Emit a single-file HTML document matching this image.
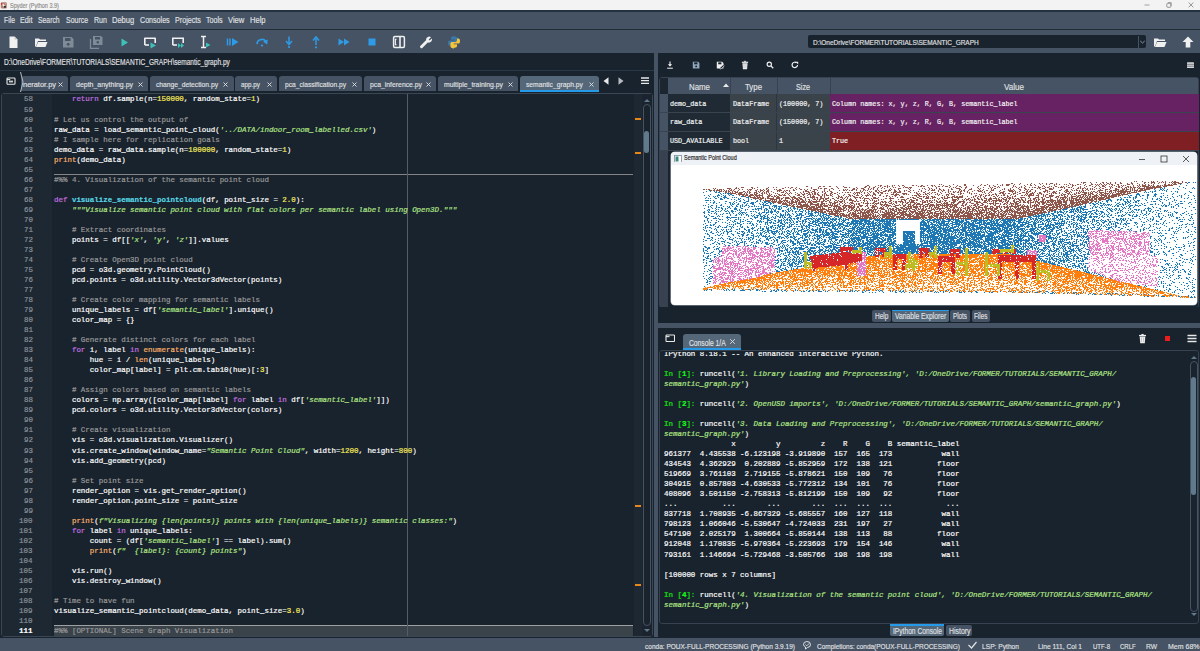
<!DOCTYPE html>
<html><head><meta charset="utf-8"><style>
html,body{margin:0;padding:0;}
html{overflow:hidden;width:1200px;height:651px;}
body{width:1200px;height:651px;overflow:hidden;position:relative;background:#19232D;}
.r{position:absolute;display:block;}
.t{position:absolute;white-space:pre;transform-origin:0 50%;-webkit-text-stroke:0.15px currentColor;}
.code{font-family:"Liberation Mono",monospace;font-size:8.000px;line-height:10px;color:#ffffff;transform:scaleX(0.9325);-webkit-text-stroke:0.2px currentColor;}
.vx{color:#f4f4f4;font-size:7.400px;transform:scaleX(0.9099);}
i{font-style:normal;}
i.k{color:#c670e0;}
i.b{color:#fab16c;}
i.d{color:#57d6e4;font-weight:bold;}
i.c{color:#999999;}
i.s{color:#b0e686;font-style:italic;}
i.n{color:#faed5c;}
</style></head><body>
<div class="r" style="left:0.00px;top:0.00px;width:1200.00px;height:10.00px;background:#f3f3f3;"></div><div class="r" style="left:0.00px;top:9.50px;width:1200.00px;height:0.80px;background:#ffffff;"></div><div class="r" style="left:0.00px;top:10.30px;width:1200.00px;height:1.70px;background:#243140;"></div><svg class="r" style="left:0.00px;top:1.50px;" width="8" height="7" viewBox="0 0 8 7"><rect x="0.8" y="0.3" width="6" height="6.2" rx="1.2" fill="#b38172"/><path d="M2.2 1.8L4.8 4.6" stroke="#f4f0ee" stroke-width="1.6"/><circle cx="1.8" cy="1.9" r="0.9" fill="#d42a2a"/><circle cx="4.9" cy="4.8" r="1.1" fill="#25303a"/><circle cx="5.5" cy="1.8" r="0.7" fill="#e39a80"/></svg><span class="t" style="left:9.60px;top:1.00px;font-size:7.40px;line-height:10.00px;color:#8a8a8a;font-family:'Liberation Sans', sans-serif;transform:scaleX(0.7445);">Spyder (Python 3.9)</span><svg class="r" style="left:1143.00px;top:1.00px;" width="8" height="8" viewBox="0 0 8 8"><path d="M1.5 4h5" stroke="#9a9a9a" stroke-width="0.9"/></svg><svg class="r" style="left:1164.50px;top:1.00px;" width="8" height="8" viewBox="0 0 8 8"><rect x="1.8" y="2.3" width="4" height="4" rx="0.8" fill="none" stroke="#8a8a8a" stroke-width="0.9"/><path d="M3 1.6h3.2v3.2" stroke="#8a8a8a" stroke-width="0.8" fill="none"/></svg><svg class="r" style="left:1186.50px;top:1.00px;" width="8" height="8" viewBox="0 0 8 8"><path d="M1.7 1.5L6.3 6.3M6.3 1.5L1.7 6.3" stroke="#8a8a8a" stroke-width="0.9"/></svg><div class="r" style="left:0.00px;top:12.00px;width:1200.00px;height:17.00px;background:#455364;"></div><div class="r" style="left:0.00px;top:29.00px;width:1200.00px;height:1.00px;background:#222c37;"></div><span class="t" style="left:3.70px;top:14.00px;font-size:8.70px;line-height:12.00px;color:#e0e1e3;font-family:'Liberation Sans', sans-serif;transform:scaleX(0.7846);">File</span><span class="t" style="left:20.00px;top:14.00px;font-size:8.70px;line-height:12.00px;color:#e0e1e3;font-family:'Liberation Sans', sans-serif;transform:scaleX(0.8338);">Edit</span><span class="t" style="left:38.30px;top:14.00px;font-size:8.70px;line-height:12.00px;color:#e0e1e3;font-family:'Liberation Sans', sans-serif;transform:scaleX(0.7872);">Search</span><span class="t" style="left:65.80px;top:14.00px;font-size:8.70px;line-height:12.00px;color:#e0e1e3;font-family:'Liberation Sans', sans-serif;transform:scaleX(0.8053);">Source</span><span class="t" style="left:93.70px;top:14.00px;font-size:8.70px;line-height:12.00px;color:#e0e1e3;font-family:'Liberation Sans', sans-serif;transform:scaleX(0.8145);">Run</span><span class="t" style="left:112.00px;top:14.00px;font-size:8.70px;line-height:12.00px;color:#e0e1e3;font-family:'Liberation Sans', sans-serif;transform:scaleX(0.8659);">Debug</span><span class="t" style="left:139.60px;top:14.00px;font-size:8.70px;line-height:12.00px;color:#e0e1e3;font-family:'Liberation Sans', sans-serif;transform:scaleX(0.8188);">Consoles</span><span class="t" style="left:174.70px;top:14.00px;font-size:8.70px;line-height:12.00px;color:#e0e1e3;font-family:'Liberation Sans', sans-serif;transform:scaleX(0.8273);">Projects</span><span class="t" style="left:206.30px;top:14.00px;font-size:8.70px;line-height:12.00px;color:#e0e1e3;font-family:'Liberation Sans', sans-serif;transform:scaleX(0.8222);">Tools</span><span class="t" style="left:228.40px;top:14.00px;font-size:8.70px;line-height:12.00px;color:#e0e1e3;font-family:'Liberation Sans', sans-serif;transform:scaleX(0.8716);">View</span><span class="t" style="left:249.70px;top:14.00px;font-size:8.70px;line-height:12.00px;color:#e0e1e3;font-family:'Liberation Sans', sans-serif;transform:scaleX(0.8718);">Help</span><div class="r" style="left:0.00px;top:30.00px;width:1200.00px;height:23.00px;background:#455364;"></div><div class="r" style="left:0.00px;top:52.50px;width:1200.00px;height:0.80px;background:#50606f;"></div><svg class="r" style="left:5.80px;top:35.00px;" width="14" height="14" viewBox="0 0 14 14"><path d="M3.5 1.5h5l3 3v8.5h-8z" fill="#f0f0f0"/><path d="M8.5 1.5v3h3" fill="#c8c8c8"/></svg><svg class="r" style="left:34.00px;top:35.00px;" width="14" height="14" viewBox="0 0 14 14"><path d="M1 3.5h4l1 1h6v1.5H4L2 11.5H1z" fill="#f0f0f0"/><path d="M4 7h9.5l-2 5H2z" fill="#f0f0f0"/></svg><svg class="r" style="left:61.00px;top:35.00px;" width="14" height="14" viewBox="0 0 14 14"><path d="M2 2h8.5l2 2v8.5H2z" fill="#7f8b97"/><rect x="4" y="3" width="5.5" height="3" fill="#455364"/><circle cx="7.2" cy="9.3" r="1.4" fill="#455364"/></svg><svg class="r" style="left:88.50px;top:35.00px;" width="14" height="14" viewBox="0 0 14 14"><path d="M4 1h8l1.5 1.5V10H4z" fill="#7f8b97"/><path d="M1.5 4v9.5H10" stroke="#7f8b97" stroke-width="1.3" fill="none"/><rect x="6" y="2" width="5" height="2.5" fill="#455364"/><circle cx="8.8" cy="7.2" r="1.2" fill="#455364"/></svg><svg class="r" style="left:117.00px;top:35.00px;" width="14" height="14" viewBox="0 0 14 14"><path d="M4.5 3.5L11 7.5L4.5 11.5z" fill="#3ec1b8"/></svg><svg class="r" style="left:143.00px;top:35.00px;" width="14" height="14" viewBox="0 0 14 14"><path d="M1.8 10V3.2h10.4V8" stroke="#f0f0f0" stroke-width="1.6" fill="none" stroke-linejoin="round"/><path d="M1.8 10H6" stroke="#f0f0f0" stroke-width="1.6"/><path d="M7.5 7.5L13 10.5L7.5 13.5z" fill="#3ec1b8"/></svg><svg class="r" style="left:171.00px;top:35.00px;" width="14" height="14" viewBox="0 0 14 14"><path d="M1.8 10V3.2h10.4V8" stroke="#f0f0f0" stroke-width="1.6" fill="none"/><path d="M1.8 10H6" stroke="#f0f0f0" stroke-width="1.6"/><path d="M7 8L10 10.5L7 13z M10 8L13 10.5L10 13z" fill="#3ec1b8"/></svg><svg class="r" style="left:198.00px;top:35.00px;" width="14" height="14" viewBox="0 0 14 14"><path d="M3 1.5h5M3 12.5h5M5.5 1.5v11" stroke="#f0f0f0" stroke-width="1.5" fill="none"/><path d="M8 7.5L12.5 10L8 12.5z" fill="#3ec1b8"/></svg><svg class="r" style="left:226.00px;top:35.00px;" width="14" height="14" viewBox="0 0 14 14"><path d="M1.5 3.5v7M4 3.5v7" stroke="#2f9be6" stroke-width="1.5"/><path d="M6 3L12.5 7L6 11z" fill="#2f9be6"/></svg><svg class="r" style="left:254.70px;top:35.00px;" width="14" height="14" viewBox="0 0 14 14"><path d="M2.2 9.2A4.8 4.3 0 0 1 10.8 6.2" stroke="#2f9be6" stroke-width="1.7" fill="none"/><path d="M8 6.8L12.8 4.6L12.2 9.6z" fill="#2f9be6"/><circle cx="7" cy="10.6" r="1.1" fill="#2f9be6"/></svg><svg class="r" style="left:282.00px;top:35.00px;" width="14" height="14" viewBox="0 0 14 14"><path d="M7 1.5v7" stroke="#2f9be6" stroke-width="1.5"/><path d="M4 6l3 3.5l3-3.5" stroke="#2f9be6" stroke-width="1.5" fill="none"/><circle cx="7" cy="12" r="1.1" fill="#2f9be6"/></svg><svg class="r" style="left:309.00px;top:35.00px;" width="14" height="14" viewBox="0 0 14 14"><path d="M7 3v7" stroke="#2f9be6" stroke-width="1.5"/><path d="M4 5.5l3-3.5l3 3.5" stroke="#2f9be6" stroke-width="1.5" fill="none"/><circle cx="7" cy="12.3" r="1.1" fill="#2f9be6"/></svg><svg class="r" style="left:337.00px;top:35.00px;" width="14" height="14" viewBox="0 0 14 14"><path d="M1.5 3.5L7 7L1.5 10.5z M7 3.5L12.5 7L7 10.5z" fill="#2f9be6"/></svg><svg class="r" style="left:364.60px;top:35.00px;" width="14" height="14" viewBox="0 0 14 14"><rect x="3.5" y="3.5" width="7" height="7" fill="#2f9be6"/></svg><svg class="r" style="left:391.60px;top:35.00px;" width="14" height="14" viewBox="0 0 14 14"><rect x="1.6" y="1.6" width="10.8" height="10.8" rx="1.2" stroke="#f0f0f0" stroke-width="1.5" fill="none"/><path d="M8 1.6v10.8" stroke="#f0f0f0" stroke-width="1.6"/><path d="M4.6 4.2h-1.2v5.6h1.2" stroke="#f0f0f0" stroke-width="1.1" fill="none"/></svg><svg class="r" style="left:418.60px;top:35.00px;" width="14" height="14" viewBox="0 0 14 14"><path d="M2.5 11.8L8 6.3" stroke="#f0f0f0" stroke-width="2.9" stroke-linecap="round"/><path d="M7 4.5A3.2 3.2 0 0 1 12 2.2L9.8 4.4L10.6 5.4L12.8 3.4A3.2 3.2 0 0 1 9.2 7.6z" fill="#f0f0f0"/></svg><svg class="r" style="left:447.00px;top:35.00px;" width="14" height="14" viewBox="0 0 14 14"><path d="M7 1.2c-3 0-3 1.2-3 2.2v1.4h3.2v.6H2.6C1.3 5.4 1 6.6 1 8s.4 2.6 1.6 2.6H4V8.8c0-1 .9-1.9 2-1.9h3c.9 0 1.6-.7 1.6-1.6V3.4c0-1-1.3-2.2-3.6-2.2z" fill="#3b77a8"/><path d="M7 12.8c3 0 3-1.2 3-2.2V9.2H6.8v-.6h4.6C12.7 8.6 13 7.4 13 6s-.4-2.6-1.6-2.6H10v1.8c0 1-.9 1.9-2 1.9H5c-.9 0-1.6.7-1.6 1.6v2.5c0 1 1.3 2.2 3.6 2.2z" fill="#f2c43a"/></svg><div class="r" style="left:808.00px;top:35.00px;width:338.00px;height:13.00px;background:#19232D;border-radius:2px;"></div><div class="r" style="left:1138.30px;top:35.50px;width:1.00px;height:12.30px;background:#455364;"></div><svg class="r" style="left:1139.20px;top:38.50px;" width="7" height="6" viewBox="0 0 7 6"><path d="M1.3 2L3.5 4L5.7 2" stroke="#8a96a2" stroke-width="1" fill="none"/></svg><span class="t" style="left:812.50px;top:38.00px;font-size:7.20px;line-height:10.00px;color:#e0e1e3;font-family:'Liberation Sans', sans-serif;transform:scaleX(0.9027);">D:\OneDrive\FORMER\TUTORIALS\SEMANTIC_GRAPH</span><svg class="r" style="left:1153.00px;top:35.00px;" width="14" height="14" viewBox="0 0 14 14"><path d="M1 3.5h4l1 1h6v1.5H4L2 11.5H1z" fill="#f0f0f0"/><path d="M4 7h9.5l-2 5H2z" fill="#f0f0f0"/></svg><svg class="r" style="left:1181.40px;top:34.50px;" width="14" height="14" viewBox="0 0 14 14"><path d="M7 1.5L12.5 7H9.3v5.5H4.7V7H1.5z" fill="#f0f0f0"/></svg><div class="r" style="left:0.00px;top:53.30px;width:654.00px;height:584.00px;background:#19232D;"></div><span class="t" style="left:3.50px;top:57.00px;font-size:8.30px;line-height:11.00px;color:#e0e1e3;font-family:'Liberation Sans', sans-serif;transform:scaleX(0.7946);">D:\OneDrive\FORMER\TUTORIALS\SEMANTIC_GRAPH\semantic_graph.py</span><div class="r" style="left:0.00px;top:69.50px;width:654.00px;height:1.00px;background:#2a3744;"></div><svg class="r" style="left:5.50px;top:76.50px;" width="10" height="8" viewBox="0 0 10 8"><rect x="1" y="1" width="8" height="6.3" rx="0.8" stroke="#e8e8e8" stroke-width="1.1" fill="none"/><path d="M1 2.6h3.2" stroke="#e8e8e8" stroke-width="1.1"/><rect x="3" y="3.6" width="4" height="1.8" fill="#cfd2d5"/></svg><div class="r" style="left:21.00px;top:76.30px;width:47.00px;height:15.00px;background:#455364;border-radius:3px 3px 0 0;"></div><span class="t" style="left:23.00px;top:79.00px;font-size:8.00px;line-height:11.00px;color:#e0e1e3;font-family:'Liberation Sans', sans-serif;transform:scaleX(0.9275);">nerator.py</span><svg class="r" style="left:55.50px;top:79.50px;" width="9" height="9" viewBox="0 0 9 9"><path d="M2.5 2.5L6.5 6.5M6.5 2.5L2.5 6.5" stroke="#e0e1e3" stroke-width="0.9"/></svg><div class="r" style="left:70.00px;top:76.30px;width:78.00px;height:15.00px;background:#455364;border-radius:3px 3px 0 0;"></div><span class="t" style="left:76.00px;top:79.00px;font-size:8.00px;line-height:11.00px;color:#e0e1e3;font-family:'Liberation Sans', sans-serif;transform:scaleX(0.8717);">depth_anything.py</span><svg class="r" style="left:135.50px;top:79.50px;" width="9" height="9" viewBox="0 0 9 9"><path d="M2.5 2.5L6.5 6.5M6.5 2.5L2.5 6.5" stroke="#e0e1e3" stroke-width="0.9"/></svg><div class="r" style="left:150.00px;top:76.30px;width:83.60px;height:15.00px;background:#455364;border-radius:3px 3px 0 0;"></div><span class="t" style="left:156.00px;top:79.00px;font-size:8.00px;line-height:11.00px;color:#e0e1e3;font-family:'Liberation Sans', sans-serif;transform:scaleX(0.8397);">change_detection.py</span><svg class="r" style="left:221.10px;top:79.50px;" width="9" height="9" viewBox="0 0 9 9"><path d="M2.5 2.5L6.5 6.5M6.5 2.5L2.5 6.5" stroke="#e0e1e3" stroke-width="0.9"/></svg><div class="r" style="left:235.00px;top:76.30px;width:42.00px;height:15.00px;background:#455364;border-radius:3px 3px 0 0;"></div><span class="t" style="left:241.00px;top:79.00px;font-size:8.00px;line-height:11.00px;color:#e0e1e3;font-family:'Liberation Sans', sans-serif;transform:scaleX(0.7910);">app.py</span><svg class="r" style="left:264.50px;top:79.50px;" width="9" height="9" viewBox="0 0 9 9"><path d="M2.5 2.5L6.5 6.5M6.5 2.5L2.5 6.5" stroke="#e0e1e3" stroke-width="0.9"/></svg><div class="r" style="left:279.00px;top:76.30px;width:83.00px;height:15.00px;background:#455364;border-radius:3px 3px 0 0;"></div><span class="t" style="left:285.00px;top:79.00px;font-size:8.00px;line-height:11.00px;color:#e0e1e3;font-family:'Liberation Sans', sans-serif;transform:scaleX(0.8314);">pca_classification.py</span><svg class="r" style="left:349.50px;top:79.50px;" width="9" height="9" viewBox="0 0 9 9"><path d="M2.5 2.5L6.5 6.5M6.5 2.5L2.5 6.5" stroke="#e0e1e3" stroke-width="0.9"/></svg><div class="r" style="left:363.50px;top:76.30px;width:72.50px;height:15.00px;background:#455364;border-radius:3px 3px 0 0;"></div><span class="t" style="left:369.50px;top:79.00px;font-size:8.00px;line-height:11.00px;color:#e0e1e3;font-family:'Liberation Sans', sans-serif;transform:scaleX(0.8534);">pca_inference.py</span><svg class="r" style="left:423.50px;top:79.50px;" width="9" height="9" viewBox="0 0 9 9"><path d="M2.5 2.5L6.5 6.5M6.5 2.5L2.5 6.5" stroke="#e0e1e3" stroke-width="0.9"/></svg><div class="r" style="left:438.00px;top:76.30px;width:80.00px;height:15.00px;background:#455364;border-radius:3px 3px 0 0;"></div><span class="t" style="left:444.00px;top:79.00px;font-size:8.00px;line-height:11.00px;color:#e0e1e3;font-family:'Liberation Sans', sans-serif;transform:scaleX(0.8560);">multiple_training.py</span><svg class="r" style="left:505.50px;top:79.50px;" width="9" height="9" viewBox="0 0 9 9"><path d="M2.5 2.5L6.5 6.5M6.5 2.5L2.5 6.5" stroke="#e0e1e3" stroke-width="0.9"/></svg><div class="r" style="left:520.00px;top:76.30px;width:79.00px;height:15.00px;background:#54687A;border-radius:3px 3px 0 0;"></div><div class="r" style="left:520.00px;top:90.20px;width:79.00px;height:1.80px;background:#259AE9;"></div><span class="t" style="left:526.00px;top:79.00px;font-size:8.00px;line-height:11.00px;color:#e0e1e3;font-family:'Liberation Sans', sans-serif;transform:scaleX(0.8432);">semantic_graph.py</span><svg class="r" style="left:586.50px;top:79.50px;" width="9" height="9" viewBox="0 0 9 9"><path d="M2.5 2.5L6.5 6.5M6.5 2.5L2.5 6.5" stroke="#e0e1e3" stroke-width="0.9"/></svg><svg class="r" style="left:19.00px;top:71.00px;" width="6" height="22" viewBox="0 0 6 22"><path d="M1.5 1L4 11L1.5 21" stroke="#c8ccd0" stroke-width="0.9" fill="none"/></svg><svg class="r" style="left:601.00px;top:75.80px;" width="10" height="10" viewBox="0 0 10 10"><path d="M7.5 1.2V8.8L2.5 5z" fill="#e8e8e8"/></svg><svg class="r" style="left:616.00px;top:75.80px;" width="10" height="10" viewBox="0 0 10 10"><path d="M2.5 1.2V8.8L7.5 5z" fill="#b8bcc0"/></svg><svg class="r" style="left:639.00px;top:75.00px;" width="12" height="10" viewBox="0 0 12 10"><path d="M2 3h8M2 5.7h8M2 8.4h8" stroke="#e8e8e8" stroke-width="1.3"/></svg><div class="r" style="left:0.50px;top:92.50px;width:652.00px;height:544.00px;background:#19232D;border:1px solid #3a4654;border-radius:3px;box-sizing:border-box;"></div><div class="r" style="left:1.50px;top:93.50px;width:50.20px;height:542.00px;background:#1e2832;"></div><div class="r" style="left:633.50px;top:93.50px;width:8.00px;height:542.00px;background:#1e2832;"></div><div class="r" style="left:54.00px;top:173.60px;width:579.00px;height:0.80px;background:#858585;"></div><div class="r" style="left:54.00px;top:626.00px;width:578.50px;height:9.50px;background:#3a424a;"></div><div class="r" style="left:54.00px;top:625.00px;width:579.00px;height:0.90px;background:#a0a0a0;"></div><div class="r" style="left:407.00px;top:93.50px;width:0.90px;height:542.00px;background:#545c66;"></div><span class="t code" style="left:23.55px;top:94.47px;color:#8b929a;">58</span><span class="t code" style="left:54.2px;top:94.47px;">    <i class="k">return</i> df.sample(n=<i class="n">150000</i>, random_state=<i class="n">1</i>)</span><span class="t code" style="left:23.55px;top:104.50px;color:#8b929a;">59</span><span class="t code" style="left:23.55px;top:114.53px;color:#8b929a;">60</span><span class="t code" style="left:54.2px;top:114.53px;"><i class="c"># Let us control the output of</i></span><span class="t code" style="left:23.55px;top:124.56px;color:#8b929a;">61</span><span class="t code" style="left:54.2px;top:124.56px;">raw_data = load_semantic_point_cloud(<i class="s">&#x27;../DATA/indoor_room_labelled.csv&#x27;</i>)</span><span class="t code" style="left:23.55px;top:134.59px;color:#8b929a;">62</span><span class="t code" style="left:54.2px;top:134.59px;"><i class="c"># I sample here for replication goals</i></span><span class="t code" style="left:23.55px;top:144.62px;color:#8b929a;">63</span><span class="t code" style="left:54.2px;top:144.62px;">demo_data = raw_data.sample(n=<i class="n">100000</i>, random_state=<i class="n">1</i>)</span><span class="t code" style="left:23.55px;top:154.65px;color:#8b929a;">64</span><span class="t code" style="left:54.2px;top:154.65px;"><i class="b">print</i>(demo_data)</span><span class="t code" style="left:23.55px;top:164.68px;color:#8b929a;">65</span><span class="t code" style="left:23.55px;top:174.71px;color:#8b929a;">66</span><span class="t code" style="left:54.2px;top:174.71px;"><i class="c">#%% 4. Visualization of the semantic point cloud</i></span><span class="t code" style="left:23.55px;top:184.74px;color:#8b929a;">67</span><span class="t code" style="left:23.55px;top:194.77px;color:#8b929a;">68</span><span class="t code" style="left:54.2px;top:194.77px;"><i class="k">def</i> <i class="d">visualize_semantic_pointcloud</i>(df, point_size = <i class="n">2.0</i>):</span><span class="t code" style="left:23.55px;top:204.80px;color:#8b929a;">69</span><span class="t code" style="left:54.2px;top:204.80px;">    <i class="s">&quot;&quot;&quot;Visualize semantic point cloud with flat colors per semantic label using Open3D.&quot;&quot;&quot;</i></span><span class="t code" style="left:23.55px;top:214.83px;color:#8b929a;">70</span><span class="t code" style="left:23.55px;top:224.86px;color:#8b929a;">71</span><span class="t code" style="left:54.2px;top:224.86px;">    <i class="c"># Extract coordinates</i></span><span class="t code" style="left:23.55px;top:234.89px;color:#8b929a;">72</span><span class="t code" style="left:54.2px;top:234.89px;">    points = df[[<i class="s">&#x27;x&#x27;</i>, <i class="s">&#x27;y&#x27;</i>, <i class="s">&#x27;z&#x27;</i>]].values</span><span class="t code" style="left:23.55px;top:244.92px;color:#8b929a;">73</span><span class="t code" style="left:23.55px;top:254.95px;color:#8b929a;">74</span><span class="t code" style="left:54.2px;top:254.95px;">    <i class="c"># Create Open3D point cloud</i></span><span class="t code" style="left:23.55px;top:264.98px;color:#8b929a;">75</span><span class="t code" style="left:54.2px;top:264.98px;">    pcd = o3d.geometry.PointCloud()</span><span class="t code" style="left:23.55px;top:275.01px;color:#8b929a;">76</span><span class="t code" style="left:54.2px;top:275.01px;">    pcd.points = o3d.utility.Vector3dVector(points)</span><span class="t code" style="left:23.55px;top:285.04px;color:#8b929a;">77</span><span class="t code" style="left:23.55px;top:295.07px;color:#8b929a;">78</span><span class="t code" style="left:54.2px;top:295.07px;">    <i class="c"># Create color mapping for semantic labels</i></span><span class="t code" style="left:23.55px;top:305.10px;color:#8b929a;">79</span><span class="t code" style="left:54.2px;top:305.10px;">    unique_labels = df[<i class="s">&#x27;semantic_label&#x27;</i>].unique()</span><span class="t code" style="left:23.55px;top:315.13px;color:#8b929a;">80</span><span class="t code" style="left:54.2px;top:315.13px;">    color_map = {}</span><span class="t code" style="left:23.55px;top:325.16px;color:#8b929a;">81</span><span class="t code" style="left:23.55px;top:335.19px;color:#8b929a;">82</span><span class="t code" style="left:54.2px;top:335.19px;">    <i class="c"># Generate distinct colors for each label</i></span><span class="t code" style="left:23.55px;top:345.22px;color:#8b929a;">83</span><span class="t code" style="left:54.2px;top:345.22px;">    <i class="k">for</i> i, label <i class="k">in</i> <i class="b">enumerate</i>(unique_labels):</span><span class="t code" style="left:23.55px;top:355.25px;color:#8b929a;">84</span><span class="t code" style="left:54.2px;top:355.25px;">        hue = i / <i class="b">len</i>(unique_labels)</span><span class="t code" style="left:23.55px;top:365.28px;color:#8b929a;">85</span><span class="t code" style="left:54.2px;top:365.28px;">        color_map[label] = plt.cm.tab10(hue)[:<i class="n">3</i>]</span><span class="t code" style="left:23.55px;top:375.31px;color:#8b929a;">86</span><span class="t code" style="left:23.55px;top:385.34px;color:#8b929a;">87</span><span class="t code" style="left:54.2px;top:385.34px;">    <i class="c"># Assign colors based on semantic labels</i></span><span class="t code" style="left:23.55px;top:395.37px;color:#8b929a;">88</span><span class="t code" style="left:54.2px;top:395.37px;">    colors = np.array([color_map[label] <i class="k">for</i> label <i class="k">in</i> df[<i class="s">&#x27;semantic_label&#x27;</i>]])</span><span class="t code" style="left:23.55px;top:405.40px;color:#8b929a;">89</span><span class="t code" style="left:54.2px;top:405.40px;">    pcd.colors = o3d.utility.Vector3dVector(colors)</span><span class="t code" style="left:23.55px;top:415.43px;color:#8b929a;">90</span><span class="t code" style="left:23.55px;top:425.46px;color:#8b929a;">91</span><span class="t code" style="left:54.2px;top:425.46px;">    <i class="c"># Create visualization</i></span><span class="t code" style="left:23.55px;top:435.49px;color:#8b929a;">92</span><span class="t code" style="left:54.2px;top:435.49px;">    vis = o3d.visualization.Visualizer()</span><span class="t code" style="left:23.55px;top:445.52px;color:#8b929a;">93</span><span class="t code" style="left:54.2px;top:445.52px;">    vis.create_window(window_name=<i class="s">&quot;Semantic Point Cloud&quot;</i>, width=<i class="n">1200</i>, height=<i class="n">800</i>)</span><span class="t code" style="left:23.55px;top:455.55px;color:#8b929a;">94</span><span class="t code" style="left:54.2px;top:455.55px;">    vis.add_geometry(pcd)</span><span class="t code" style="left:23.55px;top:465.58px;color:#8b929a;">95</span><span class="t code" style="left:23.55px;top:475.61px;color:#8b929a;">96</span><span class="t code" style="left:54.2px;top:475.61px;">    <i class="c"># Set point size</i></span><span class="t code" style="left:23.55px;top:485.64px;color:#8b929a;">97</span><span class="t code" style="left:54.2px;top:485.64px;">    render_option = vis.get_render_option()</span><span class="t code" style="left:23.55px;top:495.67px;color:#8b929a;">98</span><span class="t code" style="left:54.2px;top:495.67px;">    render_option.point_size = point_size</span><span class="t code" style="left:23.55px;top:505.70px;color:#8b929a;">99</span><span class="t code" style="left:19.07px;top:515.73px;color:#8b929a;">100</span><span class="t code" style="left:54.2px;top:515.73px;">    <i class="b">print</i>(<i class="s">f&quot;Visualizing {len(points)} points with {len(unique_labels)} semantic classes:&quot;</i>)</span><span class="t code" style="left:19.07px;top:525.76px;color:#8b929a;">101</span><span class="t code" style="left:54.2px;top:525.76px;">    <i class="k">for</i> label <i class="k">in</i> unique_labels:</span><span class="t code" style="left:19.07px;top:535.79px;color:#8b929a;">102</span><span class="t code" style="left:54.2px;top:535.79px;">        count = (df[<i class="s">&#x27;semantic_label&#x27;</i>] == label).sum()</span><span class="t code" style="left:19.07px;top:545.82px;color:#8b929a;">103</span><span class="t code" style="left:54.2px;top:545.82px;">        <i class="b">print</i>(<i class="s">f&quot;  {label}: {count} points&quot;</i>)</span><span class="t code" style="left:19.07px;top:555.85px;color:#8b929a;">104</span><span class="t code" style="left:19.07px;top:565.88px;color:#8b929a;">105</span><span class="t code" style="left:54.2px;top:565.88px;">    vis.run()</span><span class="t code" style="left:19.07px;top:575.91px;color:#8b929a;">106</span><span class="t code" style="left:54.2px;top:575.91px;">    vis.destroy_window()</span><span class="t code" style="left:19.07px;top:585.94px;color:#8b929a;">107</span><span class="t code" style="left:19.07px;top:595.97px;color:#8b929a;">108</span><span class="t code" style="left:54.2px;top:595.97px;"><i class="c"># Time to have fun</i></span><span class="t code" style="left:19.07px;top:606.00px;color:#8b929a;">109</span><span class="t code" style="left:54.2px;top:606.00px;">visualize_semantic_pointcloud(demo_data, point_size=<i class="n">3.0</i>)</span><span class="t code" style="left:19.07px;top:616.03px;color:#8b929a;">110</span><span class="t code" style="left:19.07px;top:626.06px;color:#ffffff;font-weight:bold;">111</span><span class="t code" style="left:54.2px;top:626.06px;"><i class="c">#%% [OPTIONAL] Scene Graph Visualization</i></span><div class="r" style="left:634.50px;top:118.00px;width:6.50px;height:2.00px;background:#e8861a;"></div><div class="r" style="left:634.50px;top:152.00px;width:6.50px;height:2.00px;background:#e8861a;"></div><div class="r" style="left:634.50px;top:505.00px;width:6.50px;height:2.00px;background:#e8861a;"></div><div class="r" style="left:634.50px;top:584.40px;width:6.50px;height:2.00px;background:#e8861a;"></div><div class="r" style="left:641.50px;top:93.50px;width:10.50px;height:542.00px;background:#1b242e;"></div><div class="r" style="left:643.00px;top:104.00px;width:7.50px;height:522.00px;background:#19232D;border:1px solid #455364;border-radius:4px;box-sizing:border-box;"></div><div class="r" style="left:644.20px;top:130.50px;width:5.10px;height:22.00px;background:#60798B;border-radius:3px;"></div><svg class="r" style="left:642.00px;top:96.80px;" width="10" height="6" viewBox="0 0 10 6"><path d="M2 5L5 2L8 5z" fill="#60798B"/></svg><svg class="r" style="left:642.00px;top:628.00px;" width="10" height="6" viewBox="0 0 10 6"><path d="M2 1L5 4L8 1z" fill="#60798B"/></svg><div class="r" style="left:654.00px;top:53.30px;width:4.00px;height:584.00px;background:#455364;"></div><div class="r" style="left:658.00px;top:53.30px;width:542.00px;height:254.00px;background:#19232D;"></div><svg class="r" style="left:665.00px;top:59.70px;" width="10" height="10" viewBox="0 0 14 14"><path d="M7 2v6" stroke="#f0f0f0" stroke-width="1.6"/><path d="M4 6l3 3l3-3z" fill="#f0f0f0"/><path d="M3 11.5h8" stroke="#f0f0f0" stroke-width="1.4"/></svg><svg class="r" style="left:690.50px;top:59.70px;" width="10" height="10" viewBox="0 0 14 14"><path d="M2.5 2.5h7.5l1.8 1.8v7.5H2.5z" fill="#8fa6bb"/><rect x="4.5" y="3.3" width="4.5" height="2.7" fill="#19232D"/><circle cx="7.2" cy="9" r="1.3" fill="#19232D"/></svg><svg class="r" style="left:715.00px;top:59.70px;" width="10" height="10" viewBox="0 0 14 14"><path d="M2.5 2.5h7.5l1.8 1.8v7.5H2.5z" fill="#f0f0f0"/><rect x="4.5" y="3.3" width="4.5" height="2.7" fill="#19232D"/><path d="M7 11l4.5-4.5l1.5 1.5L8.5 12.5H7z" fill="#19232D" stroke="#f0f0f0" stroke-width="0.8"/></svg><svg class="r" style="left:740.00px;top:59.70px;" width="10" height="10" viewBox="0 0 14 14"><path d="M5.5 1.2h3v1.3h-3z" fill="#f0f0f0"/><path d="M2.6 2.4h8.8v1.6H2.6z" fill="#f0f0f0"/><path d="M3.4 4.4h7.2l-.7 8.6H4.1z" fill="#f0f0f0"/><path d="M5.6 5.5v6M8.4 5.5v6" stroke="#9aa0a6" stroke-width="0.7"/></svg><svg class="r" style="left:765.00px;top:59.70px;" width="10" height="10" viewBox="0 0 14 14"><circle cx="6" cy="6" r="3" stroke="#f0f0f0" stroke-width="1.6" fill="none"/><path d="M8.2 8.2L11.5 11.5" stroke="#f0f0f0" stroke-width="1.8"/></svg><svg class="r" style="left:790.00px;top:59.70px;" width="10" height="10" viewBox="0 0 14 14"><path d="M10.5 7A3.8 3.8 0 1 1 9.3 4.1" stroke="#f0f0f0" stroke-width="1.7" fill="none"/><path d="M7.8 2.5h3.7v3.7z" fill="#f0f0f0"/></svg><svg class="r" style="left:1186.00px;top:61.00px;" width="9" height="8" viewBox="0 0 9 8"><rect x="1" y="1.3" width="7" height="5.8" rx="0.6" fill="#d8d8d8"/><path d="M1 3.3h7M1 5.2h7" stroke="#3a4450" stroke-width="0.6"/></svg><div class="r" style="left:659.00px;top:76.50px;width:540.00px;height:231.00px;background:#19232D;border:1px solid #37414F;border-radius:3px;box-sizing:border-box;"></div><div class="r" style="left:660.00px;top:77.50px;width:8.00px;height:229.00px;background:#37414F;"></div><div class="r" style="left:660.00px;top:77.50px;width:8.00px;height:16.70px;background:#1c2630;"></div><div class="r" style="left:668.00px;top:77.50px;width:530.00px;height:16.70px;background:#455364;"></div><div class="r" style="left:730.30px;top:77.50px;width:0.80px;height:16.50px;background:#37414F;"></div><div class="r" style="left:776.50px;top:77.50px;width:0.80px;height:16.50px;background:#37414F;"></div><div class="r" style="left:830.00px;top:77.50px;width:0.80px;height:16.50px;background:#37414F;"></div><span class="t" style="left:735.00px;top:81.00px;font-size:8.00px;line-height:11.00px;color:#e0e1e3;font-family:'Liberation Sans', sans-serif;"></span><span class="t" style="left:689.00px;top:81.00px;font-size:9.00px;line-height:12.00px;color:#e0e1e3;font-family:'Liberation Sans', sans-serif;transform:scaleX(0.8747);">Name</span><svg class="r" style="left:722.00px;top:82.00px;" width="8" height="6" viewBox="0 0 8 6"><path d="M1 5L4 1.5L7 5z" fill="#e8e8e8"/></svg><span class="t" style="left:745.00px;top:81.00px;font-size:9.00px;line-height:12.00px;color:#e0e1e3;font-family:'Liberation Sans', sans-serif;transform:scaleX(0.8712);">Type</span><span class="t" style="left:796.00px;top:81.00px;font-size:9.00px;line-height:12.00px;color:#e0e1e3;font-family:'Liberation Sans', sans-serif;transform:scaleX(0.7996);">Size</span><span class="t" style="left:1004.00px;top:81.00px;font-size:9.00px;line-height:12.00px;color:#e0e1e3;font-family:'Liberation Sans', sans-serif;transform:scaleX(0.8948);">Value</span><div class="r" style="left:660.00px;top:94.00px;width:8.00px;height:18.40px;background:#455364;"></div><div class="r" style="left:668.00px;top:94.00px;width:62.30px;height:18.40px;background:#1f2a34;"></div><div class="r" style="left:730.30px;top:94.00px;width:100.00px;height:18.40px;background:#3a424a;"></div><div class="r" style="left:830.00px;top:94.00px;width:369.00px;height:18.40px;background:#662262;"></div><div class="r" style="left:776.30px;top:94.00px;width:0.80px;height:18.40px;background:#2c3540;"></div><span class="t code vx" style="left:670.00px;top:98.83px;">demo_data</span><span class="t code vx" style="left:732.50px;top:98.83px;">DataFrame</span><span class="t code vx" style="left:778.50px;top:98.83px;">(100000, 7)</span><span class="t code vx" style="left:832.00px;top:98.83px;">Column names: x, y, z, R, G, B, semantic_label</span><div class="r" style="left:660.00px;top:112.40px;width:8.00px;height:18.90px;background:#455364;"></div><div class="r" style="left:668.00px;top:112.40px;width:62.30px;height:18.90px;background:#1f2a34;"></div><div class="r" style="left:730.30px;top:112.40px;width:100.00px;height:18.90px;background:#3a424a;"></div><div class="r" style="left:830.00px;top:112.40px;width:369.00px;height:18.90px;background:#662262;"></div><div class="r" style="left:776.30px;top:112.40px;width:0.80px;height:18.90px;background:#2c3540;"></div><span class="t code vx" style="left:670.00px;top:117.48px;">raw_data</span><span class="t code vx" style="left:732.50px;top:117.48px;">DataFrame</span><span class="t code vx" style="left:778.50px;top:117.48px;">(150000, 7)</span><span class="t code vx" style="left:832.00px;top:117.48px;">Column names: x, y, z, R, G, B, semantic_label</span><div class="r" style="left:660.00px;top:131.30px;width:8.00px;height:18.70px;background:#455364;"></div><div class="r" style="left:668.00px;top:131.30px;width:62.30px;height:18.70px;background:#1f2a34;"></div><div class="r" style="left:730.30px;top:131.30px;width:100.00px;height:18.70px;background:#3a424a;"></div><div class="r" style="left:830.00px;top:131.30px;width:369.00px;height:18.70px;background:#7f1f23;"></div><div class="r" style="left:776.30px;top:131.30px;width:0.80px;height:18.70px;background:#2c3540;"></div><span class="t code vx" style="left:670.00px;top:136.28px;">USD_AVAILABLE</span><span class="t code vx" style="left:732.50px;top:136.28px;">bool</span><span class="t code vx" style="left:778.50px;top:136.28px;">1</span><span class="t code vx" style="left:832.00px;top:136.28px;">True</span><div class="r" style="left:660.00px;top:111.90px;width:539.00px;height:1.00px;background:#3a4450;"></div><div class="r" style="left:660.00px;top:130.80px;width:539.00px;height:1.00px;background:#3a4450;"></div><div class="r" style="left:660.00px;top:149.50px;width:539.00px;height:1.00px;background:#3a4450;"></div><div class="r" style="left:670.5px;top:152px;width:526px;height:153px;background:#ffffff;border-radius:4px;box-shadow:0 0 0 0.6px #9aa4ae;overflow:hidden;"><div class="r" style="left:0;top:0;width:526px;height:13px;background:#eef2f6;"></div></div><svg class="r" style="left:674.00px;top:154.80px;" width="8" height="7" viewBox="0 0 8 7"><rect x="0.5" y="0.5" width="7" height="7" fill="#ffffff" stroke="#7a8a99" stroke-width="0.8"/><rect x="1.5" y="1.5" width="3" height="5" fill="#3a8a7a"/></svg><span class="t" style="left:684.30px;top:153.00px;font-size:6.80px;line-height:9.00px;color:#1a1a1a;font-family:'Liberation Sans', sans-serif;transform:scaleX(0.8059);">Semantic Point Cloud</span><svg class="r" style="left:1137.00px;top:154.00px;" width="10" height="10" viewBox="0 0 10 10"><path d="M2 5.5h6" stroke="#333" stroke-width="0.8"/></svg><svg class="r" style="left:1159.00px;top:154.00px;" width="10" height="10" viewBox="0 0 10 10"><rect x="2" y="2" width="6" height="6" fill="none" stroke="#333" stroke-width="0.8"/></svg><svg class="r" style="left:1181.00px;top:154.00px;" width="10" height="10" viewBox="0 0 10 10"><path d="M2 2L8 8M8 2L2 8" stroke="#333" stroke-width="0.8"/></svg><svg class="r" style="left:670px;top:152px;" width="530" height="155" viewBox="0 0 530 155"><path d="M518 30h0m1 0h0m4 0h0m2 0h0m-8 1h0m-7 1h0m6 1h0m-7 1h0m-15 1h0m19 0h0m10 0h0m-33 1h0m2 0h0m2 0h0m9 0h0m4 0h0m8 0h0m7 0h0m2 0h0m-40 1h0m6 0h0m1 0h0m2 0h0m4 0h0m11 0h0m-469 1h0m446 0h0m4 0h0m3 0h0m2 0h0m2 0h0m-460 1h0m4 0h0m4 0h0m2 0h0m429 0h0m5 0h0m2 0h0m2 0h0m1 0h0m11 0h0m5 0h0m4 0h0m2 0h0m12 0h0m-486 1h0m12 0h0m1 0h0m2 0h0m1 0h0m425 0h0m2 0h0m2 0h0m4 0h0m25 0h0m13 0h0m1 0h0m-471 1h0m3 0h0m2 0h0m2 0h0m1 0h0m1 0h0m408 0h0m1 0h0m17 0h0m6 0h0m2 0h0m10 0h0m12 0h0m-475 1h0m8 0h0m3 0h0m7 0h0m2 0h0m1 0h0m405 0h0m1 0h0m1 0h0m1 0h0m8 0h0m1 0h0m6 0h0m1 0h0m1 0h0m16 0h0m12 0h0m-480 1h0m4 0h0m9 0h0m1 0h0m1 0h0m4 0h0m2 0h0m4 0h0m3 0h0m1 0h0m395 0h0m2 0h0m1 0h0m5 0h0m3 0h0m3 0h0m1 0h0m4 0h0m1 0h0m6 0h0m1 0h0m8 0h0m4 0h0m12 0h0m2 0h0m7 0h0m5 0h0m-484 1h0m4 0h0m2 0h0m2 0h0m4 0h0m3 0h0m1 0h0m16 0h0m1 0h0m1 0h0m386 0h0m6 0h0m1 0h0m4 0h0m7 0h0m6 0h0m2 0h0m5 0h0m1 0h0m11 0h0m5 0h0m4 0h0m13 0h0m-488 1h0m8 0h0m4 0h0m5 0h0m1 0h0m1 0h0m1 0h0m6 0h0m2 0h0m2 0h0m10 0h0m1 0h0m1 0h0m372 0h0m4 0h0m1 0h0m2 0h0m2 0h0m1 0h0m3 0h0m2 0h0m1 0h0m11 0h0m14 0h0m4 0h0m2 0h0m6 0h0m8 0h0m7 0h0m-483 1h0m3 0h0m2 0h0m5 0h0m1 0h0m4 0h0m1 0h0m3 0h0m3 0h0m1 0h0m10 0h0m2 0h0m8 0h0m373 0h0m12 0h0m2 0h0m7 0h0m5 0h0m5 0h0m5 0h0m2 0h0m11 0h0m14 0h0m3 0h0m7 0h0m-474 1h0m1 0h0m1 0h0m9 0h0m3 0h0m4 0h0m1 0h0m4 0h0m5 0h0m3 0h0m4 0h0m353 0h0m1 0h0m1 0h0m7 0h0m1 0h0m2 0h0m1 0h0m2 0h0m3 0h0m1 0h0m6 0h0m12 0h0m7 0h0m4 0h0m1 0h0m3 0h0m1 0h0m3 0h0m4 0h0m6 0h0m17 0h0m-486 1h0m1 0h0m1 0h0m1 0h0m2 0h0m3 0h0m23 0h0m4 0h0m4 0h0m4 0h0m9 0h0m3 0h0m346 0h0m1 0h0m1 0h0m2 0h0m1 0h0m6 0h0m3 0h0m3 0h0m4 0h0m3 0h0m4 0h0m3 0h0m1 0h0m1 0h0m7 0h0m13 0h0m7 0h0m8 0h0m2 0h0m19 0h0m-481 1h0m11 0h0m1 0h0m8 0h0m5 0h0m1 0h0m6 0h0m1 0h0m1 0h0m8 0h0m1 0h0m3 0h0m4 0h0m1 0h0m1 0h0m1 0h0m331 0h0m4 0h0m4 0h0m1 0h0m4 0h0m13 0h0m1 0h0m2 0h0m1 0h0m2 0h0m5 0h0m1 0h0m2 0h0m13 0h0m2 0h0m1 0h0m1 0h0m5 0h0m12 0h0m8 0h0m1 0h0m3 0h0m-478 1h0m4 0h0m3 0h0m1 0h0m5 0h0m10 0h0m1 0h0m3 0h0m3 0h0m7 0h0m1 0h0m1 0h0m6 0h0m1 0h0m1 0h0m2 0h0m7 0h0m2 0h0m1 0h0m3 0h0m1 0h0m1 0h0m325 0h0m3 0h0m2 0h0m7 0h0m8 0h0m4 0h0m6 0h0m1 0h0m2 0h0m1 0h0m4 0h0m2 0h0m1 0h0m11 0h0m15 0h0m7 0h0m6 0h0m14 0h0m1 0h0m5 0h0m-482 1h0m3 0h0m9 0h0m5 0h0m2 0h0m2 0h0m4 0h0m6 0h0m3 0h0m3 0h0m1 0h0m1 0h0m1 0h0m6 0h0m4 0h0m3 0h0m1 0h0m3 0h0m1 0h0m2 0h0m316 0h0m1 0h0m2 0h0m1 0h0m3 0h0m1 0h0m3 0h0m1 0h0m2 0h0m1 0h0m13 0h0m1 0h0m4 0h0m3 0h0m2 0h0m3 0h0m8 0h0m3 0h0m3 0h0m11 0h0m7 0h0m7 0h0m9 0h0m2 0h0m1 0h0m1 0h0m6 0h0m-480 1h0m13 0h0m9 0h0m2 0h0m1 0h0m4 0h0m1 0h0m4 0h0m4 0h0m6 0h0m1 0h0m7 0h0m2 0h0m1 0h0m2 0h0m5 0h0m315 0h0m8 0h0m1 0h0m1 0h0m3 0h0m5 0h0m2 0h0m2 0h0m1 0h0m1 0h0m2 0h0m5 0h0m3 0h0m1 0h0m2 0h0m1 0h0m2 0h0m4 0h0m6 0h0m7 0h0m8 0h0m1 0h0m1 0h0m3 0h0m3 0h0m6 0h0m5 0h0m2 0h0m5 0h0m1 0h0m14 0h0m-488 1h0m2 0h0m6 0h0m1 0h0m4 0h0m4 0h0m1 0h0m10 0h0m5 0h0m4 0h0m2 0h0m3 0h0m1 0h0m2 0h0m6 0h0m9 0h0m1 0h0m1 0h0m1 0h0m1 0h0m1 0h0m5 0h0m1 0h0m1 0h0m1 0h0m5 0h0m5 0h0m294 0h0m5 0h0m5 0h0m4 0h0m6 0h0m1 0h0m1 0h0m2 0h0m2 0h0m2 0h0m2 0h0m5 0h0m2 0h0m1 0h0m5 0h0m5 0h0m2 0h0m1 0h0m1 0h0m3 0h0m1 0h0m1 0h0m2 0h0m1 0h0m4 0h0m1 0h0m16 0h0m2 0h0m2 0h0m1 0h0m2 0h0m7 0h0m3 0h0m-470 1h0m2 0h0m6 0h0m7 0h0m4 0h0m2 0h0m3 0h0m4 0h0m1 0h0m3 0h0m2 0h0m2 0h0m5 0h0m2 0h0m1 0h0m2 0h0m2 0h0m2 0h0m3 0h0m2 0h0m6 0h0m3 0h0m2 0h0m1 0h0m1 0h0m2 0h0m1 0h0m1 0h0m3 0h0m1 0h0m1 0h0m2 0h0m288 0h0m4 0h0m2 0h0m2 0h0m1 0h0m1 0h0m8 0h0m2 0h0m2 0h0m4 0h0m11 0h0m2 0h0m3 0h0m1 0h0m3 0h0m5 0h0m3 0h0m1 0h0m4 0h0m4 0h0m14 0h0m10 0h0m3 0h0m1 0h0m5 0h0m2 0h0m5 0h0m11 0h0m-481 1h0m3 0h0m5 0h0m2 0h0m1 0h0m2 0h0m7 0h0m1 0h0m6 0h0m5 0h0m8 0h0m13 0h0m2 0h0m6 0h0m5 0h0m2 0h0m3 0h0m2 0h0m5 0h0m4 0h0m3 0h0m1 0h0m277 0h0m1 0h0m5 0h0m1 0h0m1 0h0m1 0h0m1 0h0m3 0h0m1 0h0m7 0h0m3 0h0m1 0h0m3 0h0m3 0h0m3 0h0m2 0h0m15 0h0m2 0h0m5 0h0m4 0h0m15 0h0m5 0h0m3 0h0m15 0h0m2 0h0m9 0h0m11 0h0m1 0h0m-490 1h0m8 0h0m3 0h0m6 0h0m1 0h0m3 0h0m2 0h0m3 0h0m4 0h0m1 0h0m1 0h0m5 0h0m1 0h0m13 0h0m2 0h0m1 0h0m1 0h0m1 0h0m1 0h0m4 0h0m1 0h0m3 0h0m1 0h0m2 0h0m4 0h0m2 0h0m1 0h0m2 0h0m7 0h0m2 0h0m3 0h0m1 0h0m1 0h0m2 0h0m269 0h0m1 0h0m5 0h0m2 0h0m2 0h0m1 0h0m3 0h0m1 0h0m1 0h0m1 0h0m7 0h0m2 0h0m8 0h0m8 0h0m1 0h0m2 0h0m4 0h0m1 0h0m3 0h0m4 0h0m2 0h0m3 0h0m2 0h0m15 0h0m2 0h0m1 0h0m1 0h0m1 0h0m9 0h0m1 0h0m16 0h0m9 0h0m-477 1h0m1 0h0m7 0h0m2 0h0m4 0h0m3 0h0m9 0h0m1 0h0m1 0h0m3 0h0m6 0h0m2 0h0m5 0h0m1 0h0m2 0h0m1 0h0m2 0h0m3 0h0m3 0h0m2 0h0m1 0h0m4 0h0m2 0h0m2 0h0m3 0h0m1 0h0m1 0h0m7 0h0m1 0h0m3 0h0m3 0h0m3 0h0m2 0h0m1 0h0m2 0h0m260 0h0m1 0h0m1 0h0m1 0h0m1 0h0m4 0h0m1 0h0m1 0h0m1 0h0m1 0h0m2 0h0m1 0h0m1 0h0m2 0h0m2 0h0m1 0h0m1 0h0m1 0h0m1 0h0m1 0h0m9 0h0m7 0h0m4 0h0m2 0h0m1 0h0m2 0h0m2 0h0m2 0h0m3 0h0m3 0h0m8 0h0m4 0h0m1 0h0m1 0h0m2 0h0m1 0h0m5 0h0m4 0h0m3 0h0m9 0h0m35 0h0m-488 1h0m2 0h0m6 0h0m6 0h0m3 0h0m3 0h0m4 0h0m1 0h0m5 0h0m2 0h0m2 0h0m4 0h0m13 0h0m6 0h0m2 0h0m2 0h0m3 0h0m3 0h0m1 0h0m7 0h0m1 0h0m2 0h0m3 0h0m2 0h0m2 0h0m7 0h0m4 0h0m2 0h0m3 0h0m252 0h0m3 0h0m6 0h0m2 0h0m2 0h0m2 0h0m2 0h0m1 0h0m2 0h0m3 0h0m9 0h0m1 0h0m1 0h0m2 0h0m1 0h0m9 0h0m4 0h0m1 0h0m4 0h0m3 0h0m2 0h0m1 0h0m7 0h0m4 0h0m4 0h0m2 0h0m3 0h0m2 0h0m1 0h0m4 0h0m2 0h0m5 0h0m2 0h0m1 0h0m6 0h0m1 0h0m2 0h0m24 0h0m-487 1h0m4 0h0m3 0h0m1 0h0m1 0h0m3 0h0m2 0h0m2 0h0m5 0h0m1 0h0m2 0h0m3 0h0m1 0h0m1 0h0m2 0h0m5 0h0m10 0h0m1 0h0m2 0h0m2 0h0m9 0h0m4 0h0m2 0h0m1 0h0m1 0h0m2 0h0m1 0h0m2 0h0m1 0h0m4 0h0m1 0h0m3 0h0m2 0h0m1 0h0m3 0h0m3 0h0m1 0h0m2 0h0m2 0h0m1 0h0m1 0h0m3 0h0m3 0h0m1 0h0m2 0h0m1 0h0m240 0h0m2 0h0m1 0h0m2 0h0m2 0h0m1 0h0m1 0h0m3 0h0m2 0h0m1 0h0m3 0h0m1 0h0m1 0h0m1 0h0m2 0h0m1 0h0m2 0h0m2 0h0m1 0h0m4 0h0m3 0h0m1 0h0m1 0h0m1 0h0m5 0h0m2 0h0m2 0h0m1 0h0m1 0h0m5 0h0m4 0h0m1 0h0m8 0h0m2 0h0m9 0h0m2 0h0m8 0h0m5 0h0m3 0h0m1 0h0m3 0h0m7 0h0m4 0h0m2 0h0m8 0h0m12 0h0m-483 1h0m1 0h0m4 0h0m1 0h0m6 0h0m14 0h0m3 0h0m7 0h0m2 0h0m1 0h0m1 0h0m1 0h0m2 0h0m10 0h0m3 0h0m3 0h0m1 0h0m1 0h0m2 0h0m1 0h0m1 0h0m2 0h0m1 0h0m1 0h0m4 0h0m2 0h0m7 0h0m2 0h0m8 0h0m7 0h0m4 0h0m2 0h0m3 0h0m3 0h0m1 0h0m1 0h0m1 0h0m1 0h0m230 0h0m1 0h0m5 0h0m1 0h0m2 0h0m1 0h0m2 0h0m1 0h0m1 0h0m1 0h0m3 0h0m3 0h0m1 0h0m1 0h0m2 0h0m4 0h0m2 0h0m1 0h0m2 0h0m1 0h0m1 0h0m1 0h0m1 0h0m1 0h0m3 0h0m4 0h0m1 0h0m6 0h0m1 0h0m1 0h0m5 0h0m9 0h0m1 0h0m2 0h0m5 0h0m2 0h0m2 0h0m1 0h0m2 0h0m2 0h0m3 0h0m4 0h0m5 0h0m6 0h0m4 0h0m12 0h0m2 0h0m5 0h0m1 0h0m1 0h0m7 0h0m-480 1h0m7 0h0m3 0h0m2 0h0m7 0h0m3 0h0m1 0h0m2 0h0m4 0h0m5 0h0m2 0h0m2 0h0m3 0h0m6 0h0m7 0h0m1 0h0m2 0h0m5 0h0m5 0h0m6 0h0m3 0h0m5 0h0m3 0h0m4 0h0m4 0h0m3 0h0m1 0h0m1 0h0m4 0h0m3 0h0m1 0h0m1 0h0m1 0h0m1 0h0m3 0h0m3 0h0m2 0h0m2 0h0m1 0h0m219 0h0m2 0h0m4 0h0m3 0h0m1 0h0m1 0h0m4 0h0m6 0h0m2 0h0m9 0h0m1 0h0m6 0h0m5 0h0m3 0h0m2 0h0m1 0h0m3 0h0m1 0h0m3 0h0m2 0h0m3 0h0m5 0h0m6 0h0m2 0h0m9 0h0m16 0h0m4 0h0m3 0h0m9 0h0m1 0h0m2 0h0m11 0h0m4 0h0m6 0h0m1 0h0m5 0h0m7 0h0m-487 1h0m8 0h0m4 0h0m2 0h0m8 0h0m6 0h0m3 0h0m2 0h0m2 0h0m3 0h0m1 0h0m7 0h0m5 0h0m1 0h0m5 0h0m3 0h0m5 0h0m2 0h0m5 0h0m1 0h0m2 0h0m2 0h0m2 0h0m1 0h0m1 0h0m4 0h0m4 0h0m2 0h0m1 0h0m1 0h0m4 0h0m3 0h0m2 0h0m1 0h0m1 0h0m6 0h0m2 0h0m3 0h0m1 0h0m1 0h0m1 0h0m212 0h0m3 0h0m1 0h0m1 0h0m1 0h0m2 0h0m1 0h0m1 0h0m1 0h0m3 0h0m1 0h0m5 0h0m1 0h0m1 0h0m1 0h0m3 0h0m3 0h0m7 0h0m4 0h0m4 0h0m1 0h0m1 0h0m1 0h0m1 0h0m2 0h0m3 0h0m2 0h0m3 0h0m1 0h0m3 0h0m4 0h0m2 0h0m2 0h0m3 0h0m11 0h0m3 0h0m3 0h0m1 0h0m4 0h0m3 0h0m4 0h0m4 0h0m1 0h0m3 0h0m7 0h0m3 0h0m10 0h0m2 0h0m2 0h0m8 0h0m6 0h0m5 0h0m1 0h0m-488 1h0m5 0h0m9 0h0m12 0h0m5 0h0m1 0h0m5 0h0m5 0h0m2 0h0m3 0h0m2 0h0m3 0h0m1 0h0m1 0h0m2 0h0m3 0h0m1 0h0m3 0h0m9 0h0m4 0h0m1 0h0m1 0h0m1 0h0m2 0h0m2 0h0m2 0h0m1 0h0m6 0h0m1 0h0m1 0h0m1 0h0m2 0h0m1 0h0m1 0h0m6 0h0m1 0h0m1 0h0m1 0h0m1 0h0m2 0h0m2 0h0m2 0h0m1 0h0m2 0h0m1 0h0m3 0h0m1 0h0m1 0h0m1 0h0m204 0h0m2 0h0m1 0h0m2 0h0m1 0h0m1 0h0m1 0h0m2 0h0m1 0h0m1 0h0m2 0h0m3 0h0m3 0h0m1 0h0m1 0h0m1 0h0m2 0h0m1 0h0m2 0h0m1 0h0m5 0h0m1 0h0m3 0h0m1 0h0m1 0h0m4 0h0m2 0h0m2 0h0m2 0h0m2 0h0m1 0h0m4 0h0m9 0h0m3 0h0m5 0h0m3 0h0m1 0h0m4 0h0m3 0h0m1 0h0m2 0h0m2 0h0m1 0h0m5 0h0m1 0h0m2 0h0m4 0h0m1 0h0m6 0h0m3 0h0m12 0h0m5 0h0m5 0h0m2 0h0m2 0h0m9 0h0m8 0h0m-485 1h0m2 0h0m5 0h0m1 0h0m1 0h0m4 0h0m2 0h0m3 0h0m5 0h0m21 0h0m4 0h0m2 0h0m3 0h0m3 0h0m1 0h0m1 0h0m2 0h0m1 0h0m2 0h0m5 0h0m3 0h0m2 0h0m1 0h0m2 0h0m2 0h0m2 0h0m5 0h0m2 0h0m4 0h0m1 0h0m5 0h0m5 0h0m1 0h0m1 0h0m1 0h0m2 0h0m3 0h0m2 0h0m4 0h0m1 0h0m2 0h0m2 0h0m3 0h0m2 0h0m1 0h0m4 0h0m1 0h0m1 0h0m1 0h0m190 0h0m1 0h0m1 0h0m3 0h0m1 0h0m1 0h0m1 0h0m1 0h0m1 0h0m1 0h0m2 0h0m1 0h0m1 0h0m2 0h0m2 0h0m2 0h0m3 0h0m2 0h0m2 0h0m1 0h0m3 0h0m2 0h0m2 0h0m1 0h0m3 0h0m1 0h0m2 0h0m3 0h0m2 0h0m1 0h0m1 0h0m2 0h0m1 0h0m1 0h0m3 0h0m4 0h0m1 0h0m1 0h0m2 0h0m1 0h0m1 0h0m1 0h0m1 0h0m4 0h0m1 0h0m2 0h0m3 0h0m1 0h0m10 0h0m3 0h0m1 0h0m10 0h0m2 0h0m1 0h0m1 0h0m3 0h0m13 0h0m4 0h0m2 0h0m1 0h0m6 0h0m6 0h0m2 0h0m18 0h0m-486 1h0m1 0h0m9 0h0m11 0h0m1 0h0m1 0h0m1 0h0m2 0h0m1 0h0m1 0h0m1 0h0m1 0h0m1 0h0m2 0h0m2 0h0m4 0h0m10 0h0m1 0h0m1 0h0m1 0h0m4 0h0m2 0h0m1 0h0m3 0h0m1 0h0m3 0h0m2 0h0m2 0h0m4 0h0m1 0h0m2 0h0m2 0h0m1 0h0m3 0h0m1 0h0m1 0h0m7 0h0m1 0h0m2 0h0m1 0h0m3 0h0m1 0h0m7 0h0m9 0h0m2 0h0m1 0h0m2 0h0m2 0h0m1 0h0m5 0h0m4 0h0m2 0h0m1 0h0m187 0h0m1 0h0m1 0h0m1 0h0m5 0h0m2 0h0m3 0h0m4 0h0m9 0h0m2 0h0m1 0h0m3 0h0m7 0h0m2 0h0m2 0h0m2 0h0m3 0h0m2 0h0m1 0h0m2 0h0m2 0h0m1 0h0m1 0h0m1 0h0m3 0h0m1 0h0m1 0h0m3 0h0m2 0h0m3 0h0m4 0h0m6 0h0m3 0h0m1 0h0m29 0h0m4 0h0m7 0h0m6 0h0m3 0h0m7 0h0m7 0h0m1 0h0m2 0h0m4 0h0m8 0h0m-484 1h0m1 0h0m5 0h0m1 0h0m1 0h0m1 0h0m2 0h0m9 0h0m3 0h0m8 0h0m12 0h0m1 0h0m4 0h0m5 0h0m1 0h0m2 0h0m1 0h0m1 0h0m1 0h0m1 0h0m2 0h0m5 0h0m1 0h0m8 0h0m4 0h0m3 0h0m1 0h0m2 0h0m1 0h0m2 0h0m1 0h0m1 0h0m2 0h0m6 0h0m1 0h0m1 0h0m1 0h0m1 0h0m1 0h0m2 0h0m1 0h0m2 0h0m2 0h0m1 0h0m1 0h0m2 0h0m2 0h0m1 0h0m1 0h0m1 0h0m1 0h0m2 0h0m2 0h0m1 0h0m2 0h0m1 0h0m3 0h0m1 0h0m3 0h0m2 0h0m175 0h0m1 0h0m1 0h0m2 0h0m1 0h0m2 0h0m3 0h0m2 0h0m1 0h0m2 0h0m1 0h0m2 0h0m1 0h0m1 0h0m1 0h0m1 0h0m3 0h0m3 0h0m2 0h0m2 0h0m1 0h0m1 0h0m1 0h0m3 0h0m2 0h0m2 0h0m3 0h0m2 0h0m6 0h0m1 0h0m4 0h0m2 0h0m1 0h0m3 0h0m1 0h0m8 0h0m5 0h0m18 0h0m4 0h0m1 0h0m2 0h0m2 0h0m3 0h0m4 0h0m1 0h0m6 0h0m5 0h0m6 0h0m3 0h0m8 0h0m15 0h0m1 0h0m13 0h0m2 0h0m-485 1h0m12 0h0m1 0h0m2 0h0m6 0h0m7 0h0m1 0h0m2 0h0m2 0h0m3 0h0m4 0h0m5 0h0m9 0h0m2 0h0m4 0h0m1 0h0m3 0h0m1 0h0m6 0h0m3 0h0m3 0h0m2 0h0m1 0h0m2 0h0m2 0h0m3 0h0m3 0h0m3 0h0m4 0h0m1 0h0m1 0h0m2 0h0m3 0h0m1 0h0m3 0h0m2 0h0m1 0h0m1 0h0m1 0h0m2 0h0m2 0h0m2 0h0m1 0h0m3 0h0m1 0h0m1 0h0m1 0h0m1 0h0m1 0h0m1 0h0m2 0h0m1 0h0m2 0h0m2 0h0m2 0h0m1 0h0m1 0h0m1 0h0m4 0h0m1 0h0m2 0h0m4 0h0m1 0h0m1 0h0m1 0h0m1 0h0m1 0h0m1 0h0m1 0h0m3 0h0m1 0h0m1 0h0m3 0h0m1 0h0m1 0h0m1 0h0m1 0h0m1 0h0m2 0h0m1 0h0m1 0h0m1 0h0m1 0h0m1 0h0m1 0h0m1 0h0m1 0h0m1 0h0m1 0h0m1 0h0m1 0h0m1 0h0m1 0h0m2 0h0m2 0h0m1 0h0m1 0h0m1 0h0m1 0h0m1 0h0m1 0h0m1 0h0m1 0h0m1 0h0m1 0h0m1 0h0m1 0h0m1 0h0m1 0h0m1 0h0m1 0h0m1 0h0m1 0h0m1 0h0m3 0h0m2 0h0m1 0h0m3 0h0m1 0h0m1 0h0m1 0h0m2 0h0m1 0h0m1 0h0m1 0h0m1 0h0m1 0h0m1 0h0m1 0h0m1 0h0m2 0h0m1 0h0m3 0h0m1 0h0m1 0h0m1 0h0m1 0h0m1 0h0m1 0h0m1 0h0m1 0h0m1 0h0m1 0h0m1 0h0m1 0h0m3 0h0m2 0h0m2 0h0m1 0h0m1 0h0m1 0h0m1 0h0m1 0h0m4 0h0m1 0h0m1 0h0m1 0h0m2 0h0m1 0h0m1 0h0m2 0h0m4 0h0m1 0h0m1 0h0m2 0h0m1 0h0m2 0h0m2 0h0m1 0h0m1 0h0m1 0h0m1 0h0m2 0h0m1 0h0m1 0h0m1 0h0m1 0h0m1 0h0m1 0h0m1 0h0m1 0h0m1 0h0m1 0h0m1 0h0m1 0h0m2 0h0m2 0h0m1 0h0m1 0h0m1 0h0m1 0h0m2 0h0m3 0h0m3 0h0m1 0h0m2 0h0m2 0h0m1 0h0m1 0h0m3 0h0m1 0h0m2 0h0m3 0h0m1 0h0m1 0h0m1 0h0m3 0h0m1 0h0m1 0h0m5 0h0m1 0h0m1 0h0m1 0h0m4 0h0m1 0h0m1 0h0m3 0h0m1 0h0m1 0h0m4 0h0m1 0h0m2 0h0m1 0h0m1 0h0m1 0h0m1 0h0m4 0h0m4 0h0m1 0h0m1 0h0m7 0h0m6 0h0m1 0h0m2 0h0m6 0h0m1 0h0m1 0h0m2 0h0m2 0h0m1 0h0m2 0h0m5 0h0m10 0h0m7 0h0m3 0h0m2 0h0m1 0h0m7 0h0m1 0h0m18 0h0m1 0h0m2 0h0m2 0h0m4 0h0m-484 1h0m3 0h0m4 0h0m5 0h0m11 0h0m3 0h0m4 0h0m6 0h0m5 0h0m12 0h0m1 0h0m2 0h0m7 0h0m1 0h0m1 0h0m1 0h0m4 0h0m1 0h0m3 0h0m1 0h0m1 0h0m1 0h0m2 0h0m2 0h0m2 0h0m2 0h0m1 0h0m2 0h0m6 0h0m4 0h0m1 0h0m2 0h0m4 0h0m4 0h0m2 0h0m1 0h0m1 0h0m1 0h0m3 0h0m2 0h0m1 0h0m2 0h0m2 0h0m1 0h0m3 0h0m2 0h0m1 0h0m4 0h0m3 0h0m1 0h0m1 0h0m1 0h0m3 0h0m4 0h0m1 0h0m1 0h0m1 0h0m1 0h0m1 0h0m1 0h0m2 0h0m1 0h0m1 0h0m1 0h0m1 0h0m1 0h0m1 0h0m1 0h0m1 0h0m1 0h0m4 0h0m2 0h0m1 0h0m1 0h0m1 0h0m1 0h0m1 0h0m1 0h0m1 0h0m1 0h0m1 0h0m2 0h0m1 0h0m2 0h0m1 0h0m1 0h0m2 0h0m1 0h0m1 0h0m27 0h0m1 0h0m2 0h0m1 0h0m1 0h0m2 0h0m1 0h0m1 0h0m1 0h0m1 0h0m1 0h0m2 0h0m1 0h0m1 0h0m2 0h0m2 0h0m1 0h0m1 0h0m4 0h0m1 0h0m1 0h0m3 0h0m2 0h0m1 0h0m1 0h0m1 0h0m1 0h0m2 0h0m1 0h0m1 0h0m2 0h0m1 0h0m5 0h0m1 0h0m1 0h0m1 0h0m1 0h0m1 0h0m1 0h0m1 0h0m1 0h0m1 0h0m1 0h0m1 0h0m1 0h0m1 0h0m1 0h0m1 0h0m1 0h0m2 0h0m1 0h0m1 0h0m2 0h0m2 0h0m1 0h0m1 0h0m1 0h0m3 0h0m1 0h0m1 0h0m1 0h0m1 0h0m2 0h0m1 0h0m1 0h0m1 0h0m1 0h0m1 0h0m1 0h0m1 0h0m1 0h0m3 0h0m1 0h0m1 0h0m1 0h0m3 0h0m2 0h0m3 0h0m5 0h0m1 0h0m2 0h0m2 0h0m3 0h0m1 0h0m2 0h0m1 0h0m1 0h0m2 0h0m2 0h0m2 0h0m1 0h0m1 0h0m1 0h0m2 0h0m4 0h0m2 0h0m9 0h0m1 0h0m3 0h0m2 0h0m1 0h0m1 0h0m2 0h0m3 0h0m1 0h0m5 0h0m2 0h0m2 0h0m1 0h0m1 0h0m2 0h0m2 0h0m1 0h0m2 0h0m3 0h0m9 0h0m2 0h0m2 0h0m2 0h0m1 0h0m3 0h0m3 0h0m1 0h0m17 0h0m4 0h0m4 0h0m9 0h0m7 0h0m6 0h0m11 0h0m1 0h0m3 0h0m-489 1h0m4 0h0m10 0h0m14 0h0m2 0h0m1 0h0m5 0h0m2 0h0m1 0h0m4 0h0m1 0h0m1 0h0m2 0h0m6 0h0m2 0h0m1 0h0m1 0h0m2 0h0m4 0h0m4 0h0m4 0h0m3 0h0m1 0h0m2 0h0m3 0h0m6 0h0m3 0h0m3 0h0m1 0h0m2 0h0m1 0h0m2 0h0m1 0h0m2 0h0m1 0h0m4 0h0m2 0h0m1 0h0m1 0h0m1 0h0m2 0h0m1 0h0m1 0h0m3 0h0m5 0h0m3 0h0m1 0h0m2 0h0m3 0h0m3 0h0m2 0h0m2 0h0m1 0h0m7 0h0m1 0h0m1 0h0m1 0h0m1 0h0m1 0h0m1 0h0m1 0h0m1 0h0m1 0h0m1 0h0m1 0h0m2 0h0m1 0h0m1 0h0m1 0h0m1 0h0m1 0h0m1 0h0m2 0h0m1 0h0m4 0h0m2 0h0m1 0h0m1 0h0m1 0h0m1 0h0m1 0h0m1 0h0m1 0h0m1 0h0m1 0h0m1 0h0m1 0h0m2 0h0m1 0h0m1 0h0m1 0h0m26 0h0m1 0h0m1 0h0m1 0h0m3 0h0m1 0h0m1 0h0m4 0h0m1 0h0m1 0h0m1 0h0m2 0h0m1 0h0m2 0h0m1 0h0m1 0h0m1 0h0m1 0h0m1 0h0m1 0h0m1 0h0m1 0h0m2 0h0m1 0h0m3 0h0m1 0h0m1 0h0m1 0h0m1 0h0m1 0h0m1 0h0m1 0h0m1 0h0m3 0h0m1 0h0m1 0h0m3 0h0m2 0h0m1 0h0m1 0h0m1 0h0m3 0h0m1 0h0m1 0h0m2 0h0m1 0h0m2 0h0m4 0h0m1 0h0m1 0h0m1 0h0m1 0h0m2 0h0m1 0h0m3 0h0m3 0h0m1 0h0m1 0h0m1 0h0m1 0h0m1 0h0m1 0h0m1 0h0m2 0h0m2 0h0m2 0h0m1 0h0m1 0h0m1 0h0m1 0h0m3 0h0m3 0h0m1 0h0m1 0h0m3 0h0m1 0h0m2 0h0m2 0h0m2 0h0m2 0h0m1 0h0m3 0h0m3 0h0m1 0h0m1 0h0m1 0h0m8 0h0m3 0h0m1 0h0m1 0h0m1 0h0m3 0h0m2 0h0m2 0h0m9 0h0m1 0h0m2 0h0m1 0h0m2 0h0m4 0h0m2 0h0m2 0h0m2 0h0m5 0h0m3 0h0m1 0h0m1 0h0m3 0h0m1 0h0m2 0h0m2 0h0m7 0h0m5 0h0m15 0h0m5 0h0m4 0h0m6 0h0m1 0h0m1 0h0m6 0h0m16 0h0m1 0h0m1 0h0m-474 1h0m2 0h0m5 0h0m1 0h0m6 0h0m3 0h0m4 0h0m4 0h0m4 0h0m3 0h0m10 0h0m9 0h0m2 0h0m4 0h0m1 0h0m1 0h0m2 0h0m1 0h0m1 0h0m2 0h0m4 0h0m1 0h0m2 0h0m1 0h0m3 0h0m2 0h0m1 0h0m2 0h0m2 0h0m2 0h0m3 0h0m1 0h0m5 0h0m3 0h0m3 0h0m1 0h0m3 0h0m1 0h0m2 0h0m1 0h0m1 0h0m3 0h0m1 0h0m1 0h0m1 0h0m1 0h0m1 0h0m1 0h0m1 0h0m1 0h0m2 0h0m1 0h0m1 0h0m4 0h0m2 0h0m4 0h0m1 0h0m2 0h0m2 0h0m1 0h0m1 0h0m2 0h0m1 0h0m1 0h0m2 0h0m1 0h0m1 0h0m2 0h0m1 0h0m1 0h0m3 0h0m1 0h0m1 0h0m2 0h0m1 0h0m2 0h0m1 0h0m1 0h0m2 0h0m1 0h0m2 0h0m1 0h0m3 0h0m2 0h0m2 0h0m1 0h0m1 0h0m1 0h0m1 0h0m3 0h0m27 0h0m1 0h0m1 0h0m1 0h0m1 0h0m1 0h0m2 0h0m1 0h0m2 0h0m1 0h0m2 0h0m1 0h0m2 0h0m1 0h0m1 0h0m1 0h0m2 0h0m1 0h0m1 0h0m1 0h0m4 0h0m4 0h0m1 0h0m1 0h0m1 0h0m1 0h0m1 0h0m2 0h0m1 0h0m1 0h0m1 0h0m2 0h0m1 0h0m1 0h0m1 0h0m1 0h0m1 0h0m3 0h0m1 0h0m2 0h0m2 0h0m1 0h0m1 0h0m1 0h0m1 0h0m2 0h0m1 0h0m1 0h0m2 0h0m1 0h0m1 0h0m1 0h0m1 0h0m2 0h0m1 0h0m2 0h0m1 0h0m2 0h0m2 0h0m2 0h0m1 0h0m1 0h0m1 0h0m1 0h0m2 0h0m1 0h0m1 0h0m2 0h0m1 0h0m4 0h0m1 0h0m1 0h0m1 0h0m1 0h0m1 0h0m1 0h0m1 0h0m1 0h0m2 0h0m1 0h0m1 0h0m3 0h0m1 0h0m1 0h0m2 0h0m1 0h0m2 0h0m2 0h0m4 0h0m2 0h0m3 0h0m3 0h0m1 0h0m2 0h0m2 0h0m2 0h0m3 0h0m2 0h0m3 0h0m4 0h0m1 0h0m2 0h0m6 0h0m2 0h0m3 0h0m1 0h0m4 0h0m5 0h0m1 0h0m4 0h0m1 0h0m1 0h0m5 0h0m1 0h0m5 0h0m1 0h0m1 0h0m4 0h0m5 0h0m8 0h0m1 0h0m1 0h0m7 0h0m1 0h0m19 0h0m6 0h0m24 0h0m-488 1h0m10 0h0m12 0h0m8 0h0m2 0h0m1 0h0m1 0h0m4 0h0m4 0h0m2 0h0m1 0h0m2 0h0m4 0h0m9 0h0m2 0h0m3 0h0m3 0h0m1 0h0m1 0h0m5 0h0m1 0h0m1 0h0m3 0h0m2 0h0m3 0h0m4 0h0m6 0h0m2 0h0m2 0h0m5 0h0m1 0h0m1 0h0m1 0h0m3 0h0m3 0h0m1 0h0m1 0h0m1 0h0m2 0h0m1 0h0m1 0h0m1 0h0m2 0h0m1 0h0m1 0h0m2 0h0m2 0h0m1 0h0m3 0h0m1 0h0m1 0h0m1 0h0m1 0h0m4 0h0m1 0h0m1 0h0m2 0h0m1 0h0m1 0h0m1 0h0m1 0h0m1 0h0m1 0h0m1 0h0m1 0h0m1 0h0m1 0h0m1 0h0m1 0h0m1 0h0m2 0h0m1 0h0m1 0h0m1 0h0m1 0h0m1 0h0m1 0h0m1 0h0m1 0h0m1 0h0m1 0h0m2 0h0m2 0h0m1 0h0m1 0h0m2 0h0m1 0h0m1 0h0m1 0h0m1 0h0m1 0h0m1 0h0m1 0h0m1 0h0m1 0h0m1 0h0m2 0h0m25 0h0m1 0h0m2 0h0m1 0h0m1 0h0m1 0h0m2 0h0m3 0h0m1 0h0m4 0h0m2 0h0m1 0h0m1 0h0m1 0h0m1 0h0m1 0h0m1 0h0m2 0h0m1 0h0m1 0h0m2 0h0m1 0h0m1 0h0m3 0h0m1 0h0m1 0h0m1 0h0m1 0h0m2 0h0m2 0h0m1 0h0m1 0h0m1 0h0m2 0h0m1 0h0m1 0h0m1 0h0m1 0h0m1 0h0m2 0h0m1 0h0m1 0h0m1 0h0m1 0h0m2 0h0m2 0h0m1 0h0m1 0h0m1 0h0m1 0h0m1 0h0m1 0h0m2 0h0m1 0h0m1 0h0m1 0h0m1 0h0m1 0h0m1 0h0m1 0h0m4 0h0m1 0h0m1 0h0m1 0h0m1 0h0m1 0h0m1 0h0m2 0h0m3 0h0m1 0h0m1 0h0m3 0h0m1 0h0m3 0h0m3 0h0m1 0h0m1 0h0m1 0h0m5 0h0m1 0h0m1 0h0m1 0h0m6 0h0m1 0h0m2 0h0m3 0h0m2 0h0m5 0h0m1 0h0m1 0h0m1 0h0m1 0h0m1 0h0m1 0h0m1 0h0m1 0h0m1 0h0m2 0h0m5 0h0m1 0h0m3 0h0m2 0h0m2 0h0m2 0h0m7 0h0m3 0h0m5 0h0m3 0h0m4 0h0m5 0h0m3 0h0m2 0h0m2 0h0m2 0h0m1 0h0m2 0h0m4 0h0m1 0h0m2 0h0m1 0h0m1 0h0m6 0h0m2 0h0m17 0h0m2 0h0m4 0h0m3 0h0m3 0h0m8 0h0m3 0h0m10 0h0m6 0h0m-490 1h0m7 0h0m3 0h0m1 0h0m15 0h0m2 0h0m2 0h0m2 0h0m5 0h0m1 0h0m11 0h0m1 0h0m4 0h0m3 0h0m5 0h0m2 0h0m11 0h0m4 0h0m1 0h0m1 0h0m5 0h0m2 0h0m1 0h0m1 0h0m3 0h0m1 0h0m3 0h0m3 0h0m5 0h0m1 0h0m4 0h0m1 0h0m1 0h0m1 0h0m2 0h0m4 0h0m2 0h0m1 0h0m2 0h0m2 0h0m3 0h0m1 0h0m2 0h0m2 0h0m1 0h0m1 0h0m1 0h0m1 0h0m1 0h0m1 0h0m4 0h0m2 0h0m1 0h0m1 0h0m2 0h0m1 0h0m1 0h0m2 0h0m2 0h0m1 0h0m1 0h0m2 0h0m1 0h0m1 0h0m2 0h0m1 0h0m1 0h0m1 0h0m2 0h0m1 0h0m2 0h0m1 0h0m2 0h0m1 0h0m1 0h0m2 0h0m2 0h0m1 0h0m1 0h0m1 0h0m1 0h0m1 0h0m1 0h0m2 0h0m2 0h0m1 0h0m25 0h0m1 0h0m1 0h0m1 0h0m1 0h0m1 0h0m1 0h0m2 0h0m2 0h0m1 0h0m1 0h0m1 0h0m1 0h0m1 0h0m2 0h0m2 0h0m1 0h0m1 0h0m2 0h0m1 0h0m1 0h0m1 0h0m1 0h0m2 0h0m3 0h0m1 0h0m1 0h0m1 0h0m1 0h0m1 0h0m1 0h0m1 0h0m1 0h0m2 0h0m2 0h0m1 0h0m1 0h0m2 0h0m1 0h0m1 0h0m1 0h0m1 0h0m1 0h0m1 0h0m5 0h0m1 0h0m1 0h0m1 0h0m1 0h0m1 0h0m2 0h0m1 0h0m1 0h0m1 0h0m1 0h0m1 0h0m1 0h0m2 0h0m1 0h0m2 0h0m1 0h0m1 0h0m1 0h0m1 0h0m1 0h0m1 0h0m1 0h0m2 0h0m1 0h0m1 0h0m1 0h0m1 0h0m2 0h0m1 0h0m1 0h0m1 0h0m2 0h0m3 0h0m1 0h0m1 0h0m1 0h0m1 0h0m1 0h0m3 0h0m1 0h0m1 0h0m1 0h0m2 0h0m1 0h0m1 0h0m3 0h0m1 0h0m1 0h0m1 0h0m1 0h0m1 0h0m2 0h0m2 0h0m1 0h0m2 0h0m1 0h0m1 0h0m1 0h0m2 0h0m1 0h0m1 0h0m2 0h0m2 0h0m2 0h0m5 0h0m1 0h0m2 0h0m2 0h0m1 0h0m2 0h0m1 0h0m15 0h0m1 0h0m2 0h0m4 0h0m2 0h0m5 0h0m2 0h0m3 0h0m2 0h0m2 0h0m5 0h0m3 0h0m2 0h0m1 0h0m10 0h0m6 0h0m2 0h0m5 0h0m4 0h0m3 0h0m2 0h0m4 0h0m20 0h0m3 0h0m1 0h0m3 0h0m2 0h0m1 0h0m-486 1h0m1 0h0m3 0h0m1 0h0m2 0h0m6 0h0m8 0h0m6 0h0m7 0h0m11 0h0m2 0h0m3 0h0m12 0h0m4 0h0m2 0h0m1 0h0m2 0h0m1 0h0m2 0h0m1 0h0m3 0h0m5 0h0m2 0h0m10 0h0m2 0h0m1 0h0m2 0h0m2 0h0m1 0h0m1 0h0m1 0h0m5 0h0m1 0h0m1 0h0m1 0h0m3 0h0m2 0h0m1 0h0m1 0h0m1 0h0m1 0h0m1 0h0m2 0h0m1 0h0m1 0h0m1 0h0m1 0h0m1 0h0m1 0h0m2 0h0m1 0h0m3 0h0m1 0h0m1 0h0m1 0h0m1 0h0m2 0h0m4 0h0m2 0h0m1 0h0m1 0h0m2 0h0m3 0h0m1 0h0m1 0h0m4 0h0m2 0h0m2 0h0m1 0h0m1 0h0m1 0h0m1 0h0m1 0h0m1 0h0m1 0h0m1 0h0m2 0h0m1 0h0m2 0h0m1 0h0m1 0h0m1 0h0m1 0h0m1 0h0m2 0h0m1 0h0m1 0h0m26 0h0m1 0h0m1 0h0m1 0h0m1 0h0m1 0h0m1 0h0m1 0h0m1 0h0m1 0h0m3 0h0m2 0h0m1 0h0m1 0h0m1 0h0m1 0h0m2 0h0m1 0h0m1 0h0m1 0h0m1 0h0m1 0h0m1 0h0m1 0h0m1 0h0m3 0h0m1 0h0m4 0h0m2 0h0m1 0h0m2 0h0m1 0h0m2 0h0m1 0h0m2 0h0m1 0h0m2 0h0m1 0h0m1 0h0m1 0h0m1 0h0m1 0h0m1 0h0m1 0h0m2 0h0m1 0h0m4 0h0m1 0h0m1 0h0m4 0h0m1 0h0m1 0h0m1 0h0m1 0h0m1 0h0m1 0h0m1 0h0m1 0h0m1 0h0m1 0h0m1 0h0m1 0h0m1 0h0m1 0h0m1 0h0m2 0h0m1 0h0m1 0h0m1 0h0m1 0h0m1 0h0m1 0h0m1 0h0m2 0h0m1 0h0m3 0h0m1 0h0m1 0h0m1 0h0m4 0h0m1 0h0m3 0h0m1 0h0m2 0h0m1 0h0m3 0h0m7 0h0m1 0h0m1 0h0m1 0h0m1 0h0m1 0h0m2 0h0m1 0h0m1 0h0m4 0h0m2 0h0m1 0h0m1 0h0m1 0h0m6 0h0m4 0h0m3 0h0m3 0h0m1 0h0m3 0h0m2 0h0m2 0h0m2 0h0m4 0h0m4 0h0m1 0h0m3 0h0m3 0h0m3 0h0m2 0h0m6 0h0m1 0h0m10 0h0m8 0h0m8 0h0m8 0h0m14 0h0m15 0h0m2 0h0m-476 1h0m10 0h0m3 0h0m2 0h0m6 0h0m3 0h0m1 0h0m2 0h0m5 0h0m3 0h0m2 0h0m5 0h0m9 0h0m4 0h0m4 0h0m2 0h0m4 0h0m1 0h0m1 0h0m6 0h0m1 0h0m1 0h0m2 0h0m1 0h0m1 0h0m3 0h0m2 0h0m1 0h0m1 0h0m3 0h0m2 0h0m2 0h0m1 0h0m2 0h0m1 0h0m3 0h0m1 0h0m1 0h0m2 0h0m3 0h0m1 0h0m2 0h0m4 0h0m3 0h0m6 0h0m1 0h0m1 0h0m2 0h0m1 0h0m1 0h0m4 0h0m1 0h0m2 0h0m1 0h0m3 0h0m1 0h0m1 0h0m1 0h0m2 0h0m2 0h0m2 0h0m1 0h0m1 0h0m2 0h0m2 0h0m1 0h0m2 0h0m1 0h0m2 0h0m1 0h0m1 0h0m1 0h0m1 0h0m1 0h0m1 0h0m1 0h0m1 0h0m3 0h0m1 0h0m2 0h0m2 0h0m1 0h0m1 0h0m1 0h0m1 0h0m1 0h0m2 0h0m1 0h0m1 0h0m4 0h0m25 0h0m3 0h0m2 0h0m1 0h0m1 0h0m1 0h0m1 0h0m2 0h0m1 0h0m1 0h0m1 0h0m2 0h0m2 0h0m1 0h0m1 0h0m3 0h0m3 0h0m2 0h0m1 0h0m3 0h0m2 0h0m1 0h0m1 0h0m1 0h0m1 0h0m3 0h0m1 0h0m2 0h0m1 0h0m1 0h0m2 0h0m1 0h0m1 0h0m2 0h0m1 0h0m1 0h0m1 0h0m1 0h0m1 0h0m2 0h0m2 0h0m1 0h0m3 0h0m1 0h0m2 0h0m2 0h0m1 0h0m2 0h0m3 0h0m1 0h0m2 0h0m1 0h0m1 0h0m1 0h0m1 0h0m2 0h0m2 0h0m1 0h0m1 0h0m1 0h0m1 0h0m2 0h0m1 0h0m1 0h0m1 0h0m1 0h0m1 0h0m1 0h0m1 0h0m1 0h0m1 0h0m2 0h0m2 0h0m1 0h0m1 0h0m1 0h0m2 0h0m1 0h0m2 0h0m1 0h0m3 0h0m2 0h0m1 0h0m3 0h0m1 0h0m1 0h0m1 0h0m2 0h0m1 0h0m3 0h0m2 0h0m1 0h0m1 0h0m2 0h0m1 0h0m8 0h0m2 0h0m3 0h0m3 0h0m1 0h0m3 0h0m1 0h0m3 0h0m3 0h0m7 0h0m6 0h0m3 0h0m2 0h0m6 0h0m2 0h0m2 0h0m1 0h0m7 0h0m5 0h0m9 0h0m4 0h0m9 0h0m3 0h0m13 0h0m20 0h0m6 0h0m-489 1h0m2 0h0m2 0h0m2 0h0m1 0h0m7 0h0m1 0h0m4 0h0m2 0h0m1 0h0m1 0h0m5 0h0m2 0h0m8 0h0m1 0h0m5 0h0m1 0h0m4 0h0m2 0h0m6 0h0m6 0h0m2 0h0m2 0h0m1 0h0m2 0h0m2 0h0m2 0h0m2 0h0m3 0h0m5 0h0m1 0h0m1 0h0m12 0h0m1 0h0m4 0h0m2 0h0m1 0h0m8 0h0m3 0h0m1 0h0m1 0h0m1 0h0m1 0h0m2 0h0m1 0h0m5 0h0m1 0h0m2 0h0m3 0h0m2 0h0m2 0h0m2 0h0m8 0h0m1 0h0m1 0h0m1 0h0m2 0h0m1 0h0m1 0h0m2 0h0m1 0h0m1 0h0m3 0h0m2 0h0m1 0h0m4 0h0m1 0h0m2 0h0m2 0h0m1 0h0m1 0h0m2 0h0m1 0h0m1 0h0m1 0h0m1 0h0m1 0h0m1 0h0m2 0h0m2 0h0m2 0h0m1 0h0m25 0h0m1 0h0m1 0h0m1 0h0m3 0h0m1 0h0m1 0h0m1 0h0m1 0h0m1 0h0m1 0h0m1 0h0m1 0h0m1 0h0m2 0h0m1 0h0m1 0h0m1 0h0m1 0h0m2 0h0m2 0h0m1 0h0m1 0h0m1 0h0m2 0h0m1 0h0m1 0h0m1 0h0m1 0h0m1 0h0m3 0h0m2 0h0m2 0h0m1 0h0m1 0h0m1 0h0m1 0h0m1 0h0m1 0h0m1 0h0m2 0h0m1 0h0m1 0h0m3 0h0m1 0h0m1 0h0m1 0h0m1 0h0m1 0h0m1 0h0m1 0h0m1 0h0m1 0h0m1 0h0m1 0h0m1 0h0m1 0h0m2 0h0m1 0h0m1 0h0m1 0h0m1 0h0m2 0h0m1 0h0m1 0h0m3 0h0m1 0h0m1 0h0m1 0h0m1 0h0m1 0h0m1 0h0m3 0h0m2 0h0m1 0h0m1 0h0m2 0h0m1 0h0m1 0h0m6 0h0m2 0h0m1 0h0m4 0h0m3 0h0m1 0h0m2 0h0m1 0h0m1 0h0m3 0h0m3 0h0m2 0h0m1 0h0m1 0h0m1 0h0m2 0h0m1 0h0m2 0h0m1 0h0m2 0h0m1 0h0m6 0h0m4 0h0m3 0h0m2 0h0m3 0h0m2 0h0m1 0h0m6 0h0m3 0h0m2 0h0m1 0h0m1 0h0m3 0h0m2 0h0m7 0h0m2 0h0m1 0h0m1 0h0m1 0h0m4 0h0m3 0h0m1 0h0m6 0h0m12 0h0m7 0h0m5 0h0m7 0h0m4 0h0m12 0h0m4 0h0m3 0h0m2 0h0m4 0h0m9 0h0m1 0h0m-490 1h0m6 0h0m4 0h0m16 0h0m8 0h0m5 0h0m7 0h0m1 0h0m1 0h0m5 0h0m2 0h0m2 0h0m1 0h0m3 0h0m1 0h0m1 0h0m3 0h0m4 0h0m2 0h0m3 0h0m2 0h0m1 0h0m3 0h0m7 0h0m1 0h0m1 0h0m2 0h0m5 0h0m2 0h0m2 0h0m3 0h0m3 0h0m5 0h0m2 0h0m1 0h0m8 0h0m1 0h0m3 0h0m1 0h0m1 0h0m1 0h0m2 0h0m2 0h0m1 0h0m3 0h0m1 0h0m2 0h0m3 0h0m1 0h0m1 0h0m1 0h0m1 0h0m1 0h0m2 0h0m1 0h0m2 0h0m1 0h0m1 0h0m1 0h0m1 0h0m1 0h0m1 0h0m1 0h0m1 0h0m2 0h0m1 0h0m1 0h0m1 0h0m1 0h0m1 0h0m1 0h0m1 0h0m2 0h0m1 0h0m1 0h0m1 0h0m3 0h0m1 0h0m1 0h0m1 0h0m1 0h0m1 0h0m1 0h0m1 0h0m1 0h0m3 0h0m25 0h0m1 0h0m1 0h0m1 0h0m1 0h0m1 0h0m1 0h0m1 0h0m1 0h0m1 0h0m2 0h0m2 0h0m1 0h0m1 0h0m1 0h0m3 0h0m1 0h0m1 0h0m1 0h0m1 0h0m1 0h0m1 0h0m2 0h0m2 0h0m1 0h0m1 0h0m1 0h0m1 0h0m4 0h0m2 0h0m3 0h0m1 0h0m1 0h0m1 0h0m1 0h0m2 0h0m1 0h0m1 0h0m2 0h0m1 0h0m1 0h0m2 0h0m1 0h0m1 0h0m1 0h0m1 0h0m1 0h0m1 0h0m2 0h0m1 0h0m2 0h0m1 0h0m1 0h0m1 0h0m1 0h0m1 0h0m1 0h0m1 0h0m1 0h0m1 0h0m1 0h0m1 0h0m1 0h0m1 0h0m2 0h0m2 0h0m1 0h0m1 0h0m1 0h0m2 0h0m1 0h0m1 0h0m1 0h0m2 0h0m2 0h0m1 0h0m1 0h0m2 0h0m1 0h0m1 0h0m1 0h0m1 0h0m6 0h0m1 0h0m1 0h0m1 0h0m1 0h0m1 0h0m2 0h0m4 0h0m1 0h0m1 0h0m1 0h0m2 0h0m1 0h0m1 0h0m1 0h0m3 0h0m1 0h0m1 0h0m3 0h0m1 0h0m3 0h0m2 0h0m3 0h0m1 0h0m9 0h0m1 0h0m2 0h0m2 0h0m1 0h0m1 0h0m1 0h0m4 0h0m3 0h0m7 0h0m1 0h0m2 0h0m7 0h0m1 0h0m3 0h0m9 0h0m1 0h0m9 0h0m12 0h0m3 0h0m2 0h0m9 0h0m2 0h0m10 0h0m2 0h0m1 0h0m6 0h0m-475 1h0m11 0h0m2 0h0m5 0h0m2 0h0m3 0h0m2 0h0m2 0h0m6 0h0m1 0h0m2 0h0m5 0h0m1 0h0m3 0h0m1 0h0m3 0h0m5 0h0m5 0h0m1 0h0m4 0h0m1 0h0m5 0h0m1 0h0m5 0h0m1 0h0m2 0h0m3 0h0m7 0h0m2 0h0m3 0h0m4 0h0m1 0h0m1 0h0m4 0h0m1 0h0m3 0h0m1 0h0m1 0h0m2 0h0m1 0h0m1 0h0m2 0h0m1 0h0m1 0h0m2 0h0m3 0h0m1 0h0m2 0h0m1 0h0m1 0h0m3 0h0m1 0h0m1 0h0m1 0h0m6 0h0m1 0h0m1 0h0m2 0h0m1 0h0m4 0h0m1 0h0m1 0h0m3 0h0m1 0h0m1 0h0m1 0h0m1 0h0m1 0h0m3 0h0m2 0h0m1 0h0m1 0h0m2 0h0m2 0h0m1 0h0m3 0h0m1 0h0m2 0h0m2 0h0m1 0h0m1 0h0m1 0h0m2 0h0m1 0h0m1 0h0m1 0h0m1 0h0m1 0h0m1 0h0m1 0h0m1 0h0m25 0h0m1 0h0m1 0h0m1 0h0m1 0h0m1 0h0m1 0h0m2 0h0m1 0h0m1 0h0m2 0h0m1 0h0m1 0h0m1 0h0m1 0h0m2 0h0m1 0h0m1 0h0m2 0h0m1 0h0m1 0h0m1 0h0m1 0h0m1 0h0m1 0h0m1 0h0m1 0h0m3 0h0m1 0h0m1 0h0m1 0h0m1 0h0m1 0h0m2 0h0m1 0h0m1 0h0m1 0h0m1 0h0m1 0h0m3 0h0m2 0h0m1 0h0m1 0h0m1 0h0m1 0h0m1 0h0m1 0h0m1 0h0m1 0h0m2 0h0m1 0h0m2 0h0m1 0h0m1 0h0m4 0h0m1 0h0m1 0h0m1 0h0m1 0h0m1 0h0m1 0h0m1 0h0m2 0h0m1 0h0m1 0h0m2 0h0m1 0h0m1 0h0m2 0h0m1 0h0m2 0h0m1 0h0m1 0h0m3 0h0m1 0h0m2 0h0m1 0h0m1 0h0m1 0h0m1 0h0m1 0h0m2 0h0m2 0h0m1 0h0m2 0h0m1 0h0m1 0h0m1 0h0m1 0h0m1 0h0m3 0h0m1 0h0m3 0h0m1 0h0m1 0h0m2 0h0m1 0h0m4 0h0m1 0h0m1 0h0m1 0h0m6 0h0m1 0h0m1 0h0m10 0h0m4 0h0m1 0h0m2 0h0m5 0h0m3 0h0m1 0h0m1 0h0m4 0h0m4 0h0m1 0h0m1 0h0m2 0h0m6 0h0m1 0h0m1 0h0m5 0h0m7 0h0m7 0h0m1 0h0m2 0h0m10 0h0m3 0h0m1 0h0m10 0h0m15 0h0m7 0h0m4 0h0m8 0h0m7 0h0m-491 1h0m2 0h0m3 0h0m7 0h0m6 0h0m4 0h0m5 0h0m15 0h0m2 0h0m1 0h0m5 0h0m1 0h0m2 0h0m3 0h0m1 0h0m1 0h0m3 0h0m2 0h0m1 0h0m1 0h0m1 0h0m1 0h0m5 0h0m1 0h0m4 0h0m6 0h0m1 0h0m3 0h0m3 0h0m4 0h0m1 0h0m1 0h0m1 0h0m3 0h0m1 0h0m1 0h0m1 0h0m2 0h0m3 0h0m1 0h0m1 0h0m1 0h0m1 0h0m3 0h0m1 0h0m1 0h0m2 0h0m2 0h0m1 0h0m4 0h0m1 0h0m4 0h0m3 0h0m2 0h0m2 0h0m1 0h0m3 0h0m2 0h0m1 0h0m1 0h0m1 0h0m1 0h0m2 0h0m2 0h0m1 0h0m2 0h0m1 0h0m3 0h0m1 0h0m1 0h0m1 0h0m1 0h0m1 0h0m1 0h0m2 0h0m1 0h0m2 0h0m2 0h0m1 0h0m1 0h0m1 0h0m1 0h0m1 0h0m3 0h0m1 0h0m1 0h0m1 0h0m1 0h0m2 0h0m1 0h0m1 0h0m2 0h0m1 0h0m26 0h0m2 0h0m1 0h0m1 0h0m2 0h0m1 0h0m1 0h0m1 0h0m1 0h0m1 0h0m2 0h0m1 0h0m1 0h0m1 0h0m1 0h0m2 0h0m1 0h0m2 0h0m1 0h0m1 0h0m1 0h0m1 0h0m1 0h0m1 0h0m1 0h0m1 0h0m2 0h0m1 0h0m1 0h0m1 0h0m1 0h0m1 0h0m1 0h0m2 0h0m1 0h0m1 0h0m1 0h0m1 0h0m2 0h0m1 0h0m1 0h0m1 0h0m1 0h0m2 0h0m1 0h0m2 0h0m4 0h0m2 0h0m3 0h0m2 0h0m2 0h0m4 0h0m2 0h0m1 0h0m1 0h0m2 0h0m1 0h0m1 0h0m1 0h0m2 0h0m1 0h0m1 0h0m1 0h0m1 0h0m1 0h0m1 0h0m2 0h0m1 0h0m2 0h0m1 0h0m1 0h0m1 0h0m3 0h0m1 0h0m1 0h0m2 0h0m5 0h0m1 0h0m1 0h0m1 0h0m2 0h0m1 0h0m3 0h0m3 0h0m5 0h0m2 0h0m2 0h0m1 0h0m4 0h0m1 0h0m1 0h0m3 0h0m3 0h0m4 0h0m2 0h0m3 0h0m2 0h0m6 0h0m2 0h0m4 0h0m23 0h0m4 0h0m4 0h0m1 0h0m10 0h0m2 0h0m9 0h0m3 0h0m6 0h0m1 0h0m2 0h0m7 0h0m3 0h0m3 0h0m3 0h0m1 0h0m9 0h0m10 0h0m-482 1h0m5 0h0m6 0h0m3 0h0m4 0h0m2 0h0m1 0h0m2 0h0m1 0h0m1 0h0m4 0h0m4 0h0m2 0h0m1 0h0m1 0h0m5 0h0m1 0h0m3 0h0m11 0h0m1 0h0m3 0h0m1 0h0m3 0h0m1 0h0m1 0h0m1 0h0m1 0h0m1 0h0m1 0h0m2 0h0m3 0h0m2 0h0m2 0h0m2 0h0m1 0h0m2 0h0m3 0h0m2 0h0m2 0h0m3 0h0m2 0h0m1 0h0m1 0h0m3 0h0m2 0h0m5 0h0m1 0h0m1 0h0m2 0h0m1 0h0m2 0h0m1 0h0m2 0h0m1 0h0m5 0h0m1 0h0m2 0h0m1 0h0m1 0h0m1 0h0m1 0h0m1 0h0m1 0h0m1 0h0m6 0h0m1 0h0m1 0h0m1 0h0m1 0h0m2 0h0m2 0h0m1 0h0m1 0h0m1 0h0m1 0h0m1 0h0m2 0h0m1 0h0m2 0h0m2 0h0m1 0h0m1 0h0m3 0h0m1 0h0m1 0h0m1 0h0m1 0h0m2 0h0m4 0h0m1 0h0m1 0h0m1 0h0m1 0h0m1 0h0m1 0h0m1 0h0m1 0h0m2 0h0m1 0h0m1 0h0m1 0h0m8 0h0m1 0h0m1 0h0m1 0h0m1 0h0m1 0h0m1 0h0m1 0h0m1 0h0m1 0h0m1 0h0m1 0h0m6 0h0m1 0h0m1 0h0m1 0h0m1 0h0m2 0h0m1 0h0m1 0h0m1 0h0m1 0h0m2 0h0m1 0h0m1 0h0m2 0h0m1 0h0m1 0h0m1 0h0m1 0h0m1 0h0m2 0h0m1 0h0m1 0h0m1 0h0m2 0h0m1 0h0m1 0h0m1 0h0m1 0h0m1 0h0m2 0h0m2 0h0m2 0h0m3 0h0m1 0h0m1 0h0m1 0h0m1 0h0m3 0h0m2 0h0m1 0h0m2 0h0m2 0h0m2 0h0m1 0h0m1 0h0m1 0h0m2 0h0m2 0h0m1 0h0m2 0h0m1 0h0m1 0h0m1 0h0m3 0h0m1 0h0m1 0h0m1 0h0m1 0h0m1 0h0m1 0h0m1 0h0m3 0h0m1 0h0m1 0h0m1 0h0m1 0h0m3 0h0m3 0h0m1 0h0m1 0h0m4 0h0m2 0h0m1 0h0m1 0h0m3 0h0m1 0h0m1 0h0m1 0h0m1 0h0m2 0h0m1 0h0m3 0h0m3 0h0m1 0h0m4 0h0m1 0h0m2 0h0m2 0h0m1 0h0m1 0h0m4 0h0m5 0h0m1 0h0m2 0h0m8 0h0m1 0h0m3 0h0m7 0h0m2 0h0m2 0h0m48 0h0m1 0h0m4 0h0m33 0h0m2 0h0m2 0h0m9 0h0m5 0h0m3 0h0m-484 1h0m1 0h0m5 0h0m2 0h0m5 0h0m4 0h0m1 0h0m9 0h0m5 0h0m2 0h0m3 0h0m2 0h0m2 0h0m6 0h0m3 0h0m2 0h0m3 0h0m1 0h0m2 0h0m3 0h0m1 0h0m2 0h0m2 0h0m2 0h0m4 0h0m2 0h0m3 0h0m3 0h0m3 0h0m2 0h0m2 0h0m4 0h0m6 0h0m1 0h0m2 0h0m1 0h0m1 0h0m1 0h0m2 0h0m2 0h0m2 0h0m1 0h0m2 0h0m1 0h0m2 0h0m1 0h0m1 0h0m1 0h0m2 0h0m1 0h0m1 0h0m1 0h0m4 0h0m1 0h0m4 0h0m1 0h0m2 0h0m3 0h0m2 0h0m1 0h0m2 0h0m1 0h0m2 0h0m2 0h0m1 0h0m1 0h0m1 0h0m1 0h0m1 0h0m1 0h0m1 0h0m2 0h0m3 0h0m1 0h0m2 0h0m2 0h0m2 0h0m3 0h0m1 0h0m1 0h0m1 0h0m1 0h0m3 0h0m1 0h0m1 0h0m1 0h0m1 0h0m1 0h0m1 0h0m1 0h0m9 0h0m1 0h0m1 0h0m1 0h0m1 0h0m1 0h0m1 0h0m1 0h0m1 0h0m1 0h0m1 0h0m1 0h0m6 0h0m1 0h0m1 0h0m1 0h0m4 0h0m1 0h0m2 0h0m1 0h0m1 0h0m1 0h0m1 0h0m1 0h0m1 0h0m1 0h0m2 0h0m1 0h0m3 0h0m1 0h0m1 0h0m1 0h0m1 0h0m1 0h0m4 0h0m2 0h0m1 0h0m1 0h0m2 0h0m1 0h0m1 0h0m1 0h0m1 0h0m3 0h0m1 0h0m1 0h0m1 0h0m1 0h0m1 0h0m1 0h0m2 0h0m1 0h0m1 0h0m1 0h0m1 0h0m1 0h0m1 0h0m2 0h0m1 0h0m1 0h0m1 0h0m2 0h0m1 0h0m3 0h0m1 0h0m1 0h0m1 0h0m1 0h0m1 0h0m1 0h0m1 0h0m2 0h0m4 0h0m1 0h0m1 0h0m1 0h0m1 0h0m1 0h0m1 0h0m1 0h0m1 0h0m1 0h0m1 0h0m1 0h0m1 0h0m2 0h0m1 0h0m3 0h0m2 0h0m2 0h0m1 0h0m1 0h0m4 0h0m1 0h0m2 0h0m2 0h0m2 0h0m1 0h0m1 0h0m4 0h0m2 0h0m3 0h0m1 0h0m6 0h0m3 0h0m2 0h0m4 0h0m1 0h0m4 0h0m1 0h0m2 0h0m1 0h0m2 0h0m2 0h0m2 0h0m1 0h0m2 0h0m1 0h0m1 0h0m1 0h0m66 0h0m2 0h0m3 0h0m3 0h0m14 0h0m9 0h0m4 0h0m1 0h0m7 0h0m-490 1h0m2 0h0m5 0h0m1 0h0m8 0h0m2 0h0m4 0h0m4 0h0m6 0h0m1 0h0m1 0h0m4 0h0m1 0h0m7 0h0m1 0h0m4 0h0m2 0h0m2 0h0m1 0h0m3 0h0m5 0h0m3 0h0m1 0h0m1 0h0m1 0h0m4 0h0m2 0h0m1 0h0m5 0h0m1 0h0m1 0h0m3 0h0m1 0h0m4 0h0m1 0h0m5 0h0m1 0h0m1 0h0m1 0h0m1 0h0m4 0h0m3 0h0m8 0h0m2 0h0m2 0h0m1 0h0m1 0h0m1 0h0m3 0h0m1 0h0m1 0h0m1 0h0m1 0h0m4 0h0m5 0h0m1 0h0m1 0h0m1 0h0m1 0h0m3 0h0m1 0h0m1 0h0m1 0h0m1 0h0m1 0h0m2 0h0m2 0h0m1 0h0m1 0h0m2 0h0m1 0h0m1 0h0m1 0h0m2 0h0m2 0h0m1 0h0m1 0h0m1 0h0m1 0h0m1 0h0m1 0h0m2 0h0m1 0h0m2 0h0m2 0h0m7 0h0m1 0h0m1 0h0m1 0h0m8 0h0m1 0h0m2 0h0m1 0h0m1 0h0m1 0h0m1 0h0m1 0h0m1 0h0m2 0h0m6 0h0m1 0h0m1 0h0m1 0h0m1 0h0m4 0h0m1 0h0m1 0h0m1 0h0m2 0h0m1 0h0m1 0h0m1 0h0m1 0h0m1 0h0m1 0h0m1 0h0m1 0h0m1 0h0m3 0h0m1 0h0m2 0h0m1 0h0m2 0h0m2 0h0m2 0h0m3 0h0m2 0h0m1 0h0m2 0h0m2 0h0m1 0h0m1 0h0m3 0h0m1 0h0m1 0h0m1 0h0m1 0h0m1 0h0m2 0h0m1 0h0m1 0h0m1 0h0m4 0h0m3 0h0m1 0h0m1 0h0m1 0h0m1 0h0m1 0h0m1 0h0m1 0h0m1 0h0m2 0h0m1 0h0m4 0h0m2 0h0m2 0h0m1 0h0m1 0h0m1 0h0m1 0h0m5 0h0m1 0h0m1 0h0m4 0h0m1 0h0m2 0h0m1 0h0m1 0h0m2 0h0m3 0h0m1 0h0m1 0h0m1 0h0m1 0h0m1 0h0m1 0h0m1 0h0m1 0h0m1 0h0m1 0h0m1 0h0m1 0h0m3 0h0m1 0h0m1 0h0m1 0h0m1 0h0m2 0h0m2 0h0m3 0h0m1 0h0m1 0h0m5 0h0m2 0h0m2 0h0m1 0h0m7 0h0m2 0h0m7 0h0m1 0h0m72 0h0m1 0h0m2 0h0m4 0h0m1 0h0m8 0h0m2 0h0m-469 1h0m1 0h0m9 0h0m3 0h0m7 0h0m5 0h0m1 0h0m8 0h0m1 0h0m1 0h0m4 0h0m1 0h0m5 0h0m7 0h0m1 0h0m5 0h0m7 0h0m1 0h0m5 0h0m2 0h0m2 0h0m3 0h0m3 0h0m1 0h0m3 0h0m3 0h0m1 0h0m1 0h0m1 0h0m4 0h0m1 0h0m1 0h0m1 0h0m3 0h0m5 0h0m2 0h0m1 0h0m3 0h0m1 0h0m1 0h0m1 0h0m2 0h0m1 0h0m1 0h0m1 0h0m1 0h0m2 0h0m1 0h0m1 0h0m2 0h0m1 0h0m1 0h0m3 0h0m1 0h0m1 0h0m1 0h0m1 0h0m1 0h0m1 0h0m2 0h0m3 0h0m1 0h0m1 0h0m2 0h0m1 0h0m4 0h0m3 0h0m1 0h0m1 0h0m1 0h0m2 0h0m3 0h0m1 0h0m1 0h0m1 0h0m2 0h0m1 0h0m1 0h0m1 0h0m1 0h0m1 0h0m1 0h0m2 0h0m1 0h0m1 0h0m1 0h0m2 0h0m1 0h0m1 0h0m1 0h0m1 0h0m1 0h0m1 0h0m8 0h0m1 0h0m1 0h0m2 0h0m1 0h0m1 0h0m1 0h0m1 0h0m1 0h0m1 0h0m7 0h0m1 0h0m2 0h0m2 0h0m1 0h0m1 0h0m2 0h0m2 0h0m1 0h0m1 0h0m1 0h0m1 0h0m2 0h0m1 0h0m2 0h0m1 0h0m1 0h0m1 0h0m1 0h0m1 0h0m2 0h0m1 0h0m1 0h0m2 0h0m1 0h0m3 0h0m2 0h0m1 0h0m2 0h0m1 0h0m1 0h0m1 0h0m2 0h0m1 0h0m1 0h0m1 0h0m1 0h0m1 0h0m1 0h0m1 0h0m1 0h0m1 0h0m1 0h0m1 0h0m1 0h0m1 0h0m1 0h0m1 0h0m2 0h0m1 0h0m1 0h0m4 0h0m1 0h0m1 0h0m1 0h0m1 0h0m1 0h0m2 0h0m4 0h0m1 0h0m2 0h0m1 0h0m2 0h0m1 0h0m2 0h0m1 0h0m1 0h0m1 0h0m1 0h0m2 0h0m1 0h0m2 0h0m1 0h0m2 0h0m1 0h0m2 0h0m2 0h0m3 0h0m5 0h0m1 0h0m1 0h0m1 0h0m1 0h0m1 0h0m5 0h0m1 0h0m1 0h0m2 0h0m2 0h0m3 0h0m3 0h0m2 0h0m1 0h0m4 0h0m5 0h0m3 0h0m3 0h0m1 0h0m1 0h0m2 0h0m2 0h0m2 0h0m3 0h0m1 0h0m86 0h0m19 0h0m2 0h0m-483 1h0m6 0h0m3 0h0m1 0h0m3 0h0m11 0h0m5 0h0m4 0h0m1 0h0m3 0h0m1 0h0m4 0h0m1 0h0m1 0h0m4 0h0m2 0h0m2 0h0m2 0h0m2 0h0m4 0h0m6 0h0m9 0h0m3 0h0m1 0h0m5 0h0m7 0h0m2 0h0m2 0h0m1 0h0m2 0h0m2 0h0m1 0h0m3 0h0m1 0h0m1 0h0m2 0h0m1 0h0m1 0h0m1 0h0m3 0h0m1 0h0m1 0h0m1 0h0m1 0h0m1 0h0m2 0h0m2 0h0m1 0h0m1 0h0m8 0h0m1 0h0m2 0h0m2 0h0m1 0h0m2 0h0m1 0h0m1 0h0m1 0h0m1 0h0m2 0h0m1 0h0m1 0h0m1 0h0m1 0h0m3 0h0m1 0h0m1 0h0m3 0h0m1 0h0m1 0h0m1 0h0m2 0h0m1 0h0m1 0h0m1 0h0m1 0h0m1 0h0m2 0h0m1 0h0m1 0h0m1 0h0m1 0h0m1 0h0m1 0h0m1 0h0m2 0h0m1 0h0m1 0h0m1 0h0m1 0h0m2 0h0m8 0h0m1 0h0m1 0h0m1 0h0m1 0h0m1 0h0m2 0h0m1 0h0m1 0h0m1 0h0m1 0h0m6 0h0m1 0h0m1 0h0m1 0h0m1 0h0m1 0h0m1 0h0m1 0h0m2 0h0m1 0h0m1 0h0m1 0h0m1 0h0m1 0h0m4 0h0m1 0h0m1 0h0m1 0h0m1 0h0m2 0h0m1 0h0m1 0h0m1 0h0m1 0h0m1 0h0m2 0h0m3 0h0m1 0h0m1 0h0m3 0h0m1 0h0m2 0h0m1 0h0m2 0h0m1 0h0m1 0h0m1 0h0m1 0h0m1 0h0m1 0h0m1 0h0m2 0h0m1 0h0m1 0h0m1 0h0m1 0h0m1 0h0m1 0h0m1 0h0m1 0h0m1 0h0m1 0h0m2 0h0m1 0h0m1 0h0m1 0h0m1 0h0m1 0h0m1 0h0m1 0h0m5 0h0m3 0h0m1 0h0m1 0h0m1 0h0m1 0h0m1 0h0m1 0h0m1 0h0m3 0h0m1 0h0m2 0h0m1 0h0m1 0h0m1 0h0m1 0h0m2 0h0m1 0h0m1 0h0m1 0h0m1 0h0m1 0h0m3 0h0m1 0h0m1 0h0m1 0h0m4 0h0m2 0h0m9 0h0m3 0h0m1 0h0m3 0h0m1 0h0m3 0h0m5 0h0m1 0h0m1 0h0m1 0h0m1 0h0m1 0h0m4 0h0m3 0h0m3 0h0m1 0h0m1 0h0m2 0h0m2 0h0m4 0h0m73 0h0m2 0h0m1 0h0m10 0h0m-469 1h0m5 0h0m19 0h0m1 0h0m10 0h0m3 0h0m11 0h0m2 0h0m1 0h0m2 0h0m4 0h0m1 0h0m1 0h0m1 0h0m1 0h0m2 0h0m1 0h0m4 0h0m5 0h0m1 0h0m1 0h0m5 0h0m1 0h0m1 0h0m3 0h0m1 0h0m2 0h0m1 0h0m2 0h0m6 0h0m3 0h0m1 0h0m1 0h0m2 0h0m3 0h0m4 0h0m1 0h0m1 0h0m1 0h0m2 0h0m2 0h0m1 0h0m5 0h0m2 0h0m1 0h0m2 0h0m1 0h0m1 0h0m1 0h0m2 0h0m2 0h0m1 0h0m1 0h0m1 0h0m2 0h0m2 0h0m2 0h0m2 0h0m3 0h0m3 0h0m2 0h0m1 0h0m1 0h0m1 0h0m1 0h0m1 0h0m1 0h0m1 0h0m5 0h0m1 0h0m1 0h0m1 0h0m1 0h0m1 0h0m3 0h0m1 0h0m4 0h0m1 0h0m1 0h0m1 0h0m1 0h0m1 0h0m2 0h0m1 0h0m10 0h0m1 0h0m1 0h0m1 0h0m1 0h0m1 0h0m1 0h0m1 0h0m2 0h0m1 0h0m1 0h0m6 0h0m1 0h0m2 0h0m2 0h0m2 0h0m1 0h0m1 0h0m1 0h0m1 0h0m1 0h0m1 0h0m1 0h0m1 0h0m1 0h0m1 0h0m1 0h0m2 0h0m1 0h0m1 0h0m2 0h0m1 0h0m1 0h0m2 0h0m1 0h0m1 0h0m1 0h0m1 0h0m1 0h0m1 0h0m2 0h0m1 0h0m2 0h0m2 0h0m4 0h0m1 0h0m2 0h0m2 0h0m1 0h0m1 0h0m1 0h0m1 0h0m1 0h0m1 0h0m2 0h0m2 0h0m1 0h0m1 0h0m1 0h0m1 0h0m1 0h0m1 0h0m1 0h0m1 0h0m1 0h0m1 0h0m1 0h0m1 0h0m2 0h0m2 0h0m1 0h0m1 0h0m1 0h0m2 0h0m2 0h0m1 0h0m1 0h0m1 0h0m1 0h0m1 0h0m1 0h0m1 0h0m1 0h0m3 0h0m3 0h0m2 0h0m1 0h0m1 0h0m2 0h0m1 0h0m1 0h0m1 0h0m1 0h0m2 0h0m1 0h0m1 0h0m1 0h0m5 0h0m9 0h0m1 0h0m1 0h0m1 0h0m1 0h0m6 0h0m3 0h0m1 0h0m7 0h0m2 0h0m2 0h0m1 0h0m2 0h0m3 0h0m1 0h0m1 0h0m1 0h0m2 0h0m1 0h0m1 0h0m2 0h0m1 0h0m63 0h0m1 0h0m7 0h0m3 0h0m27 0h0m3 0h0m-487 1h0m7 0h0m1 0h0m9 0h0m9 0h0m5 0h0m11 0h0m2 0h0m2 0h0m1 0h0m2 0h0m5 0h0m7 0h0m2 0h0m3 0h0m1 0h0m1 0h0m2 0h0m3 0h0m1 0h0m1 0h0m2 0h0m1 0h0m1 0h0m3 0h0m2 0h0m2 0h0m1 0h0m1 0h0m2 0h0m1 0h0m5 0h0m1 0h0m1 0h0m3 0h0m1 0h0m2 0h0m6 0h0m3 0h0m2 0h0m1 0h0m3 0h0m3 0h0m2 0h0m1 0h0m1 0h0m2 0h0m1 0h0m1 0h0m1 0h0m1 0h0m1 0h0m1 0h0m3 0h0m3 0h0m1 0h0m1 0h0m1 0h0m2 0h0m2 0h0m2 0h0m1 0h0m1 0h0m1 0h0m1 0h0m1 0h0m1 0h0m2 0h0m1 0h0m1 0h0m1 0h0m1 0h0m1 0h0m1 0h0m1 0h0m1 0h0m1 0h0m1 0h0m1 0h0m1 0h0m1 0h0m1 0h0m1 0h0m1 0h0m1 0h0m1 0h0m3 0h0m1 0h0m5 0h0m1 0h0m1 0h0m1 0h0m1 0h0m3 0h0m8 0h0m1 0h0m1 0h0m1 0h0m1 0h0m2 0h0m1 0h0m1 0h0m1 0h0m1 0h0m1 0h0m6 0h0m1 0h0m1 0h0m1 0h0m1 0h0m1 0h0m1 0h0m1 0h0m1 0h0m1 0h0m1 0h0m1 0h0m1 0h0m1 0h0m1 0h0m1 0h0m1 0h0m1 0h0m2 0h0m2 0h0m1 0h0m1 0h0m1 0h0m1 0h0m2 0h0m1 0h0m1 0h0m1 0h0m1 0h0m1 0h0m1 0h0m1 0h0m1 0h0m2 0h0m1 0h0m2 0h0m1 0h0m1 0h0m1 0h0m1 0h0m2 0h0m3 0h0m2 0h0m1 0h0m1 0h0m1 0h0m1 0h0m1 0h0m1 0h0m1 0h0m1 0h0m1 0h0m1 0h0m1 0h0m3 0h0m2 0h0m1 0h0m1 0h0m2 0h0m1 0h0m1 0h0m1 0h0m1 0h0m1 0h0m1 0h0m2 0h0m1 0h0m1 0h0m1 0h0m1 0h0m1 0h0m3 0h0m1 0h0m6 0h0m1 0h0m1 0h0m1 0h0m1 0h0m2 0h0m2 0h0m1 0h0m5 0h0m2 0h0m1 0h0m1 0h0m1 0h0m4 0h0m9 0h0m2 0h0m1 0h0m1 0h0m1 0h0m1 0h0m1 0h0m2 0h0m2 0h0m2 0h0m7 0h0m2 0h0m3 0h0m6 0h0m4 0h0m2 0h0m2 0h0m1 0h0m2 0h0m62 0h0m15 0h0m7 0h0m1 0h0m3 0h0m7 0h0m2 0h0m2 0h0m-480 1h0m1 0h0m1 0h0m3 0h0m6 0h0m2 0h0m2 0h0m5 0h0m2 0h0m4 0h0m4 0h0m2 0h0m1 0h0m2 0h0m6 0h0m1 0h0m3 0h0m1 0h0m7 0h0m6 0h0m1 0h0m2 0h0m1 0h0m5 0h0m4 0h0m2 0h0m3 0h0m3 0h0m6 0h0m1 0h0m4 0h0m1 0h0m3 0h0m2 0h0m5 0h0m3 0h0m2 0h0m1 0h0m2 0h0m1 0h0m1 0h0m2 0h0m8 0h0m2 0h0m1 0h0m1 0h0m1 0h0m1 0h0m7 0h0m1 0h0m7 0h0m1 0h0m1 0h0m1 0h0m1 0h0m1 0h0m1 0h0m1 0h0m1 0h0m1 0h0m2 0h0m1 0h0m1 0h0m1 0h0m2 0h0m1 0h0m3 0h0m3 0h0m1 0h0m1 0h0m1 0h0m1 0h0m2 0h0m1 0h0m1 0h0m2 0h0m2 0h0m2 0h0m1 0h0m1 0h0m1 0h0m3 0h0m1 0h0m1 0h0m8 0h0m1 0h0m1 0h0m1 0h0m1 0h0m1 0h0m1 0h0m1 0h0m1 0h0m1 0h0m2 0h0m6 0h0m3 0h0m2 0h0m2 0h0m1 0h0m2 0h0m2 0h0m1 0h0m1 0h0m1 0h0m1 0h0m1 0h0m1 0h0m1 0h0m2 0h0m2 0h0m1 0h0m1 0h0m1 0h0m1 0h0m1 0h0m1 0h0m1 0h0m1 0h0m1 0h0m1 0h0m1 0h0m1 0h0m1 0h0m3 0h0m1 0h0m1 0h0m1 0h0m3 0h0m1 0h0m1 0h0m2 0h0m1 0h0m2 0h0m1 0h0m1 0h0m2 0h0m1 0h0m1 0h0m1 0h0m1 0h0m1 0h0m4 0h0m1 0h0m1 0h0m1 0h0m1 0h0m1 0h0m1 0h0m1 0h0m2 0h0m1 0h0m3 0h0m1 0h0m1 0h0m1 0h0m1 0h0m2 0h0m3 0h0m1 0h0m1 0h0m1 0h0m1 0h0m1 0h0m2 0h0m3 0h0m1 0h0m1 0h0m1 0h0m1 0h0m1 0h0m6 0h0m1 0h0m2 0h0m1 0h0m1 0h0m1 0h0m14 0h0m1 0h0m1 0h0m1 0h0m2 0h0m1 0h0m1 0h0m1 0h0m4 0h0m2 0h0m3 0h0m6 0h0m1 0h0m10 0h0m5 0h0m1 0h0m62 0h0m4 0h0m5 0h0m6 0h0m5 0h0m13 0h0m2 0h0m9 0h0m1 0h0m-492 1h0m8 0h0m4 0h0m8 0h0m6 0h0m1 0h0m1 0h0m1 0h0m9 0h0m3 0h0m2 0h0m2 0h0m2 0h0m2 0h0m4 0h0m3 0h0m7 0h0m1 0h0m1 0h0m5 0h0m3 0h0m1 0h0m13 0h0m4 0h0m1 0h0m1 0h0m2 0h0m6 0h0m1 0h0m1 0h0m1 0h0m2 0h0m4 0h0m4 0h0m1 0h0m4 0h0m2 0h0m1 0h0m4 0h0m1 0h0m1 0h0m4 0h0m1 0h0m1 0h0m3 0h0m2 0h0m3 0h0m3 0h0m1 0h0m2 0h0m1 0h0m1 0h0m1 0h0m2 0h0m1 0h0m1 0h0m1 0h0m1 0h0m1 0h0m5 0h0m1 0h0m2 0h0m1 0h0m1 0h0m1 0h0m1 0h0m1 0h0m1 0h0m2 0h0m1 0h0m3 0h0m1 0h0m2 0h0m1 0h0m2 0h0m1 0h0m1 0h0m1 0h0m1 0h0m2 0h0m10 0h0m1 0h0m1 0h0m1 0h0m1 0h0m3 0h0m1 0h0m1 0h0m1 0h0m1 0h0m6 0h0m1 0h0m2 0h0m2 0h0m2 0h0m1 0h0m2 0h0m1 0h0m1 0h0m1 0h0m1 0h0m1 0h0m1 0h0m2 0h0m1 0h0m1 0h0m1 0h0m2 0h0m1 0h0m1 0h0m1 0h0m1 0h0m1 0h0m2 0h0m1 0h0m1 0h0m1 0h0m4 0h0m1 0h0m1 0h0m1 0h0m1 0h0m2 0h0m1 0h0m1 0h0m1 0h0m2 0h0m1 0h0m2 0h0m1 0h0m1 0h0m1 0h0m1 0h0m1 0h0m1 0h0m1 0h0m2 0h0m1 0h0m1 0h0m3 0h0m1 0h0m1 0h0m1 0h0m1 0h0m1 0h0m1 0h0m1 0h0m2 0h0m1 0h0m1 0h0m2 0h0m1 0h0m3 0h0m1 0h0m1 0h0m1 0h0m3 0h0m1 0h0m1 0h0m1 0h0m2 0h0m2 0h0m1 0h0m2 0h0m1 0h0m1 0h0m1 0h0m2 0h0m2 0h0m1 0h0m2 0h0m1 0h0m3 0h0m2 0h0m3 0h0m1 0h0m8 0h0m2 0h0m3 0h0m2 0h0m3 0h0m3 0h0m1 0h0m1 0h0m1 0h0m1 0h0m1 0h0m2 0h0m1 0h0m1 0h0m1 0h0m2 0h0m3 0h0m2 0h0m1 0h0m3 0h0m4 0h0m2 0h0m1 0h0m1 0h0m67 0h0m3 0h0m2 0h0m4 0h0m13 0h0m16 0h0m-488 1h0m1 0h0m4 0h0m2 0h0m6 0h0m7 0h0m7 0h0m3 0h0m6 0h0m9 0h0m8 0h0m1 0h0m1 0h0m4 0h0m4 0h0m3 0h0m3 0h0m2 0h0m1 0h0m5 0h0m1 0h0m1 0h0m1 0h0m3 0h0m2 0h0m1 0h0m4 0h0m2 0h0m5 0h0m1 0h0m1 0h0m1 0h0m2 0h0m4 0h0m2 0h0m4 0h0m2 0h0m2 0h0m3 0h0m1 0h0m3 0h0m3 0h0m4 0h0m1 0h0m3 0h0m1 0h0m1 0h0m1 0h0m3 0h0m2 0h0m2 0h0m2 0h0m1 0h0m2 0h0m1 0h0m2 0h0m1 0h0m1 0h0m1 0h0m2 0h0m1 0h0m3 0h0m1 0h0m1 0h0m2 0h0m1 0h0m1 0h0m1 0h0m4 0h0m1 0h0m1 0h0m3 0h0m1 0h0m1 0h0m1 0h0m2 0h0m1 0h0m2 0h0m1 0h0m3 0h0m1 0h0m8 0h0m1 0h0m1 0h0m1 0h0m1 0h0m1 0h0m1 0h0m1 0h0m1 0h0m1 0h0m1 0h0m7 0h0m1 0h0m2 0h0m1 0h0m1 0h0m2 0h0m3 0h0m1 0h0m2 0h0m1 0h0m1 0h0m1 0h0m1 0h0m1 0h0m1 0h0m1 0h0m3 0h0m1 0h0m2 0h0m1 0h0m1 0h0m2 0h0m1 0h0m1 0h0m1 0h0m1 0h0m2 0h0m1 0h0m1 0h0m1 0h0m2 0h0m1 0h0m1 0h0m1 0h0m1 0h0m1 0h0m1 0h0m2 0h0m1 0h0m3 0h0m1 0h0m1 0h0m1 0h0m2 0h0m1 0h0m4 0h0m2 0h0m1 0h0m1 0h0m1 0h0m1 0h0m1 0h0m1 0h0m1 0h0m1 0h0m1 0h0m2 0h0m1 0h0m3 0h0m1 0h0m1 0h0m1 0h0m1 0h0m1 0h0m1 0h0m1 0h0m1 0h0m5 0h0m1 0h0m1 0h0m1 0h0m1 0h0m1 0h0m1 0h0m1 0h0m1 0h0m1 0h0m1 0h0m1 0h0m1 0h0m1 0h0m1 0h0m1 0h0m1 0h0m2 0h0m1 0h0m1 0h0m4 0h0m1 0h0m8 0h0m1 0h0m5 0h0m3 0h0m1 0h0m4 0h0m2 0h0m2 0h0m2 0h0m10 0h0m4 0h0m1 0h0m2 0h0m5 0h0m66 0h0m2 0h0m3 0h0m2 0h0m13 0h0m-471 1h0m12 0h0m6 0h0m1 0h0m1 0h0m1 0h0m10 0h0m2 0h0m2 0h0m4 0h0m2 0h0m1 0h0m4 0h0m4 0h0m3 0h0m4 0h0m2 0h0m12 0h0m3 0h0m4 0h0m1 0h0m5 0h0m3 0h0m1 0h0m1 0h0m1 0h0m4 0h0m1 0h0m2 0h0m3 0h0m4 0h0m8 0h0m1 0h0m3 0h0m4 0h0m1 0h0m1 0h0m3 0h0m2 0h0m2 0h0m2 0h0m5 0h0m2 0h0m2 0h0m5 0h0m1 0h0m1 0h0m2 0h0m1 0h0m1 0h0m1 0h0m1 0h0m2 0h0m2 0h0m2 0h0m1 0h0m4 0h0m1 0h0m1 0h0m1 0h0m1 0h0m1 0h0m1 0h0m2 0h0m1 0h0m1 0h0m1 0h0m1 0h0m1 0h0m1 0h0m1 0h0m1 0h0m4 0h0m1 0h0m1 0h0m1 0h0m1 0h0m2 0h0m1 0h0m1 0h0m9 0h0m1 0h0m1 0h0m1 0h0m1 0h0m1 0h0m1 0h0m1 0h0m1 0h0m1 0h0m1 0h0m6 0h0m1 0h0m1 0h0m2 0h0m2 0h0m1 0h0m1 0h0m1 0h0m1 0h0m1 0h0m1 0h0m1 0h0m1 0h0m1 0h0m1 0h0m2 0h0m1 0h0m1 0h0m1 0h0m1 0h0m1 0h0m1 0h0m1 0h0m1 0h0m1 0h0m1 0h0m1 0h0m1 0h0m1 0h0m2 0h0m1 0h0m2 0h0m1 0h0m1 0h0m1 0h0m1 0h0m2 0h0m1 0h0m1 0h0m1 0h0m2 0h0m2 0h0m1 0h0m1 0h0m1 0h0m1 0h0m2 0h0m1 0h0m1 0h0m1 0h0m1 0h0m2 0h0m2 0h0m1 0h0m1 0h0m1 0h0m1 0h0m1 0h0m3 0h0m1 0h0m1 0h0m1 0h0m1 0h0m1 0h0m1 0h0m4 0h0m1 0h0m1 0h0m1 0h0m1 0h0m3 0h0m1 0h0m1 0h0m1 0h0m2 0h0m1 0h0m2 0h0m1 0h0m1 0h0m2 0h0m1 0h0m4 0h0m1 0h0m1 0h0m1 0h0m4 0h0m2 0h0m1 0h0m1 0h0m1 0h0m9 0h0m1 0h0m3 0h0m1 0h0m1 0h0m2 0h0m1 0h0m3 0h0m1 0h0m1 0h0m1 0h0m1 0h0m1 0h0m6 0h0m4 0h0m1 0h0m2 0h0m2 0h0m5 0h0m2 0h0m1 0h0m2 0h0m69 0h0m4 0h0m14 0h0m13 0h0m6 0h0m-480 1h0m3 0h0m7 0h0m3 0h0m1 0h0m4 0h0m4 0h0m4 0h0m1 0h0m1 0h0m2 0h0m7 0h0m1 0h0m4 0h0m1 0h0m1 0h0m4 0h0m3 0h0m1 0h0m1 0h0m6 0h0m4 0h0m4 0h0m2 0h0m1 0h0m1 0h0m5 0h0m2 0h0m1 0h0m4 0h0m1 0h0m1 0h0m5 0h0m2 0h0m1 0h0m3 0h0m5 0h0m2 0h0m1 0h0m2 0h0m1 0h0m1 0h0m2 0h0m6 0h0m3 0h0m2 0h0m2 0h0m2 0h0m2 0h0m3 0h0m1 0h0m2 0h0m1 0h0m1 0h0m2 0h0m2 0h0m1 0h0m2 0h0m2 0h0m1 0h0m3 0h0m1 0h0m2 0h0m1 0h0m1 0h0m2 0h0m1 0h0m1 0h0m2 0h0m1 0h0m2 0h0m1 0h0m1 0h0m1 0h0m1 0h0m1 0h0m1 0h0m3 0h0m1 0h0m1 0h0m2 0h0m2 0h0m1 0h0m1 0h0m1 0h0m9 0h0m1 0h0m1 0h0m1 0h0m1 0h0m1 0h0m1 0h0m1 0h0m1 0h0m2 0h0m1 0h0m7 0h0m3 0h0m1 0h0m1 0h0m1 0h0m2 0h0m1 0h0m1 0h0m2 0h0m1 0h0m2 0h0m2 0h0m1 0h0m1 0h0m1 0h0m1 0h0m1 0h0m1 0h0m1 0h0m1 0h0m1 0h0m2 0h0m1 0h0m1 0h0m1 0h0m1 0h0m1 0h0m1 0h0m1 0h0m1 0h0m1 0h0m1 0h0m1 0h0m1 0h0m1 0h0m1 0h0m1 0h0m1 0h0m3 0h0m1 0h0m1 0h0m1 0h0m1 0h0m1 0h0m1 0h0m2 0h0m2 0h0m1 0h0m1 0h0m1 0h0m1 0h0m2 0h0m3 0h0m1 0h0m1 0h0m2 0h0m1 0h0m1 0h0m2 0h0m1 0h0m1 0h0m2 0h0m1 0h0m1 0h0m1 0h0m1 0h0m1 0h0m1 0h0m2 0h0m2 0h0m1 0h0m1 0h0m1 0h0m2 0h0m1 0h0m1 0h0m1 0h0m1 0h0m2 0h0m3 0h0m2 0h0m1 0h0m3 0h0m4 0h0m2 0h0m2 0h0m1 0h0m1 0h0m1 0h0m1 0h0m3 0h0m3 0h0m1 0h0m1 0h0m4 0h0m2 0h0m3 0h0m2 0h0m1 0h0m3 0h0m1 0h0m1 0h0m1 0h0m1 0h0m1 0h0m1 0h0m2 0h0m4 0h0m6 0h0m2 0h0m1 0h0m1 0h0m65 0h0m4 0h0m6 0h0m6 0h0m2 0h0m22 0h0m2 0h0m-481 1h0m1 0h0m5 0h0m1 0h0m3 0h0m7 0h0m1 0h0m7 0h0m2 0h0m5 0h0m2 0h0m8 0h0m2 0h0m2 0h0m3 0h0m4 0h0m1 0h0m1 0h0m2 0h0m2 0h0m1 0h0m8 0h0m2 0h0m10 0h0m1 0h0m1 0h0m1 0h0m2 0h0m2 0h0m1 0h0m1 0h0m1 0h0m2 0h0m1 0h0m2 0h0m2 0h0m1 0h0m3 0h0m3 0h0m1 0h0m1 0h0m1 0h0m1 0h0m3 0h0m4 0h0m3 0h0m1 0h0m1 0h0m2 0h0m3 0h0m1 0h0m5 0h0m1 0h0m1 0h0m1 0h0m1 0h0m1 0h0m1 0h0m3 0h0m1 0h0m3 0h0m1 0h0m1 0h0m1 0h0m1 0h0m1 0h0m2 0h0m1 0h0m1 0h0m1 0h0m1 0h0m1 0h0m1 0h0m1 0h0m1 0h0m1 0h0m1 0h0m1 0h0m1 0h0m2 0h0m1 0h0m1 0h0m2 0h0m3 0h0m1 0h0m3 0h0m1 0h0m1 0h0m1 0h0m1 0h0m1 0h0m1 0h0m1 0h0m8 0h0m1 0h0m1 0h0m1 0h0m1 0h0m1 0h0m2 0h0m1 0h0m1 0h0m1 0h0m1 0h0m7 0h0m1 0h0m1 0h0m1 0h0m1 0h0m1 0h0m1 0h0m2 0h0m1 0h0m1 0h0m1 0h0m1 0h0m1 0h0m1 0h0m1 0h0m1 0h0m2 0h0m1 0h0m2 0h0m1 0h0m1 0h0m1 0h0m1 0h0m1 0h0m1 0h0m2 0h0m1 0h0m1 0h0m1 0h0m1 0h0m1 0h0m1 0h0m1 0h0m1 0h0m1 0h0m2 0h0m2 0h0m2 0h0m1 0h0m1 0h0m1 0h0m1 0h0m1 0h0m1 0h0m1 0h0m1 0h0m1 0h0m1 0h0m1 0h0m1 0h0m2 0h0m2 0h0m2 0h0m1 0h0m1 0h0m3 0h0m1 0h0m1 0h0m1 0h0m2 0h0m2 0h0m1 0h0m1 0h0m1 0h0m3 0h0m1 0h0m2 0h0m1 0h0m1 0h0m1 0h0m1 0h0m2 0h0m2 0h0m2 0h0m1 0h0m3 0h0m2 0h0m1 0h0m2 0h0m1 0h0m1 0h0m2 0h0m1 0h0m1 0h0m1 0h0m1 0h0m4 0h0m1 0h0m1 0h0m1 0h0m3 0h0m1 0h0m2 0h0m2 0h0m1 0h0m1 0h0m4 0h0m1 0h0m1 0h0m4 0h0m1 0h0m2 0h0m2 0h0m4 0h0m1 0h0m2 0h0m2 0h0m2 0h0m1 0h0m1 0h0m4 0h0m2 0h0m4 0h0m2 0h0m62 0h0m8 0h0m5 0h0m25 0h0m2 0h0m-487 1h0m7 0h0m6 0h0m3 0h0m5 0h0m10 0h0m3 0h0m1 0h0m6 0h0m7 0h0m15 0h0m1 0h0m1 0h0m5 0h0m1 0h0m4 0h0m1 0h0m4 0h0m4 0h0m6 0h0m1 0h0m1 0h0m4 0h0m8 0h0m1 0h0m1 0h0m2 0h0m1 0h0m2 0h0m1 0h0m3 0h0m1 0h0m2 0h0m1 0h0m1 0h0m1 0h0m8 0h0m1 0h0m1 0h0m1 0h0m1 0h0m5 0h0m2 0h0m5 0h0m2 0h0m1 0h0m2 0h0m1 0h0m1 0h0m1 0h0m2 0h0m1 0h0m1 0h0m2 0h0m1 0h0m1 0h0m1 0h0m2 0h0m1 0h0m1 0h0m1 0h0m3 0h0m1 0h0m1 0h0m1 0h0m1 0h0m1 0h0m1 0h0m1 0h0m1 0h0m1 0h0m1 0h0m1 0h0m1 0h0m2 0h0m2 0h0m1 0h0m1 0h0m1 0h0m1 0h0m2 0h0m1 0h0m2 0h0m2 0h0m1 0h0m2 0h0m1 0h0m1 0h0m1 0h0m1 0h0m1 0h0m1 0h0m1 0h0m1 0h0m1 0h0m1 0h0m1 0h0m1 0h0m2 0h0m1 0h0m2 0h0m1 0h0m1 0h0m5 0h0m3 0h0m1 0h0m1 0h0m1 0h0m1 0h0m1 0h0m1 0h0m2 0h0m1 0h0m2 0h0m1 0h0m1 0h0m2 0h0m1 0h0m1 0h0m1 0h0m1 0h0m1 0h0m1 0h0m1 0h0m1 0h0m1 0h0m1 0h0m1 0h0m5 0h0m1 0h0m1 0h0m1 0h0m1 0h0m2 0h0m1 0h0m1 0h0m1 0h0m2 0h0m1 0h0m1 0h0m1 0h0m2 0h0m1 0h0m1 0h0m1 0h0m3 0h0m1 0h0m2 0h0m1 0h0m1 0h0m1 0h0m1 0h0m1 0h0m1 0h0m1 0h0m2 0h0m3 0h0m1 0h0m3 0h0m1 0h0m1 0h0m1 0h0m1 0h0m1 0h0m1 0h0m1 0h0m1 0h0m1 0h0m1 0h0m2 0h0m1 0h0m2 0h0m1 0h0m2 0h0m1 0h0m2 0h0m2 0h0m3 0h0m2 0h0m1 0h0m2 0h0m1 0h0m2 0h0m3 0h0m2 0h0m2 0h0m9 0h0m1 0h0m1 0h0m1 0h0m3 0h0m1 0h0m3 0h0m2 0h0m1 0h0m1 0h0m3 0h0m1 0h0m2 0h0m1 0h0m7 0h0m1 0h0m1 0h0m2 0h0m3 0h0m63 0h0m14 0h0m12 0h0m7 0h0m-458 1h0m3 0h0m1 0h0m3 0h0m4 0h0m1 0h0m7 0h0m3 0h0m1 0h0m2 0h0m3 0h0m2 0h0m15 0h0m1 0h0m5 0h0m2 0h0m4 0h0m2 0h0m2 0h0m2 0h0m4 0h0m1 0h0m4 0h0m3 0h0m1 0h0m1 0h0m1 0h0m2 0h0m6 0h0m1 0h0m2 0h0m1 0h0m8 0h0m5 0h0m1 0h0m1 0h0m1 0h0m2 0h0m3 0h0m1 0h0m1 0h0m1 0h0m1 0h0m4 0h0m1 0h0m3 0h0m1 0h0m1 0h0m1 0h0m1 0h0m1 0h0m1 0h0m1 0h0m2 0h0m1 0h0m1 0h0m2 0h0m1 0h0m1 0h0m1 0h0m1 0h0m1 0h0m1 0h0m2 0h0m2 0h0m1 0h0m2 0h0m1 0h0m1 0h0m1 0h0m1 0h0m2 0h0m1 0h0m1 0h0m1 0h0m1 0h0m2 0h0m2 0h0m1 0h0m1 0h0m2 0h0m1 0h0m1 0h0m3 0h0m2 0h0m1 0h0m1 0h0m1 0h0m1 0h0m1 0h0m1 0h0m1 0h0m1 0h0m1 0h0m1 0h0m1 0h0m1 0h0m1 0h0m1 0h0m1 0h0m1 0h0m2 0h0m2 0h0m1 0h0m1 0h0m1 0h0m1 0h0m1 0h0m1 0h0m1 0h0m1 0h0m1 0h0m1 0h0m1 0h0m1 0h0m1 0h0m1 0h0m1 0h0m2 0h0m2 0h0m2 0h0m1 0h0m2 0h0m1 0h0m2 0h0m2 0h0m1 0h0m1 0h0m1 0h0m1 0h0m2 0h0m1 0h0m1 0h0m4 0h0m3 0h0m1 0h0m2 0h0m1 0h0m1 0h0m1 0h0m1 0h0m1 0h0m2 0h0m1 0h0m1 0h0m1 0h0m1 0h0m1 0h0m1 0h0m1 0h0m1 0h0m1 0h0m2 0h0m1 0h0m3 0h0m2 0h0m1 0h0m2 0h0m1 0h0m1 0h0m1 0h0m1 0h0m1 0h0m1 0h0m1 0h0m1 0h0m1 0h0m1 0h0m1 0h0m1 0h0m2 0h0m1 0h0m1 0h0m5 0h0m1 0h0m1 0h0m1 0h0m1 0h0m1 0h0m4 0h0m2 0h0m1 0h0m3 0h0m2 0h0m2 0h0m1 0h0m1 0h0m3 0h0m1 0h0m1 0h0m1 0h0m3 0h0m1 0h0m1 0h0m2 0h0m3 0h0m2 0h0m1 0h0m2 0h0m4 0h0m2 0h0m2 0h0m7 0h0m1 0h0m1 0h0m1 0h0m1 0h0m1 0h0m1 0h0m1 0h0m2 0h0m3 0h0m1 0h0m3 0h0m64 0h0m4 0h0m3 0h0m3 0h0m23 0h0m5 0h0m4 0h0m1 0h0m-490 1h0m1 0h0m9 0h0m3 0h0m36 0h0m2 0h0m1 0h0m8 0h0m1 0h0m5 0h0m2 0h0m8 0h0m2 0h0m2 0h0m3 0h0m3 0h0m11 0h0m2 0h0m3 0h0m1 0h0m9 0h0m1 0h0m2 0h0m2 0h0m3 0h0m1 0h0m1 0h0m1 0h0m1 0h0m1 0h0m1 0h0m1 0h0m2 0h0m1 0h0m1 0h0m5 0h0m3 0h0m1 0h0m4 0h0m2 0h0m2 0h0m2 0h0m2 0h0m1 0h0m1 0h0m1 0h0m1 0h0m1 0h0m1 0h0m1 0h0m4 0h0m1 0h0m2 0h0m1 0h0m1 0h0m1 0h0m2 0h0m1 0h0m1 0h0m3 0h0m3 0h0m1 0h0m1 0h0m2 0h0m5 0h0m1 0h0m2 0h0m1 0h0m1 0h0m1 0h0m2 0h0m1 0h0m1 0h0m1 0h0m1 0h0m1 0h0m3 0h0m1 0h0m1 0h0m1 0h0m1 0h0m1 0h0m1 0h0m1 0h0m1 0h0m1 0h0m1 0h0m1 0h0m2 0h0m2 0h0m1 0h0m1 0h0m1 0h0m1 0h0m1 0h0m1 0h0m1 0h0m1 0h0m1 0h0m1 0h0m4 0h0m1 0h0m1 0h0m3 0h0m1 0h0m1 0h0m1 0h0m1 0h0m1 0h0m1 0h0m2 0h0m1 0h0m1 0h0m1 0h0m1 0h0m5 0h0m1 0h0m3 0h0m1 0h0m1 0h0m2 0h0m1 0h0m2 0h0m2 0h0m1 0h0m1 0h0m1 0h0m1 0h0m1 0h0m1 0h0m1 0h0m1 0h0m1 0h0m1 0h0m2 0h0m1 0h0m1 0h0m1 0h0m1 0h0m3 0h0m1 0h0m2 0h0m1 0h0m2 0h0m1 0h0m1 0h0m1 0h0m1 0h0m1 0h0m3 0h0m1 0h0m1 0h0m3 0h0m5 0h0m1 0h0m1 0h0m2 0h0m1 0h0m2 0h0m1 0h0m1 0h0m1 0h0m2 0h0m1 0h0m2 0h0m1 0h0m1 0h0m4 0h0m9 0h0m2 0h0m1 0h0m1 0h0m4 0h0m4 0h0m2 0h0m3 0h0m1 0h0m1 0h0m3 0h0m2 0h0m1 0h0m2 0h0m1 0h0m3 0h0m1 0h0m7 0h0m3 0h0m64 0h0m3 0h0m10 0h0m2 0h0m9 0h0m8 0h0m1 0h0m5 0h0m-484 1h0m1 0h0m2 0h0m1 0h0m4 0h0m6 0h0m59 0h0m1 0h0m2 0h0m2 0h0m2 0h0m4 0h0m4 0h0m2 0h0m1 0h0m2 0h0m1 0h0m1 0h0m1 0h0m4 0h0m1 0h0m1 0h0m3 0h0m1 0h0m1 0h0m1 0h0m1 0h0m2 0h0m2 0h0m1 0h0m3 0h0m3 0h0m1 0h0m1 0h0m1 0h0m2 0h0m1 0h0m2 0h0m1 0h0m1 0h0m1 0h0m1 0h0m1 0h0m1 0h0m14 0h0m1 0h0m1 0h0m1 0h0m6 0h0m3 0h0m1 0h0m1 0h0m1 0h0m1 0h0m1 0h0m1 0h0m2 0h0m1 0h0m1 0h0m1 0h0m2 0h0m1 0h0m1 0h0m1 0h0m1 0h0m1 0h0m1 0h0m1 0h0m1 0h0m2 0h0m5 0h0m3 0h0m1 0h0m1 0h0m1 0h0m1 0h0m1 0h0m1 0h0m1 0h0m1 0h0m1 0h0m1 0h0m1 0h0m1 0h0m1 0h0m1 0h0m1 0h0m1 0h0m1 0h0m1 0h0m1 0h0m1 0h0m1 0h0m1 0h0m3 0h0m1 0h0m1 0h0m1 0h0m2 0h0m4 0h0m1 0h0m1 0h0m1 0h0m5 0h0m1 0h0m1 0h0m2 0h0m1 0h0m1 0h0m3 0h0m1 0h0m2 0h0m1 0h0m1 0h0m1 0h0m2 0h0m1 0h0m1 0h0m1 0h0m1 0h0m1 0h0m1 0h0m2 0h0m1 0h0m1 0h0m3 0h0m1 0h0m1 0h0m1 0h0m1 0h0m2 0h0m1 0h0m1 0h0m2 0h0m1 0h0m1 0h0m1 0h0m2 0h0m1 0h0m1 0h0m1 0h0m4 0h0m1 0h0m1 0h0m1 0h0m2 0h0m3 0h0m1 0h0m1 0h0m1 0h0m1 0h0m1 0h0m1 0h0m1 0h0m1 0h0m1 0h0m1 0h0m1 0h0m1 0h0m4 0h0m3 0h0m1 0h0m3 0h0m2 0h0m2 0h0m3 0h0m2 0h0m1 0h0m1 0h0m2 0h0m2 0h0m2 0h0m5 0h0m1 0h0m1 0h0m1 0h0m2 0h0m1 0h0m4 0h0m1 0h0m5 0h0m2 0h0m2 0h0m2 0h0m3 0h0m2 0h0m6 0h0m2 0h0m5 0h0m5 0h0m62 0h0m16 0h0m4 0h0m6 0h0m2 0h0m1 0h0m2 0h0m12 0h0m-490 1h0m4 0h0m1 0h0m1 0h0m7 0h0m1 0h0m1 0h0m57 0h0m1 0h0m1 0h0m2 0h0m3 0h0m3 0h0m2 0h0m3 0h0m1 0h0m1 0h0m2 0h0m1 0h0m1 0h0m1 0h0m2 0h0m1 0h0m1 0h0m1 0h0m1 0h0m1 0h0m4 0h0m2 0h0m1 0h0m1 0h0m1 0h0m1 0h0m1 0h0m4 0h0m4 0h0m3 0h0m3 0h0m4 0h0m1 0h0m2 0h0m1 0h0m16 0h0m1 0h0m1 0h0m1 0h0m1 0h0m5 0h0m1 0h0m1 0h0m1 0h0m1 0h0m1 0h0m1 0h0m2 0h0m1 0h0m1 0h0m1 0h0m1 0h0m13 0h0m1 0h0m5 0h0m1 0h0m1 0h0m1 0h0m1 0h0m1 0h0m1 0h0m1 0h0m1 0h0m1 0h0m1 0h0m2 0h0m1 0h0m1 0h0m1 0h0m1 0h0m1 0h0m1 0h0m1 0h0m1 0h0m1 0h0m1 0h0m1 0h0m1 0h0m1 0h0m11 0h0m2 0h0m1 0h0m1 0h0m4 0h0m1 0h0m1 0h0m1 0h0m1 0h0m1 0h0m2 0h0m1 0h0m1 0h0m1 0h0m1 0h0m1 0h0m1 0h0m1 0h0m2 0h0m1 0h0m3 0h0m1 0h0m1 0h0m1 0h0m2 0h0m1 0h0m1 0h0m6 0h0m4 0h0m3 0h0m4 0h0m1 0h0m1 0h0m1 0h0m1 0h0m1 0h0m2 0h0m2 0h0m1 0h0m1 0h0m2 0h0m4 0h0m1 0h0m1 0h0m1 0h0m1 0h0m1 0h0m2 0h0m1 0h0m1 0h0m1 0h0m1 0h0m1 0h0m4 0h0m1 0h0m1 0h0m3 0h0m1 0h0m1 0h0m2 0h0m3 0h0m1 0h0m2 0h0m3 0h0m2 0h0m1 0h0m2 0h0m1 0h0m5 0h0m1 0h0m1 0h0m2 0h0m3 0h0m4 0h0m2 0h0m1 0h0m1 0h0m2 0h0m2 0h0m2 0h0m1 0h0m3 0h0m1 0h0m1 0h0m3 0h0m2 0h0m2 0h0m1 0h0m3 0h0m1 0h0m3 0h0m66 0h0m1 0h0m9 0h0m3 0h0m9 0h0m11 0h0m-481 1h0m4 0h0m7 0h0m2 0h0m2 0h0m59 0h0m2 0h0m6 0h0m1 0h0m1 0h0m4 0h0m3 0h0m1 0h0m4 0h0m1 0h0m1 0h0m1 0h0m1 0h0m4 0h0m2 0h0m1 0h0m9 0h0m1 0h0m1 0h0m1 0h0m3 0h0m3 0h0m2 0h0m2 0h0m1 0h0m1 0h0m1 0h0m3 0h0m1 0h0m14 0h0m1 0h0m1 0h0m1 0h0m1 0h0m5 0h0m2 0h0m2 0h0m1 0h0m1 0h0m1 0h0m1 0h0m1 0h0m1 0h0m1 0h0m1 0h0m12 0h0m1 0h0m1 0h0m5 0h0m1 0h0m3 0h0m1 0h0m1 0h0m1 0h0m1 0h0m1 0h0m1 0h0m1 0h0m1 0h0m1 0h0m1 0h0m1 0h0m1 0h0m1 0h0m1 0h0m1 0h0m1 0h0m1 0h0m1 0h0m2 0h0m1 0h0m11 0h0m2 0h0m1 0h0m6 0h0m1 0h0m1 0h0m1 0h0m1 0h0m1 0h0m1 0h0m2 0h0m1 0h0m1 0h0m12 0h0m3 0h0m1 0h0m4 0h0m2 0h0m2 0h0m1 0h0m1 0h0m1 0h0m2 0h0m1 0h0m3 0h0m2 0h0m2 0h0m1 0h0m1 0h0m1 0h0m2 0h0m26 0h0m1 0h0m2 0h0m2 0h0m1 0h0m1 0h0m2 0h0m1 0h0m1 0h0m1 0h0m4 0h0m3 0h0m2 0h0m2 0h0m1 0h0m1 0h0m1 0h0m2 0h0m2 0h0m2 0h0m2 0h0m3 0h0m3 0h0m1 0h0m1 0h0m5 0h0m2 0h0m5 0h0m1 0h0m1 0h0m1 0h0m5 0h0m1 0h0m1 0h0m6 0h0m1 0h0m1 0h0m66 0h0m2 0h0m1 0h0m14 0h0m2 0h0m6 0h0m1 0h0m14 0h0m-491 1h0m2 0h0m1 0h0m13 0h0m2 0h0m58 0h0m1 0h0m1 0h0m1 0h0m2 0h0m2 0h0m1 0h0m3 0h0m2 0h0m4 0h0m2 0h0m10 0h0m1 0h0m1 0h0m1 0h0m1 0h0m2 0h0m1 0h0m3 0h0m1 0h0m1 0h0m1 0h0m1 0h0m3 0h0m1 0h0m1 0h0m1 0h0m2 0h0m1 0h0m1 0h0m3 0h0m1 0h0m2 0h0m1 0h0m24 0h0m1 0h0m3 0h0m2 0h0m1 0h0m1 0h0m1 0h0m2 0h0m12 0h0m2 0h0m4 0h0m1 0h0m1 0h0m2 0h0m1 0h0m1 0h0m1 0h0m1 0h0m1 0h0m1 0h0m1 0h0m1 0h0m2 0h0m1 0h0m1 0h0m1 0h0m2 0h0m1 0h0m1 0h0m1 0h0m1 0h0m2 0h0m12 0h0m1 0h0m3 0h0m4 0h0m1 0h0m1 0h0m1 0h0m2 0h0m2 0h0m1 0h0m1 0h0m3 0h0m11 0h0m1 0h0m1 0h0m2 0h0m4 0h0m4 0h0m1 0h0m1 0h0m1 0h0m1 0h0m1 0h0m3 0h0m4 0h0m1 0h0m1 0h0m1 0h0m1 0h0m1 0h0m1 0h0m1 0h0m25 0h0m1 0h0m1 0h0m2 0h0m4 0h0m14 0h0m3 0h0m1 0h0m1 0h0m2 0h0m4 0h0m1 0h0m1 0h0m3 0h0m1 0h0m1 0h0m3 0h0m4 0h0m2 0h0m1 0h0m3 0h0m2 0h0m1 0h0m1 0h0m1 0h0m2 0h0m2 0h0m1 0h0m2 0h0m8 0h0m61 0h0m19 0h0m14 0h0m7 0h0m2 0h0m-489 1h0m4 0h0m6 0h0m6 0h0m1 0h0m1 0h0m56 0h0m2 0h0m2 0h0m1 0h0m5 0h0m2 0h0m3 0h0m1 0h0m2 0h0m1 0h0m1 0h0m1 0h0m5 0h0m1 0h0m1 0h0m2 0h0m1 0h0m1 0h0m2 0h0m1 0h0m1 0h0m1 0h0m3 0h0m2 0h0m1 0h0m3 0h0m1 0h0m1 0h0m3 0h0m1 0h0m2 0h0m1 0h0m4 0h0m1 0h0m1 0h0m1 0h0m7 0h0m1 0h0m15 0h0m2 0h0m1 0h0m2 0h0m1 0h0m1 0h0m1 0h0m3 0h0m13 0h0m1 0h0m1 0h0m4 0h0m1 0h0m1 0h0m1 0h0m1 0h0m1 0h0m2 0h0m1 0h0m3 0h0m1 0h0m1 0h0m1 0h0m1 0h0m2 0h0m1 0h0m1 0h0m1 0h0m1 0h0m1 0h0m1 0h0m1 0h0m1 0h0m1 0h0m11 0h0m1 0h0m1 0h0m2 0h0m4 0h0m1 0h0m2 0h0m1 0h0m1 0h0m1 0h0m1 0h0m1 0h0m1 0h0m1 0h0m2 0h0m11 0h0m1 0h0m1 0h0m2 0h0m4 0h0m1 0h0m1 0h0m1 0h0m4 0h0m1 0h0m3 0h0m1 0h0m2 0h0m1 0h0m1 0h0m1 0h0m1 0h0m1 0h0m1 0h0m1 0h0m1 0h0m1 0h0m25 0h0m1 0h0m1 0h0m1 0h0m1 0h0m1 0h0m1 0h0m1 0h0m3 0h0m11 0h0m1 0h0m2 0h0m3 0h0m1 0h0m4 0h0m1 0h0m2 0h0m1 0h0m1 0h0m1 0h0m2 0h0m2 0h0m5 0h0m1 0h0m3 0h0m1 0h0m1 0h0m1 0h0m1 0h0m2 0h0m2 0h0m4 0h0m1 0h0m3 0h0m1 0h0m4 0h0m62 0h0m1 0h0m1 0h0m6 0h0m5 0h0m5 0h0m1 0h0m9 0h0m9 0h0m-483 1h0m7 0h0m1 0h0m7 0h0m58 0h0m2 0h0m6 0h0m2 0h0m1 0h0m1 0h0m1 0h0m2 0h0m1 0h0m1 0h0m1 0h0m2 0h0m1 0h0m2 0h0m7 0h0m2 0h0m1 0h0m3 0h0m2 0h0m1 0h0m2 0h0m1 0h0m3 0h0m2 0h0m3 0h0m4 0h0m2 0h0m2 0h0m2 0h0m1 0h0m11 0h0m1 0h0m17 0h0m2 0h0m1 0h0m1 0h0m1 0h0m2 0h0m5 0h0m1 0h0m1 0h0m12 0h0m1 0h0m1 0h0m1 0h0m1 0h0m1 0h0m1 0h0m1 0h0m1 0h0m1 0h0m1 0h0m1 0h0m1 0h0m1 0h0m1 0h0m4 0h0m1 0h0m1 0h0m1 0h0m2 0h0m1 0h0m7 0h0m13 0h0m1 0h0m3 0h0m1 0h0m1 0h0m1 0h0m1 0h0m1 0h0m1 0h0m2 0h0m11 0h0m1 0h0m1 0h0m6 0h0m1 0h0m1 0h0m1 0h0m1 0h0m2 0h0m1 0h0m2 0h0m1 0h0m1 0h0m2 0h0m2 0h0m5 0h0m1 0h0m1 0h0m1 0h0m26 0h0m1 0h0m1 0h0m1 0h0m1 0h0m1 0h0m3 0h0m1 0h0m11 0h0m2 0h0m3 0h0m7 0h0m6 0h0m4 0h0m2 0h0m4 0h0m1 0h0m1 0h0m3 0h0m3 0h0m3 0h0m5 0h0m4 0h0m3 0h0m62 0h0m1 0h0m1 0h0m5 0h0m6 0h0m1 0h0m12 0h0m-472 1h0m2 0h0m1 0h0m1 0h0m2 0h0m8 0h0m63 0h0m2 0h0m2 0h0m4 0h0m4 0h0m2 0h0m2 0h0m1 0h0m2 0h0m1 0h0m6 0h0m3 0h0m1 0h0m2 0h0m1 0h0m1 0h0m4 0h0m2 0h0m3 0h0m1 0h0m4 0h0m1 0h0m1 0h0m36 0h0m1 0h0m4 0h0m2 0h0m5 0h0m1 0h0m1 0h0m11 0h0m3 0h0m1 0h0m1 0h0m1 0h0m1 0h0m1 0h0m1 0h0m1 0h0m2 0h0m1 0h0m1 0h0m1 0h0m4 0h0m1 0h0m1 0h0m3 0h0m1 0h0m1 0h0m5 0h0m14 0h0m2 0h0m1 0h0m1 0h0m1 0h0m1 0h0m1 0h0m1 0h0m1 0h0m2 0h0m6 0h0m1 0h0m5 0h0m2 0h0m1 0h0m1 0h0m4 0h0m1 0h0m1 0h0m1 0h0m1 0h0m2 0h0m1 0h0m1 0h0m1 0h0m1 0h0m1 0h0m2 0h0m1 0h0m1 0h0m5 0h0m1 0h0m1 0h0m1 0h0m6 0h0m1 0h0m1 0h0m1 0h0m1 0h0m5 0h0m1 0h0m1 0h0m2 0h0m7 0h0m3 0h0m3 0h0m1 0h0m2 0h0m15 0h0m1 0h0m1 0h0m1 0h0m3 0h0m2 0h0m4 0h0m1 0h0m4 0h0m3 0h0m2 0h0m2 0h0m1 0h0m1 0h0m3 0h0m1 0h0m6 0h0m3 0h0m7 0h0m1 0h0m66 0h0m5 0h0m6 0h0m7 0h0m1 0h0m12 0h0m6 0h0m-477 1h0m1 0h0m4 0h0m59 0h0m2 0h0m3 0h0m5 0h0m1 0h0m2 0h0m3 0h0m1 0h0m1 0h0m2 0h0m1 0h0m4 0h0m4 0h0m1 0h0m1 0h0m1 0h0m4 0h0m1 0h0m4 0h0m1 0h0m1 0h0m1 0h0m44 0h0m2 0h0m1 0h0m2 0h0m2 0h0m1 0h0m5 0h0m2 0h0m130 0h0m1 0h0m1 0h0m2 0h0m1 0h0m2 0h0m3 0h0m1 0h0m2 0h0m2 0h0m11 0h0m1 0h0m2 0h0m2 0h0m4 0h0m2 0h0m1 0h0m2 0h0m2 0h0m3 0h0m2 0h0m3 0h0m2 0h0m1 0h0m1 0h0m1 0h0m1 0h0m1 0h0m1 0h0m5 0h0m1 0h0m3 0h0m5 0h0m1 0h0m1 0h0m2 0h0m1 0h0m1 0h0m65 0h0m2 0h0m2 0h0m6 0h0m2 0h0m14 0h0m1 0h0m12 0h0m-490 1h0m5 0h0m2 0h0m7 0h0m4 0h0m56 0h0m1 0h0m1 0h0m5 0h0m1 0h0m1 0h0m2 0h0m4 0h0m4 0h0m5 0h0m1 0h0m6 0h0m5 0h0m53 0h0m4 0h0m1 0h0m2 0h0m1 0h0m163 0h0m2 0h0m5 0h0m1 0h0m3 0h0m1 0h0m1 0h0m2 0h0m2 0h0m4 0h0m5 0h0m1 0h0m2 0h0m1 0h0m4 0h0m1 0h0m2 0h0m1 0h0m4 0h0m1 0h0m1 0h0m3 0h0m67 0h0m3 0h0m12 0h0m7 0h0m8 0h0m1 0h0m-479 1h0m4 0h0m1 0h0m6 0h0m1 0h0m4 0h0m56 0h0m2 0h0m3 0h0m6 0h0m3 0h0m4 0h0m1 0h0m3 0h0m1 0h0m5 0h0m235 0h0m1 0h0m1 0h0m1 0h0m1 0h0m1 0h0m3 0h0m1 0h0m3 0h0m3 0h0m1 0h0m2 0h0m1 0h0m2 0h0m1 0h0m2 0h0m2 0h0m2 0h0m1 0h0m1 0h0m2 0h0m3 0h0m1 0h0m2 0h0m1 0h0m4 0h0m1 0h0m2 0h0m3 0h0m92 0h0m14 0h0m2 0h0m-490 1h0m2 0h0m7 0h0m61 0h0m10 0h0m2 0h0m3 0h0m4 0h0m1 0h0m2 0h0m2 0h0m3 0h0m1 0h0m5 0h0m1 0h0m229 0h0m1 0h0m10 0h0m2 0h0m1 0h0m6 0h0m4 0h0m3 0h0m1 0h0m2 0h0m5 0h0m4 0h0m1 0h0m6 0h0m1 0h0m1 0h0m94 0h0m12 0h0m-486 1h0m1 0h0m1 0h0m2 0h0m68 0h0m6 0h0m1 0h0m1 0h0m3 0h0m4 0h0m3 0h0m3 0h0m3 0h0m1 0h0m6 0h0m227 0h0m1 0h0m2 0h0m1 0h0m1 0h0m4 0h0m1 0h0m1 0h0m2 0h0m2 0h0m1 0h0m2 0h0m1 0h0m1 0h0m3 0h0m1 0h0m3 0h0m3 0h0m1 0h0m2 0h0m1 0h0m3 0h0m1 0h0m2 0h0m1 0h0m1 0h0m2 0h0m2 0h0m3 0h0m1 0h0m1 0h0m84 0h0m5 0h0m6 0h0m8 0h0m-487 1h0m1 0h0m6 0h0m67 0h0m3 0h0m1 0h0m2 0h0m2 0h0m1 0h0m2 0h0m2 0h0m2 0h0m1 0h0m1 0h0m2 0h0m2 0h0m2 0h0m2 0h0m1 0h0m4 0h0m2 0h0m1 0h0m227 0h0m3 0h0m2 0h0m5 0h0m2 0h0m1 0h0m2 0h0m1 0h0m3 0h0m1 0h0m1 0h0m2 0h0m3 0h0m2 0h0m2 0h0m1 0h0m3 0h0m2 0h0m9 0h0m2 0h0m1 0h0m2 0h0m73 0h0m2 0h0m22 0h0m2 0h0m1 0h0m4 0h0m4 0h0m-492 1h0m3 0h0m5 0h0m1 0h0m63 0h0m1 0h0m1 0h0m1 0h0m2 0h0m5 0h0m3 0h0m1 0h0m3 0h0m2 0h0m2 0h0m3 0h0m2 0h0m2 0h0m4 0h0m1 0h0m1 0h0m227 0h0m1 0h0m1 0h0m1 0h0m2 0h0m1 0h0m1 0h0m1 0h0m2 0h0m3 0h0m4 0h0m1 0h0m2 0h0m3 0h0m1 0h0m1 0h0m1 0h0m1 0h0m1 0h0m2 0h0m1 0h0m1 0h0m1 0h0m4 0h0m1 0h0m2 0h0m2 0h0m2 0h0m2 0h0m1 0h0m81 0h0m1 0h0m2 0h0m12 0h0m1 0h0m10 0h0m2 0h0m-483 1h0m1 0h0m1 0h0m67 0h0m3 0h0m2 0h0m1 0h0m1 0h0m3 0h0m2 0h0m3 0h0m2 0h0m1 0h0m2 0h0m1 0h0m1 0h0m1 0h0m2 0h0m7 0h0m231 0h0m2 0h0m1 0h0m1 0h0m1 0h0m2 0h0m1 0h0m1 0h0m5 0h0m1 0h0m2 0h0m2 0h0m1 0h0m2 0h0m1 0h0m2 0h0m4 0h0m1 0h0m5 0h0m2 0h0m1 0h0m2 0h0m1 0h0m1 0h0m82 0h0m7 0h0m11 0h0m9 0h0m-489 1h0m3 0h0m69 0h0m2 0h0m1 0h0m4 0h0m5 0h0m2 0h0m3 0h0m1 0h0m1 0h0m4 0h0m1 0h0m2 0h0m1 0h0m242 0h0m1 0h0m1 0h0m2 0h0m1 0h0m1 0h0m2 0h0m2 0h0m4 0h0m1 0h0m4 0h0m1 0h0m4 0h0m1 0h0m7 0h0m84 0h0m16 0h0m6 0h0m3 0h0m4 0h0m-483 1h0m70 0h0m1 0h0m4 0h0m2 0h0m1 0h0m4 0h0m1 0h0m2 0h0m1 0h0m2 0h0m1 0h0m1 0h0m2 0h0m2 0h0m249 0h0m1 0h0m1 0h0m1 0h0m1 0h0m1 0h0m4 0h0m1 0h0m2 0h0m11 0h0m1 0h0m1 0h0m5 0h0m1 0h0m1 0h0m2 0h0m2 0h0m1 0h0m1 0h0m79 0h0m1 0h0m2 0h0m8 0h0m2 0h0m12 0h0m-479 1h0m63 0h0m6 0h0m2 0h0m4 0h0m2 0h0m1 0h0m1 0h0m1 0h0m3 0h0m2 0h0m1 0h0m254 0h0m1 0h0m1 0h0m1 0h0m2 0h0m5 0h0m2 0h0m3 0h0m3 0h0m4 0h0m4 0h0m3 0h0m2 0h0m82 0h0m2 0h0m1 0h0m7 0h0m2 0h0m2 0h0m14 0h0m-488 1h0m1 0h0m3 0h0m71 0h0m1 0h0m2 0h0m1 0h0m1 0h0m4 0h0m1 0h0m1 0h0m1 0h0m4 0h0m5 0h0m2 0h0m4 0h0m250 0h0m1 0h0m1 0h0m6 0h0m2 0h0m5 0h0m1 0h0m1 0h0m1 0h0m3 0h0m1 0h0m3 0h0m3 0h0m73 0h0m10 0h0m3 0h0m5 0h0m4 0h0m2 0h0m-478 1h0m8 0h0m63 0h0m1 0h0m2 0h0m2 0h0m7 0h0m3 0h0m2 0h0m2 0h0m1 0h0m2 0h0m1 0h0m1 0h0m1 0h0m1 0h0m2 0h0m258 0h0m4 0h0m3 0h0m1 0h0m1 0h0m2 0h0m3 0h0m1 0h0m1 0h0m1 0h0m1 0h0m5 0h0m1 0h0m76 0h0m1 0h0m13 0h0m2 0h0m-466 1h0m66 0h0m1 0h0m2 0h0m5 0h0m3 0h0m3 0h0m6 0h0m269 0h0m2 0h0m5 0h0m2 0h0m4 0h0m2 0h0m1 0h0m2 0h0m1 0h0m2 0h0m75 0h0m2 0h0m5 0h0m1 0h0m2 0h0m2 0h0m3 0h0m14 0h0m-487 1h0m6 0h0m69 0h0m3 0h0m1 0h0m2 0h0m6 0h0m2 0h0m3 0h0m1 0h0m274 0h0m6 0h0m3 0h0m2 0h0m5 0h0m76 0h0m3 0h0m9 0h0m-467 1h0m67 0h0m5 0h0m1 0h0m3 0h0m1 0h0m1 0h0m5 0h0m2 0h0m290 0h0m2 0h0m2 0h0m77 0h0m1 0h0m4 0h0m5 0h0m2 0h0m1 0h0m5 0h0m1 0h0m5 0h0m-479 1h0m1 0h0m66 0h0m1 0h0m4 0h0m1 0h0m4 0h0m1 0h0m290 0h0m2 0h0m4 0h0m2 0h0m2 0h0m73 0h0m2 0h0m1 0h0m3 0h0m3 0h0m4 0h0m2 0h0m5 0h0m4 0h0m6 0h0m-486 1h0m3 0h0m4 0h0m65 0h0m1 0h0m1 0h0m1 0h0m305 0h0m1 0h0m1 0h0m2 0h0m84 0h0m6 0h0m6 0h0m1 0h0m4 0h0m-103 1h0m1 0h0m1 0h0m1 0h0m3 0h0m2 0h0m66 0h0m1 0h0m3 0h0m2 0h0m7 0h0m5 0h0m2 0h0m5 0h0m5 0h0m-487 1h0m7 0h0m1 0h0m59 0h0m319 0h0m2 0h0m3 0h0m2 0h0m73 0h0m19 0h0m-479 1h0m384 0h0m5 0h0m1 0h0m67 0h0m7 0h0m15 0h0m1 0h0m1 0h0m-484 1h0m391 0h0m3 0h0m2 0h0m65 0h0m3 0h0m2 0h0m6 0h0m1 0h0m1 0h0m-477 1h0m7 0h0m1 0h0m1 0h0m389 0h0m2 0h0m56 0h0m4 0h0m6 0h0m9 0h0m-469 1h0m3 0h0m393 0h0m53 0h0m2 0h0m6 0h0m4 0h0m9 0h0m7 0h0m3 0h0m-485 1h0m4 0h0m2 0h0m1 0h0m399 0h0m52 0h0m6 0h0m8 0h0m2 0h0m3 0h0m5 0h0m1 0h0m6 0h0m-487 1h0m3 0h0m450 0h0m15 0h0m14 0h0m7 0h0m-488 1h0m463 0h0m22 0h0m-485 1h0m2 0h0m1 0h0m448 0h0m3 0h0m2 0h0m9 0h0m17 0h0m-483 1h0m1 0h0m454 0h0m12 0h0m1 0h0m5 0h0m4 0h0m7 0h0m2 0h0m-483 1h0m452 0h0m2 0h0m2 0h0m6 0h0m15 0h0m1 0h0m-480 1h0m451 0h0m11 0h0m12 0h0m11 0h0m2 0h0m-56 1h0m1 0h0m6 0h0m18 0h0m4 0h0m2 0h0m1 0h0m14 0h0m4 0h0m-484 1h0m440 0h0m2 0h0m13 0h0m4 0h0m12 0h0m12 0h0m5 0h0m-37 1h0m8 0h0m3 0h0m11 0h0m16 0h0m1 0h0m-25 1h0m15 0h0m4 0h0m4 0h0m-485 1h0m2 0h0m2 0h0m12 0h0m3 0h0m2 0h0m4 0h0m2 0h0m8 0h0m6 0h0m1 0h0m3 0h0m4 0h0m1 0h0m4 0h0m16 0h0m1 0h0m17 0h0m360 0h0m2 0h0m9 0h0m3 0h0m1 0h0m7 0h0m2 0h0m7 0h0m-482 1h0m2 0h0m5 0h0m13 0h0m2 0h0m3 0h0m4 0h0m1 0h0m6 0h0m1 0h0m1 0h0m1 0h0m1 0h0m6 0h0m6 0h0m1 0h0m2 0h0m12 0h0m2 0h0m1 0h0m2 0h0m2 0h0m3 0h0m3 0h0m1 0h0m10 0h0m2 0h0m9 0h0m3 0h0m3 0h0m4 0h0m2 0h0m5 0h0m5 0h0m11 0h0m3 0h0m2 0h0m6 0h0m2 0h0m3 0h0m3 0h0m6 0h0m2 0h0m2 0h0m1 0h0m7 0h0m2 0h0m2 0h0m1 0h0m9 0h0m6 0h0m4 0h0m3 0h0m11 0h0m5 0h0m14 0h0m13 0h0m2 0h0m212 0h0m4 0h0m4 0h0m7 0h0m5 0h0m2 0h0m11 0h0m1 0h0m-432 1h0m2 0h0m1 0h0m5 0h0m1 0h0m4 0h0m1 0h0m6 0h0m4 0h0m7 0h0m8 0h0m2 0h0m1 0h0m4 0h0m1 0h0m4 0h0m5 0h0m1 0h0m1 0h0m1 0h0m4 0h0m2 0h0m10 0h0m2 0h0m6 0h0m4 0h0m1 0h0m2 0h0m2 0h0m3 0h0m5 0h0m3 0h0m14 0h0m3 0h0m8 0h0m2 0h0m3 0h0m4 0h0m1 0h0m2 0h0m1 0h0m8 0h0m2 0h0m14 0h0m3 0h0m1 0h0m4 0h0m5 0h0m3 0h0m2 0h0m12 0h0m2 0h0m4 0h0m5 0h0m7 0h0m1 0h0m17 0h0m7 0h0m8 0h0m2 0h0m3 0h0m2 0h0m8 0h0m9 0h0m7 0h0m1 0h0m6 0h0m1 0h0m121 0h0m6 0h0m16 0h0m2 0h0m2 0h0m-332 1h0m1 0h0m6 0h0m3 0h0m3 0h0m8 0h0m12 0h0m1 0h0m5 0h0m3 0h0m5 0h0m3 0h0m4 0h0m3 0h0m2 0h0m13 0h0m2 0h0m2 0h0m5 0h0m6 0h0m10 0h0m1 0h0m1 0h0m3 0h0m7 0h0m5 0h0m1 0h0m7 0h0m5 0h0m2 0h0m1 0h0m20 0h0m9 0h0m1 0h0m5 0h0m2 0h0m6 0h0m1 0h0m1 0h0m7 0h0m4 0h0m4 0h0m1 0h0m15 0h0m5 0h0m2 0h0m1 0h0m7 0h0m89 0h0m2 0h0m8 0h0m9 0h0m-149 1h0m3 0h0m5 0h0m1 0h0m1 0h0m2 0h0m9 0h0m4 0h0m6 0h0m1 0h0m6 0h0m10 0h0m3 0h0m14 0h0m1 0h0m1 0h0m3 0h0m3 0h0m1 0h0m62 0h0m-102 1h0m2 0h0m10 0h0m4 0h0m2 0h0m1 0h0m5 0h0m1 0h0m5 0h0m4 0h0m11 0h0m3 0h0m6 0h0m2 0h0m5 0h0m4 0h0m3 0h0m4 0h0m45 0h0m-82 1h0m8 0h0m3 0h0m1 0h0m4 0h0m26 0h0m3 0h0m2 0h0m12 0h0m1 0h0m17 0h0m-44 1h0m3 0h0m1 0h0m13 0h0m1 0h0m1 0h0m1 0h0m14 0h0m1 0h0m2 0h0m4 0h0m3 0h0m3 0h0m3 0h0m-4 1h0m1 0h0m1 0h0m2 0h0" transform="translate(.5 .5)" stroke="#1f77b4" stroke-width="1.1" stroke-linecap="square" fill="none"/><path d="M236 102h0m6 0h0m2 0h0m1 0h0m1 0h0m1 0h0m1 0h0m5 0h0m1 0h0m15 0h0m1 0h0m1 0h0m1 0h0m1 0h0m1 0h0m1 0h0m1 0h0m1 0h0m1 0h0m1 0h0m5 0h0m1 0h0m7 0h0m1 0h0m6 0h0m1 0h0m1 0h0m1 0h0m1 0h0m1 0h0m1 0h0m1 0h0m1 0h0m1 0h0m1 0h0m1 0h0m1 0h0m2 0h0m6 0h0m1 0h0m3 0h0m1 0h0m2 0h0m1 0h0m1 0h0m1 0h0m1 0h0m1 0h0m1 0h0m1 0h0m1 0h0m1 0h0m1 0h0m1 0h0m1 0h0m1 0h0m1 0h0m-131 1h0m1 0h0m1 0h0m6 0h0m1 0h0m4 0h0m14 0h0m1 0h0m6 0h0m1 0h0m1 0h0m2 0h0m1 0h0m5 0h0m1 0h0m8 0h0m1 0h0m4 0h0m2 0h0m1 0h0m1 0h0m1 0h0m1 0h0m1 0h0m1 0h0m1 0h0m1 0h0m1 0h0m1 0h0m5 0h0m1 0h0m5 0h0m2 0h0m1 0h0m1 0h0m4 0h0m1 0h0m1 0h0m1 0h0m1 0h0m1 0h0m1 0h0m1 0h0m1 0h0m1 0h0m1 0h0m2 0h0m2 0h0m1 0h0m1 0h0m4 0h0m1 0h0m1 0h0m1 0h0m1 0h0m1 0h0m1 0h0m1 0h0m1 0h0m1 0h0m-129 1h0m1 0h0m1 0h0m1 0h0m1 0h0m1 0h0m1 0h0m6 0h0m1 0h0m7 0h0m4 0h0m14 0h0m1 0h0m4 0h0m1 0h0m2 0h0m1 0h0m1 0h0m1 0h0m1 0h0m5 0h0m1 0h0m8 0h0m1 0h0m4 0h0m18 0h0m5 0h0m1 0h0m1 0h0m1 0h0m1 0h0m4 0h0m1 0h0m1 0h0m1 0h0m1 0h0m1 0h0m1 0h0m1 0h0m1 0h0m1 0h0m2 0h0m3 0h0m1 0h0m1 0h0m4 0h0m1 0h0m1 0h0m1 0h0m1 0h0m1 0h0m1 0h0m1 0h0m1 0h0m1 0h0m-131 1h0m1 0h0m1 0h0m1 0h0m1 0h0m2 0h0m1 0h0m1 0h0m1 0h0m3 0h0m2 0h0m1 0h0m1 0h0m1 0h0m4 0h0m1 0h0m4 0h0m14 0h0m1 0h0m4 0h0m2 0h0m1 0h0m1 0h0m1 0h0m1 0h0m1 0h0m5 0h0m1 0h0m8 0h0m1 0h0m4 0h0m18 0h0m5 0h0m1 0h0m1 0h0m1 0h0m1 0h0m4 0h0m1 0h0m1 0h0m1 0h0m1 0h0m1 0h0m1 0h0m1 0h0m1 0h0m3 0h0m1 0h0m1 0h0m1 0h0m1 0h0m5 0h0m2 0h0m1 0h0m1 0h0m4 0h0m1 0h0m-131 1h0m1 0h0m1 0h0m1 0h0m1 0h0m1 0h0m1 0h0m1 0h0m1 0h0m1 0h0m1 0h0m1 0h0m3 0h0m1 0h0m1 0h0m1 0h0m1 0h0m1 0h0m1 0h0m1 0h0m1 0h0m2 0h0m1 0h0m1 0h0m14 0h0m1 0h0m4 0h0m4 0h0m1 0h0m1 0h0m2 0h0m1 0h0m1 0h0m1 0h0m1 0h0m1 0h0m1 0h0m1 0h0m1 0h0m1 0h0m1 0h0m2 0h0m2 0h0m1 0h0m1 0h0m1 0h0m19 0h0m2 0h0m2 0h0m1 0h0m1 0h0m1 0h0m1 0h0m6 0h0m1 0h0m1 0h0m4 0h0m1 0h0m1 0h0m1 0h0m1 0h0m1 0h0m1 0h0m1 0h0m1 0h0m1 0h0m4 0h0m1 0h0m1 0h0m1 0h0m1 0h0m1 0h0m2 0h0m1 0h0m1 0h0m-131 1h0m1 0h0m1 0h0m1 0h0m1 0h0m1 0h0m1 0h0m1 0h0m1 0h0m1 0h0m2 0h0m1 0h0m2 0h0m2 0h0m2 0h0m2 0h0m2 0h0m1 0h0m1 0h0m2 0h0m5 0h0m1 0h0m1 0h0m1 0h0m1 0h0m5 0h0m1 0h0m8 0h0m1 0h0m1 0h0m1 0h0m1 0h0m2 0h0m1 0h0m1 0h0m1 0h0m1 0h0m1 0h0m2 0h0m1 0h0m1 0h0m1 0h0m1 0h0m1 0h0m1 0h0m1 0h0m1 0h0m1 0h0m18 0h0m1 0h0m1 0h0m1 0h0m1 0h0m1 0h0m1 0h0m1 0h0m2 0h0m5 0h0m1 0h0m3 0h0m1 0h0m1 0h0m1 0h0m1 0h0m1 0h0m2 0h0m1 0h0m3 0h0m4 0h0m1 0h0m2 0h0m2 0h0m1 0h0m1 0h0m2 0h0m-131 1h0m2 0h0m1 0h0m1 0h0m1 0h0m1 0h0m1 0h0m1 0h0m1 0h0m1 0h0m1 0h0m1 0h0m1 0h0m2 0h0m3 0h0m2 0h0m1 0h0m1 0h0m1 0h0m1 0h0m1 0h0m1 0h0m5 0h0m1 0h0m2 0h0m1 0h0m6 0h0m12 0h0m1 0h0m1 0h0m1 0h0m2 0h0m1 0h0m2 0h0m1 0h0m1 0h0m1 0h0m2 0h0m1 0h0m1 0h0m1 0h0m2 0h0m18 0h0m1 0h0m2 0h0m2 0h0m1 0h0m1 0h0m1 0h0m1 0h0m5 0h0m2 0h0m1 0h0m1 0h0m1 0h0m3 0h0m2 0h0m1 0h0m2 0h0m1 0h0m5 0h0m1 0h0m1 0h0m1 0h0m1 0h0m1 0h0m2 0h0m1 0h0m1 0h0m-131 1h0m1 0h0m1 0h0m1 0h0m1 0h0m2 0h0m1 0h0m2 0h0m1 0h0m2 0h0m1 0h0m1 0h0m1 0h0m1 0h0m1 0h0m1 0h0m1 0h0m1 0h0m2 0h0m1 0h0m1 0h0m1 0h0m1 0h0m5 0h0m2 0h0m1 0h0m1 0h0m5 0h0m1 0h0m11 0h0m1 0h0m1 0h0m1 0h0m1 0h0m1 0h0m1 0h0m1 0h0m4 0h0m2 0h0m2 0h0m4 0h0m18 0h0m1 0h0m2 0h0m2 0h0m1 0h0m1 0h0m2 0h0m4 0h0m1 0h0m1 0h0m1 0h0m1 0h0m1 0h0m2 0h0m1 0h0m2 0h0m1 0h0m1 0h0m1 0h0m1 0h0m1 0h0m1 0h0m4 0h0m1 0h0m1 0h0m1 0h0m1 0h0m1 0h0m1 0h0m2 0h0m1 0h0m39 0h0m1 0h0m1 0h0m1 0h0m-173 1h0m1 0h0m1 0h0m1 0h0m1 0h0m1 0h0m1 0h0m1 0h0m1 0h0m2 0h0m1 0h0m1 0h0m1 0h0m1 0h0m2 0h0m1 0h0m1 0h0m3 0h0m1 0h0m2 0h0m1 0h0m1 0h0m5 0h0m1 0h0m3 0h0m5 0h0m1 0h0m12 0h0m1 0h0m1 0h0m1 0h0m1 0h0m1 0h0m1 0h0m1 0h0m1 0h0m1 0h0m1 0h0m1 0h0m1 0h0m1 0h0m1 0h0m1 0h0m10 0h0m2 0h0m1 0h0m1 0h0m1 0h0m20 0h0m1 0h0m1 0h0m1 0h0m1 0h0m1 0h0m1 0h0m2 0h0m2 0h0m1 0h0m1 0h0m1 0h0m2 0h0m4 0h0m1 0h0m1 0h0m2 0h0m2 0h0m1 0h0m1 0h0m6 0h0m1 0h0m1 0h0m1 0h0m2 0h0m1 0h0m1 0h0m1 0h0m1 0h0m1 0h0m1 0h0m6 0h0m1 0h0m3 0h0m1 0h0m1 0h0m1 0h0m2 0h0m1 0h0m1 0h0m1 0h0m6 0h0m1 0h0m1 0h0m2 0h0m2 0h0m-192 1h0m1 0h0m1 0h0m2 0h0m1 0h0m10 0h0m1 0h0m1 0h0m1 0h0m1 0h0m3 0h0m1 0h0m1 0h0m1 0h0m2 0h0m1 0h0m2 0h0m2 0h0m1 0h0m1 0h0m1 0h0m2 0h0m2 0h0m2 0h0m5 0h0m2 0h0m1 0h0m1 0h0m10 0h0m7 0h0m1 0h0m1 0h0m1 0h0m1 0h0m1 0h0m2 0h0m2 0h0m4 0h0m1 0h0m1 0h0m1 0h0m1 0h0m1 0h0m1 0h0m5 0h0m2 0h0m1 0h0m2 0h0m1 0h0m1 0h0m1 0h0m18 0h0m1 0h0m10 0h0m1 0h0m1 0h0m1 0h0m1 0h0m1 0h0m4 0h0m1 0h0m1 0h0m2 0h0m1 0h0m1 0h0m3 0h0m5 0h0m1 0h0m2 0h0m3 0h0m1 0h0m1 0h0m2 0h0m2 0h0m5 0h0m3 0h0m1 0h0m1 0h0m1 0h0m1 0h0m1 0h0m1 0h0m1 0h0m1 0h0m1 0h0m8 0h0m1 0h0m1 0h0m1 0h0m1 0h0m1 0h0m1 0h0m1 0h0m1 0h0m-199 1h0m1 0h0m1 0h0m1 0h0m1 0h0m2 0h0m1 0h0m11 0h0m3 0h0m1 0h0m1 0h0m1 0h0m1 0h0m2 0h0m1 0h0m3 0h0m1 0h0m4 0h0m1 0h0m1 0h0m2 0h0m1 0h0m1 0h0m1 0h0m1 0h0m5 0h0m1 0h0m1 0h0m19 0h0m2 0h0m2 0h0m2 0h0m1 0h0m1 0h0m1 0h0m2 0h0m1 0h0m1 0h0m1 0h0m1 0h0m1 0h0m1 0h0m1 0h0m1 0h0m6 0h0m1 0h0m1 0h0m1 0h0m2 0h0m1 0h0m1 0h0m18 0h0m2 0h0m1 0h0m3 0h0m2 0h0m1 0h0m2 0h0m1 0h0m1 0h0m1 0h0m2 0h0m18 0h0m1 0h0m1 0h0m2 0h0m1 0h0m1 0h0m1 0h0m1 0h0m1 0h0m1 0h0m1 0h0m6 0h0m2 0h0m1 0h0m1 0h0m2 0h0m1 0h0m1 0h0m1 0h0m1 0h0m2 0h0m8 0h0m1 0h0m1 0h0m3 0h0m1 0h0m1 0h0m1 0h0m1 0h0m1 0h0m2 0h0m-211 1h0m1 0h0m7 0h0m1 0h0m1 0h0m2 0h0m4 0h0m12 0h0m1 0h0m3 0h0m1 0h0m1 0h0m1 0h0m1 0h0m3 0h0m3 0h0m1 0h0m1 0h0m2 0h0m1 0h0m2 0h0m2 0h0m1 0h0m5 0h0m4 0h0m17 0h0m4 0h0m1 0h0m1 0h0m1 0h0m1 0h0m3 0h0m1 0h0m1 0h0m2 0h0m1 0h0m1 0h0m1 0h0m1 0h0m5 0h0m1 0h0m1 0h0m1 0h0m1 0h0m1 0h0m2 0h0m1 0h0m9 0h0m1 0h0m1 0h0m1 0h0m1 0h0m1 0h0m4 0h0m1 0h0m1 0h0m1 0h0m1 0h0m1 0h0m2 0h0m1 0h0m1 0h0m1 0h0m1 0h0m1 0h0m1 0h0m1 0h0m2 0h0m18 0h0m1 0h0m1 0h0m1 0h0m1 0h0m1 0h0m1 0h0m1 0h0m1 0h0m2 0h0m1 0h0m1 0h0m5 0h0m1 0h0m2 0h0m4 0h0m1 0h0m2 0h0m1 0h0m1 0h0m8 0h0m2 0h0m1 0h0m1 0h0m1 0h0m1 0h0m1 0h0m3 0h0m1 0h0m2 0h0m1 0h0m1 0h0m1 0h0m-226 1h0m2 0h0m1 0h0m1 0h0m1 0h0m1 0h0m1 0h0m1 0h0m1 0h0m2 0h0m1 0h0m1 0h0m1 0h0m5 0h0m1 0h0m1 0h0m1 0h0m3 0h0m1 0h0m1 0h0m10 0h0m1 0h0m1 0h0m1 0h0m2 0h0m2 0h0m2 0h0m1 0h0m1 0h0m1 0h0m1 0h0m3 0h0m1 0h0m1 0h0m1 0h0m1 0h0m2 0h0m1 0h0m1 0h0m1 0h0m1 0h0m5 0h0m1 0h0m2 0h0m18 0h0m1 0h0m1 0h0m1 0h0m1 0h0m2 0h0m1 0h0m1 0h0m1 0h0m1 0h0m2 0h0m1 0h0m1 0h0m1 0h0m1 0h0m1 0h0m1 0h0m1 0h0m5 0h0m2 0h0m2 0h0m1 0h0m1 0h0m1 0h0m1 0h0m13 0h0m1 0h0m4 0h0m2 0h0m1 0h0m1 0h0m2 0h0m1 0h0m1 0h0m1 0h0m1 0h0m2 0h0m1 0h0m1 0h0m2 0h0m18 0h0m1 0h0m1 0h0m2 0h0m1 0h0m2 0h0m1 0h0m1 0h0m1 0h0m2 0h0m5 0h0m1 0h0m1 0h0m1 0h0m1 0h0m3 0h0m1 0h0m1 0h0m2 0h0m1 0h0m8 0h0m1 0h0m1 0h0m1 0h0m1 0h0m1 0h0m1 0h0m1 0h0m1 0h0m1 0h0m1 0h0m1 0h0m2 0h0m1 0h0m1 0h0m1 0h0m1 0h0m1 0h0m1 0h0m1 0h0m-252 1h0m1 0h0m10 0h0m1 0h0m1 0h0m1 0h0m1 0h0m1 0h0m1 0h0m1 0h0m1 0h0m2 0h0m3 0h0m1 0h0m3 0h0m1 0h0m1 0h0m1 0h0m1 0h0m1 0h0m1 0h0m1 0h0m1 0h0m5 0h0m2 0h0m1 0h0m1 0h0m1 0h0m1 0h0m1 0h0m1 0h0m11 0h0m1 0h0m2 0h0m2 0h0m1 0h0m1 0h0m1 0h0m2 0h0m1 0h0m4 0h0m4 0h0m3 0h0m1 0h0m1 0h0m1 0h0m5 0h0m1 0h0m1 0h0m2 0h0m10 0h0m7 0h0m1 0h0m1 0h0m2 0h0m1 0h0m2 0h0m1 0h0m3 0h0m1 0h0m1 0h0m1 0h0m1 0h0m3 0h0m1 0h0m5 0h0m2 0h0m1 0h0m1 0h0m1 0h0m2 0h0m1 0h0m5 0h0m5 0h0m3 0h0m1 0h0m4 0h0m1 0h0m1 0h0m3 0h0m2 0h0m2 0h0m3 0h0m1 0h0m2 0h0m1 0h0m9 0h0m1 0h0m1 0h0m1 0h0m7 0h0m4 0h0m2 0h0m1 0h0m1 0h0m1 0h0m1 0h0m1 0h0m5 0h0m1 0h0m1 0h0m1 0h0m2 0h0m3 0h0m1 0h0m1 0h0m1 0h0m1 0h0m8 0h0m2 0h0m1 0h0m1 0h0m1 0h0m1 0h0m1 0h0m1 0h0m2 0h0m2 0h0m1 0h0m1 0h0m1 0h0m2 0h0m1 0h0m1 0h0m1 0h0m1 0h0m1 0h0m1 0h0m1 0h0m-262 1h0m1 0h0m1 0h0m5 0h0m4 0h0m4 0h0m1 0h0m1 0h0m1 0h0m1 0h0m1 0h0m1 0h0m1 0h0m1 0h0m2 0h0m1 0h0m1 0h0m1 0h0m1 0h0m1 0h0m2 0h0m3 0h0m1 0h0m1 0h0m1 0h0m1 0h0m1 0h0m2 0h0m5 0h0m1 0h0m1 0h0m1 0h0m1 0h0m1 0h0m1 0h0m1 0h0m1 0h0m10 0h0m1 0h0m1 0h0m1 0h0m1 0h0m2 0h0m2 0h0m1 0h0m1 0h0m2 0h0m1 0h0m1 0h0m1 0h0m1 0h0m2 0h0m1 0h0m1 0h0m1 0h0m1 0h0m4 0h0m6 0h0m1 0h0m1 0h0m1 0h0m8 0h0m7 0h0m1 0h0m1 0h0m1 0h0m3 0h0m1 0h0m1 0h0m1 0h0m2 0h0m1 0h0m1 0h0m1 0h0m1 0h0m1 0h0m1 0h0m2 0h0m1 0h0m1 0h0m6 0h0m2 0h0m3 0h0m1 0h0m1 0h0m5 0h0m4 0h0m1 0h0m2 0h0m1 0h0m1 0h0m4 0h0m2 0h0m1 0h0m2 0h0m1 0h0m1 0h0m1 0h0m2 0h0m1 0h0m1 0h0m2 0h0m2 0h0m4 0h0m1 0h0m1 0h0m1 0h0m4 0h0m8 0h0m1 0h0m4 0h0m1 0h0m2 0h0m2 0h0m6 0h0m2 0h0m1 0h0m1 0h0m1 0h0m1 0h0m1 0h0m3 0h0m1 0h0m1 0h0m8 0h0m1 0h0m1 0h0m1 0h0m2 0h0m1 0h0m1 0h0m1 0h0m2 0h0m2 0h0m1 0h0m1 0h0m1 0h0m1 0h0m1 0h0m1 0h0m1 0h0m1 0h0m1 0h0m1 0h0m1 0h0m1 0h0m1 0h0m1 0h0m1 0h0m1 0h0m-273 1h0m1 0h0m1 0h0m1 0h0m1 0h0m1 0h0m1 0h0m1 0h0m1 0h0m1 0h0m1 0h0m1 0h0m1 0h0m1 0h0m2 0h0m1 0h0m1 0h0m5 0h0m1 0h0m2 0h0m1 0h0m1 0h0m1 0h0m1 0h0m2 0h0m1 0h0m3 0h0m1 0h0m2 0h0m1 0h0m1 0h0m1 0h0m1 0h0m1 0h0m1 0h0m1 0h0m1 0h0m1 0h0m2 0h0m1 0h0m4 0h0m1 0h0m2 0h0m1 0h0m1 0h0m1 0h0m2 0h0m10 0h0m2 0h0m2 0h0m4 0h0m1 0h0m1 0h0m1 0h0m1 0h0m2 0h0m2 0h0m3 0h0m1 0h0m3 0h0m1 0h0m2 0h0m5 0h0m4 0h0m9 0h0m1 0h0m7 0h0m1 0h0m3 0h0m2 0h0m1 0h0m1 0h0m1 0h0m1 0h0m1 0h0m1 0h0m1 0h0m1 0h0m1 0h0m1 0h0m1 0h0m7 0h0m1 0h0m1 0h0m3 0h0m1 0h0m1 0h0m10 0h0m2 0h0m1 0h0m1 0h0m1 0h0m5 0h0m1 0h0m1 0h0m1 0h0m1 0h0m2 0h0m1 0h0m1 0h0m1 0h0m1 0h0m2 0h0m1 0h0m1 0h0m1 0h0m4 0h0m1 0h0m1 0h0m3 0h0m1 0h0m1 0h0m7 0h0m1 0h0m1 0h0m2 0h0m3 0h0m1 0h0m1 0h0m1 0h0m1 0h0m1 0h0m5 0h0m1 0h0m2 0h0m5 0h0m1 0h0m1 0h0m1 0h0m9 0h0m2 0h0m1 0h0m1 0h0m1 0h0m2 0h0m1 0h0m1 0h0m2 0h0m1 0h0m1 0h0m2 0h0m2 0h0m2 0h0m2 0h0m1 0h0m3 0h0m1 0h0m1 0h0m1 0h0m1 0h0m1 0h0m1 0h0m1 0h0m-282 1h0m1 0h0m1 0h0m1 0h0m1 0h0m1 0h0m1 0h0m1 0h0m2 0h0m1 0h0m1 0h0m1 0h0m1 0h0m1 0h0m1 0h0m1 0h0m1 0h0m1 0h0m1 0h0m1 0h0m1 0h0m1 0h0m5 0h0m3 0h0m1 0h0m1 0h0m1 0h0m1 0h0m1 0h0m1 0h0m1 0h0m1 0h0m1 0h0m1 0h0m2 0h0m2 0h0m1 0h0m2 0h0m1 0h0m1 0h0m1 0h0m1 0h0m2 0h0m1 0h0m1 0h0m1 0h0m1 0h0m1 0h0m1 0h0m1 0h0m1 0h0m1 0h0m2 0h0m1 0h0m1 0h0m11 0h0m1 0h0m2 0h0m1 0h0m2 0h0m1 0h0m1 0h0m1 0h0m1 0h0m1 0h0m1 0h0m1 0h0m2 0h0m2 0h0m1 0h0m2 0h0m2 0h0m3 0h0m2 0h0m6 0h0m3 0h0m1 0h0m6 0h0m1 0h0m6 0h0m1 0h0m1 0h0m1 0h0m1 0h0m1 0h0m1 0h0m1 0h0m1 0h0m1 0h0m2 0h0m2 0h0m1 0h0m4 0h0m1 0h0m1 0h0m1 0h0m6 0h0m1 0h0m1 0h0m1 0h0m1 0h0m1 0h0m1 0h0m1 0h0m5 0h0m4 0h0m1 0h0m1 0h0m1 0h0m1 0h0m1 0h0m5 0h0m2 0h0m1 0h0m1 0h0m3 0h0m1 0h0m1 0h0m3 0h0m1 0h0m1 0h0m1 0h0m5 0h0m4 0h0m2 0h0m1 0h0m6 0h0m1 0h0m2 0h0m2 0h0m4 0h0m1 0h0m1 0h0m1 0h0m5 0h0m4 0h0m1 0h0m2 0h0m1 0h0m1 0h0m3 0h0m19 0h0m1 0h0m1 0h0m1 0h0m1 0h0m1 0h0m1 0h0m1 0h0m1 0h0m1 0h0m2 0h0m1 0h0m2 0h0m1 0h0m1 0h0m2 0h0m2 0h0m3 0h0m1 0h0m1 0h0m1 0h0m-293 1h0m1 0h0m1 0h0m1 0h0m1 0h0m1 0h0m2 0h0m2 0h0m1 0h0m1 0h0m1 0h0m1 0h0m1 0h0m1 0h0m1 0h0m1 0h0m1 0h0m1 0h0m1 0h0m1 0h0m1 0h0m1 0h0m1 0h0m1 0h0m1 0h0m1 0h0m1 0h0m1 0h0m1 0h0m1 0h0m1 0h0m1 0h0m1 0h0m1 0h0m1 0h0m1 0h0m2 0h0m2 0h0m1 0h0m2 0h0m1 0h0m1 0h0m1 0h0m1 0h0m1 0h0m1 0h0m1 0h0m1 0h0m4 0h0m1 0h0m2 0h0m1 0h0m2 0h0m2 0h0m1 0h0m1 0h0m3 0h0m1 0h0m1 0h0m1 0h0m1 0h0m10 0h0m1 0h0m1 0h0m3 0h0m7 0h0m2 0h0m1 0h0m2 0h0m1 0h0m3 0h0m2 0h0m2 0h0m1 0h0m1 0h0m1 0h0m3 0h0m1 0h0m1 0h0m1 0h0m1 0h0m5 0h0m1 0h0m1 0h0m1 0h0m2 0h0m2 0h0m1 0h0m1 0h0m2 0h0m1 0h0m2 0h0m1 0h0m1 0h0m1 0h0m1 0h0m1 0h0m2 0h0m1 0h0m1 0h0m2 0h0m1 0h0m2 0h0m1 0h0m1 0h0m6 0h0m2 0h0m1 0h0m10 0h0m5 0h0m1 0h0m2 0h0m5 0h0m2 0h0m1 0h0m1 0h0m1 0h0m1 0h0m1 0h0m2 0h0m4 0h0m3 0h0m6 0h0m1 0h0m1 0h0m1 0h0m1 0h0m1 0h0m1 0h0m7 0h0m2 0h0m1 0h0m1 0h0m1 0h0m1 0h0m2 0h0m3 0h0m5 0h0m1 0h0m1 0h0m1 0h0m2 0h0m3 0h0m1 0h0m1 0h0m1 0h0m20 0h0m1 0h0m1 0h0m1 0h0m1 0h0m2 0h0m1 0h0m3 0h0m1 0h0m1 0h0m1 0h0m1 0h0m2 0h0m1 0h0m1 0h0m1 0h0m1 0h0m1 0h0m1 0h0m1 0h0m1 0h0m1 0h0m1 0h0m1 0h0m1 0h0m1 0h0m1 0h0m-304 1h0m1 0h0m1 0h0m1 0h0m1 0h0m1 0h0m1 0h0m1 0h0m2 0h0m1 0h0m1 0h0m1 0h0m2 0h0m2 0h0m1 0h0m3 0h0m1 0h0m1 0h0m1 0h0m1 0h0m2 0h0m2 0h0m1 0h0m2 0h0m1 0h0m1 0h0m1 0h0m1 0h0m1 0h0m1 0h0m3 0h0m1 0h0m1 0h0m2 0h0m1 0h0m1 0h0m1 0h0m1 0h0m1 0h0m2 0h0m1 0h0m1 0h0m2 0h0m1 0h0m2 0h0m1 0h0m1 0h0m2 0h0m1 0h0m1 0h0m1 0h0m1 0h0m2 0h0m1 0h0m1 0h0m4 0h0m1 0h0m2 0h0m3 0h0m10 0h0m1 0h0m2 0h0m1 0h0m2 0h0m2 0h0m3 0h0m1 0h0m1 0h0m2 0h0m3 0h0m1 0h0m1 0h0m1 0h0m1 0h0m1 0h0m3 0h0m1 0h0m1 0h0m2 0h0m1 0h0m1 0h0m1 0h0m1 0h0m2 0h0m1 0h0m1 0h0m1 0h0m2 0h0m6 0h0m2 0h0m2 0h0m1 0h0m3 0h0m4 0h0m1 0h0m7 0h0m1 0h0m1 0h0m1 0h0m1 0h0m5 0h0m1 0h0m3 0h0m2 0h0m7 0h0m5 0h0m2 0h0m2 0h0m7 0h0m1 0h0m1 0h0m1 0h0m1 0h0m3 0h0m1 0h0m3 0h0m1 0h0m1 0h0m4 0h0m4 0h0m1 0h0m2 0h0m1 0h0m8 0h0m1 0h0m2 0h0m2 0h0m3 0h0m1 0h0m1 0h0m5 0h0m2 0h0m4 0h0m2 0h0m1 0h0m1 0h0m1 0h0m1 0h0m21 0h0m1 0h0m1 0h0m1 0h0m1 0h0m1 0h0m1 0h0m1 0h0m1 0h0m1 0h0m1 0h0m1 0h0m1 0h0m1 0h0m3 0h0m1 0h0m1 0h0m1 0h0m1 0h0m2 0h0m1 0h0m1 0h0m1 0h0m1 0h0m1 0h0m1 0h0m1 0h0m1 0h0m1 0h0m1 0h0m-313 1h0m1 0h0m3 0h0m1 0h0m1 0h0m2 0h0m2 0h0m1 0h0m1 0h0m2 0h0m1 0h0m1 0h0m1 0h0m1 0h0m2 0h0m2 0h0m1 0h0m2 0h0m1 0h0m3 0h0m2 0h0m2 0h0m1 0h0m4 0h0m1 0h0m1 0h0m3 0h0m1 0h0m1 0h0m1 0h0m2 0h0m1 0h0m3 0h0m1 0h0m1 0h0m1 0h0m1 0h0m1 0h0m1 0h0m2 0h0m1 0h0m2 0h0m1 0h0m2 0h0m2 0h0m1 0h0m1 0h0m1 0h0m2 0h0m1 0h0m1 0h0m1 0h0m2 0h0m1 0h0m1 0h0m1 0h0m1 0h0m3 0h0m10 0h0m2 0h0m4 0h0m1 0h0m1 0h0m1 0h0m1 0h0m2 0h0m1 0h0m1 0h0m1 0h0m2 0h0m1 0h0m3 0h0m2 0h0m3 0h0m1 0h0m1 0h0m1 0h0m3 0h0m3 0h0m1 0h0m1 0h0m1 0h0m3 0h0m3 0h0m3 0h0m1 0h0m1 0h0m1 0h0m3 0h0m3 0h0m1 0h0m2 0h0m2 0h0m5 0h0m1 0h0m1 0h0m1 0h0m2 0h0m5 0h0m1 0h0m1 0h0m1 0h0m1 0h0m2 0h0m1 0h0m1 0h0m9 0h0m2 0h0m7 0h0m1 0h0m1 0h0m1 0h0m2 0h0m1 0h0m1 0h0m1 0h0m2 0h0m1 0h0m2 0h0m1 0h0m1 0h0m5 0h0m2 0h0m1 0h0m2 0h0m2 0h0m1 0h0m6 0h0m1 0h0m4 0h0m3 0h0m2 0h0m1 0h0m1 0h0m5 0h0m1 0h0m1 0h0m1 0h0m1 0h0m1 0h0m3 0h0m2 0h0m1 0h0m9 0h0m1 0h0m1 0h0m3 0h0m1 0h0m5 0h0m2 0h0m1 0h0m2 0h0m1 0h0m3 0h0m1 0h0m1 0h0m3 0h0m1 0h0m1 0h0m1 0h0m1 0h0m1 0h0m1 0h0m1 0h0m1 0h0m1 0h0m2 0h0m1 0h0m1 0h0m1 0h0m1 0h0m1 0h0m1 0h0m2 0h0m1 0h0m1 0h0m1 0h0m1 0h0m1 0h0m-321 1h0m1 0h0m1 0h0m1 0h0m2 0h0m1 0h0m1 0h0m1 0h0m2 0h0m2 0h0m2 0h0m1 0h0m1 0h0m1 0h0m1 0h0m1 0h0m3 0h0m1 0h0m2 0h0m1 0h0m1 0h0m1 0h0m3 0h0m1 0h0m1 0h0m1 0h0m1 0h0m2 0h0m1 0h0m1 0h0m1 0h0m1 0h0m1 0h0m1 0h0m1 0h0m2 0h0m2 0h0m1 0h0m1 0h0m1 0h0m3 0h0m1 0h0m1 0h0m1 0h0m1 0h0m1 0h0m1 0h0m2 0h0m1 0h0m4 0h0m2 0h0m1 0h0m1 0h0m1 0h0m2 0h0m1 0h0m2 0h0m1 0h0m1 0h0m3 0h0m1 0h0m1 0h0m3 0h0m1 0h0m1 0h0m10 0h0m1 0h0m1 0h0m1 0h0m2 0h0m2 0h0m1 0h0m3 0h0m1 0h0m2 0h0m2 0h0m2 0h0m1 0h0m1 0h0m1 0h0m2 0h0m1 0h0m2 0h0m1 0h0m2 0h0m1 0h0m3 0h0m1 0h0m1 0h0m1 0h0m2 0h0m1 0h0m1 0h0m2 0h0m1 0h0m4 0h0m1 0h0m1 0h0m1 0h0m1 0h0m2 0h0m2 0h0m1 0h0m2 0h0m1 0h0m4 0h0m3 0h0m1 0h0m2 0h0m1 0h0m1 0h0m5 0h0m1 0h0m1 0h0m1 0h0m1 0h0m2 0h0m1 0h0m1 0h0m3 0h0m1 0h0m5 0h0m2 0h0m1 0h0m1 0h0m1 0h0m5 0h0m1 0h0m2 0h0m3 0h0m3 0h0m1 0h0m1 0h0m1 0h0m2 0h0m5 0h0m2 0h0m1 0h0m3 0h0m8 0h0m1 0h0m2 0h0m2 0h0m1 0h0m1 0h0m1 0h0m1 0h0m3 0h0m5 0h0m1 0h0m1 0h0m1 0h0m1 0h0m1 0h0m1 0h0m1 0h0m1 0h0m2 0h0m1 0h0m1 0h0m8 0h0m1 0h0m1 0h0m5 0h0m4 0h0m2 0h0m5 0h0m1 0h0m1 0h0m2 0h0m2 0h0m1 0h0m1 0h0m1 0h0m1 0h0m1 0h0m1 0h0m3 0h0m2 0h0m1 0h0m1 0h0m1 0h0m1 0h0m1 0h0m1 0h0m1 0h0m1 0h0m1 0h0m2 0h0m1 0h0m1 0h0m1 0h0m1 0h0m1 0h0m1 0h0m-328 1h0m1 0h0m1 0h0m1 0h0m1 0h0m1 0h0m1 0h0m1 0h0m1 0h0m1 0h0m2 0h0m1 0h0m1 0h0m1 0h0m2 0h0m1 0h0m1 0h0m3 0h0m1 0h0m1 0h0m3 0h0m1 0h0m2 0h0m2 0h0m1 0h0m2 0h0m1 0h0m2 0h0m1 0h0m1 0h0m1 0h0m1 0h0m1 0h0m1 0h0m1 0h0m4 0h0m3 0h0m1 0h0m2 0h0m2 0h0m1 0h0m2 0h0m2 0h0m1 0h0m2 0h0m1 0h0m1 0h0m1 0h0m1 0h0m2 0h0m1 0h0m3 0h0m1 0h0m1 0h0m1 0h0m1 0h0m1 0h0m1 0h0m1 0h0m1 0h0m1 0h0m1 0h0m1 0h0m1 0h0m1 0h0m1 0h0m2 0h0m3 0h0m11 0h0m2 0h0m1 0h0m1 0h0m1 0h0m1 0h0m2 0h0m3 0h0m1 0h0m1 0h0m1 0h0m1 0h0m1 0h0m1 0h0m2 0h0m3 0h0m1 0h0m4 0h0m1 0h0m1 0h0m1 0h0m1 0h0m1 0h0m1 0h0m1 0h0m1 0h0m1 0h0m1 0h0m1 0h0m1 0h0m2 0h0m2 0h0m2 0h0m1 0h0m2 0h0m1 0h0m1 0h0m1 0h0m2 0h0m2 0h0m1 0h0m2 0h0m1 0h0m1 0h0m1 0h0m3 0h0m1 0h0m1 0h0m5 0h0m2 0h0m1 0h0m1 0h0m1 0h0m1 0h0m4 0h0m2 0h0m1 0h0m1 0h0m1 0h0m1 0h0m7 0h0m1 0h0m2 0h0m4 0h0m1 0h0m1 0h0m2 0h0m2 0h0m1 0h0m2 0h0m1 0h0m1 0h0m1 0h0m4 0h0m5 0h0m1 0h0m1 0h0m1 0h0m3 0h0m10 0h0m1 0h0m1 0h0m1 0h0m2 0h0m3 0h0m1 0h0m7 0h0m1 0h0m1 0h0m1 0h0m1 0h0m1 0h0m1 0h0m1 0h0m1 0h0m1 0h0m10 0h0m1 0h0m1 0h0m1 0h0m2 0h0m5 0h0m1 0h0m3 0h0m1 0h0m1 0h0m1 0h0m1 0h0m1 0h0m2 0h0m2 0h0m1 0h0m3 0h0m1 0h0m1 0h0m1 0h0m1 0h0m1 0h0m2 0h0m1 0h0m1 0h0m1 0h0m1 0h0m1 0h0m1 0h0m1 0h0m1 0h0m1 0h0m1 0h0m1 0h0m1 0h0m2 0h0m1 0h0m1 0h0m1 0h0m1 0h0m1 0h0m1 0h0m1 0h0m1 0h0m-335 1h0m1 0h0m2 0h0m1 0h0m1 0h0m1 0h0m3 0h0m1 0h0m1 0h0m2 0h0m2 0h0m1 0h0m1 0h0m1 0h0m3 0h0m1 0h0m1 0h0m4 0h0m1 0h0m1 0h0m1 0h0m1 0h0m1 0h0m1 0h0m1 0h0m2 0h0m4 0h0m2 0h0m1 0h0m2 0h0m1 0h0m1 0h0m1 0h0m1 0h0m1 0h0m4 0h0m2 0h0m1 0h0m1 0h0m1 0h0m2 0h0m2 0h0m3 0h0m2 0h0m2 0h0m1 0h0m1 0h0m1 0h0m4 0h0m1 0h0m2 0h0m2 0h0m1 0h0m3 0h0m1 0h0m1 0h0m1 0h0m2 0h0m1 0h0m1 0h0m1 0h0m2 0h0m3 0h0m3 0h0m1 0h0m1 0h0m1 0h0m1 0h0m3 0h0m1 0h0m1 0h0m1 0h0m2 0h0m2 0h0m3 0h0m1 0h0m1 0h0m1 0h0m2 0h0m1 0h0m2 0h0m1 0h0m3 0h0m1 0h0m1 0h0m1 0h0m1 0h0m3 0h0m1 0h0m2 0h0m2 0h0m3 0h0m1 0h0m2 0h0m2 0h0m1 0h0m1 0h0m1 0h0m2 0h0m3 0h0m2 0h0m5 0h0m3 0h0m1 0h0m2 0h0m2 0h0m2 0h0m1 0h0m4 0h0m2 0h0m2 0h0m1 0h0m1 0h0m3 0h0m1 0h0m1 0h0m4 0h0m3 0h0m2 0h0m1 0h0m6 0h0m4 0h0m1 0h0m1 0h0m1 0h0m1 0h0m1 0h0m3 0h0m1 0h0m1 0h0m5 0h0m1 0h0m2 0h0m5 0h0m7 0h0m2 0h0m3 0h0m1 0h0m3 0h0m2 0h0m6 0h0m1 0h0m2 0h0m1 0h0m3 0h0m1 0h0m1 0h0m12 0h0m2 0h0m2 0h0m1 0h0m4 0h0m1 0h0m2 0h0m1 0h0m2 0h0m1 0h0m1 0h0m1 0h0m1 0h0m1 0h0m1 0h0m1 0h0m1 0h0m2 0h0m1 0h0m1 0h0m1 0h0m1 0h0m2 0h0m2 0h0m1 0h0m1 0h0m1 0h0m1 0h0m1 0h0m1 0h0m1 0h0m4 0h0m1 0h0m2 0h0m1 0h0m1 0h0m1 0h0m1 0h0m1 0h0m2 0h0m1 0h0m3 0h0m1 0h0m-343 1h0m1 0h0m1 0h0m1 0h0m1 0h0m1 0h0m1 0h0m1 0h0m2 0h0m1 0h0m1 0h0m1 0h0m1 0h0m1 0h0m2 0h0m1 0h0m1 0h0m3 0h0m3 0h0m1 0h0m6 0h0m2 0h0m1 0h0m1 0h0m2 0h0m1 0h0m1 0h0m1 0h0m2 0h0m1 0h0m1 0h0m2 0h0m2 0h0m4 0h0m3 0h0m1 0h0m1 0h0m4 0h0m1 0h0m3 0h0m3 0h0m3 0h0m4 0h0m6 0h0m1 0h0m1 0h0m3 0h0m1 0h0m4 0h0m2 0h0m1 0h0m1 0h0m1 0h0m1 0h0m5 0h0m1 0h0m2 0h0m2 0h0m1 0h0m1 0h0m1 0h0m6 0h0m6 0h0m2 0h0m1 0h0m1 0h0m1 0h0m6 0h0m1 0h0m1 0h0m1 0h0m1 0h0m1 0h0m2 0h0m3 0h0m2 0h0m1 0h0m1 0h0m1 0h0m1 0h0m2 0h0m1 0h0m1 0h0m1 0h0m1 0h0m1 0h0m2 0h0m3 0h0m2 0h0m3 0h0m1 0h0m1 0h0m2 0h0m1 0h0m1 0h0m1 0h0m1 0h0m1 0h0m3 0h0m2 0h0m2 0h0m2 0h0m5 0h0m1 0h0m1 0h0m1 0h0m4 0h0m1 0h0m4 0h0m1 0h0m1 0h0m1 0h0m1 0h0m1 0h0m1 0h0m1 0h0m3 0h0m3 0h0m2 0h0m5 0h0m3 0h0m1 0h0m1 0h0m1 0h0m3 0h0m3 0h0m1 0h0m1 0h0m2 0h0m1 0h0m7 0h0m3 0h0m1 0h0m2 0h0m1 0h0m3 0h0m9 0h0m1 0h0m3 0h0m5 0h0m9 0h0m1 0h0m2 0h0m3 0h0m6 0h0m3 0h0m1 0h0m1 0h0m2 0h0m2 0h0m5 0h0m1 0h0m1 0h0m2 0h0m1 0h0m2 0h0m1 0h0m2 0h0m1 0h0m1 0h0m1 0h0m1 0h0m2 0h0m1 0h0m3 0h0m1 0h0m1 0h0m1 0h0m1 0h0m1 0h0m1 0h0m1 0h0m1 0h0m2 0h0m1 0h0m1 0h0m1 0h0m1 0h0m1 0h0m1 0h0m1 0h0m1 0h0m-351 1h0m1 0h0m1 0h0m1 0h0m2 0h0m1 0h0m1 0h0m1 0h0m1 0h0m1 0h0m1 0h0m1 0h0m1 0h0m4 0h0m1 0h0m2 0h0m3 0h0m2 0h0m1 0h0m1 0h0m1 0h0m1 0h0m1 0h0m2 0h0m1 0h0m2 0h0m3 0h0m1 0h0m2 0h0m1 0h0m2 0h0m2 0h0m5 0h0m1 0h0m1 0h0m2 0h0m4 0h0m1 0h0m4 0h0m3 0h0m2 0h0m1 0h0m1 0h0m1 0h0m1 0h0m2 0h0m7 0h0m2 0h0m1 0h0m1 0h0m1 0h0m1 0h0m1 0h0m2 0h0m2 0h0m1 0h0m1 0h0m2 0h0m1 0h0m1 0h0m1 0h0m1 0h0m2 0h0m2 0h0m1 0h0m1 0h0m2 0h0m1 0h0m1 0h0m1 0h0m2 0h0m1 0h0m1 0h0m2 0h0m2 0h0m1 0h0m1 0h0m2 0h0m1 0h0m3 0h0m6 0h0m1 0h0m2 0h0m3 0h0m4 0h0m1 0h0m1 0h0m1 0h0m2 0h0m1 0h0m1 0h0m1 0h0m2 0h0m4 0h0m2 0h0m2 0h0m1 0h0m2 0h0m6 0h0m1 0h0m2 0h0m4 0h0m1 0h0m1 0h0m2 0h0m1 0h0m2 0h0m2 0h0m1 0h0m4 0h0m1 0h0m1 0h0m4 0h0m1 0h0m1 0h0m1 0h0m2 0h0m2 0h0m2 0h0m1 0h0m2 0h0m1 0h0m4 0h0m1 0h0m1 0h0m1 0h0m1 0h0m2 0h0m1 0h0m2 0h0m1 0h0m1 0h0m1 0h0m1 0h0m1 0h0m6 0h0m2 0h0m1 0h0m1 0h0m1 0h0m4 0h0m8 0h0m2 0h0m3 0h0m2 0h0m3 0h0m5 0h0m2 0h0m2 0h0m1 0h0m1 0h0m1 0h0m5 0h0m9 0h0m4 0h0m7 0h0m1 0h0m1 0h0m2 0h0m1 0h0m1 0h0m4 0h0m3 0h0m2 0h0m1 0h0m1 0h0m1 0h0m1 0h0m2 0h0m2 0h0m1 0h0m1 0h0m1 0h0m2 0h0m2 0h0m1 0h0m1 0h0m1 0h0m1 0h0m1 0h0m1 0h0m1 0h0m1 0h0m1 0h0m1 0h0m1 0h0m2 0h0m2 0h0m1 0h0m1 0h0m1 0h0m1 0h0m1 0h0m1 0h0m3 0h0m1 0h0m1 0h0m1 0h0m-362 1h0m1 0h0m2 0h0m1 0h0m1 0h0m1 0h0m1 0h0m1 0h0m1 0h0m1 0h0m1 0h0m1 0h0m1 0h0m2 0h0m2 0h0m1 0h0m1 0h0m1 0h0m1 0h0m1 0h0m1 0h0m1 0h0m3 0h0m2 0h0m1 0h0m3 0h0m3 0h0m1 0h0m2 0h0m1 0h0m2 0h0m1 0h0m3 0h0m1 0h0m1 0h0m1 0h0m1 0h0m1 0h0m1 0h0m1 0h0m1 0h0m1 0h0m1 0h0m1 0h0m2 0h0m2 0h0m1 0h0m2 0h0m1 0h0m1 0h0m1 0h0m1 0h0m1 0h0m3 0h0m2 0h0m1 0h0m1 0h0m4 0h0m1 0h0m2 0h0m3 0h0m1 0h0m2 0h0m2 0h0m1 0h0m1 0h0m1 0h0m1 0h0m1 0h0m6 0h0m1 0h0m2 0h0m3 0h0m2 0h0m3 0h0m1 0h0m3 0h0m1 0h0m3 0h0m1 0h0m1 0h0m1 0h0m2 0h0m2 0h0m5 0h0m2 0h0m3 0h0m3 0h0m2 0h0m5 0h0m1 0h0m1 0h0m2 0h0m2 0h0m2 0h0m2 0h0m3 0h0m4 0h0m1 0h0m1 0h0m1 0h0m2 0h0m1 0h0m2 0h0m1 0h0m1 0h0m6 0h0m3 0h0m3 0h0m1 0h0m2 0h0m1 0h0m1 0h0m3 0h0m2 0h0m2 0h0m4 0h0m1 0h0m1 0h0m1 0h0m2 0h0m1 0h0m1 0h0m1 0h0m1 0h0m4 0h0m1 0h0m4 0h0m1 0h0m5 0h0m6 0h0m3 0h0m2 0h0m4 0h0m1 0h0m1 0h0m1 0h0m1 0h0m3 0h0m2 0h0m1 0h0m1 0h0m1 0h0m2 0h0m1 0h0m5 0h0m2 0h0m2 0h0m1 0h0m1 0h0m2 0h0m1 0h0m3 0h0m2 0h0m3 0h0m4 0h0m2 0h0m11 0h0m1 0h0m2 0h0m5 0h0m1 0h0m3 0h0m3 0h0m1 0h0m1 0h0m1 0h0m2 0h0m1 0h0m1 0h0m1 0h0m1 0h0m1 0h0m3 0h0m2 0h0m3 0h0m1 0h0m2 0h0m1 0h0m1 0h0m2 0h0m1 0h0m4 0h0m1 0h0m1 0h0m2 0h0m2 0h0m2 0h0m1 0h0m1 0h0m2 0h0m1 0h0m1 0h0m1 0h0m2 0h0m1 0h0m3 0h0m1 0h0m1 0h0m1 0h0m1 0h0m-372 1h0m1 0h0m1 0h0m1 0h0m1 0h0m1 0h0m1 0h0m1 0h0m1 0h0m1 0h0m1 0h0m2 0h0m1 0h0m2 0h0m1 0h0m1 0h0m1 0h0m1 0h0m1 0h0m1 0h0m2 0h0m1 0h0m1 0h0m2 0h0m2 0h0m1 0h0m2 0h0m10 0h0m4 0h0m4 0h0m3 0h0m1 0h0m1 0h0m1 0h0m1 0h0m3 0h0m1 0h0m1 0h0m2 0h0m2 0h0m1 0h0m2 0h0m1 0h0m1 0h0m1 0h0m6 0h0m1 0h0m2 0h0m4 0h0m1 0h0m4 0h0m2 0h0m1 0h0m4 0h0m1 0h0m2 0h0m2 0h0m8 0h0m1 0h0m1 0h0m1 0h0m2 0h0m3 0h0m2 0h0m1 0h0m3 0h0m1 0h0m3 0h0m2 0h0m1 0h0m2 0h0m4 0h0m2 0h0m1 0h0m1 0h0m1 0h0m1 0h0m1 0h0m1 0h0m1 0h0m4 0h0m4 0h0m5 0h0m1 0h0m1 0h0m1 0h0m1 0h0m3 0h0m3 0h0m2 0h0m2 0h0m4 0h0m2 0h0m2 0h0m1 0h0m2 0h0m1 0h0m1 0h0m2 0h0m3 0h0m2 0h0m2 0h0m1 0h0m2 0h0m3 0h0m1 0h0m3 0h0m3 0h0m4 0h0m2 0h0m1 0h0m3 0h0m3 0h0m1 0h0m1 0h0m2 0h0m2 0h0m1 0h0m3 0h0m1 0h0m2 0h0m1 0h0m3 0h0m1 0h0m2 0h0m1 0h0m3 0h0m1 0h0m1 0h0m1 0h0m3 0h0m4 0h0m1 0h0m1 0h0m2 0h0m1 0h0m3 0h0m1 0h0m1 0h0m1 0h0m1 0h0m3 0h0m1 0h0m1 0h0m3 0h0m1 0h0m2 0h0m3 0h0m3 0h0m1 0h0m1 0h0m1 0h0m7 0h0m1 0h0m4 0h0m2 0h0m3 0h0m2 0h0m6 0h0m1 0h0m2 0h0m2 0h0m2 0h0m1 0h0m1 0h0m2 0h0m2 0h0m1 0h0m3 0h0m2 0h0m1 0h0m1 0h0m1 0h0m2 0h0m1 0h0m1 0h0m4 0h0m1 0h0m3 0h0m1 0h0m1 0h0m1 0h0m1 0h0m1 0h0m1 0h0m3 0h0m1 0h0m1 0h0m2 0h0m1 0h0m2 0h0m1 0h0m2 0h0m2 0h0m1 0h0m1 0h0m1 0h0m1 0h0m1 0h0m1 0h0m1 0h0m1 0h0m-381 1h0m1 0h0m2 0h0m1 0h0m1 0h0m1 0h0m1 0h0m1 0h0m1 0h0m1 0h0m1 0h0m2 0h0m2 0h0m1 0h0m1 0h0m1 0h0m1 0h0m3 0h0m1 0h0m2 0h0m2 0h0m1 0h0m2 0h0m2 0h0m1 0h0m1 0h0m3 0h0m2 0h0m1 0h0m1 0h0m3 0h0m1 0h0m1 0h0m2 0h0m1 0h0m2 0h0m1 0h0m1 0h0m1 0h0m1 0h0m2 0h0m1 0h0m1 0h0m2 0h0m7 0h0m3 0h0m1 0h0m1 0h0m1 0h0m3 0h0m1 0h0m4 0h0m1 0h0m2 0h0m1 0h0m4 0h0m1 0h0m1 0h0m1 0h0m1 0h0m1 0h0m4 0h0m3 0h0m1 0h0m2 0h0m1 0h0m2 0h0m1 0h0m2 0h0m3 0h0m2 0h0m1 0h0m2 0h0m2 0h0m2 0h0m1 0h0m2 0h0m4 0h0m3 0h0m1 0h0m3 0h0m1 0h0m2 0h0m1 0h0m1 0h0m3 0h0m3 0h0m7 0h0m3 0h0m1 0h0m2 0h0m2 0h0m1 0h0m1 0h0m2 0h0m1 0h0m1 0h0m1 0h0m1 0h0m3 0h0m1 0h0m1 0h0m2 0h0m3 0h0m3 0h0m1 0h0m1 0h0m1 0h0m2 0h0m6 0h0m3 0h0m2 0h0m1 0h0m8 0h0m1 0h0m1 0h0m2 0h0m2 0h0m1 0h0m1 0h0m2 0h0m1 0h0m2 0h0m2 0h0m1 0h0m1 0h0m7 0h0m3 0h0m4 0h0m2 0h0m1 0h0m4 0h0m3 0h0m1 0h0m1 0h0m2 0h0m5 0h0m5 0h0m10 0h0m1 0h0m2 0h0m3 0h0m2 0h0m1 0h0m3 0h0m1 0h0m1 0h0m2 0h0m1 0h0m1 0h0m2 0h0m1 0h0m3 0h0m1 0h0m1 0h0m3 0h0m1 0h0m1 0h0m1 0h0m1 0h0m2 0h0m1 0h0m1 0h0m2 0h0m3 0h0m4 0h0m1 0h0m1 0h0m2 0h0m2 0h0m2 0h0m1 0h0m1 0h0m1 0h0m1 0h0m1 0h0m1 0h0m1 0h0m1 0h0m1 0h0m2 0h0m2 0h0m2 0h0m2 0h0m1 0h0m2 0h0m2 0h0m2 0h0m2 0h0m1 0h0m2 0h0m3 0h0m2 0h0m1 0h0m3 0h0m1 0h0m3 0h0m1 0h0m1 0h0m1 0h0m1 0h0m1 0h0m1 0h0m2 0h0m1 0h0m1 0h0m1 0h0m1 0h0m1 0h0m1 0h0m-390 1h0m1 0h0m1 0h0m1 0h0m1 0h0m1 0h0m1 0h0m2 0h0m1 0h0m1 0h0m1 0h0m1 0h0m1 0h0m1 0h0m1 0h0m1 0h0m1 0h0m1 0h0m1 0h0m1 0h0m3 0h0m1 0h0m2 0h0m2 0h0m2 0h0m1 0h0m1 0h0m2 0h0m2 0h0m1 0h0m3 0h0m2 0h0m2 0h0m2 0h0m2 0h0m1 0h0m1 0h0m2 0h0m1 0h0m1 0h0m1 0h0m2 0h0m3 0h0m2 0h0m2 0h0m4 0h0m2 0h0m2 0h0m2 0h0m1 0h0m1 0h0m2 0h0m1 0h0m1 0h0m1 0h0m1 0h0m1 0h0m1 0h0m3 0h0m1 0h0m3 0h0m1 0h0m2 0h0m1 0h0m2 0h0m2 0h0m4 0h0m1 0h0m1 0h0m1 0h0m1 0h0m4 0h0m1 0h0m1 0h0m1 0h0m1 0h0m1 0h0m5 0h0m1 0h0m1 0h0m2 0h0m1 0h0m1 0h0m4 0h0m1 0h0m1 0h0m1 0h0m1 0h0m1 0h0m1 0h0m2 0h0m2 0h0m2 0h0m1 0h0m6 0h0m1 0h0m2 0h0m1 0h0m2 0h0m4 0h0m4 0h0m2 0h0m1 0h0m1 0h0m1 0h0m5 0h0m3 0h0m4 0h0m1 0h0m1 0h0m1 0h0m2 0h0m1 0h0m2 0h0m3 0h0m3 0h0m1 0h0m2 0h0m4 0h0m2 0h0m2 0h0m2 0h0m1 0h0m2 0h0m1 0h0m1 0h0m6 0h0m1 0h0m1 0h0m1 0h0m1 0h0m1 0h0m1 0h0m2 0h0m1 0h0m2 0h0m1 0h0m2 0h0m2 0h0m1 0h0m6 0h0m1 0h0m1 0h0m2 0h0m6 0h0m1 0h0m1 0h0m6 0h0m1 0h0m7 0h0m1 0h0m1 0h0m1 0h0m4 0h0m4 0h0m2 0h0m1 0h0m1 0h0m3 0h0m1 0h0m1 0h0m1 0h0m5 0h0m2 0h0m1 0h0m1 0h0m1 0h0m4 0h0m3 0h0m1 0h0m2 0h0m1 0h0m1 0h0m2 0h0m2 0h0m4 0h0m3 0h0m2 0h0m1 0h0m1 0h0m1 0h0m2 0h0m5 0h0m1 0h0m1 0h0m1 0h0m2 0h0m1 0h0m3 0h0m1 0h0m1 0h0m3 0h0m3 0h0m2 0h0m1 0h0m3 0h0m1 0h0m1 0h0m1 0h0m5 0h0m1 0h0m1 0h0m2 0h0m1 0h0m2 0h0m1 0h0m2 0h0m1 0h0m1 0h0m1 0h0m1 0h0m3 0h0m1 0h0m1 0h0m1 0h0m1 0h0m1 0h0m2 0h0m1 0h0m1 0h0m2 0h0m1 0h0m1 0h0m-399 1h0m1 0h0m2 0h0m1 0h0m1 0h0m1 0h0m2 0h0m2 0h0m2 0h0m1 0h0m2 0h0m1 0h0m2 0h0m2 0h0m1 0h0m3 0h0m1 0h0m1 0h0m1 0h0m1 0h0m1 0h0m3 0h0m1 0h0m3 0h0m1 0h0m2 0h0m1 0h0m2 0h0m3 0h0m3 0h0m1 0h0m3 0h0m1 0h0m3 0h0m1 0h0m1 0h0m1 0h0m2 0h0m1 0h0m1 0h0m2 0h0m2 0h0m1 0h0m2 0h0m1 0h0m1 0h0m1 0h0m3 0h0m1 0h0m1 0h0m2 0h0m1 0h0m1 0h0m1 0h0m2 0h0m1 0h0m3 0h0m2 0h0m3 0h0m1 0h0m2 0h0m5 0h0m1 0h0m1 0h0m1 0h0m6 0h0m2 0h0m1 0h0m3 0h0m2 0h0m4 0h0m1 0h0m1 0h0m1 0h0m2 0h0m1 0h0m3 0h0m1 0h0m2 0h0m1 0h0m2 0h0m2 0h0m1 0h0m2 0h0m7 0h0m5 0h0m1 0h0m2 0h0m2 0h0m1 0h0m2 0h0m1 0h0m1 0h0m1 0h0m1 0h0m1 0h0m1 0h0m3 0h0m4 0h0m1 0h0m1 0h0m4 0h0m1 0h0m1 0h0m4 0h0m2 0h0m1 0h0m2 0h0m1 0h0m1 0h0m1 0h0m1 0h0m2 0h0m1 0h0m4 0h0m1 0h0m2 0h0m2 0h0m2 0h0m2 0h0m1 0h0m2 0h0m4 0h0m6 0h0m2 0h0m2 0h0m2 0h0m1 0h0m5 0h0m1 0h0m3 0h0m1 0h0m1 0h0m2 0h0m4 0h0m4 0h0m1 0h0m2 0h0m1 0h0m1 0h0m2 0h0m3 0h0m2 0h0m2 0h0m6 0h0m3 0h0m2 0h0m1 0h0m2 0h0m1 0h0m3 0h0m4 0h0m1 0h0m1 0h0m1 0h0m1 0h0m1 0h0m5 0h0m1 0h0m6 0h0m2 0h0m3 0h0m1 0h0m1 0h0m1 0h0m1 0h0m4 0h0m2 0h0m7 0h0m1 0h0m1 0h0m1 0h0m2 0h0m1 0h0m4 0h0m2 0h0m1 0h0m1 0h0m1 0h0m2 0h0m4 0h0m2 0h0m2 0h0m1 0h0m2 0h0m2 0h0m1 0h0m1 0h0m1 0h0m3 0h0m7 0h0m2 0h0m2 0h0m1 0h0m3 0h0m5 0h0m2 0h0m3 0h0m2 0h0m1 0h0m2 0h0m1 0h0m1 0h0m2 0h0m1 0h0m1 0h0m1 0h0m1 0h0m1 0h0m1 0h0m-410 1h0m1 0h0m1 0h0m1 0h0m1 0h0m1 0h0m1 0h0m3 0h0m3 0h0m2 0h0m1 0h0m1 0h0m2 0h0m2 0h0m5 0h0m3 0h0m3 0h0m3 0h0m2 0h0m1 0h0m1 0h0m5 0h0m2 0h0m1 0h0m3 0h0m1 0h0m1 0h0m2 0h0m2 0h0m2 0h0m1 0h0m1 0h0m3 0h0m2 0h0m2 0h0m4 0h0m1 0h0m2 0h0m1 0h0m1 0h0m1 0h0m2 0h0m2 0h0m1 0h0m2 0h0m1 0h0m1 0h0m3 0h0m1 0h0m3 0h0m1 0h0m2 0h0m4 0h0m2 0h0m1 0h0m1 0h0m2 0h0m2 0h0m4 0h0m2 0h0m2 0h0m1 0h0m2 0h0m3 0h0m3 0h0m4 0h0m2 0h0m1 0h0m1 0h0m2 0h0m2 0h0m1 0h0m1 0h0m2 0h0m1 0h0m1 0h0m3 0h0m1 0h0m3 0h0m2 0h0m5 0h0m4 0h0m2 0h0m1 0h0m1 0h0m4 0h0m2 0h0m1 0h0m3 0h0m2 0h0m1 0h0m5 0h0m2 0h0m3 0h0m1 0h0m1 0h0m3 0h0m2 0h0m1 0h0m1 0h0m3 0h0m5 0h0m5 0h0m1 0h0m4 0h0m4 0h0m3 0h0m1 0h0m3 0h0m1 0h0m3 0h0m2 0h0m1 0h0m1 0h0m1 0h0m2 0h0m1 0h0m2 0h0m5 0h0m1 0h0m3 0h0m2 0h0m2 0h0m2 0h0m1 0h0m2 0h0m5 0h0m1 0h0m3 0h0m1 0h0m3 0h0m3 0h0m1 0h0m3 0h0m1 0h0m1 0h0m3 0h0m2 0h0m9 0h0m2 0h0m1 0h0m3 0h0m2 0h0m1 0h0m3 0h0m1 0h0m3 0h0m2 0h0m5 0h0m1 0h0m1 0h0m4 0h0m1 0h0m2 0h0m2 0h0m2 0h0m1 0h0m3 0h0m1 0h0m1 0h0m1 0h0m2 0h0m1 0h0m3 0h0m1 0h0m1 0h0m1 0h0m3 0h0m4 0h0m1 0h0m3 0h0m1 0h0m4 0h0m2 0h0m1 0h0m3 0h0m2 0h0m1 0h0m1 0h0m1 0h0m2 0h0m1 0h0m2 0h0m5 0h0m1 0h0m1 0h0m1 0h0m1 0h0m3 0h0m1 0h0m2 0h0m2 0h0m1 0h0m2 0h0m1 0h0m1 0h0m1 0h0m1 0h0m1 0h0m1 0h0m1 0h0m2 0h0m1 0h0m2 0h0m1 0h0m1 0h0m1 0h0m1 0h0m-418 1h0m1 0h0m1 0h0m1 0h0m1 0h0m3 0h0m1 0h0m1 0h0m1 0h0m1 0h0m1 0h0m1 0h0m1 0h0m1 0h0m2 0h0m2 0h0m3 0h0m1 0h0m3 0h0m1 0h0m2 0h0m1 0h0m1 0h0m3 0h0m1 0h0m7 0h0m2 0h0m1 0h0m1 0h0m2 0h0m3 0h0m1 0h0m2 0h0m2 0h0m1 0h0m1 0h0m1 0h0m1 0h0m1 0h0m1 0h0m1 0h0m1 0h0m1 0h0m4 0h0m3 0h0m1 0h0m1 0h0m1 0h0m2 0h0m6 0h0m3 0h0m3 0h0m1 0h0m1 0h0m1 0h0m1 0h0m1 0h0m3 0h0m1 0h0m3 0h0m3 0h0m1 0h0m2 0h0m1 0h0m10 0h0m6 0h0m2 0h0m1 0h0m2 0h0m1 0h0m1 0h0m1 0h0m1 0h0m3 0h0m1 0h0m15 0h0m3 0h0m3 0h0m4 0h0m1 0h0m2 0h0m1 0h0m1 0h0m1 0h0m1 0h0m9 0h0m2 0h0m2 0h0m1 0h0m1 0h0m3 0h0m1 0h0m1 0h0m1 0h0m2 0h0m2 0h0m1 0h0m2 0h0m3 0h0m1 0h0m1 0h0m7 0h0m4 0h0m13 0h0m5 0h0m2 0h0m10 0h0m1 0h0m2 0h0m4 0h0m2 0h0m1 0h0m2 0h0m1 0h0m1 0h0m3 0h0m1 0h0m1 0h0m3 0h0m2 0h0m3 0h0m5 0h0m11 0h0m1 0h0m1 0h0m5 0h0m2 0h0m2 0h0m6 0h0m4 0h0m5 0h0m4 0h0m3 0h0m1 0h0m1 0h0m3 0h0m2 0h0m1 0h0m1 0h0m1 0h0m2 0h0m1 0h0m1 0h0m3 0h0m3 0h0m2 0h0m2 0h0m1 0h0m1 0h0m1 0h0m1 0h0m1 0h0m6 0h0m4 0h0m1 0h0m1 0h0m1 0h0m1 0h0m1 0h0m2 0h0m3 0h0m1 0h0m2 0h0m3 0h0m1 0h0m1 0h0m1 0h0m1 0h0m1 0h0m2 0h0m1 0h0m1 0h0m1 0h0m1 0h0m1 0h0m1 0h0m3 0h0m1 0h0m1 0h0m1 0h0m1 0h0m1 0h0m1 0h0m1 0h0m2 0h0m2 0h0m1 0h0m1 0h0m4 0h0m1 0h0m1 0h0m3 0h0m2 0h0m1 0h0m1 0h0m1 0h0m1 0h0m1 0h0m1 0h0m1 0h0m2 0h0m-427 1h0m3 0h0m1 0h0m2 0h0m1 0h0m1 0h0m1 0h0m1 0h0m2 0h0m1 0h0m2 0h0m2 0h0m1 0h0m1 0h0m3 0h0m1 0h0m2 0h0m1 0h0m1 0h0m1 0h0m1 0h0m1 0h0m1 0h0m1 0h0m6 0h0m1 0h0m6 0h0m1 0h0m1 0h0m1 0h0m1 0h0m2 0h0m1 0h0m5 0h0m1 0h0m2 0h0m1 0h0m3 0h0m2 0h0m1 0h0m6 0h0m2 0h0m1 0h0m2 0h0m1 0h0m1 0h0m2 0h0m3 0h0m2 0h0m1 0h0m2 0h0m1 0h0m1 0h0m2 0h0m6 0h0m3 0h0m2 0h0m1 0h0m1 0h0m5 0h0m1 0h0m2 0h0m3 0h0m1 0h0m2 0h0m1 0h0m5 0h0m3 0h0m3 0h0m1 0h0m2 0h0m7 0h0m2 0h0m1 0h0m1 0h0m2 0h0m3 0h0m2 0h0m2 0h0m5 0h0m1 0h0m1 0h0m2 0h0m4 0h0m1 0h0m1 0h0m1 0h0m1 0h0m1 0h0m2 0h0m2 0h0m7 0h0m1 0h0m4 0h0m2 0h0m1 0h0m1 0h0m4 0h0m1 0h0m1 0h0m2 0h0m3 0h0m1 0h0m2 0h0m1 0h0m3 0h0m2 0h0m4 0h0m1 0h0m1 0h0m1 0h0m2 0h0m4 0h0m3 0h0m1 0h0m1 0h0m3 0h0m6 0h0m3 0h0m1 0h0m6 0h0m1 0h0m2 0h0m3 0h0m2 0h0m1 0h0m7 0h0m4 0h0m1 0h0m4 0h0m3 0h0m2 0h0m1 0h0m2 0h0m2 0h0m1 0h0m3 0h0m2 0h0m1 0h0m2 0h0m1 0h0m14 0h0m2 0h0m9 0h0m7 0h0m1 0h0m1 0h0m1 0h0m3 0h0m2 0h0m4 0h0m4 0h0m1 0h0m1 0h0m4 0h0m1 0h0m2 0h0m1 0h0m2 0h0m1 0h0m3 0h0m1 0h0m1 0h0m3 0h0m2 0h0m1 0h0m2 0h0m2 0h0m1 0h0m2 0h0m1 0h0m4 0h0m3 0h0m2 0h0m5 0h0m1 0h0m2 0h0m1 0h0m1 0h0m1 0h0m2 0h0m2 0h0m1 0h0m1 0h0m3 0h0m1 0h0m1 0h0m1 0h0m1 0h0m1 0h0m1 0h0m1 0h0m1 0h0m2 0h0m1 0h0m2 0h0m2 0h0m1 0h0m1 0h0m1 0h0m1 0h0m1 0h0m1 0h0m1 0h0m1 0h0m1 0h0m1 0h0m1 0h0m-436 1h0m2 0h0m1 0h0m1 0h0m1 0h0m1 0h0m1 0h0m2 0h0m1 0h0m2 0h0m1 0h0m2 0h0m2 0h0m1 0h0m1 0h0m5 0h0m4 0h0m2 0h0m3 0h0m2 0h0m3 0h0m4 0h0m1 0h0m3 0h0m2 0h0m1 0h0m3 0h0m1 0h0m2 0h0m2 0h0m3 0h0m2 0h0m2 0h0m4 0h0m1 0h0m2 0h0m1 0h0m2 0h0m1 0h0m1 0h0m4 0h0m3 0h0m1 0h0m7 0h0m3 0h0m3 0h0m5 0h0m2 0h0m3 0h0m3 0h0m1 0h0m1 0h0m2 0h0m2 0h0m1 0h0m1 0h0m2 0h0m5 0h0m3 0h0m4 0h0m4 0h0m2 0h0m1 0h0m1 0h0m1 0h0m2 0h0m1 0h0m1 0h0m1 0h0m4 0h0m4 0h0m5 0h0m2 0h0m1 0h0m1 0h0m8 0h0m1 0h0m1 0h0m1 0h0m8 0h0m4 0h0m5 0h0m1 0h0m1 0h0m1 0h0m4 0h0m2 0h0m1 0h0m2 0h0m4 0h0m2 0h0m3 0h0m5 0h0m3 0h0m1 0h0m2 0h0m1 0h0m2 0h0m6 0h0m3 0h0m1 0h0m1 0h0m2 0h0m2 0h0m6 0h0m7 0h0m1 0h0m1 0h0m2 0h0m1 0h0m3 0h0m5 0h0m1 0h0m1 0h0m2 0h0m4 0h0m5 0h0m8 0h0m4 0h0m2 0h0m2 0h0m1 0h0m5 0h0m2 0h0m5 0h0m2 0h0m5 0h0m1 0h0m2 0h0m1 0h0m1 0h0m1 0h0m2 0h0m5 0h0m2 0h0m3 0h0m2 0h0m2 0h0m2 0h0m3 0h0m1 0h0m3 0h0m1 0h0m2 0h0m2 0h0m1 0h0m1 0h0m1 0h0m3 0h0m1 0h0m1 0h0m1 0h0m1 0h0m1 0h0m1 0h0m4 0h0m1 0h0m1 0h0m4 0h0m4 0h0m1 0h0m1 0h0m1 0h0m1 0h0m1 0h0m3 0h0m1 0h0m1 0h0m2 0h0m1 0h0m3 0h0m1 0h0m3 0h0m2 0h0m1 0h0m1 0h0m1 0h0m2 0h0m1 0h0m1 0h0m1 0h0m1 0h0m1 0h0m1 0h0m1 0h0m2 0h0m1 0h0m1 0h0m1 0h0m2 0h0m3 0h0m3 0h0m2 0h0m2 0h0m1 0h0m2 0h0m1 0h0m1 0h0m1 0h0m1 0h0m2 0h0m1 0h0m1 0h0m-442 1h0m1 0h0m1 0h0m1 0h0m1 0h0m6 0h0m1 0h0m1 0h0m2 0h0m1 0h0m4 0h0m2 0h0m1 0h0m2 0h0m5 0h0m2 0h0m5 0h0m2 0h0m2 0h0m8 0h0m2 0h0m2 0h0m6 0h0m1 0h0m2 0h0m1 0h0m1 0h0m2 0h0m8 0h0m1 0h0m9 0h0m1 0h0m2 0h0m2 0h0m1 0h0m2 0h0m4 0h0m1 0h0m3 0h0m3 0h0m1 0h0m1 0h0m2 0h0m4 0h0m3 0h0m6 0h0m12 0h0m3 0h0m1 0h0m14 0h0m3 0h0m1 0h0m1 0h0m3 0h0m4 0h0m1 0h0m1 0h0m1 0h0m1 0h0m2 0h0m4 0h0m2 0h0m4 0h0m2 0h0m1 0h0m3 0h0m2 0h0m1 0h0m1 0h0m2 0h0m1 0h0m3 0h0m1 0h0m1 0h0m1 0h0m3 0h0m1 0h0m7 0h0m5 0h0m2 0h0m1 0h0m2 0h0m1 0h0m1 0h0m2 0h0m1 0h0m1 0h0m4 0h0m2 0h0m2 0h0m3 0h0m1 0h0m4 0h0m1 0h0m7 0h0m1 0h0m1 0h0m4 0h0m1 0h0m4 0h0m3 0h0m1 0h0m2 0h0m2 0h0m4 0h0m8 0h0m1 0h0m5 0h0m1 0h0m1 0h0m1 0h0m1 0h0m1 0h0m1 0h0m4 0h0m1 0h0m8 0h0m1 0h0m1 0h0m2 0h0m2 0h0m1 0h0m2 0h0m1 0h0m4 0h0m2 0h0m1 0h0m1 0h0m5 0h0m2 0h0m1 0h0m4 0h0m1 0h0m1 0h0m6 0h0m2 0h0m4 0h0m2 0h0m2 0h0m3 0h0m1 0h0m3 0h0m4 0h0m1 0h0m1 0h0m1 0h0m2 0h0m1 0h0m1 0h0m1 0h0m1 0h0m1 0h0m3 0h0m1 0h0m5 0h0m1 0h0m2 0h0m2 0h0m1 0h0m3 0h0m1 0h0m1 0h0m3 0h0m2 0h0m1 0h0m1 0h0m2 0h0m2 0h0m1 0h0m1 0h0m1 0h0m1 0h0m2 0h0m1 0h0m1 0h0m1 0h0m4 0h0m2 0h0m3 0h0m2 0h0m1 0h0m2 0h0m1 0h0m1 0h0m1 0h0m1 0h0m1 0h0m1 0h0m1 0h0m2 0h0m2 0h0m1 0h0m2 0h0m2 0h0m1 0h0m1 0h0m1 0h0m1 0h0m-446 1h0m1 0h0m1 0h0m1 0h0m4 0h0m7 0h0m2 0h0m2 0h0m10 0h0m12 0h0m2 0h0m1 0h0m1 0h0m3 0h0m3 0h0m5 0h0m2 0h0m3 0h0m1 0h0m2 0h0m4 0h0m4 0h0m7 0h0m1 0h0m3 0h0m1 0h0m4 0h0m8 0h0m9 0h0m5 0h0m1 0h0m4 0h0m1 0h0m1 0h0m3 0h0m2 0h0m6 0h0m5 0h0m3 0h0m1 0h0m8 0h0m3 0h0m2 0h0m11 0h0m1 0h0m2 0h0m2 0h0m1 0h0m1 0h0m2 0h0m1 0h0m2 0h0m2 0h0m2 0h0m3 0h0m1 0h0m6 0h0m4 0h0m1 0h0m4 0h0m3 0h0m4 0h0m6 0h0m3 0h0m3 0h0m3 0h0m1 0h0m1 0h0m6 0h0m5 0h0m4 0h0m2 0h0m4 0h0m4 0h0m1 0h0m1 0h0m4 0h0m1 0h0m5 0h0m4 0h0m1 0h0m2 0h0m1 0h0m2 0h0m3 0h0m5 0h0m2 0h0m1 0h0m2 0h0m1 0h0m1 0h0m2 0h0m2 0h0m2 0h0m2 0h0m1 0h0m1 0h0m2 0h0m4 0h0m2 0h0m2 0h0m5 0h0m2 0h0m1 0h0m4 0h0m1 0h0m1 0h0m3 0h0m3 0h0m6 0h0m7 0h0m8 0h0m3 0h0m1 0h0m4 0h0m5 0h0m1 0h0m1 0h0m2 0h0m2 0h0m2 0h0m3 0h0m2 0h0m1 0h0m2 0h0m2 0h0m1 0h0m2 0h0m1 0h0m1 0h0m3 0h0m2 0h0m1 0h0m1 0h0m3 0h0m3 0h0m1 0h0m1 0h0m2 0h0m5 0h0m1 0h0m2 0h0m3 0h0m1 0h0m1 0h0m1 0h0m2 0h0m1 0h0m1 0h0m1 0h0m4 0h0m3 0h0m2 0h0m3 0h0m3 0h0m2 0h0m2 0h0m5 0h0m1 0h0m1 0h0m1 0h0m1 0h0m1 0h0m1 0h0m1 0h0m1 0h0m1 0h0m1 0h0m1 0h0m1 0h0m-366 1h0m4 0h0m1 0h0m1 0h0m6 0h0m1 0h0m3 0h0m7 0h0m3 0h0m2 0h0m4 0h0m6 0h0m4 0h0m3 0h0m5 0h0m3 0h0m1 0h0m2 0h0m3 0h0m1 0h0m4 0h0m5 0h0m3 0h0m3 0h0m1 0h0m4 0h0m5 0h0m1 0h0m2 0h0m7 0h0m6 0h0m1 0h0m3 0h0m1 0h0m2 0h0m3 0h0m7 0h0m4 0h0m1 0h0m2 0h0m3 0h0m1 0h0m6 0h0m3 0h0m2 0h0m1 0h0m2 0h0m1 0h0m1 0h0m7 0h0m1 0h0m1 0h0m1 0h0m1 0h0m2 0h0m5 0h0m1 0h0m3 0h0m3 0h0m2 0h0m1 0h0m2 0h0m1 0h0m1 0h0m5 0h0m2 0h0m2 0h0m1 0h0m3 0h0m1 0h0m2 0h0m1 0h0m2 0h0m2 0h0m1 0h0m4 0h0m5 0h0m5 0h0m1 0h0m8 0h0m2 0h0m1 0h0m1 0h0m1 0h0m1 0h0m2 0h0m1 0h0m3 0h0m1 0h0m4 0h0m1 0h0m1 0h0m4 0h0m1 0h0m1 0h0m5 0h0m3 0h0m1 0h0m1 0h0m8 0h0m1 0h0m2 0h0m1 0h0m1 0h0m1 0h0m1 0h0m1 0h0m2 0h0m1 0h0m1 0h0m2 0h0m1 0h0m1 0h0m1 0h0m2 0h0m5 0h0m1 0h0m2 0h0m1 0h0m3 0h0m3 0h0m1 0h0m3 0h0m1 0h0m1 0h0m3 0h0m1 0h0m3 0h0m1 0h0m1 0h0m2 0h0m3 0h0m1 0h0m4 0h0m1 0h0m4 0h0m3 0h0m3 0h0m1 0h0m3 0h0m6 0h0m4 0h0m1 0h0m1 0h0m3 0h0m1 0h0m1 0h0m2 0h0m1 0h0m3 0h0m2 0h0m1 0h0m2 0h0m1 0h0m1 0h0m1 0h0m-252 1h0m1 0h0m6 0h0m3 0h0m4 0h0m4 0h0m5 0h0m4 0h0m5 0h0m9 0h0m1 0h0m3 0h0m1 0h0m1 0h0m4 0h0m5 0h0m3 0h0m1 0h0m4 0h0m1 0h0m1 0h0m1 0h0m13 0h0m1 0h0m1 0h0m1 0h0m1 0h0m1 0h0m2 0h0m2 0h0m1 0h0m1 0h0m1 0h0m6 0h0m1 0h0m1 0h0m4 0h0m2 0h0m8 0h0m1 0h0m1 0h0m3 0h0m2 0h0m3 0h0m1 0h0m7 0h0m1 0h0m3 0h0m2 0h0m2 0h0m6 0h0m1 0h0m2 0h0m5 0h0m1 0h0m2 0h0m1 0h0m3 0h0m5 0h0m10 0h0m2 0h0m3 0h0m2 0h0m1 0h0m1 0h0m1 0h0m4 0h0m3 0h0m1 0h0m6 0h0m1 0h0m1 0h0m2 0h0m1 0h0m2 0h0m1 0h0m4 0h0m3 0h0m1 0h0m5 0h0m2 0h0m1 0h0m4 0h0m1 0h0m2 0h0m2 0h0m3 0h0m2 0h0m1 0h0m1 0h0m2 0h0m1 0h0m3 0h0m2 0h0m1 0h0m3 0h0m2 0h0m1 0h0m1 0h0m1 0h0m-165 1h0m9 0h0m7 0h0m1 0h0m4 0h0m1 0h0m1 0h0m4 0h0m1 0h0m1 0h0m6 0h0m2 0h0m4 0h0m1 0h0m4 0h0m12 0h0m2 0h0m1 0h0m1 0h0m2 0h0m3 0h0m3 0h0m3 0h0m1 0h0m3 0h0m4 0h0m1 0h0m1 0h0m1 0h0m4 0h0m4 0h0m2 0h0m5 0h0m6 0h0m2 0h0m2 0h0m3 0h0m2 0h0m1 0h0m9 0h0m1 0h0m3 0h0m3 0h0m1 0h0m1 0h0m1 0h0m9 0h0m1 0h0m2 0h0m1 0h0m1 0h0m1 0h0m2 0h0m1 0h0m4 0h0m2 0h0m1 0h0m2 0h0m1 0h0m1 0h0m1 0h0m1 0h0m1 0h0m1 0h0m2 0h0m-110 1h0m2 0h0m1 0h0m5 0h0m5 0h0m2 0h0m1 0h0m4 0h0m1 0h0m1 0h0m3 0h0m1 0h0m3 0h0m4 0h0m5 0h0m1 0h0m2 0h0m3 0h0m2 0h0m3 0h0m5 0h0m3 0h0m4 0h0m4 0h0m2 0h0m2 0h0m1 0h0m1 0h0m1 0h0m4 0h0m1 0h0m3 0h0m4 0h0m3 0h0m3 0h0m1 0h0m3 0h0m1 0h0m5 0h0m1 0h0m1 0h0m2 0h0m1 0h0m1 0h0m1 0h0m4 0h0m1 0h0m2 0h0m-74 1h0m3 0h0m5 0h0m1 0h0m3 0h0m3 0h0m1 0h0m2 0h0m1 0h0m2 0h0m1 0h0m2 0h0m8 0h0m1 0h0m6 0h0m3 0h0m1 0h0m4 0h0m2 0h0m1 0h0m8 0h0m4 0h0m6 0h0m1 0h0m4 0h0m1 0h0m1 0h0m2 0h0m1 0h0m-50 1h0m5 0h0m1 0h0m1 0h0m9 0h0m1 0h0m2 0h0m1 0h0m1 0h0m1 0h0m1 0h0m1 0h0m1 0h0m1 0h0m1 0h0m1 0h0m2 0h0m8 0h0m1 0h0m1 0h0m1 0h0m1 0h0m1 0h0m1 0h0m1 0h0m3 0h0m1 0h0m2 0h0m1 0h0m2 0h0m-27 1h0m1 0h0m1 0h0m5 0h0m8 0h0m1 0h0m2 0h0m3 0h0m4 0h0m6 0h0m1 0h0m1 0h0m2 0h0m1 0h0m-7 1h0m2 0h0m2 0h0m2 0h0m1 0h0m1 0h0m7 0h0" transform="translate(.5 .5)" stroke="#ff7f0e" stroke-width="1.1" stroke-linecap="square" fill="none"/><path d="M464 29h0m2 0h0m6 0h0m9 0h0m2 0h0m4 0h0m5 0h0m3 0h0m7 0h0m2 0h0m1 0h0m7 0h0m-101 1h0m2 0h0m1 0h0m1 0h0m5 0h0m6 0h0m6 0h0m1 0h0m3 0h0m4 0h0m5 0h0m5 0h0m11 0h0m13 0h0m1 0h0m3 0h0m3 0h0m1 0h0m1 0h0m1 0h0m5 0h0m2 0h0m2 0h0m2 0h0m4 0h0m2 0h0m2 0h0m1 0h0m1 0h0m1 0h0m1 0h0m1 0h0m4 0h0m3 0h0m1 0h0m-175 1h0m1 0h0m8 0h0m11 0h0m8 0h0m3 0h0m4 0h0m4 0h0m1 0h0m1 0h0m4 0h0m13 0h0m14 0h0m8 0h0m9 0h0m3 0h0m4 0h0m1 0h0m2 0h0m5 0h0m5 0h0m1 0h0m6 0h0m4 0h0m1 0h0m5 0h0m7 0h0m7 0h0m3 0h0m4 0h0m7 0h0m7 0h0m2 0h0m1 0h0m3 0h0m1 0h0m1 0h0m1 0h0m-242 1h0m2 0h0m12 0h0m11 0h0m1 0h0m16 0h0m6 0h0m10 0h0m5 0h0m4 0h0m1 0h0m1 0h0m1 0h0m5 0h0m5 0h0m8 0h0m3 0h0m4 0h0m6 0h0m6 0h0m3 0h0m5 0h0m2 0h0m3 0h0m5 0h0m2 0h0m4 0h0m2 0h0m5 0h0m1 0h0m2 0h0m5 0h0m6 0h0m1 0h0m3 0h0m2 0h0m2 0h0m2 0h0m3 0h0m2 0h0m3 0h0m2 0h0m1 0h0m5 0h0m1 0h0m9 0h0m1 0h0m1 0h0m3 0h0m7 0h0m3 0h0m3 0h0m3 0h0m5 0h0m11 0h0m1 0h0m3 0h0m1 0h0m2 0h0m2 0h0m1 0h0m1 0h0m1 0h0m-309 1h0m1 0h0m10 0h0m2 0h0m1 0h0m6 0h0m5 0h0m2 0h0m4 0h0m4 0h0m1 0h0m9 0h0m1 0h0m3 0h0m5 0h0m1 0h0m5 0h0m4 0h0m1 0h0m2 0h0m9 0h0m6 0h0m8 0h0m7 0h0m1 0h0m8 0h0m7 0h0m4 0h0m1 0h0m4 0h0m4 0h0m7 0h0m2 0h0m4 0h0m1 0h0m1 0h0m5 0h0m11 0h0m6 0h0m1 0h0m4 0h0m8 0h0m11 0h0m14 0h0m4 0h0m1 0h0m2 0h0m9 0h0m5 0h0m1 0h0m6 0h0m2 0h0m4 0h0m1 0h0m2 0h0m7 0h0m2 0h0m4 0h0m3 0h0m2 0h0m2 0h0m8 0h0m4 0h0m2 0h0m3 0h0m1 0h0m1 0h0m1 0h0m3 0h0m1 0h0m2 0h0m2 0h0m4 0h0m1 0h0m2 0h0m2 0h0m2 0h0m1 0h0m1 0h0m1 0h0m1 0h0m1 0h0m1 0h0m1 0h0m1 0h0m-366 1h0m1 0h0m12 0h0m1 0h0m3 0h0m1 0h0m5 0h0m1 0h0m6 0h0m7 0h0m22 0h0m1 0h0m3 0h0m6 0h0m5 0h0m4 0h0m1 0h0m2 0h0m2 0h0m3 0h0m7 0h0m5 0h0m14 0h0m2 0h0m1 0h0m2 0h0m1 0h0m8 0h0m3 0h0m3 0h0m1 0h0m3 0h0m3 0h0m1 0h0m1 0h0m3 0h0m6 0h0m3 0h0m1 0h0m6 0h0m12 0h0m11 0h0m5 0h0m1 0h0m3 0h0m15 0h0m2 0h0m6 0h0m4 0h0m13 0h0m4 0h0m2 0h0m5 0h0m2 0h0m4 0h0m1 0h0m5 0h0m2 0h0m3 0h0m6 0h0m8 0h0m6 0h0m6 0h0m3 0h0m4 0h0m3 0h0m1 0h0m1 0h0m5 0h0m2 0h0m5 0h0m2 0h0m1 0h0m3 0h0m5 0h0m1 0h0m2 0h0m3 0h0m5 0h0m2 0h0m2 0h0m1 0h0m1 0h0m1 0h0m1 0h0m1 0h0m1 0h0m2 0h0m2 0h0m1 0h0m1 0h0m2 0h0m1 0h0m1 0h0m1 0h0m1 0h0m3 0h0m1 0h0m1 0h0m1 0h0m-430 1h0m5 0h0m1 0h0m1 0h0m8 0h0m1 0h0m5 0h0m11 0h0m5 0h0m3 0h0m9 0h0m3 0h0m3 0h0m1 0h0m4 0h0m15 0h0m7 0h0m19 0h0m7 0h0m1 0h0m1 0h0m3 0h0m7 0h0m8 0h0m1 0h0m4 0h0m4 0h0m1 0h0m4 0h0m4 0h0m5 0h0m6 0h0m2 0h0m8 0h0m2 0h0m1 0h0m1 0h0m2 0h0m1 0h0m1 0h0m17 0h0m8 0h0m13 0h0m4 0h0m2 0h0m6 0h0m4 0h0m1 0h0m11 0h0m6 0h0m7 0h0m2 0h0m5 0h0m2 0h0m13 0h0m4 0h0m3 0h0m2 0h0m3 0h0m5 0h0m3 0h0m2 0h0m1 0h0m3 0h0m1 0h0m1 0h0m5 0h0m2 0h0m1 0h0m5 0h0m5 0h0m2 0h0m1 0h0m1 0h0m2 0h0m4 0h0m1 0h0m2 0h0m7 0h0m2 0h0m4 0h0m10 0h0m6 0h0m5 0h0m5 0h0m2 0h0m6 0h0m1 0h0m2 0h0m4 0h0m1 0h0m2 0h0m2 0h0m1 0h0m2 0h0m1 0h0m1 0h0m2 0h0m2 0h0m5 0h0m2 0h0m1 0h0m1 0h0m1 0h0m1 0h0m1 0h0m1 0h0m1 0h0m1 0h0m1 0h0m1 0h0m1 0h0m1 0h0m1 0h0m1 0h0m1 0h0m-448 1h0m2 0h0m12 0h0m1 0h0m1 0h0m1 0h0m5 0h0m1 0h0m2 0h0m14 0h0m2 0h0m12 0h0m1 0h0m15 0h0m1 0h0m7 0h0m5 0h0m4 0h0m12 0h0m7 0h0m2 0h0m1 0h0m3 0h0m1 0h0m1 0h0m5 0h0m1 0h0m6 0h0m15 0h0m1 0h0m3 0h0m4 0h0m1 0h0m1 0h0m5 0h0m3 0h0m2 0h0m4 0h0m4 0h0m3 0h0m6 0h0m8 0h0m1 0h0m1 0h0m8 0h0m2 0h0m12 0h0m2 0h0m5 0h0m2 0h0m5 0h0m3 0h0m12 0h0m5 0h0m1 0h0m1 0h0m1 0h0m6 0h0m6 0h0m7 0h0m2 0h0m8 0h0m3 0h0m3 0h0m1 0h0m9 0h0m6 0h0m8 0h0m6 0h0m1 0h0m12 0h0m2 0h0m3 0h0m1 0h0m1 0h0m5 0h0m1 0h0m1 0h0m2 0h0m11 0h0m9 0h0m4 0h0m1 0h0m2 0h0m2 0h0m1 0h0m2 0h0m2 0h0m3 0h0m2 0h0m4 0h0m3 0h0m3 0h0m1 0h0m7 0h0m5 0h0m1 0h0m6 0h0m2 0h0m2 0h0m4 0h0m2 0h0m2 0h0m4 0h0m1 0h0m1 0h0m1 0h0m1 0h0m1 0h0m1 0h0m2 0h0m1 0h0m1 0h0m1 0h0m1 0h0m1 0h0m1 0h0m2 0h0m1 0h0m-452 1h0m1 0h0m2 0h0m2 0h0m1 0h0m5 0h0m3 0h0m2 0h0m1 0h0m1 0h0m2 0h0m6 0h0m2 0h0m3 0h0m5 0h0m3 0h0m5 0h0m2 0h0m1 0h0m1 0h0m6 0h0m3 0h0m3 0h0m3 0h0m2 0h0m6 0h0m2 0h0m3 0h0m1 0h0m13 0h0m3 0h0m4 0h0m1 0h0m3 0h0m3 0h0m6 0h0m1 0h0m1 0h0m1 0h0m8 0h0m5 0h0m4 0h0m10 0h0m2 0h0m2 0h0m5 0h0m1 0h0m1 0h0m2 0h0m7 0h0m1 0h0m4 0h0m2 0h0m3 0h0m4 0h0m12 0h0m2 0h0m3 0h0m4 0h0m11 0h0m10 0h0m6 0h0m4 0h0m3 0h0m2 0h0m5 0h0m1 0h0m3 0h0m5 0h0m3 0h0m1 0h0m7 0h0m1 0h0m4 0h0m5 0h0m1 0h0m1 0h0m8 0h0m4 0h0m8 0h0m2 0h0m9 0h0m2 0h0m4 0h0m2 0h0m3 0h0m6 0h0m1 0h0m5 0h0m1 0h0m2 0h0m3 0h0m1 0h0m8 0h0m5 0h0m4 0h0m1 0h0m1 0h0m1 0h0m9 0h0m5 0h0m1 0h0m4 0h0m5 0h0m6 0h0m4 0h0m1 0h0m3 0h0m2 0h0m2 0h0m6 0h0m5 0h0m1 0h0m1 0h0m2 0h0m6 0h0m1 0h0m1 0h0m1 0h0m4 0h0m1 0h0m1 0h0m2 0h0m1 0h0m1 0h0m2 0h0m2 0h0m2 0h0m3 0h0m3 0h0m1 0h0m1 0h0m2 0h0m1 0h0m1 0h0m1 0h0m1 0h0m1 0h0m-439 1h0m1 0h0m2 0h0m1 0h0m2 0h0m1 0h0m1 0h0m1 0h0m2 0h0m3 0h0m2 0h0m2 0h0m2 0h0m1 0h0m2 0h0m5 0h0m10 0h0m2 0h0m5 0h0m1 0h0m4 0h0m1 0h0m1 0h0m2 0h0m3 0h0m1 0h0m9 0h0m1 0h0m1 0h0m1 0h0m1 0h0m3 0h0m2 0h0m1 0h0m2 0h0m4 0h0m1 0h0m11 0h0m1 0h0m4 0h0m4 0h0m3 0h0m7 0h0m5 0h0m10 0h0m4 0h0m1 0h0m2 0h0m3 0h0m2 0h0m1 0h0m4 0h0m4 0h0m3 0h0m2 0h0m2 0h0m8 0h0m1 0h0m2 0h0m3 0h0m4 0h0m1 0h0m2 0h0m1 0h0m1 0h0m4 0h0m1 0h0m4 0h0m5 0h0m2 0h0m4 0h0m3 0h0m8 0h0m7 0h0m3 0h0m1 0h0m1 0h0m1 0h0m4 0h0m3 0h0m2 0h0m1 0h0m4 0h0m11 0h0m2 0h0m2 0h0m1 0h0m4 0h0m6 0h0m3 0h0m1 0h0m2 0h0m2 0h0m4 0h0m1 0h0m4 0h0m1 0h0m1 0h0m7 0h0m8 0h0m1 0h0m1 0h0m1 0h0m1 0h0m2 0h0m6 0h0m4 0h0m3 0h0m3 0h0m5 0h0m10 0h0m1 0h0m1 0h0m12 0h0m1 0h0m5 0h0m1 0h0m1 0h0m5 0h0m2 0h0m2 0h0m1 0h0m2 0h0m3 0h0m1 0h0m2 0h0m3 0h0m10 0h0m1 0h0m1 0h0m1 0h0m1 0h0m3 0h0m5 0h0m1 0h0m2 0h0m1 0h0m1 0h0m1 0h0m2 0h0m2 0h0m1 0h0m1 0h0m1 0h0m2 0h0m1 0h0m4 0h0m2 0h0m2 0h0m1 0h0m1 0h0m1 0h0m2 0h0m1 0h0m1 0h0m1 0h0m1 0h0m1 0h0m1 0h0m-426 1h0m1 0h0m1 0h0m2 0h0m2 0h0m1 0h0m2 0h0m1 0h0m3 0h0m2 0h0m1 0h0m2 0h0m6 0h0m1 0h0m3 0h0m2 0h0m7 0h0m2 0h0m2 0h0m3 0h0m3 0h0m1 0h0m1 0h0m3 0h0m6 0h0m2 0h0m4 0h0m2 0h0m4 0h0m14 0h0m2 0h0m1 0h0m1 0h0m1 0h0m4 0h0m1 0h0m1 0h0m8 0h0m2 0h0m3 0h0m3 0h0m1 0h0m29 0h0m2 0h0m7 0h0m2 0h0m4 0h0m1 0h0m3 0h0m4 0h0m1 0h0m1 0h0m3 0h0m6 0h0m1 0h0m1 0h0m3 0h0m1 0h0m4 0h0m4 0h0m1 0h0m9 0h0m3 0h0m4 0h0m13 0h0m4 0h0m6 0h0m2 0h0m3 0h0m2 0h0m3 0h0m2 0h0m1 0h0m3 0h0m3 0h0m5 0h0m6 0h0m1 0h0m1 0h0m1 0h0m3 0h0m6 0h0m9 0h0m4 0h0m1 0h0m5 0h0m1 0h0m1 0h0m1 0h0m1 0h0m2 0h0m4 0h0m7 0h0m1 0h0m2 0h0m1 0h0m5 0h0m8 0h0m1 0h0m1 0h0m2 0h0m2 0h0m4 0h0m1 0h0m2 0h0m8 0h0m2 0h0m1 0h0m1 0h0m2 0h0m9 0h0m2 0h0m2 0h0m8 0h0m2 0h0m1 0h0m3 0h0m2 0h0m6 0h0m2 0h0m2 0h0m1 0h0m1 0h0m4 0h0m2 0h0m1 0h0m1 0h0m1 0h0m1 0h0m1 0h0m1 0h0m1 0h0m1 0h0m1 0h0m1 0h0m1 0h0m1 0h0m1 0h0m4 0h0m2 0h0m2 0h0m1 0h0m1 0h0m-415 1h0m1 0h0m2 0h0m2 0h0m2 0h0m3 0h0m1 0h0m1 0h0m2 0h0m1 0h0m1 0h0m1 0h0m3 0h0m2 0h0m2 0h0m1 0h0m4 0h0m1 0h0m1 0h0m3 0h0m3 0h0m2 0h0m2 0h0m2 0h0m5 0h0m8 0h0m1 0h0m1 0h0m3 0h0m4 0h0m5 0h0m5 0h0m3 0h0m5 0h0m1 0h0m2 0h0m3 0h0m1 0h0m3 0h0m4 0h0m3 0h0m6 0h0m1 0h0m5 0h0m5 0h0m3 0h0m2 0h0m1 0h0m2 0h0m4 0h0m2 0h0m1 0h0m1 0h0m1 0h0m2 0h0m3 0h0m3 0h0m3 0h0m3 0h0m4 0h0m1 0h0m2 0h0m1 0h0m1 0h0m9 0h0m2 0h0m1 0h0m1 0h0m2 0h0m1 0h0m1 0h0m1 0h0m10 0h0m4 0h0m2 0h0m7 0h0m1 0h0m5 0h0m3 0h0m2 0h0m1 0h0m5 0h0m5 0h0m3 0h0m5 0h0m1 0h0m3 0h0m1 0h0m2 0h0m7 0h0m2 0h0m13 0h0m2 0h0m5 0h0m2 0h0m9 0h0m1 0h0m1 0h0m1 0h0m9 0h0m3 0h0m2 0h0m5 0h0m1 0h0m1 0h0m2 0h0m2 0h0m4 0h0m2 0h0m5 0h0m1 0h0m4 0h0m3 0h0m5 0h0m1 0h0m1 0h0m1 0h0m4 0h0m6 0h0m1 0h0m3 0h0m2 0h0m5 0h0m2 0h0m2 0h0m2 0h0m1 0h0m1 0h0m1 0h0m1 0h0m2 0h0m2 0h0m2 0h0m3 0h0m1 0h0m3 0h0m1 0h0m1 0h0m1 0h0m1 0h0m2 0h0m4 0h0m2 0h0m2 0h0m2 0h0m3 0h0m2 0h0m1 0h0m1 0h0m1 0h0m1 0h0m1 0h0m2 0h0m2 0h0m2 0h0m1 0h0m1 0h0m1 0h0m1 0h0m1 0h0m-406 1h0m1 0h0m1 0h0m1 0h0m1 0h0m1 0h0m3 0h0m1 0h0m1 0h0m1 0h0m3 0h0m2 0h0m3 0h0m5 0h0m2 0h0m1 0h0m4 0h0m1 0h0m2 0h0m2 0h0m3 0h0m6 0h0m2 0h0m8 0h0m2 0h0m2 0h0m2 0h0m6 0h0m4 0h0m3 0h0m2 0h0m1 0h0m2 0h0m3 0h0m2 0h0m1 0h0m2 0h0m7 0h0m1 0h0m5 0h0m1 0h0m3 0h0m1 0h0m4 0h0m14 0h0m2 0h0m2 0h0m2 0h0m5 0h0m4 0h0m5 0h0m1 0h0m4 0h0m3 0h0m1 0h0m3 0h0m2 0h0m6 0h0m3 0h0m6 0h0m1 0h0m1 0h0m1 0h0m1 0h0m10 0h0m1 0h0m2 0h0m6 0h0m2 0h0m1 0h0m3 0h0m6 0h0m4 0h0m8 0h0m2 0h0m9 0h0m1 0h0m2 0h0m6 0h0m2 0h0m3 0h0m2 0h0m9 0h0m3 0h0m7 0h0m4 0h0m1 0h0m2 0h0m1 0h0m2 0h0m3 0h0m1 0h0m4 0h0m1 0h0m1 0h0m4 0h0m1 0h0m6 0h0m1 0h0m3 0h0m1 0h0m1 0h0m1 0h0m4 0h0m2 0h0m1 0h0m1 0h0m8 0h0m2 0h0m2 0h0m2 0h0m1 0h0m3 0h0m3 0h0m5 0h0m1 0h0m1 0h0m5 0h0m2 0h0m2 0h0m1 0h0m5 0h0m1 0h0m1 0h0m2 0h0m2 0h0m1 0h0m1 0h0m5 0h0m3 0h0m1 0h0m3 0h0m1 0h0m1 0h0m1 0h0m1 0h0m2 0h0m2 0h0m4 0h0m1 0h0m1 0h0m1 0h0m1 0h0m1 0h0m2 0h0m1 0h0m3 0h0m1 0h0m1 0h0m1 0h0m-394 1h0m2 0h0m1 0h0m1 0h0m1 0h0m1 0h0m1 0h0m1 0h0m2 0h0m1 0h0m3 0h0m1 0h0m1 0h0m2 0h0m1 0h0m1 0h0m3 0h0m3 0h0m5 0h0m2 0h0m2 0h0m7 0h0m1 0h0m3 0h0m2 0h0m4 0h0m7 0h0m3 0h0m1 0h0m3 0h0m1 0h0m1 0h0m4 0h0m1 0h0m1 0h0m2 0h0m2 0h0m1 0h0m2 0h0m1 0h0m4 0h0m2 0h0m2 0h0m4 0h0m2 0h0m5 0h0m7 0h0m4 0h0m1 0h0m5 0h0m3 0h0m4 0h0m6 0h0m2 0h0m4 0h0m1 0h0m1 0h0m5 0h0m11 0h0m1 0h0m1 0h0m2 0h0m1 0h0m1 0h0m1 0h0m5 0h0m1 0h0m2 0h0m2 0h0m9 0h0m1 0h0m2 0h0m3 0h0m2 0h0m1 0h0m3 0h0m6 0h0m2 0h0m2 0h0m7 0h0m1 0h0m1 0h0m3 0h0m1 0h0m1 0h0m5 0h0m2 0h0m11 0h0m8 0h0m2 0h0m2 0h0m6 0h0m3 0h0m1 0h0m2 0h0m1 0h0m7 0h0m1 0h0m7 0h0m2 0h0m4 0h0m8 0h0m2 0h0m2 0h0m1 0h0m1 0h0m2 0h0m5 0h0m3 0h0m2 0h0m3 0h0m1 0h0m4 0h0m10 0h0m2 0h0m1 0h0m1 0h0m3 0h0m2 0h0m2 0h0m2 0h0m1 0h0m6 0h0m1 0h0m1 0h0m1 0h0m1 0h0m3 0h0m1 0h0m1 0h0m2 0h0m1 0h0m3 0h0m3 0h0m2 0h0m1 0h0m1 0h0m2 0h0m2 0h0m2 0h0m3 0h0m1 0h0m1 0h0m1 0h0m1 0h0m1 0h0m1 0h0m1 0h0m2 0h0m1 0h0m1 0h0m1 0h0m1 0h0m1 0h0m1 0h0m-388 1h0m3 0h0m1 0h0m2 0h0m1 0h0m1 0h0m2 0h0m1 0h0m1 0h0m1 0h0m1 0h0m2 0h0m1 0h0m1 0h0m1 0h0m1 0h0m1 0h0m1 0h0m1 0h0m6 0h0m1 0h0m1 0h0m4 0h0m2 0h0m3 0h0m1 0h0m1 0h0m2 0h0m1 0h0m1 0h0m4 0h0m8 0h0m1 0h0m1 0h0m4 0h0m4 0h0m3 0h0m3 0h0m5 0h0m1 0h0m3 0h0m2 0h0m2 0h0m1 0h0m1 0h0m2 0h0m1 0h0m7 0h0m5 0h0m6 0h0m1 0h0m2 0h0m4 0h0m1 0h0m1 0h0m4 0h0m3 0h0m1 0h0m1 0h0m1 0h0m2 0h0m2 0h0m3 0h0m4 0h0m1 0h0m6 0h0m1 0h0m7 0h0m1 0h0m1 0h0m3 0h0m13 0h0m2 0h0m1 0h0m1 0h0m2 0h0m1 0h0m8 0h0m11 0h0m4 0h0m4 0h0m2 0h0m6 0h0m8 0h0m13 0h0m1 0h0m4 0h0m1 0h0m4 0h0m1 0h0m2 0h0m1 0h0m2 0h0m5 0h0m2 0h0m3 0h0m2 0h0m1 0h0m3 0h0m3 0h0m5 0h0m6 0h0m1 0h0m2 0h0m2 0h0m2 0h0m1 0h0m1 0h0m1 0h0m1 0h0m1 0h0m3 0h0m1 0h0m1 0h0m5 0h0m2 0h0m4 0h0m1 0h0m1 0h0m1 0h0m1 0h0m6 0h0m2 0h0m1 0h0m2 0h0m3 0h0m4 0h0m5 0h0m2 0h0m1 0h0m1 0h0m3 0h0m2 0h0m1 0h0m2 0h0m2 0h0m4 0h0m1 0h0m1 0h0m1 0h0m3 0h0m1 0h0m1 0h0m1 0h0m1 0h0m1 0h0m1 0h0m2 0h0m1 0h0m2 0h0m1 0h0m1 0h0m1 0h0m1 0h0m1 0h0m2 0h0m1 0h0m1 0h0m2 0h0m-378 1h0m1 0h0m3 0h0m1 0h0m1 0h0m4 0h0m2 0h0m1 0h0m2 0h0m3 0h0m5 0h0m1 0h0m1 0h0m2 0h0m1 0h0m2 0h0m1 0h0m2 0h0m1 0h0m12 0h0m3 0h0m1 0h0m6 0h0m1 0h0m3 0h0m6 0h0m2 0h0m1 0h0m1 0h0m6 0h0m1 0h0m3 0h0m8 0h0m6 0h0m1 0h0m2 0h0m5 0h0m2 0h0m2 0h0m3 0h0m1 0h0m7 0h0m5 0h0m6 0h0m11 0h0m3 0h0m3 0h0m3 0h0m3 0h0m6 0h0m1 0h0m14 0h0m3 0h0m1 0h0m1 0h0m2 0h0m1 0h0m2 0h0m2 0h0m3 0h0m1 0h0m2 0h0m10 0h0m3 0h0m5 0h0m1 0h0m1 0h0m2 0h0m1 0h0m2 0h0m1 0h0m1 0h0m1 0h0m5 0h0m6 0h0m2 0h0m3 0h0m2 0h0m3 0h0m2 0h0m8 0h0m1 0h0m3 0h0m10 0h0m1 0h0m4 0h0m2 0h0m1 0h0m13 0h0m1 0h0m9 0h0m5 0h0m2 0h0m4 0h0m1 0h0m1 0h0m1 0h0m4 0h0m1 0h0m1 0h0m6 0h0m1 0h0m2 0h0m4 0h0m1 0h0m1 0h0m1 0h0m1 0h0m2 0h0m1 0h0m2 0h0m2 0h0m1 0h0m2 0h0m2 0h0m2 0h0m1 0h0m2 0h0m1 0h0m1 0h0m1 0h0m1 0h0m2 0h0m3 0h0m3 0h0m1 0h0m1 0h0m2 0h0m1 0h0m1 0h0m1 0h0m1 0h0m1 0h0m1 0h0m1 0h0m1 0h0m2 0h0m-368 1h0m1 0h0m1 0h0m1 0h0m1 0h0m1 0h0m2 0h0m1 0h0m1 0h0m1 0h0m2 0h0m1 0h0m4 0h0m1 0h0m5 0h0m3 0h0m1 0h0m1 0h0m1 0h0m4 0h0m2 0h0m1 0h0m1 0h0m1 0h0m3 0h0m1 0h0m1 0h0m1 0h0m1 0h0m3 0h0m1 0h0m4 0h0m1 0h0m3 0h0m1 0h0m2 0h0m1 0h0m1 0h0m1 0h0m1 0h0m2 0h0m1 0h0m3 0h0m1 0h0m3 0h0m4 0h0m8 0h0m2 0h0m2 0h0m1 0h0m1 0h0m3 0h0m2 0h0m7 0h0m1 0h0m1 0h0m1 0h0m2 0h0m1 0h0m3 0h0m10 0h0m1 0h0m1 0h0m3 0h0m12 0h0m7 0h0m3 0h0m1 0h0m1 0h0m1 0h0m7 0h0m2 0h0m1 0h0m4 0h0m1 0h0m5 0h0m3 0h0m1 0h0m1 0h0m4 0h0m1 0h0m1 0h0m1 0h0m6 0h0m1 0h0m2 0h0m3 0h0m1 0h0m1 0h0m2 0h0m1 0h0m2 0h0m1 0h0m1 0h0m1 0h0m1 0h0m1 0h0m1 0h0m1 0h0m1 0h0m9 0h0m2 0h0m4 0h0m3 0h0m4 0h0m6 0h0m5 0h0m4 0h0m2 0h0m3 0h0m1 0h0m2 0h0m2 0h0m1 0h0m2 0h0m8 0h0m1 0h0m1 0h0m1 0h0m1 0h0m5 0h0m6 0h0m1 0h0m1 0h0m1 0h0m3 0h0m1 0h0m4 0h0m1 0h0m1 0h0m2 0h0m5 0h0m1 0h0m2 0h0m2 0h0m1 0h0m1 0h0m1 0h0m1 0h0m1 0h0m1 0h0m3 0h0m2 0h0m1 0h0m4 0h0m1 0h0m2 0h0m1 0h0m1 0h0m1 0h0m2 0h0m2 0h0m1 0h0m2 0h0m1 0h0m2 0h0m1 0h0m1 0h0m2 0h0m1 0h0m2 0h0m1 0h0m1 0h0m1 0h0m1 0h0m1 0h0m2 0h0m1 0h0m1 0h0m1 0h0m2 0h0m1 0h0m1 0h0m-360 1h0m1 0h0m1 0h0m1 0h0m1 0h0m1 0h0m2 0h0m1 0h0m1 0h0m1 0h0m2 0h0m2 0h0m1 0h0m1 0h0m1 0h0m1 0h0m1 0h0m1 0h0m3 0h0m1 0h0m1 0h0m1 0h0m2 0h0m1 0h0m3 0h0m1 0h0m1 0h0m1 0h0m1 0h0m3 0h0m2 0h0m1 0h0m1 0h0m1 0h0m2 0h0m1 0h0m1 0h0m4 0h0m7 0h0m2 0h0m3 0h0m3 0h0m1 0h0m1 0h0m1 0h0m2 0h0m1 0h0m1 0h0m1 0h0m4 0h0m1 0h0m4 0h0m1 0h0m4 0h0m2 0h0m3 0h0m3 0h0m5 0h0m5 0h0m2 0h0m2 0h0m1 0h0m1 0h0m1 0h0m1 0h0m3 0h0m2 0h0m1 0h0m1 0h0m1 0h0m1 0h0m8 0h0m1 0h0m3 0h0m1 0h0m1 0h0m1 0h0m1 0h0m14 0h0m1 0h0m5 0h0m1 0h0m1 0h0m4 0h0m1 0h0m1 0h0m4 0h0m1 0h0m1 0h0m1 0h0m2 0h0m2 0h0m5 0h0m2 0h0m3 0h0m2 0h0m1 0h0m1 0h0m1 0h0m5 0h0m5 0h0m1 0h0m7 0h0m3 0h0m1 0h0m5 0h0m3 0h0m1 0h0m3 0h0m3 0h0m1 0h0m1 0h0m3 0h0m1 0h0m1 0h0m2 0h0m1 0h0m1 0h0m1 0h0m2 0h0m4 0h0m1 0h0m3 0h0m2 0h0m1 0h0m1 0h0m2 0h0m1 0h0m2 0h0m2 0h0m1 0h0m3 0h0m4 0h0m3 0h0m2 0h0m3 0h0m1 0h0m1 0h0m3 0h0m4 0h0m2 0h0m6 0h0m7 0h0m3 0h0m2 0h0m1 0h0m2 0h0m2 0h0m2 0h0m2 0h0m1 0h0m1 0h0m1 0h0m1 0h0m1 0h0m3 0h0m2 0h0m2 0h0m2 0h0m2 0h0m1 0h0m1 0h0m2 0h0m1 0h0m2 0h0m1 0h0m1 0h0m2 0h0m1 0h0m1 0h0m1 0h0m1 0h0m1 0h0m2 0h0m1 0h0m1 0h0m1 0h0m1 0h0m-350 1h0m1 0h0m1 0h0m4 0h0m5 0h0m1 0h0m1 0h0m1 0h0m1 0h0m1 0h0m1 0h0m3 0h0m2 0h0m4 0h0m5 0h0m2 0h0m1 0h0m3 0h0m1 0h0m1 0h0m2 0h0m1 0h0m1 0h0m3 0h0m3 0h0m1 0h0m4 0h0m1 0h0m1 0h0m2 0h0m2 0h0m1 0h0m3 0h0m2 0h0m1 0h0m4 0h0m4 0h0m6 0h0m1 0h0m2 0h0m3 0h0m3 0h0m1 0h0m1 0h0m5 0h0m8 0h0m5 0h0m3 0h0m6 0h0m3 0h0m2 0h0m7 0h0m8 0h0m3 0h0m1 0h0m1 0h0m1 0h0m2 0h0m4 0h0m1 0h0m5 0h0m1 0h0m4 0h0m13 0h0m4 0h0m5 0h0m9 0h0m1 0h0m1 0h0m1 0h0m1 0h0m2 0h0m4 0h0m2 0h0m2 0h0m1 0h0m1 0h0m2 0h0m2 0h0m2 0h0m1 0h0m3 0h0m1 0h0m2 0h0m1 0h0m4 0h0m2 0h0m1 0h0m1 0h0m1 0h0m5 0h0m2 0h0m1 0h0m2 0h0m2 0h0m1 0h0m1 0h0m1 0h0m3 0h0m5 0h0m2 0h0m2 0h0m1 0h0m2 0h0m1 0h0m3 0h0m5 0h0m3 0h0m1 0h0m2 0h0m2 0h0m1 0h0m3 0h0m1 0h0m1 0h0m6 0h0m1 0h0m1 0h0m5 0h0m2 0h0m2 0h0m1 0h0m1 0h0m1 0h0m3 0h0m2 0h0m2 0h0m2 0h0m2 0h0m1 0h0m1 0h0m1 0h0m1 0h0m1 0h0m1 0h0m3 0h0m1 0h0m1 0h0m1 0h0m1 0h0m1 0h0m1 0h0m1 0h0m1 0h0m2 0h0m1 0h0m1 0h0m2 0h0m1 0h0m1 0h0m1 0h0m1 0h0m1 0h0m1 0h0m1 0h0m-342 1h0m2 0h0m1 0h0m1 0h0m1 0h0m1 0h0m1 0h0m2 0h0m2 0h0m2 0h0m3 0h0m1 0h0m3 0h0m1 0h0m1 0h0m1 0h0m1 0h0m4 0h0m1 0h0m3 0h0m2 0h0m1 0h0m1 0h0m3 0h0m1 0h0m2 0h0m4 0h0m2 0h0m5 0h0m3 0h0m4 0h0m1 0h0m3 0h0m1 0h0m2 0h0m5 0h0m1 0h0m2 0h0m4 0h0m2 0h0m5 0h0m1 0h0m1 0h0m1 0h0m1 0h0m3 0h0m4 0h0m3 0h0m1 0h0m2 0h0m4 0h0m2 0h0m2 0h0m2 0h0m2 0h0m12 0h0m1 0h0m10 0h0m3 0h0m1 0h0m4 0h0m2 0h0m1 0h0m1 0h0m1 0h0m2 0h0m1 0h0m5 0h0m1 0h0m3 0h0m1 0h0m2 0h0m1 0h0m2 0h0m2 0h0m2 0h0m4 0h0m4 0h0m1 0h0m1 0h0m6 0h0m1 0h0m1 0h0m1 0h0m2 0h0m6 0h0m3 0h0m3 0h0m2 0h0m1 0h0m2 0h0m8 0h0m2 0h0m1 0h0m1 0h0m2 0h0m1 0h0m3 0h0m1 0h0m1 0h0m1 0h0m1 0h0m1 0h0m1 0h0m1 0h0m1 0h0m1 0h0m4 0h0m1 0h0m2 0h0m5 0h0m1 0h0m5 0h0m1 0h0m2 0h0m1 0h0m2 0h0m3 0h0m1 0h0m1 0h0m1 0h0m3 0h0m2 0h0m2 0h0m4 0h0m1 0h0m3 0h0m1 0h0m1 0h0m1 0h0m1 0h0m1 0h0m1 0h0m1 0h0m1 0h0m1 0h0m2 0h0m1 0h0m1 0h0m1 0h0m3 0h0m1 0h0m2 0h0m1 0h0m2 0h0m1 0h0m1 0h0m1 0h0m1 0h0m2 0h0m1 0h0m1 0h0m1 0h0m2 0h0m2 0h0m1 0h0m2 0h0m1 0h0m1 0h0m2 0h0m1 0h0m1 0h0m1 0h0m1 0h0m3 0h0m3 0h0m1 0h0m-332 1h0m1 0h0m2 0h0m1 0h0m1 0h0m1 0h0m1 0h0m1 0h0m2 0h0m1 0h0m1 0h0m1 0h0m1 0h0m2 0h0m2 0h0m1 0h0m2 0h0m2 0h0m1 0h0m1 0h0m2 0h0m1 0h0m1 0h0m2 0h0m2 0h0m1 0h0m1 0h0m1 0h0m2 0h0m2 0h0m1 0h0m1 0h0m2 0h0m1 0h0m1 0h0m1 0h0m1 0h0m1 0h0m1 0h0m1 0h0m2 0h0m1 0h0m1 0h0m2 0h0m1 0h0m3 0h0m5 0h0m3 0h0m2 0h0m1 0h0m1 0h0m1 0h0m2 0h0m8 0h0m2 0h0m1 0h0m2 0h0m1 0h0m6 0h0m3 0h0m7 0h0m1 0h0m1 0h0m5 0h0m1 0h0m2 0h0m1 0h0m4 0h0m1 0h0m3 0h0m2 0h0m1 0h0m2 0h0m1 0h0m1 0h0m1 0h0m1 0h0m3 0h0m4 0h0m2 0h0m1 0h0m1 0h0m7 0h0m2 0h0m2 0h0m1 0h0m2 0h0m2 0h0m2 0h0m5 0h0m1 0h0m2 0h0m1 0h0m2 0h0m3 0h0m4 0h0m4 0h0m1 0h0m1 0h0m4 0h0m1 0h0m1 0h0m1 0h0m1 0h0m1 0h0m6 0h0m4 0h0m1 0h0m1 0h0m1 0h0m2 0h0m5 0h0m1 0h0m2 0h0m2 0h0m2 0h0m2 0h0m2 0h0m1 0h0m3 0h0m1 0h0m1 0h0m2 0h0m2 0h0m2 0h0m1 0h0m5 0h0m1 0h0m2 0h0m1 0h0m1 0h0m2 0h0m3 0h0m1 0h0m3 0h0m1 0h0m2 0h0m3 0h0m2 0h0m1 0h0m1 0h0m3 0h0m1 0h0m1 0h0m1 0h0m2 0h0m2 0h0m1 0h0m2 0h0m1 0h0m1 0h0m1 0h0m2 0h0m2 0h0m1 0h0m1 0h0m1 0h0m1 0h0m2 0h0m1 0h0m1 0h0m1 0h0m4 0h0m1 0h0m1 0h0m1 0h0m3 0h0m2 0h0m1 0h0m1 0h0m1 0h0m1 0h0m1 0h0m1 0h0m1 0h0m1 0h0m1 0h0m1 0h0m3 0h0m1 0h0m2 0h0m1 0h0m1 0h0m-324 1h0m1 0h0m1 0h0m1 0h0m2 0h0m1 0h0m1 0h0m1 0h0m1 0h0m2 0h0m2 0h0m2 0h0m1 0h0m1 0h0m2 0h0m1 0h0m1 0h0m1 0h0m1 0h0m1 0h0m2 0h0m1 0h0m1 0h0m1 0h0m1 0h0m1 0h0m1 0h0m1 0h0m3 0h0m1 0h0m1 0h0m1 0h0m2 0h0m1 0h0m1 0h0m1 0h0m5 0h0m1 0h0m7 0h0m1 0h0m1 0h0m3 0h0m1 0h0m1 0h0m1 0h0m3 0h0m1 0h0m3 0h0m3 0h0m3 0h0m1 0h0m1 0h0m9 0h0m2 0h0m4 0h0m6 0h0m1 0h0m4 0h0m2 0h0m2 0h0m1 0h0m2 0h0m1 0h0m2 0h0m3 0h0m4 0h0m1 0h0m4 0h0m2 0h0m1 0h0m2 0h0m2 0h0m1 0h0m2 0h0m1 0h0m1 0h0m1 0h0m1 0h0m2 0h0m6 0h0m1 0h0m1 0h0m1 0h0m2 0h0m3 0h0m1 0h0m1 0h0m2 0h0m3 0h0m1 0h0m1 0h0m1 0h0m4 0h0m2 0h0m1 0h0m4 0h0m1 0h0m1 0h0m1 0h0m4 0h0m1 0h0m1 0h0m3 0h0m1 0h0m3 0h0m2 0h0m1 0h0m6 0h0m1 0h0m1 0h0m1 0h0m1 0h0m3 0h0m1 0h0m1 0h0m1 0h0m7 0h0m2 0h0m7 0h0m4 0h0m1 0h0m3 0h0m4 0h0m1 0h0m1 0h0m3 0h0m1 0h0m3 0h0m1 0h0m1 0h0m2 0h0m1 0h0m2 0h0m1 0h0m1 0h0m1 0h0m2 0h0m2 0h0m1 0h0m1 0h0m2 0h0m1 0h0m1 0h0m1 0h0m1 0h0m2 0h0m1 0h0m1 0h0m2 0h0m1 0h0m2 0h0m1 0h0m1 0h0m1 0h0m1 0h0m1 0h0m1 0h0m1 0h0m2 0h0m1 0h0m1 0h0m1 0h0m4 0h0m1 0h0m1 0h0m1 0h0m1 0h0m1 0h0m1 0h0m1 0h0m1 0h0m1 0h0m2 0h0m1 0h0m1 0h0m1 0h0m1 0h0m1 0h0m1 0h0m1 0h0m2 0h0m1 0h0m-313 1h0m1 0h0m1 0h0m2 0h0m1 0h0m1 0h0m1 0h0m1 0h0m3 0h0m1 0h0m1 0h0m1 0h0m4 0h0m2 0h0m1 0h0m1 0h0m5 0h0m2 0h0m3 0h0m1 0h0m1 0h0m5 0h0m1 0h0m3 0h0m1 0h0m1 0h0m1 0h0m2 0h0m4 0h0m2 0h0m1 0h0m1 0h0m1 0h0m4 0h0m3 0h0m3 0h0m4 0h0m2 0h0m1 0h0m1 0h0m3 0h0m2 0h0m1 0h0m4 0h0m2 0h0m1 0h0m1 0h0m1 0h0m2 0h0m2 0h0m1 0h0m2 0h0m1 0h0m1 0h0m1 0h0m2 0h0m5 0h0m4 0h0m1 0h0m1 0h0m2 0h0m3 0h0m6 0h0m4 0h0m1 0h0m3 0h0m4 0h0m1 0h0m2 0h0m1 0h0m1 0h0m3 0h0m6 0h0m1 0h0m7 0h0m5 0h0m2 0h0m1 0h0m1 0h0m1 0h0m1 0h0m4 0h0m2 0h0m4 0h0m1 0h0m4 0h0m1 0h0m3 0h0m5 0h0m1 0h0m1 0h0m3 0h0m1 0h0m4 0h0m1 0h0m5 0h0m2 0h0m1 0h0m1 0h0m1 0h0m1 0h0m2 0h0m1 0h0m1 0h0m1 0h0m2 0h0m4 0h0m1 0h0m2 0h0m3 0h0m1 0h0m1 0h0m1 0h0m2 0h0m1 0h0m1 0h0m1 0h0m10 0h0m2 0h0m5 0h0m3 0h0m1 0h0m3 0h0m1 0h0m1 0h0m2 0h0m4 0h0m2 0h0m2 0h0m1 0h0m1 0h0m2 0h0m1 0h0m1 0h0m1 0h0m4 0h0m1 0h0m4 0h0m1 0h0m1 0h0m1 0h0m1 0h0m2 0h0m1 0h0m2 0h0m1 0h0m2 0h0m1 0h0m1 0h0m1 0h0m1 0h0m-304 1h0m1 0h0m1 0h0m1 0h0m1 0h0m1 0h0m2 0h0m2 0h0m2 0h0m1 0h0m2 0h0m2 0h0m1 0h0m1 0h0m1 0h0m2 0h0m1 0h0m1 0h0m1 0h0m1 0h0m3 0h0m1 0h0m1 0h0m1 0h0m1 0h0m1 0h0m1 0h0m1 0h0m1 0h0m2 0h0m1 0h0m1 0h0m2 0h0m4 0h0m2 0h0m2 0h0m2 0h0m3 0h0m2 0h0m5 0h0m6 0h0m4 0h0m2 0h0m2 0h0m1 0h0m8 0h0m7 0h0m2 0h0m4 0h0m1 0h0m1 0h0m2 0h0m1 0h0m1 0h0m1 0h0m5 0h0m2 0h0m5 0h0m3 0h0m3 0h0m3 0h0m1 0h0m1 0h0m3 0h0m1 0h0m2 0h0m1 0h0m1 0h0m1 0h0m1 0h0m1 0h0m1 0h0m3 0h0m1 0h0m1 0h0m1 0h0m2 0h0m1 0h0m1 0h0m1 0h0m3 0h0m1 0h0m1 0h0m1 0h0m1 0h0m2 0h0m2 0h0m2 0h0m1 0h0m1 0h0m1 0h0m1 0h0m1 0h0m1 0h0m2 0h0m1 0h0m1 0h0m1 0h0m5 0h0m3 0h0m1 0h0m8 0h0m1 0h0m2 0h0m1 0h0m4 0h0m1 0h0m7 0h0m3 0h0m2 0h0m5 0h0m3 0h0m1 0h0m2 0h0m3 0h0m2 0h0m2 0h0m2 0h0m1 0h0m1 0h0m3 0h0m3 0h0m7 0h0m4 0h0m2 0h0m1 0h0m2 0h0m3 0h0m1 0h0m3 0h0m1 0h0m1 0h0m1 0h0m1 0h0m1 0h0m1 0h0m1 0h0m2 0h0m1 0h0m1 0h0m1 0h0m1 0h0m2 0h0m1 0h0m1 0h0m1 0h0m1 0h0m1 0h0m3 0h0m2 0h0m1 0h0m1 0h0m2 0h0m1 0h0m1 0h0m1 0h0m1 0h0m1 0h0m1 0h0m1 0h0m-295 1h0m1 0h0m1 0h0m1 0h0m2 0h0m1 0h0m4 0h0m3 0h0m1 0h0m1 0h0m1 0h0m1 0h0m1 0h0m1 0h0m1 0h0m1 0h0m2 0h0m5 0h0m1 0h0m1 0h0m1 0h0m2 0h0m1 0h0m2 0h0m1 0h0m1 0h0m1 0h0m1 0h0m2 0h0m1 0h0m1 0h0m1 0h0m2 0h0m1 0h0m1 0h0m1 0h0m3 0h0m3 0h0m1 0h0m1 0h0m1 0h0m1 0h0m1 0h0m1 0h0m2 0h0m1 0h0m2 0h0m5 0h0m1 0h0m1 0h0m1 0h0m4 0h0m1 0h0m3 0h0m2 0h0m1 0h0m2 0h0m6 0h0m2 0h0m1 0h0m2 0h0m1 0h0m1 0h0m1 0h0m1 0h0m5 0h0m1 0h0m1 0h0m1 0h0m2 0h0m3 0h0m1 0h0m1 0h0m3 0h0m2 0h0m2 0h0m1 0h0m3 0h0m4 0h0m3 0h0m1 0h0m3 0h0m2 0h0m1 0h0m1 0h0m1 0h0m1 0h0m1 0h0m2 0h0m1 0h0m1 0h0m2 0h0m1 0h0m1 0h0m1 0h0m1 0h0m1 0h0m1 0h0m1 0h0m1 0h0m2 0h0m2 0h0m1 0h0m1 0h0m1 0h0m1 0h0m5 0h0m1 0h0m1 0h0m2 0h0m4 0h0m2 0h0m2 0h0m1 0h0m1 0h0m2 0h0m3 0h0m1 0h0m1 0h0m3 0h0m2 0h0m7 0h0m1 0h0m4 0h0m8 0h0m4 0h0m1 0h0m3 0h0m2 0h0m1 0h0m1 0h0m1 0h0m2 0h0m2 0h0m3 0h0m3 0h0m2 0h0m1 0h0m1 0h0m1 0h0m1 0h0m1 0h0m1 0h0m6 0h0m1 0h0m3 0h0m1 0h0m1 0h0m1 0h0m2 0h0m2 0h0m1 0h0m1 0h0m2 0h0m1 0h0m1 0h0m2 0h0m1 0h0m1 0h0m2 0h0m1 0h0m1 0h0m2 0h0m1 0h0m2 0h0m1 0h0m1 0h0m1 0h0m1 0h0m-287 1h0m1 0h0m1 0h0m1 0h0m2 0h0m1 0h0m1 0h0m1 0h0m1 0h0m1 0h0m1 0h0m1 0h0m1 0h0m1 0h0m1 0h0m1 0h0m1 0h0m1 0h0m2 0h0m1 0h0m1 0h0m1 0h0m2 0h0m2 0h0m1 0h0m1 0h0m1 0h0m1 0h0m2 0h0m1 0h0m1 0h0m1 0h0m4 0h0m2 0h0m1 0h0m1 0h0m1 0h0m1 0h0m1 0h0m1 0h0m3 0h0m1 0h0m2 0h0m1 0h0m2 0h0m1 0h0m1 0h0m1 0h0m2 0h0m1 0h0m3 0h0m1 0h0m2 0h0m1 0h0m4 0h0m2 0h0m5 0h0m1 0h0m1 0h0m1 0h0m1 0h0m6 0h0m3 0h0m1 0h0m2 0h0m3 0h0m2 0h0m1 0h0m1 0h0m8 0h0m1 0h0m3 0h0m1 0h0m1 0h0m1 0h0m1 0h0m2 0h0m1 0h0m1 0h0m1 0h0m1 0h0m2 0h0m1 0h0m2 0h0m1 0h0m2 0h0m1 0h0m1 0h0m2 0h0m1 0h0m2 0h0m2 0h0m2 0h0m2 0h0m1 0h0m3 0h0m2 0h0m2 0h0m1 0h0m2 0h0m1 0h0m1 0h0m1 0h0m2 0h0m1 0h0m1 0h0m7 0h0m4 0h0m1 0h0m2 0h0m5 0h0m1 0h0m2 0h0m1 0h0m5 0h0m1 0h0m1 0h0m1 0h0m3 0h0m1 0h0m1 0h0m4 0h0m1 0h0m1 0h0m1 0h0m2 0h0m2 0h0m1 0h0m2 0h0m1 0h0m2 0h0m1 0h0m1 0h0m1 0h0m1 0h0m1 0h0m1 0h0m1 0h0m1 0h0m1 0h0m3 0h0m1 0h0m1 0h0m1 0h0m1 0h0m1 0h0m1 0h0m1 0h0m2 0h0m2 0h0m2 0h0m1 0h0m1 0h0m2 0h0m2 0h0m1 0h0m1 0h0m1 0h0m1 0h0m2 0h0m1 0h0m1 0h0m4 0h0m1 0h0m1 0h0m2 0h0m1 0h0m1 0h0m1 0h0m1 0h0m2 0h0m2 0h0m1 0h0m1 0h0m1 0h0m2 0h0m1 0h0m1 0h0m1 0h0m1 0h0m1 0h0m-277 1h0m1 0h0m1 0h0m1 0h0m1 0h0m1 0h0m4 0h0m1 0h0m2 0h0m1 0h0m1 0h0m1 0h0m1 0h0m1 0h0m2 0h0m1 0h0m1 0h0m1 0h0m1 0h0m2 0h0m6 0h0m1 0h0m1 0h0m4 0h0m2 0h0m2 0h0m1 0h0m1 0h0m3 0h0m1 0h0m1 0h0m3 0h0m1 0h0m1 0h0m1 0h0m1 0h0m1 0h0m1 0h0m3 0h0m1 0h0m10 0h0m3 0h0m1 0h0m1 0h0m1 0h0m3 0h0m3 0h0m1 0h0m2 0h0m4 0h0m8 0h0m1 0h0m4 0h0m1 0h0m1 0h0m3 0h0m1 0h0m2 0h0m2 0h0m1 0h0m2 0h0m1 0h0m1 0h0m1 0h0m1 0h0m3 0h0m3 0h0m2 0h0m4 0h0m2 0h0m3 0h0m1 0h0m1 0h0m1 0h0m1 0h0m4 0h0m3 0h0m1 0h0m1 0h0m3 0h0m1 0h0m2 0h0m1 0h0m2 0h0m1 0h0m2 0h0m2 0h0m4 0h0m2 0h0m1 0h0m1 0h0m2 0h0m2 0h0m1 0h0m2 0h0m2 0h0m1 0h0m1 0h0m1 0h0m1 0h0m2 0h0m1 0h0m1 0h0m4 0h0m2 0h0m1 0h0m3 0h0m1 0h0m2 0h0m2 0h0m3 0h0m1 0h0m1 0h0m1 0h0m1 0h0m2 0h0m4 0h0m1 0h0m1 0h0m2 0h0m2 0h0m1 0h0m1 0h0m1 0h0m3 0h0m1 0h0m1 0h0m2 0h0m1 0h0m3 0h0m2 0h0m5 0h0m1 0h0m1 0h0m1 0h0m1 0h0m1 0h0m1 0h0m2 0h0m1 0h0m1 0h0m1 0h0m1 0h0m1 0h0m1 0h0m1 0h0m1 0h0m2 0h0m1 0h0m2 0h0m2 0h0m1 0h0m1 0h0m1 0h0m1 0h0m1 0h0m-268 1h0m1 0h0m2 0h0m1 0h0m1 0h0m2 0h0m1 0h0m1 0h0m1 0h0m2 0h0m1 0h0m1 0h0m1 0h0m1 0h0m3 0h0m2 0h0m1 0h0m1 0h0m4 0h0m5 0h0m1 0h0m2 0h0m2 0h0m1 0h0m1 0h0m1 0h0m2 0h0m1 0h0m2 0h0m3 0h0m2 0h0m1 0h0m1 0h0m3 0h0m3 0h0m3 0h0m5 0h0m1 0h0m4 0h0m2 0h0m3 0h0m2 0h0m1 0h0m1 0h0m1 0h0m1 0h0m4 0h0m2 0h0m1 0h0m2 0h0m1 0h0m3 0h0m1 0h0m1 0h0m3 0h0m1 0h0m1 0h0m1 0h0m2 0h0m1 0h0m1 0h0m1 0h0m1 0h0m1 0h0m4 0h0m1 0h0m2 0h0m2 0h0m2 0h0m1 0h0m3 0h0m2 0h0m1 0h0m2 0h0m2 0h0m2 0h0m2 0h0m1 0h0m1 0h0m1 0h0m1 0h0m1 0h0m1 0h0m1 0h0m3 0h0m1 0h0m1 0h0m4 0h0m1 0h0m4 0h0m2 0h0m3 0h0m1 0h0m1 0h0m2 0h0m1 0h0m1 0h0m3 0h0m1 0h0m3 0h0m1 0h0m1 0h0m4 0h0m3 0h0m1 0h0m1 0h0m1 0h0m1 0h0m1 0h0m1 0h0m1 0h0m2 0h0m1 0h0m1 0h0m1 0h0m3 0h0m4 0h0m3 0h0m1 0h0m2 0h0m2 0h0m3 0h0m2 0h0m1 0h0m1 0h0m1 0h0m2 0h0m1 0h0m1 0h0m1 0h0m2 0h0m1 0h0m5 0h0m1 0h0m2 0h0m1 0h0m1 0h0m1 0h0m1 0h0m1 0h0m1 0h0m1 0h0m2 0h0m1 0h0m3 0h0m1 0h0m2 0h0m1 0h0m3 0h0m1 0h0m3 0h0m1 0h0m2 0h0m1 0h0m1 0h0m-259 1h0m1 0h0m1 0h0m1 0h0m1 0h0m1 0h0m1 0h0m1 0h0m1 0h0m1 0h0m1 0h0m1 0h0m1 0h0m1 0h0m1 0h0m1 0h0m1 0h0m1 0h0m1 0h0m1 0h0m1 0h0m2 0h0m1 0h0m1 0h0m1 0h0m2 0h0m1 0h0m1 0h0m2 0h0m1 0h0m1 0h0m1 0h0m1 0h0m1 0h0m1 0h0m3 0h0m2 0h0m3 0h0m1 0h0m2 0h0m2 0h0m3 0h0m2 0h0m1 0h0m1 0h0m2 0h0m1 0h0m3 0h0m1 0h0m1 0h0m2 0h0m1 0h0m1 0h0m1 0h0m5 0h0m1 0h0m1 0h0m1 0h0m4 0h0m2 0h0m1 0h0m1 0h0m1 0h0m2 0h0m1 0h0m2 0h0m1 0h0m1 0h0m3 0h0m1 0h0m1 0h0m1 0h0m1 0h0m2 0h0m3 0h0m1 0h0m1 0h0m2 0h0m2 0h0m1 0h0m2 0h0m1 0h0m1 0h0m2 0h0m1 0h0m5 0h0m1 0h0m1 0h0m1 0h0m2 0h0m1 0h0m2 0h0m1 0h0m6 0h0m2 0h0m2 0h0m2 0h0m1 0h0m2 0h0m2 0h0m1 0h0m2 0h0m1 0h0m4 0h0m2 0h0m2 0h0m1 0h0m2 0h0m1 0h0m1 0h0m1 0h0m3 0h0m2 0h0m2 0h0m1 0h0m2 0h0m1 0h0m2 0h0m2 0h0m1 0h0m1 0h0m2 0h0m1 0h0m1 0h0m4 0h0m1 0h0m5 0h0m1 0h0m2 0h0m1 0h0m1 0h0m2 0h0m3 0h0m1 0h0m1 0h0m1 0h0m1 0h0m3 0h0m2 0h0m2 0h0m1 0h0m1 0h0m2 0h0m1 0h0m3 0h0m1 0h0m1 0h0m1 0h0m1 0h0m2 0h0m1 0h0m1 0h0m1 0h0m2 0h0m2 0h0m1 0h0m1 0h0m1 0h0m1 0h0m2 0h0m1 0h0m1 0h0m2 0h0m1 0h0m1 0h0m-249 1h0m1 0h0m1 0h0m1 0h0m1 0h0m2 0h0m1 0h0m2 0h0m1 0h0m1 0h0m4 0h0m1 0h0m1 0h0m3 0h0m2 0h0m2 0h0m1 0h0m1 0h0m1 0h0m2 0h0m3 0h0m1 0h0m1 0h0m3 0h0m2 0h0m1 0h0m2 0h0m2 0h0m1 0h0m1 0h0m1 0h0m1 0h0m1 0h0m2 0h0m2 0h0m1 0h0m2 0h0m1 0h0m1 0h0m1 0h0m1 0h0m1 0h0m1 0h0m2 0h0m3 0h0m2 0h0m5 0h0m1 0h0m2 0h0m2 0h0m2 0h0m1 0h0m1 0h0m2 0h0m2 0h0m1 0h0m1 0h0m1 0h0m2 0h0m3 0h0m3 0h0m1 0h0m4 0h0m1 0h0m2 0h0m4 0h0m1 0h0m1 0h0m1 0h0m1 0h0m2 0h0m1 0h0m1 0h0m1 0h0m1 0h0m3 0h0m5 0h0m2 0h0m2 0h0m4 0h0m1 0h0m1 0h0m1 0h0m2 0h0m1 0h0m1 0h0m1 0h0m1 0h0m1 0h0m1 0h0m2 0h0m1 0h0m2 0h0m3 0h0m1 0h0m2 0h0m3 0h0m1 0h0m2 0h0m1 0h0m2 0h0m1 0h0m2 0h0m1 0h0m1 0h0m1 0h0m1 0h0m1 0h0m2 0h0m3 0h0m1 0h0m1 0h0m1 0h0m3 0h0m1 0h0m3 0h0m1 0h0m3 0h0m1 0h0m1 0h0m1 0h0m1 0h0m1 0h0m1 0h0m1 0h0m2 0h0m3 0h0m1 0h0m1 0h0m2 0h0m2 0h0m1 0h0m2 0h0m1 0h0m1 0h0m1 0h0m4 0h0m1 0h0m1 0h0m1 0h0m1 0h0m1 0h0m1 0h0m1 0h0m1 0h0m1 0h0m1 0h0m4 0h0m2 0h0m1 0h0m1 0h0m1 0h0m1 0h0m1 0h0m1 0h0m-240 1h0m1 0h0m2 0h0m1 0h0m1 0h0m1 0h0m1 0h0m2 0h0m1 0h0m2 0h0m1 0h0m1 0h0m1 0h0m1 0h0m1 0h0m2 0h0m1 0h0m1 0h0m1 0h0m1 0h0m1 0h0m1 0h0m1 0h0m2 0h0m5 0h0m1 0h0m5 0h0m1 0h0m2 0h0m3 0h0m1 0h0m3 0h0m2 0h0m1 0h0m1 0h0m1 0h0m2 0h0m1 0h0m1 0h0m2 0h0m2 0h0m3 0h0m2 0h0m3 0h0m1 0h0m2 0h0m2 0h0m1 0h0m3 0h0m1 0h0m1 0h0m3 0h0m3 0h0m1 0h0m1 0h0m1 0h0m1 0h0m2 0h0m2 0h0m1 0h0m1 0h0m1 0h0m1 0h0m1 0h0m3 0h0m1 0h0m1 0h0m1 0h0m1 0h0m2 0h0m3 0h0m2 0h0m1 0h0m5 0h0m1 0h0m1 0h0m1 0h0m2 0h0m2 0h0m1 0h0m1 0h0m2 0h0m1 0h0m2 0h0m1 0h0m3 0h0m1 0h0m1 0h0m1 0h0m1 0h0m2 0h0m1 0h0m2 0h0m1 0h0m1 0h0m2 0h0m2 0h0m1 0h0m1 0h0m1 0h0m1 0h0m2 0h0m2 0h0m1 0h0m2 0h0m1 0h0m1 0h0m3 0h0m2 0h0m3 0h0m1 0h0m3 0h0m1 0h0m1 0h0m1 0h0m2 0h0m2 0h0m1 0h0m2 0h0m1 0h0m1 0h0m1 0h0m1 0h0m2 0h0m2 0h0m1 0h0m1 0h0m1 0h0m1 0h0m1 0h0m1 0h0m3 0h0m3 0h0m1 0h0m1 0h0m1 0h0m2 0h0m1 0h0m1 0h0m1 0h0m1 0h0m1 0h0m1 0h0m3 0h0m1 0h0m2 0h0m1 0h0m2 0h0m1 0h0m1 0h0m3 0h0m1 0h0m2 0h0m-231 1h0m1 0h0m1 0h0m1 0h0m1 0h0m1 0h0m4 0h0m2 0h0m1 0h0m3 0h0m1 0h0m1 0h0m2 0h0m8 0h0m3 0h0m2 0h0m1 0h0m2 0h0m3 0h0m2 0h0m1 0h0m1 0h0m1 0h0m1 0h0m1 0h0m1 0h0m1 0h0m1 0h0m1 0h0m2 0h0m1 0h0m2 0h0m1 0h0m1 0h0m1 0h0m3 0h0m2 0h0m1 0h0m1 0h0m2 0h0m1 0h0m1 0h0m1 0h0m1 0h0m1 0h0m1 0h0m2 0h0m3 0h0m1 0h0m1 0h0m1 0h0m1 0h0m1 0h0m1 0h0m1 0h0m1 0h0m4 0h0m2 0h0m1 0h0m1 0h0m2 0h0m1 0h0m1 0h0m2 0h0m1 0h0m2 0h0m1 0h0m1 0h0m2 0h0m1 0h0m1 0h0m2 0h0m1 0h0m1 0h0m2 0h0m1 0h0m5 0h0m1 0h0m1 0h0m1 0h0m2 0h0m3 0h0m2 0h0m2 0h0m1 0h0m1 0h0m1 0h0m1 0h0m2 0h0m1 0h0m1 0h0m1 0h0m1 0h0m1 0h0m2 0h0m1 0h0m1 0h0m1 0h0m2 0h0m2 0h0m5 0h0m2 0h0m1 0h0m1 0h0m1 0h0m1 0h0m1 0h0m2 0h0m1 0h0m1 0h0m1 0h0m2 0h0m3 0h0m1 0h0m3 0h0m1 0h0m3 0h0m2 0h0m1 0h0m2 0h0m2 0h0m1 0h0m2 0h0m2 0h0m1 0h0m1 0h0m1 0h0m1 0h0m1 0h0m1 0h0m1 0h0m1 0h0m1 0h0m1 0h0m1 0h0m1 0h0m1 0h0m1 0h0m2 0h0m2 0h0m1 0h0m1 0h0m1 0h0m1 0h0m1 0h0m2 0h0m1 0h0m1 0h0m1 0h0m1 0h0m1 0h0m1 0h0m1 0h0m-220 1h0m2 0h0m1 0h0m1 0h0m1 0h0m1 0h0m1 0h0m1 0h0m1 0h0m1 0h0m1 0h0m1 0h0m2 0h0m1 0h0m1 0h0m1 0h0m6 0h0m1 0h0m2 0h0m1 0h0m1 0h0m1 0h0m2 0h0m1 0h0m1 0h0m1 0h0m2 0h0m1 0h0m1 0h0m1 0h0m2 0h0m1 0h0m2 0h0m2 0h0m1 0h0m5 0h0m6 0h0m1 0h0m1 0h0m1 0h0m1 0h0m1 0h0m2 0h0m1 0h0m1 0h0m1 0h0m3 0h0m1 0h0m2 0h0m1 0h0m1 0h0m1 0h0m2 0h0m1 0h0m3 0h0m1 0h0m2 0h0m3 0h0m1 0h0m1 0h0m1 0h0m1 0h0m1 0h0m1 0h0m1 0h0m1 0h0m2 0h0m3 0h0m1 0h0m1 0h0m1 0h0m1 0h0m2 0h0m1 0h0m1 0h0m1 0h0m1 0h0m1 0h0m1 0h0m1 0h0m2 0h0m2 0h0m1 0h0m1 0h0m2 0h0m3 0h0m3 0h0m2 0h0m1 0h0m1 0h0m2 0h0m1 0h0m2 0h0m1 0h0m1 0h0m1 0h0m1 0h0m1 0h0m1 0h0m1 0h0m1 0h0m2 0h0m1 0h0m1 0h0m1 0h0m1 0h0m1 0h0m1 0h0m1 0h0m1 0h0m4 0h0m1 0h0m2 0h0m1 0h0m1 0h0m1 0h0m1 0h0m1 0h0m2 0h0m2 0h0m2 0h0m1 0h0m2 0h0m1 0h0m2 0h0m2 0h0m3 0h0m3 0h0m1 0h0m2 0h0m1 0h0m1 0h0m1 0h0m1 0h0m1 0h0m1 0h0m1 0h0m1 0h0m2 0h0m1 0h0m1 0h0m1 0h0m1 0h0m1 0h0m2 0h0m1 0h0m1 0h0m1 0h0m1 0h0m1 0h0m1 0h0m1 0h0m-212 1h0m1 0h0m1 0h0m1 0h0m1 0h0m1 0h0m1 0h0m2 0h0m2 0h0m1 0h0m2 0h0m1 0h0m1 0h0m2 0h0m2 0h0m1 0h0m2 0h0m1 0h0m1 0h0m1 0h0m1 0h0m1 0h0m4 0h0m2 0h0m1 0h0m2 0h0m1 0h0m2 0h0m1 0h0m1 0h0m1 0h0m2 0h0m2 0h0m4 0h0m2 0h0m1 0h0m1 0h0m1 0h0m1 0h0m1 0h0m1 0h0m1 0h0m1 0h0m1 0h0m1 0h0m1 0h0m2 0h0m1 0h0m1 0h0m1 0h0m2 0h0m2 0h0m1 0h0m1 0h0m1 0h0m1 0h0m1 0h0m1 0h0m1 0h0m1 0h0m1 0h0m1 0h0m3 0h0m2 0h0m1 0h0m1 0h0m1 0h0m1 0h0m1 0h0m1 0h0m2 0h0m3 0h0m1 0h0m1 0h0m3 0h0m2 0h0m2 0h0m1 0h0m1 0h0m2 0h0m1 0h0m1 0h0m1 0h0m1 0h0m2 0h0m1 0h0m2 0h0m1 0h0m1 0h0m1 0h0m2 0h0m1 0h0m1 0h0m1 0h0m1 0h0m1 0h0m4 0h0m1 0h0m3 0h0m1 0h0m1 0h0m1 0h0m1 0h0m1 0h0m1 0h0m2 0h0m1 0h0m1 0h0m1 0h0m1 0h0m2 0h0m2 0h0m2 0h0m1 0h0m2 0h0m1 0h0m1 0h0m1 0h0m1 0h0m1 0h0m1 0h0m3 0h0m1 0h0m2 0h0m1 0h0m1 0h0m1 0h0m2 0h0m1 0h0m2 0h0m1 0h0m1 0h0m1 0h0m1 0h0m2 0h0m1 0h0m4 0h0m2 0h0m2 0h0m2 0h0m2 0h0m1 0h0m1 0h0m1 0h0m1 0h0m1 0h0m1 0h0m1 0h0m1 0h0m2 0h0m-203 1h0m1 0h0m1 0h0m1 0h0m1 0h0m2 0h0m1 0h0m1 0h0m1 0h0m1 0h0m1 0h0m1 0h0m1 0h0m1 0h0m1 0h0m2 0h0m2 0h0m1 0h0m1 0h0m1 0h0m1 0h0m1 0h0m2 0h0m2 0h0m1 0h0m1 0h0m1 0h0m1 0h0m1 0h0m1 0h0m1 0h0m1 0h0m2 0h0m1 0h0m2 0h0m2 0h0m1 0h0m2 0h0m2 0h0m1 0h0m1 0h0m1 0h0m1 0h0m2 0h0m1 0h0m1 0h0m2 0h0m1 0h0m1 0h0m1 0h0m5 0h0m1 0h0m1 0h0m1 0h0m2 0h0m1 0h0m1 0h0m1 0h0m1 0h0m1 0h0m2 0h0m1 0h0m3 0h0m1 0h0m1 0h0m2 0h0m1 0h0m1 0h0m1 0h0m1 0h0m1 0h0m1 0h0m1 0h0m2 0h0m2 0h0m2 0h0m1 0h0m1 0h0m1 0h0m1 0h0m1 0h0m2 0h0m3 0h0m2 0h0m3 0h0m2 0h0m1 0h0m1 0h0m2 0h0m2 0h0m1 0h0m1 0h0m2 0h0m1 0h0m1 0h0m1 0h0m1 0h0m1 0h0m1 0h0m1 0h0m1 0h0m1 0h0m1 0h0m1 0h0m2 0h0m1 0h0m2 0h0m1 0h0m2 0h0m2 0h0m1 0h0m2 0h0m1 0h0m1 0h0m2 0h0m3 0h0m1 0h0m1 0h0m1 0h0m1 0h0m1 0h0m1 0h0m1 0h0m3 0h0m1 0h0m1 0h0m1 0h0m1 0h0m6 0h0m1 0h0m1 0h0m1 0h0m1 0h0m1 0h0m1 0h0m1 0h0m1 0h0m1 0h0m2 0h0m1 0h0m1 0h0m1 0h0m3 0h0m1 0h0m1 0h0m1 0h0m1 0h0m-192 1h0m1 0h0m2 0h0m1 0h0m1 0h0m1 0h0m2 0h0m1 0h0m3 0h0m1 0h0m1 0h0m1 0h0m1 0h0m1 0h0m1 0h0m2 0h0m1 0h0m1 0h0m1 0h0m1 0h0m1 0h0m1 0h0m1 0h0m1 0h0m2 0h0m2 0h0m1 0h0m1 0h0m1 0h0m1 0h0m1 0h0m2 0h0m3 0h0m1 0h0m1 0h0m1 0h0m1 0h0m1 0h0m1 0h0m1 0h0m1 0h0m1 0h0m1 0h0m1 0h0m1 0h0m2 0h0m1 0h0m1 0h0m1 0h0m1 0h0m3 0h0m1 0h0m3 0h0m1 0h0m1 0h0m1 0h0m1 0h0m1 0h0m1 0h0m1 0h0m1 0h0m1 0h0m1 0h0m1 0h0m1 0h0m2 0h0m1 0h0m1 0h0m1 0h0m4 0h0m1 0h0m1 0h0m1 0h0m1 0h0m2 0h0m1 0h0m1 0h0m1 0h0m3 0h0m1 0h0m1 0h0m1 0h0m1 0h0m1 0h0m1 0h0m2 0h0m1 0h0m1 0h0m1 0h0m1 0h0m1 0h0m1 0h0m1 0h0m1 0h0m1 0h0m1 0h0m1 0h0m1 0h0m1 0h0m1 0h0m1 0h0m1 0h0m1 0h0m1 0h0m1 0h0m1 0h0m1 0h0m1 0h0m1 0h0m1 0h0m4 0h0m1 0h0m1 0h0m3 0h0m1 0h0m1 0h0m3 0h0m1 0h0m1 0h0m1 0h0m2 0h0m1 0h0m1 0h0m2 0h0m2 0h0m1 0h0m1 0h0m1 0h0m1 0h0m1 0h0m1 0h0m2 0h0m2 0h0m1 0h0m1 0h0m1 0h0m2 0h0m1 0h0m1 0h0m1 0h0m1 0h0m3 0h0m1 0h0m1 0h0m1 0h0m1 0h0m1 0h0m1 0h0m1 0h0m1 0h0m-181 1h0m1 0h0m2 0h0m1 0h0m1 0h0m2 0h0m2 0h0m2 0h0m1 0h0m1 0h0m1 0h0m2 0h0m2 0h0m1 0h0m1 0h0m1 0h0m1 0h0m1 0h0m1 0h0m1 0h0m2 0h0m1 0h0m2 0h0m2 0h0m2 0h0m2 0h0m1 0h0m1 0h0m2 0h0m1 0h0m1 0h0m1 0h0m2 0h0m1 0h0m1 0h0m3 0h0m1 0h0m1 0h0m1 0h0m1 0h0m1 0h0m1 0h0m1 0h0m1 0h0m3 0h0m2 0h0m1 0h0m3 0h0m1 0h0m1 0h0m1 0h0m1 0h0m1 0h0m1 0h0m1 0h0m1 0h0m1 0h0m1 0h0m1 0h0m1 0h0m1 0h0m2 0h0m1 0h0m1 0h0m1 0h0m1 0h0m1 0h0m3 0h0m1 0h0m2 0h0m1 0h0m1 0h0m2 0h0m2 0h0m1 0h0m1 0h0m2 0h0m2 0h0m1 0h0m1 0h0m2 0h0m1 0h0m1 0h0m1 0h0m2 0h0m3 0h0m2 0h0m2 0h0m1 0h0m1 0h0m1 0h0m1 0h0m1 0h0m2 0h0m2 0h0m2 0h0m1 0h0m1 0h0m1 0h0m2 0h0m2 0h0m1 0h0m1 0h0m1 0h0m1 0h0m1 0h0m1 0h0m1 0h0m1 0h0m2 0h0m1 0h0m2 0h0m1 0h0m2 0h0m1 0h0m2 0h0m2 0h0m1 0h0m3 0h0m1 0h0m1 0h0m1 0h0m1 0h0m1 0h0m1 0h0m2 0h0m1 0h0m1 0h0m1 0h0m1 0h0m-174 1h0m1 0h0m1 0h0m1 0h0m1 0h0m2 0h0m1 0h0m1 0h0m1 0h0m1 0h0m1 0h0m1 0h0m1 0h0m1 0h0m1 0h0m1 0h0m1 0h0m1 0h0m1 0h0m2 0h0m1 0h0m1 0h0m1 0h0m1 0h0m1 0h0m1 0h0m2 0h0m2 0h0m2 0h0m1 0h0m3 0h0m1 0h0m1 0h0m1 0h0m1 0h0m1 0h0m1 0h0m1 0h0m1 0h0m1 0h0m1 0h0m2 0h0m2 0h0m2 0h0m1 0h0m1 0h0m2 0h0m1 0h0m2 0h0m1 0h0m1 0h0m1 0h0m1 0h0m1 0h0m1 0h0m1 0h0m1 0h0m1 0h0m1 0h0m1 0h0m1 0h0m2 0h0m1 0h0m2 0h0m1 0h0m3 0h0m1 0h0m1 0h0m3 0h0m1 0h0m2 0h0m2 0h0m1 0h0m1 0h0m1 0h0m1 0h0m1 0h0m1 0h0m2 0h0m1 0h0m1 0h0m2 0h0m1 0h0m1 0h0m2 0h0m3 0h0m1 0h0m1 0h0m1 0h0m1 0h0m1 0h0m1 0h0m1 0h0m1 0h0m1 0h0m1 0h0m1 0h0m1 0h0m1 0h0m1 0h0m1 0h0m1 0h0m1 0h0m1 0h0m2 0h0m1 0h0m1 0h0m1 0h0m2 0h0m1 0h0m1 0h0m1 0h0m1 0h0m1 0h0m3 0h0m1 0h0m2 0h0m1 0h0m4 0h0m1 0h0m1 0h0m1 0h0m1 0h0m2 0h0m1 0h0m1 0h0m1 0h0m1 0h0m1 0h0m1 0h0m2 0h0m2 0h0m1 0h0m1 0h0m1 0h0" transform="translate(.5 .5)" stroke="#8c564b" stroke-width="1.1" stroke-linecap="square" fill="none"/><path d="M170 95h0m1 0h0m1 0h0m1 0h0m1 0h0m1 0h0m1 0h0m1 0h0m1 0h0m1 0h0m1 0h0m1 0h0m1 0h0m-12 1h0m1 0h0m1 0h0m1 0h0m1 0h0m1 0h0m1 0h0m1 0h0m1 0h0m1 0h0m1 0h0m1 0h0m1 0h0m23 0h0m1 0h0m1 0h0m1 0h0m1 0h0m1 0h0m1 0h0m1 0h0m1 0h0m1 0h0m1 0h0m34 0h0m1 0h0m1 0h0m1 0h0m1 0h0m1 0h0m1 0h0m1 0h0m1 0h0m1 0h0m-88 1h0m1 0h0m1 0h0m1 0h0m1 0h0m1 0h0m1 0h0m1 0h0m1 0h0m1 0h0m1 0h0m1 0h0m1 0h0m23 0h0m1 0h0m2 0h0m2 0h0m1 0h0m1 0h0m1 0h0m2 0h0m34 0h0m1 0h0m1 0h0m1 0h0m1 0h0m1 0h0m1 0h0m1 0h0m1 0h0m1 0h0m22 0h0m1 0h0m1 0h0m1 0h0m1 0h0m1 0h0m1 0h0m1 0h0m1 0h0m1 0h0m33 0h0m1 0h0m1 0h0m1 0h0m1 0h0m1 0h0m1 0h0m16 0h0m1 0h0m-175 1h0m1 0h0m1 0h0m1 0h0m1 0h0m1 0h0m1 0h0m1 0h0m2 0h0m1 0h0m1 0h0m25 0h0m1 0h0m1 0h0m1 0h0m1 0h0m1 0h0m1 0h0m1 0h0m1 0h0m1 0h0m34 0h0m1 0h0m1 0h0m1 0h0m1 0h0m1 0h0m1 0h0m1 0h0m1 0h0m1 0h0m22 0h0m1 0h0m1 0h0m1 0h0m1 0h0m1 0h0m1 0h0m1 0h0m1 0h0m1 0h0m34 0h0m1 0h0m1 0h0m1 0h0m1 0h0m1 0h0m1 0h0m15 0h0m1 0h0m-175 1h0m1 0h0m1 0h0m7 0h0m1 0h0m25 0h0m3 0h0m2 0h0m1 0h0m1 0h0m1 0h0m1 0h0m1 0h0m35 0h0m1 0h0m2 0h0m1 0h0m1 0h0m1 0h0m1 0h0m1 0h0m22 0h0m1 0h0m1 0h0m1 0h0m1 0h0m1 0h0m1 0h0m1 0h0m1 0h0m1 0h0m33 0h0m1 0h0m1 0h0m1 0h0m1 0h0m1 0h0m1 0h0m1 0h0m15 0h0m1 0h0m-174 1h0m1 0h0m1 0h0m1 0h0m1 0h0m1 0h0m1 0h0m1 0h0m27 0h0m1 0h0m2 0h0m4 0h0m1 0h0m36 0h0m1 0h0m1 0h0m1 0h0m3 0h0m1 0h0m1 0h0m1 0h0m22 0h0m3 0h0m1 0h0m1 0h0m4 0h0m33 0h0m1 0h0m1 0h0m1 0h0m1 0h0m1 0h0m1 0h0m1 0h0m6 0h0m1 0h0m1 0h0m2 0h0m1 0h0m4 0h0m1 0h0m-183 1h0m1 0h0m1 0h0m2 0h0m1 0h0m1 0h0m1 0h0m1 0h0m1 0h0m1 0h0m1 0h0m1 0h0m1 0h0m1 0h0m1 0h0m1 0h0m1 0h0m1 0h0m1 0h0m5 0h0m1 0h0m19 0h0m2 0h0m5 0h0m37 0h0m1 0h0m1 0h0m3 0h0m1 0h0m1 0h0m23 0h0m1 0h0m1 0h0m1 0h0m3 0h0m1 0h0m1 0h0m1 0h0m33 0h0m1 0h0m1 0h0m1 0h0m7 0h0m2 0h0m1 0h0m7 0h0m1 0h0m1 0h0m1 0h0m-192 1h0m2 0h0m1 0h0m1 0h0m2 0h0m1 0h0m1 0h0m1 0h0m1 0h0m1 0h0m1 0h0m1 0h0m1 0h0m1 0h0m2 0h0m1 0h0m1 0h0m1 0h0m1 0h0m1 0h0m1 0h0m1 0h0m1 0h0m1 0h0m1 0h0m1 0h0m1 0h0m1 0h0m1 0h0m1 0h0m1 0h0m1 0h0m1 0h0m1 0h0m1 0h0m1 0h0m14 0h0m3 0h0m4 0h0m1 0h0m10 0h0m1 0h0m2 0h0m1 0h0m1 0h0m1 0h0m1 0h0m1 0h0m1 0h0m1 0h0m1 0h0m1 0h0m14 0h0m1 0h0m1 0h0m1 0h0m3 0h0m1 0h0m1 0h0m1 0h0m22 0h0m1 0h0m1 0h0m1 0h0m3 0h0m1 0h0m1 0h0m-144 1h0m1 0h0m1 0h0m1 0h0m1 0h0m1 0h0m1 0h0m1 0h0m1 0h0m1 0h0m1 0h0m1 0h0m1 0h0m1 0h0m2 0h0m2 0h0m1 0h0m1 0h0m1 0h0m1 0h0m1 0h0m1 0h0m1 0h0m1 0h0m2 0h0m1 0h0m1 0h0m1 0h0m1 0h0m1 0h0m1 0h0m1 0h0m1 0h0m1 0h0m1 0h0m1 0h0m1 0h0m1 0h0m1 0h0m1 0h0m1 0h0m1 0h0m1 0h0m1 0h0m1 0h0m14 0h0m1 0h0m1 0h0m1 0h0m4 0h0m1 0h0m10 0h0m1 0h0m1 0h0m1 0h0m1 0h0m1 0h0m1 0h0m1 0h0m1 0h0m1 0h0m1 0h0m1 0h0m1 0h0m15 0h0m1 0h0m4 0h0m1 0h0m2 0h0m22 0h0m1 0h0m1 0h0m1 0h0m3 0h0m1 0h0m1 0h0m1 0h0m39 0h0m1 0h0m1 0h0m1 0h0m1 0h0m1 0h0m1 0h0m1 0h0m1 0h0m1 0h0m1 0h0m1 0h0m1 0h0m1 0h0m1 0h0m1 0h0m1 0h0m1 0h0m1 0h0m1 0h0m1 0h0m1 0h0m1 0h0m1 0h0m1 0h0m2 0h0m2 0h0m1 0h0m1 0h0m1 0h0m1 0h0m1 0h0m1 0h0m1 0h0m1 0h0m1 0h0m-225 1h0m1 0h0m1 0h0m1 0h0m1 0h0m1 0h0m2 0h0m1 0h0m1 0h0m1 0h0m1 0h0m1 0h0m1 0h0m1 0h0m1 0h0m1 0h0m1 0h0m1 0h0m1 0h0m1 0h0m1 0h0m1 0h0m2 0h0m1 0h0m1 0h0m1 0h0m1 0h0m1 0h0m1 0h0m2 0h0m1 0h0m1 0h0m1 0h0m1 0h0m1 0h0m1 0h0m1 0h0m1 0h0m1 0h0m1 0h0m1 0h0m1 0h0m1 0h0m1 0h0m1 0h0m1 0h0m1 0h0m1 0h0m1 0h0m14 0h0m1 0h0m1 0h0m1 0h0m4 0h0m1 0h0m10 0h0m1 0h0m1 0h0m2 0h0m1 0h0m1 0h0m1 0h0m1 0h0m1 0h0m1 0h0m1 0h0m1 0h0m14 0h0m1 0h0m1 0h0m1 0h0m3 0h0m2 0h0m1 0h0m10 0h0m1 0h0m1 0h0m1 0h0m1 0h0m1 0h0m1 0h0m1 0h0m1 0h0m1 0h0m1 0h0m3 0h0m2 0h0m3 0h0m1 0h0m1 0h0m1 0h0m39 0h0m2 0h0m1 0h0m1 0h0m1 0h0m2 0h0m1 0h0m1 0h0m1 0h0m1 0h0m1 0h0m1 0h0m1 0h0m1 0h0m1 0h0m1 0h0m1 0h0m1 0h0m1 0h0m1 0h0m1 0h0m1 0h0m1 0h0m1 0h0m1 0h0m1 0h0m1 0h0m2 0h0m1 0h0m1 0h0m2 0h0m1 0h0m1 0h0m1 0h0m-225 1h0m1 0h0m1 0h0m1 0h0m1 0h0m1 0h0m1 0h0m1 0h0m1 0h0m1 0h0m1 0h0m1 0h0m1 0h0m1 0h0m1 0h0m1 0h0m1 0h0m1 0h0m2 0h0m1 0h0m1 0h0m1 0h0m1 0h0m1 0h0m1 0h0m1 0h0m1 0h0m1 0h0m1 0h0m1 0h0m1 0h0m1 0h0m1 0h0m1 0h0m1 0h0m1 0h0m1 0h0m1 0h0m1 0h0m1 0h0m1 0h0m1 0h0m1 0h0m1 0h0m1 0h0m1 0h0m1 0h0m2 0h0m1 0h0m1 0h0m32 0h0m1 0h0m1 0h0m1 0h0m1 0h0m1 0h0m1 0h0m1 0h0m1 0h0m1 0h0m1 0h0m1 0h0m1 0h0m14 0h0m1 0h0m1 0h0m1 0h0m4 0h0m12 0h0m1 0h0m1 0h0m1 0h0m1 0h0m1 0h0m1 0h0m1 0h0m1 0h0m1 0h0m1 0h0m1 0h0m1 0h0m1 0h0m1 0h0m1 0h0m1 0h0m2 0h0m1 0h0m1 0h0m1 0h0m39 0h0m1 0h0m1 0h0m1 0h0m1 0h0m1 0h0m1 0h0m1 0h0m1 0h0m1 0h0m1 0h0m1 0h0m2 0h0m1 0h0m1 0h0m1 0h0m1 0h0m2 0h0m1 0h0m1 0h0m2 0h0m1 0h0m1 0h0m1 0h0m1 0h0m1 0h0m1 0h0m1 0h0m1 0h0m1 0h0m1 0h0m1 0h0m1 0h0m1 0h0m1 0h0m-225 1h0m1 0h0m1 0h0m1 0h0m1 0h0m1 0h0m1 0h0m1 0h0m1 0h0m1 0h0m1 0h0m1 0h0m1 0h0m1 0h0m1 0h0m1 0h0m1 0h0m1 0h0m1 0h0m1 0h0m1 0h0m1 0h0m1 0h0m2 0h0m1 0h0m1 0h0m1 0h0m1 0h0m1 0h0m1 0h0m1 0h0m1 0h0m1 0h0m1 0h0m1 0h0m1 0h0m1 0h0m1 0h0m1 0h0m1 0h0m1 0h0m1 0h0m1 0h0m1 0h0m1 0h0m1 0h0m1 0h0m1 0h0m1 0h0m1 0h0m1 0h0m32 0h0m1 0h0m1 0h0m1 0h0m1 0h0m2 0h0m1 0h0m1 0h0m1 0h0m1 0h0m1 0h0m1 0h0m33 0h0m1 0h0m1 0h0m1 0h0m1 0h0m2 0h0m1 0h0m1 0h0m1 0h0m1 0h0m1 0h0m1 0h0m1 0h0m1 0h0m1 0h0m1 0h0m44 0h0m1 0h0m1 0h0m1 0h0m1 0h0m1 0h0m1 0h0m1 0h0m1 0h0m1 0h0m1 0h0m1 0h0m1 0h0m1 0h0m1 0h0m1 0h0m1 0h0m1 0h0m2 0h0m1 0h0m1 0h0m1 0h0m1 0h0m1 0h0m1 0h0m1 0h0m1 0h0m1 0h0m1 0h0m2 0h0m1 0h0m1 0h0m1 0h0m1 0h0m1 0h0m1 0h0m-224 1h0m1 0h0m2 0h0m1 0h0m1 0h0m1 0h0m1 0h0m1 0h0m1 0h0m1 0h0m1 0h0m1 0h0m1 0h0m1 0h0m2 0h0m1 0h0m1 0h0m1 0h0m1 0h0m1 0h0m1 0h0m1 0h0m1 0h0m1 0h0m2 0h0m1 0h0m1 0h0m1 0h0m1 0h0m1 0h0m1 0h0m1 0h0m1 0h0m1 0h0m1 0h0m1 0h0m1 0h0m1 0h0m1 0h0m1 0h0m1 0h0m1 0h0m1 0h0m1 0h0m1 0h0m1 0h0m1 0h0m1 0h0m32 0h0m1 0h0m1 0h0m1 0h0m8 0h0m1 0h0m33 0h0m1 0h0m1 0h0m1 0h0m2 0h0m1 0h0m1 0h0m2 0h0m1 0h0m1 0h0m1 0h0m1 0h0m1 0h0m1 0h0m1 0h0m45 0h0m1 0h0m1 0h0m1 0h0m1 0h0m1 0h0m1 0h0m1 0h0m1 0h0m1 0h0m1 0h0m2 0h0m1 0h0m1 0h0m1 0h0m1 0h0m1 0h0m1 0h0m1 0h0m1 0h0m1 0h0m1 0h0m1 0h0m1 0h0m1 0h0m1 0h0m1 0h0m1 0h0m2 0h0m1 0h0m1 0h0m1 0h0m1 0h0m1 0h0m1 0h0m-224 1h0m1 0h0m1 0h0m1 0h0m1 0h0m1 0h0m1 0h0m1 0h0m1 0h0m1 0h0m2 0h0m1 0h0m1 0h0m1 0h0m1 0h0m1 0h0m1 0h0m1 0h0m1 0h0m1 0h0m1 0h0m1 0h0m1 0h0m1 0h0m1 0h0m2 0h0m1 0h0m1 0h0m1 0h0m1 0h0m1 0h0m1 0h0m1 0h0m1 0h0m1 0h0m1 0h0m1 0h0m1 0h0m1 0h0m1 0h0m1 0h0m1 0h0m1 0h0m1 0h0m1 0h0m1 0h0m1 0h0m1 0h0m1 0h0m32 0h0m1 0h0m1 0h0m1 0h0m6 0h0m1 0h0m1 0h0m1 0h0m33 0h0m1 0h0m1 0h0m1 0h0m1 0h0m1 0h0m1 0h0m1 0h0m1 0h0m1 0h0m1 0h0m1 0h0m1 0h0m1 0h0m1 0h0m1 0h0m1 0h0m44 0h0m1 0h0m1 0h0m1 0h0m1 0h0m1 0h0m1 0h0m1 0h0m1 0h0m1 0h0m1 0h0m1 0h0m1 0h0m1 0h0m1 0h0m1 0h0m1 0h0m1 0h0m1 0h0m1 0h0m1 0h0m1 0h0m1 0h0m1 0h0m1 0h0m1 0h0m1 0h0m1 0h0m1 0h0m1 0h0m1 0h0m1 0h0m1 0h0m1 0h0m1 0h0m1 0h0m1 0h0m-223 1h0m1 0h0m1 0h0m1 0h0m1 0h0m1 0h0m1 0h0m1 0h0m1 0h0m1 0h0m1 0h0m1 0h0m1 0h0m1 0h0m1 0h0m1 0h0m1 0h0m1 0h0m1 0h0m1 0h0m1 0h0m1 0h0m1 0h0m1 0h0m1 0h0m1 0h0m1 0h0m1 0h0m1 0h0m1 0h0m1 0h0m1 0h0m1 0h0m1 0h0m1 0h0m1 0h0m1 0h0m1 0h0m1 0h0m1 0h0m1 0h0m1 0h0m1 0h0m1 0h0m1 0h0m1 0h0m1 0h0m2 0h0m34 0h0m1 0h0m1 0h0m8 0h0m2 0h0m34 0h0m1 0h0m1 0h0m1 0h0m1 0h0m1 0h0m1 0h0m1 0h0m1 0h0m1 0h0m1 0h0m1 0h0m1 0h0m1 0h0m1 0h0m1 0h0m44 0h0m1 0h0m1 0h0m1 0h0m2 0h0m2 0h0m1 0h0m1 0h0m1 0h0m1 0h0m1 0h0m1 0h0m1 0h0m1 0h0m1 0h0m1 0h0m2 0h0m2 0h0m1 0h0m1 0h0m1 0h0m1 0h0m1 0h0m1 0h0m1 0h0m1 0h0m1 0h0m1 0h0m1 0h0m1 0h0m1 0h0m1 0h0m1 0h0m1 0h0m-223 1h0m1 0h0m1 0h0m1 0h0m1 0h0m1 0h0m1 0h0m1 0h0m2 0h0m1 0h0m1 0h0m1 0h0m1 0h0m1 0h0m1 0h0m1 0h0m1 0h0m1 0h0m1 0h0m1 0h0m1 0h0m1 0h0m1 0h0m1 0h0m1 0h0m1 0h0m1 0h0m1 0h0m1 0h0m1 0h0m1 0h0m1 0h0m1 0h0m1 0h0m1 0h0m1 0h0m1 0h0m1 0h0m1 0h0m1 0h0m2 0h0m1 0h0m38 0h0m1 0h0m1 0h0m1 0h0m7 0h0m1 0h0m34 0h0m1 0h0m1 0h0m1 0h0m11 0h0m1 0h0m1 0h0m44 0h0m1 0h0m1 0h0m15 0h0m1 0h0m1 0h0m1 0h0m14 0h0m1 0h0m1 0h0m1 0h0m-223 1h0m2 0h0m1 0h0m1 0h0m1 0h0m1 0h0m1 0h0m1 0h0m1 0h0m2 0h0m1 0h0m1 0h0m2 0h0m1 0h0m1 0h0m1 0h0m1 0h0m1 0h0m1 0h0m1 0h0m1 0h0m1 0h0m1 0h0m1 0h0m1 0h0m1 0h0m1 0h0m1 0h0m1 0h0m1 0h0m1 0h0m1 0h0m1 0h0m1 0h0m2 0h0m43 0h0m1 0h0m1 0h0m1 0h0m6 0h0m1 0h0m1 0h0m1 0h0m33 0h0m1 0h0m1 0h0m1 0h0m10 0h0m1 0h0m2 0h0m44 0h0m2 0h0m1 0h0m14 0h0m1 0h0m1 0h0m1 0h0m14 0h0m1 0h0m1 0h0m-222 1h0m1 0h0m1 0h0m1 0h0m1 0h0m1 0h0m1 0h0m1 0h0m1 0h0m1 0h0m2 0h0m1 0h0m1 0h0m1 0h0m2 0h0m1 0h0m1 0h0m1 0h0m1 0h0m1 0h0m1 0h0m1 0h0m1 0h0m1 0h0m1 0h0m1 0h0m1 0h0m1 0h0m1 0h0m1 0h0m1 0h0m1 0h0m1 0h0m1 0h0m46 0h0m1 0h0m2 0h0m6 0h0m1 0h0m1 0h0m34 0h0m1 0h0m1 0h0m1 0h0m10 0h0m1 0h0m1 0h0m1 0h0m46 0h0m1 0h0m15 0h0m1 0h0m1 0h0m14 0h0m1 0h0m1 0h0m1 0h0m-223 1h0m1 0h0m1 0h0m1 0h0m1 0h0m1 0h0m1 0h0m1 0h0m1 0h0m1 0h0m1 0h0m1 0h0m1 0h0m1 0h0m1 0h0m1 0h0m1 0h0m1 0h0m1 0h0m1 0h0m1 0h0m1 0h0m1 0h0m1 0h0m2 0h0m1 0h0m1 0h0m6 0h0m1 0h0m47 0h0m1 0h0m8 0h0m36 0h0m1 0h0m1 0h0m12 0h0m1 0h0m1 0h0m46 0h0m1 0h0m14 0h0m1 0h0m16 0h0m1 0h0m1 0h0m1 0h0m-223 1h0m1 0h0m1 0h0m1 0h0m1 0h0m1 0h0m1 0h0m1 0h0m1 0h0m1 0h0m1 0h0m1 0h0m1 0h0m1 0h0m1 0h0m1 0h0m1 0h0m17 0h0m1 0h0m1 0h0m46 0h0m1 0h0m1 0h0m1 0h0m6 0h0m1 0h0m1 0h0m35 0h0m1 0h0m1 0h0m10 0h0m1 0h0m1 0h0m1 0h0m46 0h0m1 0h0m14 0h0m3 0h0m14 0h0m1 0h0m2 0h0m-223 1h0m1 0h0m1 0h0m1 0h0m1 0h0m1 0h0m28 0h0m1 0h0m1 0h0m48 0h0m1 0h0m6 0h0m1 0h0m1 0h0m34 0h0m1 0h0m12 0h0m1 0h0m2 0h0m46 0h0m15 0h0m1 0h0m1 0h0m1 0h0m14 0h0m1 0h0m1 0h0m-220 1h0m1 0h0m30 0h0m1 0h0m47 0h0m1 0h0m1 0h0m1 0h0m6 0h0m1 0h0m1 0h0m34 0h0m2 0h0m1 0h0m10 0h0m1 0h0m1 0h0m47 0h0m1 0h0m14 0h0m2 0h0m15 0h0m1 0h0m1 0h0m1 0h0m-222 1h0m1 0h0m31 0h0m2 0h0m46 0h0m1 0h0m1 0h0m1 0h0m6 0h0m1 0h0m1 0h0m34 0h0m2 0h0m11 0h0m1 0h0m1 0h0m1 0h0m46 0h0m1 0h0m17 0h0m14 0h0m1 0h0m1 0h0m-221 1h0m1 0h0m124 0h0m1 0h0m2 0h0m10 0h0m1 0h0m1 0h0m1 0h0m46 0h0m16 0h0m1 0h0m1 0h0m15 0h0m1 0h0m1 0h0m-97 1h0m3 0h0m10 0h0m1 0h0m1 0h0m1 0h0m46 0h0m15 0h0m1 0h0m1 0h0m15 0h0m1 0h0m1 0h0m1 0h0m-97 1h0m1 0h0m1 0h0m1 0h0m11 0h0m1 0h0m1 0h0m46 0h0m15 0h0m1 0h0m1 0h0m1 0h0m14 0h0m1 0h0m2 0h0m-97 1h0m1 0h0m1 0h0m1 0h0m11 0h0m1 0h0m1 0h0m46 0h0m15 0h0m1 0h0m1 0h0m1 0h0m14 0h0m1 0h0m1 0h0m1 0h0m-35 1h0m1 0h0m14 0h0m1 0h0m1 0h0m15 0h0m1 0h0m1 0h0m1 0h0m-35 1h0m1 0h0m14 0h0m1 0h0m1 0h0m1 0h0m17 0h0m-37 1h0m1 0h0m2 0h0m15 0h0m1 0h0m1 0h0m14 0h0m1 0h0m1 0h0m1 0h0m-37 1h0m1 0h0m1 0h0m1 0h0m15 0h0m1 0h0m1 0h0m14 0h0m1 0h0m2 0h0m-37 1h0m1 0h0m1 0h0m1 0h0m15 0h0m1 0h0m15 0h0m1 0h0m1 0h0m1 0h0" transform="translate(.5 .5)" stroke="#d62728" stroke-width="1.1" stroke-linecap="square" fill="none"/><path d="M341 93h0m1 0h0m1 0h0m-124 1h0m1 0h0m1 0h0m43 0h0m1 0h0m1 0h0m76 0h0m1 0h0m-154 1h0m1 0h0m1 0h0m28 0h0m1 0h0m45 0h0m1 0h0m75 0h0m1 0h0m1 0h0m-154 1h0m1 0h0m1 0h0m28 0h0m1 0h0m1 0h0m43 0h0m1 0h0m1 0h0m29 0h0m1 0h0m1 0h0m44 0h0m1 0h0m-153 1h0m1 0h0m1 0h0m28 0h0m1 0h0m1 0h0m43 0h0m1 0h0m1 0h0m29 0h0m1 0h0m1 0h0m33 0h0m1 0h0m1 0h0m1 0h0m1 0h0m1 0h0m1 0h0m1 0h0m1 0h0m1 0h0m2 0h0m1 0h0m1 0h0m-161 1h0m1 0h0m1 0h0m1 0h0m1 0h0m1 0h0m1 0h0m1 0h0m1 0h0m29 0h0m1 0h0m1 0h0m43 0h0m2 0h0m29 0h0m1 0h0m1 0h0m33 0h0m1 0h0m1 0h0m1 0h0m1 0h0m1 0h0m1 0h0m1 0h0m1 0h0m1 0h0m1 0h0m1 0h0m1 0h0m1 0h0m-161 1h0m1 0h0m1 0h0m1 0h0m1 0h0m1 0h0m1 0h0m1 0h0m1 0h0m1 0h0m28 0h0m1 0h0m1 0h0m43 0h0m1 0h0m30 0h0m1 0h0m1 0h0m33 0h0m1 0h0m1 0h0m1 0h0m1 0h0m1 0h0m1 0h0m1 0h0m1 0h0m1 0h0m1 0h0m1 0h0m1 0h0m1 0h0m-209 1h0m1 0h0m1 0h0m46 0h0m1 0h0m1 0h0m1 0h0m1 0h0m1 0h0m1 0h0m1 0h0m1 0h0m1 0h0m23 0h0m1 0h0m1 0h0m1 0h0m1 0h0m1 0h0m1 0h0m1 0h0m17 0h0m1 0h0m1 0h0m19 0h0m1 0h0m1 0h0m1 0h0m1 0h0m1 0h0m1 0h0m1 0h0m29 0h0m1 0h0m1 0h0m19 0h0m1 0h0m13 0h0m1 0h0m1 0h0m9 0h0m1 0h0m1 0h0m-209 1h0m1 0h0m1 0h0m47 0h0m1 0h0m6 0h0m1 0h0m23 0h0m1 0h0m1 0h0m1 0h0m1 0h0m1 0h0m1 0h0m1 0h0m17 0h0m1 0h0m1 0h0m19 0h0m1 0h0m1 0h0m1 0h0m1 0h0m1 0h0m2 0h0m29 0h0m1 0h0m1 0h0m18 0h0m1 0h0m1 0h0m-183 1h0m1 0h0m1 0h0m78 0h0m1 0h0m1 0h0m1 0h0m1 0h0m1 0h0m1 0h0m1 0h0m17 0h0m1 0h0m1 0h0m19 0h0m1 0h0m1 0h0m1 0h0m1 0h0m1 0h0m1 0h0m1 0h0m29 0h0m1 0h0m1 0h0m18 0h0m1 0h0m1 0h0m-183 1h0m1 0h0m1 0h0m78 0h0m1 0h0m1 0h0m3 0h0m1 0h0m1 0h0m17 0h0m1 0h0m1 0h0m19 0h0m1 0h0m1 0h0m3 0h0m1 0h0m1 0h0m29 0h0m1 0h0m1 0h0m18 0h0m1 0h0m1 0h0m-183 1h0m1 0h0m1 0h0m78 0h0m1 0h0m1 0h0m3 0h0m1 0h0m1 0h0m17 0h0m1 0h0m21 0h0m1 0h0m3 0h0m1 0h0m1 0h0m29 0h0m1 0h0m1 0h0m18 0h0m1 0h0m1 0h0m-183 1h0m1 0h0m1 0h0m78 0h0m1 0h0m1 0h0m3 0h0m1 0h0m1 0h0m17 0h0m1 0h0m1 0h0m20 0h0m4 0h0m1 0h0m1 0h0m29 0h0m1 0h0m1 0h0m18 0h0m1 0h0m1 0h0m-183 1h0m1 0h0m1 0h0m102 0h0m1 0h0m1 0h0m2 0h0m1 0h0m1 0h0m51 0h0m1 0h0m1 0h0m18 0h0m1 0h0m1 0h0m-183 1h0m1 0h0m1 0h0m102 0h0m2 0h0m2 0h0m1 0h0m1 0h0m51 0h0m1 0h0m1 0h0m18 0h0m1 0h0m1 0h0m-183 1h0m1 0h0m1 0h0m102 0h0m1 0h0m1 0h0m1 0h0m1 0h0m1 0h0m1 0h0m1 0h0m1 0h0m1 0h0m48 0h0m1 0h0m1 0h0m18 0h0m1 0h0m1 0h0m-183 1h0m1 0h0m1 0h0m102 0h0m1 0h0m1 0h0m1 0h0m2 0h0m1 0h0m1 0h0m1 0h0m1 0h0m48 0h0m1 0h0m1 0h0m18 0h0m1 0h0m1 0h0m-183 1h0m1 0h0m1 0h0m1 0h0m1 0h0m1 0h0m2 0h0m97 0h0m1 0h0m1 0h0m1 0h0m1 0h0m1 0h0m1 0h0m2 0h0m1 0h0m39 0h0m1 0h0m1 0h0m1 0h0m1 0h0m1 0h0m1 0h0m1 0h0m1 0h0m1 0h0m1 0h0m1 0h0m18 0h0m1 0h0m1 0h0m-183 1h0m1 0h0m1 0h0m1 0h0m1 0h0m1 0h0m1 0h0m1 0h0m97 0h0m1 0h0m3 0h0m1 0h0m1 0h0m1 0h0m1 0h0m40 0h0m1 0h0m1 0h0m1 0h0m1 0h0m1 0h0m1 0h0m2 0h0m1 0h0m1 0h0m1 0h0m18 0h0m1 0h0m1 0h0m49 0h0m1 0h0m1 0h0m-234 1h0m1 0h0m1 0h0m2 0h0m1 0h0m1 0h0m1 0h0m94 0h0m1 0h0m1 0h0m1 0h0m1 0h0m1 0h0m1 0h0m1 0h0m1 0h0m1 0h0m1 0h0m1 0h0m1 0h0m40 0h0m1 0h0m1 0h0m1 0h0m1 0h0m1 0h0m1 0h0m1 0h0m1 0h0m1 0h0m1 0h0m18 0h0m1 0h0m1 0h0m1 0h0m1 0h0m1 0h0m1 0h0m1 0h0m1 0h0m1 0h0m1 0h0m1 0h0m1 0h0m1 0h0m1 0h0m37 0h0m1 0h0m1 0h0m-234 1h0m1 0h0m1 0h0m3 0h0m1 0h0m1 0h0m94 0h0m1 0h0m1 0h0m1 0h0m1 0h0m1 0h0m1 0h0m1 0h0m1 0h0m1 0h0m42 0h0m9 0h0m1 0h0m1 0h0m18 0h0m1 0h0m1 0h0m3 0h0m1 0h0m2 0h0m1 0h0m1 0h0m1 0h0m1 0h0m1 0h0m1 0h0m37 0h0m1 0h0m1 0h0m-234 1h0m1 0h0m1 0h0m3 0h0m1 0h0m95 0h0m1 0h0m1 0h0m1 0h0m1 0h0m1 0h0m1 0h0m1 0h0m1 0h0m1 0h0m1 0h0m1 0h0m1 0h0m39 0h0m1 0h0m1 0h0m7 0h0m1 0h0m1 0h0m18 0h0m1 0h0m1 0h0m1 0h0m2 0h0m1 0h0m1 0h0m1 0h0m1 0h0m1 0h0m1 0h0m1 0h0m1 0h0m1 0h0m37 0h0m2 0h0m-234 1h0m1 0h0m1 0h0m3 0h0m1 0h0m1 0h0m94 0h0m1 0h0m1 0h0m1 0h0m1 0h0m1 0h0m2 0h0m1 0h0m1 0h0m1 0h0m1 0h0m40 0h0m2 0h0m7 0h0m1 0h0m1 0h0m18 0h0m2 0h0m10 0h0m1 0h0m1 0h0m37 0h0m1 0h0m1 0h0m-233 1h0m1 0h0m4 0h0m95 0h0m1 0h0m6 0h0m1 0h0m1 0h0m44 0h0m7 0h0m1 0h0m1 0h0m18 0h0m1 0h0m1 0h0m10 0h0m1 0h0m1 0h0m37 0h0m1 0h0m1 0h0m-133 1h0m1 0h0m1 0h0m5 0h0m1 0h0m1 0h0m42 0h0m2 0h0m7 0h0m1 0h0m1 0h0m18 0h0m1 0h0m1 0h0m10 0h0m1 0h0m1 0h0m37 0h0m1 0h0m1 0h0m-131 1h0m5 0h0m1 0h0m1 0h0m42 0h0m1 0h0m1 0h0m7 0h0m1 0h0m1 0h0m18 0h0m1 0h0m1 0h0m10 0h0m1 0h0m1 0h0m37 0h0m1 0h0m1 0h0m1 0h0m1 0h0m1 0h0m1 0h0m1 0h0m1 0h0m1 0h0m2 0h0m1 0h0m1 0h0m-92 1h0m8 0h0m1 0h0m1 0h0m18 0h0m1 0h0m1 0h0m11 0h0m1 0h0m37 0h0m1 0h0m1 0h0m1 0h0m2 0h0m1 0h0m1 0h0m1 0h0m1 0h0m1 0h0m1 0h0m-91 1h0m1 0h0m1 0h0m7 0h0m1 0h0m1 0h0m18 0h0m1 0h0m1 0h0m10 0h0m1 0h0m1 0h0m37 0h0m1 0h0m1 0h0m1 0h0m1 0h0m1 0h0m1 0h0m1 0h0m1 0h0m1 0h0m1 0h0m1 0h0m1 0h0m1 0h0m-93 1h0m1 0h0m1 0h0m7 0h0m1 0h0m1 0h0m18 0h0m1 0h0m1 0h0m10 0h0m1 0h0m1 0h0m37 0h0m1 0h0m1 0h0m9 0h0m1 0h0m1 0h0m-92 1h0m1 0h0m7 0h0m1 0h0m1 0h0m18 0h0m1 0h0m1 0h0m10 0h0m1 0h0m38 0h0m1 0h0m1 0h0m9 0h0m1 0h0m1 0h0m-93 1h0m2 0h0m7 0h0m1 0h0m1 0h0m18 0h0m1 0h0m1 0h0m10 0h0m1 0h0m1 0h0m38 0h0m1 0h0m9 0h0m1 0h0m1 0h0m-13 1h0m1 0h0m1 0h0m10 0h0m1 0h0m-13 1h0m1 0h0m1 0h0m9 0h0m1 0h0m1 0h0m-13 1h0m1 0h0m1 0h0m9 0h0m1 0h0m1 0h0m-13 1h0m1 0h0m1 0h0m9 0h0m2 0h0m-13 1h0m1 0h0m1 0h0m9 0h0m1 0h0m1 0h0" transform="translate(.5 .5)" stroke="#bcbd22" stroke-width="1.1" stroke-linecap="square" fill="none"/><path d="M424 78h0m2 0h0m1 0h0m3 0h0m1 0h0m1 0h0m-13 1h0m1 0h0m1 0h0m1 0h0m1 0h0m2 0h0m1 0h0m1 0h0m1 0h0m1 0h0m3 0h0m3 0h0m1 0h0m1 0h0m1 0h0m3 0h0m1 0h0m1 0h0m2 0h0m2 0h0m2 0h0m1 0h0m1 0h0m2 0h0m1 0h0m2 0h0m3 0h0m1 0h0m3 0h0m1 0h0m-46 1h0m3 0h0m5 0h0m5 0h0m3 0h0m4 0h0m1 0h0m2 0h0m2 0h0m2 0h0m3 0h0m1 0h0m1 0h0m1 0h0m3 0h0m1 0h0m2 0h0m3 0h0m5 0h0m1 0h0m7 0h0m1 0h0m1 0h0m3 0h0m-60 1h0m1 0h0m1 0h0m2 0h0m1 0h0m2 0h0m1 0h0m1 0h0m2 0h0m2 0h0m6 0h0m1 0h0m2 0h0m3 0h0m3 0h0m2 0h0m3 0h0m2 0h0m1 0h0m5 0h0m4 0h0m1 0h0m2 0h0m5 0h0m1 0h0m1 0h0m1 0h0m3 0h0m1 0h0m-58 1h0m2 0h0m1 0h0m6 0h0m2 0h0m2 0h0m2 0h0m2 0h0m1 0h0m1 0h0m1 0h0m1 0h0m3 0h0m1 0h0m2 0h0m1 0h0m2 0h0m2 0h0m1 0h0m2 0h0m1 0h0m4 0h0m7 0h0m1 0h0m1 0h0m3 0h0m1 0h0m2 0h0m1 0h0m3 0h0m-110 1h0m1 0h0m1 0h0m1 0h0m1 0h0m1 0h0m1 0h0m43 0h0m1 0h0m2 0h0m4 0h0m1 0h0m6 0h0m1 0h0m1 0h0m4 0h0m4 0h0m1 0h0m1 0h0m1 0h0m2 0h0m1 0h0m5 0h0m6 0h0m3 0h0m1 0h0m2 0h0m1 0h0m1 0h0m1 0h0m3 0h0m2 0h0m4 0h0m2 0h0m-110 1h0m1 0h0m1 0h0m1 0h0m1 0h0m1 0h0m1 0h0m43 0h0m2 0h0m3 0h0m1 0h0m1 0h0m1 0h0m3 0h0m1 0h0m1 0h0m2 0h0m2 0h0m2 0h0m2 0h0m1 0h0m1 0h0m1 0h0m8 0h0m1 0h0m2 0h0m3 0h0m4 0h0m2 0h0m1 0h0m1 0h0m2 0h0m3 0h0m1 0h0m1 0h0m1 0h0m2 0h0m2 0h0m2 0h0m-109 1h0m1 0h0m2 0h0m1 0h0m1 0h0m1 0h0m44 0h0m2 0h0m2 0h0m2 0h0m2 0h0m1 0h0m9 0h0m1 0h0m2 0h0m3 0h0m2 0h0m1 0h0m2 0h0m5 0h0m3 0h0m4 0h0m1 0h0m3 0h0m5 0h0m2 0h0m2 0h0m1 0h0m1 0h0m-106 1h0m1 0h0m1 0h0m1 0h0m1 0h0m1 0h0m1 0h0m44 0h0m2 0h0m4 0h0m1 0h0m4 0h0m2 0h0m1 0h0m2 0h0m1 0h0m1 0h0m1 0h0m2 0h0m4 0h0m2 0h0m1 0h0m1 0h0m1 0h0m1 0h0m1 0h0m1 0h0m1 0h0m2 0h0m3 0h0m1 0h0m1 0h0m1 0h0m2 0h0m2 0h0m1 0h0m1 0h0m1 0h0m1 0h0m3 0h0m-103 1h0m1 0h0m1 0h0m2 0h0m1 0h0m1 0h0m48 0h0m4 0h0m4 0h0m1 0h0m1 0h0m2 0h0m1 0h0m1 0h0m8 0h0m2 0h0m1 0h0m1 0h0m2 0h0m1 0h0m2 0h0m1 0h0m2 0h0m4 0h0m1 0h0m1 0h0m1 0h0m1 0h0m3 0h0m1 0h0m1 0h0m1 0h0m3 0h0m3 0h0m-108 1h0m1 0h0m1 0h0m1 0h0m1 0h0m1 0h0m50 0h0m2 0h0m4 0h0m2 0h0m1 0h0m1 0h0m1 0h0m1 0h0m1 0h0m4 0h0m5 0h0m6 0h0m2 0h0m1 0h0m4 0h0m5 0h0m2 0h0m8 0h0m-105 1h0m1 0h0m1 0h0m1 0h0m1 0h0m1 0h0m45 0h0m1 0h0m1 0h0m2 0h0m3 0h0m1 0h0m5 0h0m1 0h0m1 0h0m1 0h0m1 0h0m1 0h0m1 0h0m2 0h0m3 0h0m2 0h0m5 0h0m3 0h0m2 0h0m1 0h0m3 0h0m2 0h0m3 0h0m1 0h0m1 0h0m3 0h0m1 0h0m4 0h0m2 0h0m2 0h0m1 0h0m-60 1h0m4 0h0m4 0h0m1 0h0m4 0h0m1 0h0m1 0h0m3 0h0m5 0h0m4 0h0m1 0h0m2 0h0m5 0h0m2 0h0m3 0h0m3 0h0m3 0h0m2 0h0m2 0h0m1 0h0m1 0h0m3 0h0m1 0h0m1 0h0m1 0h0m1 0h0m-59 1h0m3 0h0m1 0h0m3 0h0m2 0h0m1 0h0m6 0h0m1 0h0m1 0h0m1 0h0m3 0h0m1 0h0m1 0h0m1 0h0m5 0h0m1 0h0m1 0h0m3 0h0m3 0h0m3 0h0m1 0h0m3 0h0m1 0h0m1 0h0m2 0h0m1 0h0m1 0h0m1 0h0m3 0h0m4 0h0m-59 1h0m2 0h0m1 0h0m3 0h0m1 0h0m1 0h0m1 0h0m3 0h0m13 0h0m5 0h0m6 0h0m1 0h0m1 0h0m1 0h0m2 0h0m3 0h0m3 0h0m3 0h0m1 0h0m4 0h0m3 0h0m1 0h0m-59 1h0m4 0h0m1 0h0m2 0h0m1 0h0m2 0h0m1 0h0m5 0h0m3 0h0m2 0h0m1 0h0m2 0h0m5 0h0m2 0h0m5 0h0m4 0h0m1 0h0m2 0h0m2 0h0m4 0h0m1 0h0m1 0h0m4 0h0m1 0h0m3 0h0m-425 1h0m1 0h0m1 0h0m3 0h0m1 0h0m4 0h0m4 0h0m1 0h0m1 0h0m1 0h0m3 0h0m2 0h0m1 0h0m1 0h0m342 0h0m1 0h0m2 0h0m1 0h0m1 0h0m3 0h0m1 0h0m1 0h0m3 0h0m6 0h0m3 0h0m1 0h0m1 0h0m3 0h0m1 0h0m1 0h0m2 0h0m1 0h0m5 0h0m4 0h0m2 0h0m1 0h0m1 0h0m1 0h0m4 0h0m2 0h0m2 0h0m2 0h0m-418 1h0m1 0h0m2 0h0m2 0h0m1 0h0m3 0h0m6 0h0m3 0h0m3 0h0m3 0h0m2 0h0m1 0h0m1 0h0m3 0h0m3 0h0m3 0h0m3 0h0m1 0h0m2 0h0m2 0h0m317 0h0m1 0h0m1 0h0m2 0h0m2 0h0m2 0h0m3 0h0m6 0h0m1 0h0m2 0h0m2 0h0m1 0h0m1 0h0m2 0h0m3 0h0m8 0h0m3 0h0m2 0h0m3 0h0m2 0h0m7 0h0m2 0h0m3 0h0m-426 1h0m1 0h0m1 0h0m2 0h0m1 0h0m1 0h0m1 0h0m1 0h0m1 0h0m7 0h0m1 0h0m3 0h0m2 0h0m1 0h0m2 0h0m1 0h0m1 0h0m4 0h0m1 0h0m1 0h0m5 0h0m1 0h0m1 0h0m1 0h0m2 0h0m4 0h0m1 0h0m3 0h0m316 0h0m1 0h0m1 0h0m1 0h0m3 0h0m1 0h0m1 0h0m2 0h0m1 0h0m3 0h0m1 0h0m2 0h0m2 0h0m2 0h0m2 0h0m1 0h0m3 0h0m2 0h0m2 0h0m1 0h0m1 0h0m1 0h0m3 0h0m2 0h0m1 0h0m5 0h0m1 0h0m5 0h0m1 0h0m1 0h0m2 0h0m1 0h0m3 0h0m-426 1h0m2 0h0m1 0h0m2 0h0m2 0h0m4 0h0m2 0h0m3 0h0m2 0h0m3 0h0m1 0h0m1 0h0m2 0h0m1 0h0m2 0h0m1 0h0m2 0h0m1 0h0m6 0h0m1 0h0m3 0h0m1 0h0m1 0h0m1 0h0m1 0h0m2 0h0m1 0h0m3 0h0m315 0h0m2 0h0m2 0h0m2 0h0m1 0h0m1 0h0m1 0h0m1 0h0m1 0h0m1 0h0m5 0h0m3 0h0m3 0h0m1 0h0m1 0h0m3 0h0m1 0h0m2 0h0m1 0h0m1 0h0m2 0h0m1 0h0m2 0h0m4 0h0m8 0h0m1 0h0m3 0h0m2 0h0m4 0h0m-425 1h0m1 0h0m2 0h0m1 0h0m2 0h0m1 0h0m1 0h0m2 0h0m2 0h0m3 0h0m1 0h0m4 0h0m1 0h0m2 0h0m2 0h0m1 0h0m1 0h0m1 0h0m4 0h0m5 0h0m1 0h0m3 0h0m4 0h0m1 0h0m1 0h0m3 0h0m253 0h0m1 0h0m1 0h0m1 0h0m4 0h0m1 0h0m55 0h0m1 0h0m3 0h0m2 0h0m2 0h0m1 0h0m7 0h0m3 0h0m1 0h0m1 0h0m2 0h0m5 0h0m1 0h0m1 0h0m2 0h0m1 0h0m2 0h0m3 0h0m1 0h0m2 0h0m1 0h0m1 0h0m1 0h0m4 0h0m3 0h0m2 0h0m1 0h0m1 0h0m2 0h0m2 0h0m-427 1h0m1 0h0m2 0h0m1 0h0m1 0h0m6 0h0m1 0h0m1 0h0m1 0h0m2 0h0m4 0h0m1 0h0m1 0h0m1 0h0m2 0h0m1 0h0m1 0h0m1 0h0m1 0h0m1 0h0m4 0h0m5 0h0m2 0h0m4 0h0m2 0h0m1 0h0m4 0h0m253 0h0m1 0h0m2 0h0m1 0h0m1 0h0m1 0h0m1 0h0m1 0h0m1 0h0m54 0h0m3 0h0m10 0h0m3 0h0m2 0h0m3 0h0m7 0h0m4 0h0m1 0h0m1 0h0m3 0h0m5 0h0m1 0h0m1 0h0m4 0h0m1 0h0m7 0h0m1 0h0m1 0h0m-426 1h0m1 0h0m2 0h0m4 0h0m6 0h0m1 0h0m4 0h0m1 0h0m2 0h0m2 0h0m3 0h0m2 0h0m3 0h0m2 0h0m1 0h0m1 0h0m1 0h0m2 0h0m1 0h0m1 0h0m1 0h0m2 0h0m1 0h0m1 0h0m3 0h0m3 0h0m1 0h0m88 0h0m1 0h0m1 0h0m1 0h0m162 0h0m2 0h0m1 0h0m2 0h0m1 0h0m1 0h0m2 0h0m54 0h0m2 0h0m1 0h0m2 0h0m1 0h0m1 0h0m1 0h0m2 0h0m6 0h0m1 0h0m4 0h0m1 0h0m8 0h0m3 0h0m1 0h0m1 0h0m5 0h0m2 0h0m1 0h0m1 0h0m3 0h0m1 0h0m2 0h0m1 0h0m5 0h0m-424 1h0m1 0h0m1 0h0m4 0h0m1 0h0m1 0h0m1 0h0m2 0h0m2 0h0m1 0h0m3 0h0m2 0h0m1 0h0m1 0h0m1 0h0m2 0h0m2 0h0m1 0h0m1 0h0m1 0h0m1 0h0m4 0h0m1 0h0m1 0h0m2 0h0m4 0h0m1 0h0m2 0h0m1 0h0m1 0h0m2 0h0m2 0h0m85 0h0m4 0h0m2 0h0m1 0h0m162 0h0m2 0h0m2 0h0m1 0h0m2 0h0m1 0h0m1 0h0m55 0h0m1 0h0m3 0h0m2 0h0m2 0h0m1 0h0m3 0h0m2 0h0m1 0h0m1 0h0m1 0h0m2 0h0m2 0h0m1 0h0m3 0h0m1 0h0m1 0h0m7 0h0m2 0h0m1 0h0m1 0h0m2 0h0m4 0h0m2 0h0m1 0h0m1 0h0m4 0h0m2 0h0m1 0h0m1 0h0m-420 1h0m1 0h0m4 0h0m1 0h0m2 0h0m1 0h0m2 0h0m1 0h0m2 0h0m2 0h0m6 0h0m1 0h0m2 0h0m1 0h0m1 0h0m3 0h0m3 0h0m2 0h0m2 0h0m3 0h0m1 0h0m1 0h0m1 0h0m2 0h0m2 0h0m90 0h0m163 0h0m1 0h0m1 0h0m1 0h0m2 0h0m3 0h0m1 0h0m56 0h0m1 0h0m1 0h0m1 0h0m1 0h0m5 0h0m2 0h0m2 0h0m3 0h0m2 0h0m1 0h0m1 0h0m3 0h0m7 0h0m3 0h0m2 0h0m1 0h0m1 0h0m1 0h0m1 0h0m1 0h0m4 0h0m1 0h0m1 0h0m2 0h0m2 0h0m1 0h0m4 0h0m2 0h0m-427 1h0m1 0h0m4 0h0m6 0h0m3 0h0m2 0h0m1 0h0m2 0h0m5 0h0m2 0h0m2 0h0m2 0h0m1 0h0m1 0h0m1 0h0m4 0h0m1 0h0m1 0h0m1 0h0m5 0h0m1 0h0m1 0h0m3 0h0m1 0h0m89 0h0m1 0h0m1 0h0m1 0h0m171 0h0m57 0h0m7 0h0m1 0h0m1 0h0m2 0h0m2 0h0m1 0h0m3 0h0m1 0h0m2 0h0m5 0h0m2 0h0m2 0h0m2 0h0m2 0h0m4 0h0m3 0h0m3 0h0m3 0h0m10 0h0m-429 1h0m1 0h0m5 0h0m3 0h0m1 0h0m3 0h0m4 0h0m1 0h0m2 0h0m6 0h0m6 0h0m2 0h0m1 0h0m1 0h0m1 0h0m1 0h0m2 0h0m1 0h0m1 0h0m1 0h0m1 0h0m1 0h0m1 0h0m1 0h0m2 0h0m2 0h0m2 0h0m1 0h0m90 0h0m1 0h0m226 0h0m5 0h0m1 0h0m5 0h0m8 0h0m2 0h0m1 0h0m10 0h0m1 0h0m2 0h0m3 0h0m4 0h0m1 0h0m3 0h0m2 0h0m7 0h0m6 0h0m2 0h0m1 0h0m-439 1h0m2 0h0m6 0h0m2 0h0m2 0h0m3 0h0m3 0h0m3 0h0m1 0h0m1 0h0m3 0h0m2 0h0m1 0h0m1 0h0m3 0h0m1 0h0m1 0h0m1 0h0m1 0h0m1 0h0m3 0h0m2 0h0m3 0h0m2 0h0m4 0h0m3 0h0m3 0h0m88 0h0m1 0h0m1 0h0m1 0h0m171 0h0m53 0h0m8 0h0m1 0h0m4 0h0m1 0h0m2 0h0m2 0h0m3 0h0m1 0h0m1 0h0m3 0h0m2 0h0m3 0h0m7 0h0m6 0h0m3 0h0m7 0h0m2 0h0m-430 1h0m2 0h0m1 0h0m4 0h0m4 0h0m1 0h0m1 0h0m1 0h0m1 0h0m1 0h0m1 0h0m7 0h0m3 0h0m1 0h0m1 0h0m2 0h0m1 0h0m1 0h0m1 0h0m2 0h0m1 0h0m1 0h0m2 0h0m4 0h0m1 0h0m7 0h0m5 0h0m1 0h0m89 0h0m1 0h0m1 0h0m227 0h0m2 0h0m1 0h0m1 0h0m1 0h0m2 0h0m3 0h0m8 0h0m1 0h0m3 0h0m3 0h0m3 0h0m2 0h0m4 0h0m12 0h0m6 0h0m1 0h0m4 0h0m4 0h0m3 0h0m1 0h0m-442 1h0m2 0h0m2 0h0m1 0h0m3 0h0m2 0h0m2 0h0m5 0h0m1 0h0m6 0h0m2 0h0m4 0h0m2 0h0m2 0h0m1 0h0m1 0h0m1 0h0m3 0h0m3 0h0m3 0h0m1 0h0m3 0h0m1 0h0m3 0h0m2 0h0m2 0h0m2 0h0m88 0h0m2 0h0m1 0h0m224 0h0m7 0h0m1 0h0m6 0h0m1 0h0m5 0h0m4 0h0m1 0h0m1 0h0m3 0h0m5 0h0m8 0h0m3 0h0m2 0h0m1 0h0m3 0h0m1 0h0m4 0h0m4 0h0m4 0h0m4 0h0m-444 1h0m2 0h0m2 0h0m1 0h0m1 0h0m1 0h0m2 0h0m2 0h0m1 0h0m1 0h0m7 0h0m6 0h0m1 0h0m1 0h0m2 0h0m3 0h0m5 0h0m2 0h0m4 0h0m1 0h0m1 0h0m2 0h0m2 0h0m2 0h0m1 0h0m1 0h0m3 0h0m1 0h0m1 0h0m1 0h0m1 0h0m90 0h0m230 0h0m1 0h0m3 0h0m3 0h0m2 0h0m8 0h0m1 0h0m3 0h0m4 0h0m1 0h0m2 0h0m1 0h0m2 0h0m1 0h0m2 0h0m6 0h0m5 0h0m5 0h0m3 0h0m6 0h0m3 0h0m-443 1h0m2 0h0m2 0h0m1 0h0m1 0h0m2 0h0m1 0h0m2 0h0m1 0h0m2 0h0m3 0h0m2 0h0m2 0h0m1 0h0m3 0h0m5 0h0m2 0h0m1 0h0m2 0h0m1 0h0m1 0h0m1 0h0m7 0h0m2 0h0m1 0h0m5 0h0m3 0h0m2 0h0m1 0h0m89 0h0m3 0h0m1 0h0m228 0h0m4 0h0m2 0h0m12 0h0m15 0h0m3 0h0m2 0h0m3 0h0m1 0h0m3 0h0m8 0h0m4 0h0m2 0h0m4 0h0m1 0h0m-444 1h0m2 0h0m1 0h0m2 0h0m4 0h0m2 0h0m2 0h0m3 0h0m1 0h0m1 0h0m1 0h0m1 0h0m5 0h0m3 0h0m2 0h0m2 0h0m3 0h0m2 0h0m2 0h0m1 0h0m2 0h0m1 0h0m2 0h0m3 0h0m1 0h0m1 0h0m1 0h0m1 0h0m3 0h0m1 0h0m1 0h0m1 0h0m3 0h0m83 0h0m2 0h0m2 0h0m1 0h0m1 0h0m1 0h0m1 0h0m224 0h0m9 0h0m3 0h0m8 0h0m1 0h0m4 0h0m4 0h0m13 0h0m1 0h0m1 0h0m2 0h0m7 0h0m4 0h0m6 0h0m4 0h0m1 0h0m-440 1h0m1 0h0m2 0h0m2 0h0m2 0h0m1 0h0m2 0h0m1 0h0m2 0h0m1 0h0m2 0h0m1 0h0m1 0h0m1 0h0m1 0h0m1 0h0m1 0h0m6 0h0m4 0h0m7 0h0m1 0h0m5 0h0m2 0h0m1 0h0m2 0h0m2 0h0m1 0h0m1 0h0m2 0h0m84 0h0m1 0h0m2 0h0m1 0h0m1 0h0m1 0h0m2 0h0m223 0h0m6 0h0m5 0h0m3 0h0m19 0h0m4 0h0m5 0h0m5 0h0m2 0h0m10 0h0m1 0h0m2 0h0m-434 1h0m3 0h0m1 0h0m4 0h0m1 0h0m1 0h0m1 0h0m1 0h0m2 0h0m1 0h0m2 0h0m2 0h0m2 0h0m2 0h0m1 0h0m5 0h0m7 0h0m1 0h0m2 0h0m1 0h0m1 0h0m4 0h0m1 0h0m5 0h0m1 0h0m3 0h0m1 0h0m1 0h0m84 0h0m1 0h0m1 0h0m1 0h0m1 0h0m1 0h0m1 0h0m1 0h0m228 0h0m4 0h0m6 0h0m4 0h0m3 0h0m2 0h0m1 0h0m4 0h0m1 0h0m4 0h0m1 0h0m6 0h0m11 0h0m11 0h0m2 0h0m1 0h0m2 0h0m-442 1h0m4 0h0m2 0h0m4 0h0m2 0h0m5 0h0m2 0h0m2 0h0m1 0h0m1 0h0m1 0h0m6 0h0m1 0h0m1 0h0m6 0h0m2 0h0m3 0h0m1 0h0m1 0h0m1 0h0m1 0h0m9 0h0m1 0h0m1 0h0m1 0h0m1 0h0m1 0h0m85 0h0m1 0h0m1 0h0m2 0h0m1 0h0m1 0h0m224 0h0m4 0h0m4 0h0m7 0h0m1 0h0m5 0h0m2 0h0m4 0h0m5 0h0m2 0h0m8 0h0m5 0h0m2 0h0m4 0h0m2 0h0m3 0h0m2 0h0m2 0h0m2 0h0m1 0h0m1 0h0m-442 1h0m1 0h0m1 0h0m4 0h0m4 0h0m2 0h0m1 0h0m1 0h0m1 0h0m2 0h0m4 0h0m1 0h0m2 0h0m2 0h0m1 0h0m2 0h0m4 0h0m1 0h0m3 0h0m2 0h0m2 0h0m2 0h0m3 0h0m2 0h0m1 0h0m1 0h0m5 0h0m3 0h0m1 0h0m1 0h0m84 0h0m2 0h0m1 0h0m1 0h0m1 0h0m227 0h0m14 0h0m1 0h0m4 0h0m1 0h0m1 0h0m1 0h0m2 0h0m5 0h0m7 0h0m2 0h0m7 0h0m1 0h0m6 0h0m4 0h0m4 0h0m4 0h0m1 0h0m2 0h0m-443 1h0m1 0h0m4 0h0m1 0h0m1 0h0m1 0h0m1 0h0m5 0h0m1 0h0m1 0h0m2 0h0m1 0h0m2 0h0m3 0h0m2 0h0m2 0h0m4 0h0m2 0h0m1 0h0m5 0h0m1 0h0m3 0h0m1 0h0m1 0h0m1 0h0m3 0h0m4 0h0m1 0h0m1 0h0m2 0h0m1 0h0m2 0h0m84 0h0m1 0h0m1 0h0m2 0h0m1 0h0m1 0h0m1 0h0m223 0h0m10 0h0m3 0h0m1 0h0m11 0h0m16 0h0m3 0h0m2 0h0m2 0h0m1 0h0m7 0h0m2 0h0m4 0h0m-437 1h0m1 0h0m1 0h0m1 0h0m1 0h0m1 0h0m1 0h0m1 0h0m1 0h0m1 0h0m3 0h0m3 0h0m2 0h0m3 0h0m2 0h0m1 0h0m2 0h0m1 0h0m1 0h0m1 0h0m1 0h0m1 0h0m5 0h0m2 0h0m1 0h0m1 0h0m1 0h0m1 0h0m1 0h0m1 0h0m1 0h0m1 0h0m4 0h0m1 0h0m2 0h0m2 0h0m2 0h0m88 0h0m1 0h0m1 0h0m2 0h0m1 0h0m1 0h0m1 0h0m1 0h0m228 0h0m9 0h0m3 0h0m3 0h0m4 0h0m2 0h0m4 0h0m1 0h0m1 0h0m2 0h0m3 0h0m6 0h0m3 0h0m10 0h0m-428 1h0m1 0h0m1 0h0m1 0h0m1 0h0m2 0h0m1 0h0m1 0h0m1 0h0m2 0h0m3 0h0m2 0h0m3 0h0m3 0h0m1 0h0m6 0h0m1 0h0m1 0h0m1 0h0m1 0h0m1 0h0m1 0h0m4 0h0m2 0h0m3 0h0m3 0h0m1 0h0m1 0h0m1 0h0m4 0h0m87 0h0m1 0h0m1 0h0m1 0h0m1 0h0m2 0h0m1 0h0m227 0h0m4 0h0m5 0h0m2 0h0m3 0h0m3 0h0m7 0h0m10 0h0m3 0h0m1 0h0m1 0h0m2 0h0m1 0h0m4 0h0m1 0h0m5 0h0m10 0h0m-439 1h0m1 0h0m1 0h0m7 0h0m2 0h0m1 0h0m2 0h0m1 0h0m2 0h0m1 0h0m2 0h0m4 0h0m1 0h0m1 0h0m1 0h0m1 0h0m2 0h0m1 0h0m2 0h0m1 0h0m2 0h0m1 0h0m1 0h0m1 0h0m3 0h0m2 0h0m4 0h0m1 0h0m1 0h0m4 0h0m2 0h0m87 0h0m1 0h0m1 0h0m1 0h0m1 0h0m2 0h0m1 0h0m1 0h0m226 0h0m3 0h0m1 0h0m10 0h0m5 0h0m2 0h0m2 0h0m1 0h0m1 0h0m1 0h0m3 0h0m1 0h0m1 0h0m2 0h0m2 0h0m1 0h0m6 0h0m7 0h0m2 0h0m1 0h0m2 0h0m4 0h0m6 0h0m-442 1h0m1 0h0m1 0h0m5 0h0m8 0h0m1 0h0m1 0h0m1 0h0m1 0h0m1 0h0m2 0h0m2 0h0m7 0h0m1 0h0m1 0h0m2 0h0m4 0h0m3 0h0m1 0h0m2 0h0m2 0h0m2 0h0m1 0h0m1 0h0m8 0h0m2 0h0m83 0h0m1 0h0m1 0h0m1 0h0m1 0h0m1 0h0m1 0h0m1 0h0m1 0h0m229 0h0m1 0h0m5 0h0m4 0h0m1 0h0m4 0h0m1 0h0m7 0h0m1 0h0m10 0h0m8 0h0m3 0h0m6 0h0m8 0h0m3 0h0m1 0h0m-442 1h0m5 0h0m2 0h0m1 0h0m1 0h0m1 0h0m4 0h0m2 0h0m1 0h0m2 0h0m6 0h0m1 0h0m2 0h0m3 0h0m1 0h0m1 0h0m2 0h0m2 0h0m3 0h0m1 0h0m1 0h0m1 0h0m1 0h0m3 0h0m1 0h0m1 0h0m1 0h0m1 0h0m3 0h0m1 0h0m87 0h0m2 0h0m1 0h0m2 0h0m2 0h0m1 0h0m230 0h0m2 0h0m2 0h0m2 0h0m1 0h0m3 0h0m1 0h0m2 0h0m1 0h0m14 0h0m2 0h0m4 0h0m6 0h0m4 0h0m5 0h0m2 0h0m2 0h0m1 0h0m6 0h0m-442 1h0m5 0h0m1 0h0m2 0h0m1 0h0m2 0h0m1 0h0m1 0h0m3 0h0m1 0h0m1 0h0m1 0h0m1 0h0m2 0h0m1 0h0m2 0h0m1 0h0m3 0h0m3 0h0m3 0h0m1 0h0m1 0h0m1 0h0m4 0h0m5 0h0m1 0h0m1 0h0m1 0h0m2 0h0m1 0h0m1 0h0m2 0h0m89 0h0m1 0h0m1 0h0m1 0h0m1 0h0m1 0h0m1 0h0m234 0h0m2 0h0m14 0h0m1 0h0m1 0h0m16 0h0m6 0h0m2 0h0m2 0h0m5 0h0m4 0h0m1 0h0m1 0h0m-439 1h0m3 0h0m2 0h0m1 0h0m1 0h0m2 0h0m1 0h0m7 0h0m1 0h0m2 0h0m3 0h0m1 0h0m2 0h0m1 0h0m2 0h0m3 0h0m2 0h0m1 0h0m2 0h0m4 0h0m3 0h0m1 0h0m1 0h0m1 0h0m3 0h0m2 0h0m92 0h0m3 0h0m2 0h0m1 0h0m1 0h0m237 0h0m1 0h0m9 0h0m1 0h0m12 0h0m1 0h0m16 0h0m1 0h0m2 0h0m7 0h0m2 0h0m1 0h0m2 0h0m-443 1h0m1 0h0m4 0h0m3 0h0m1 0h0m2 0h0m2 0h0m1 0h0m1 0h0m2 0h0m2 0h0m4 0h0m7 0h0m1 0h0m1 0h0m2 0h0m7 0h0m1 0h0m2 0h0m1 0h0m98 0h0m1 0h0m1 0h0m1 0h0m4 0h0m1 0h0m239 0h0m6 0h0m1 0h0m1 0h0m4 0h0m1 0h0m2 0h0m1 0h0m7 0h0m2 0h0m2 0h0m2 0h0m3 0h0m1 0h0m3 0h0m8 0h0m-433 1h0m1 0h0m1 0h0m3 0h0m1 0h0m7 0h0m2 0h0m2 0h0m1 0h0m1 0h0m1 0h0m3 0h0m1 0h0m1 0h0m1 0h0m2 0h0m2 0h0m5 0h0m1 0h0m5 0h0m2 0h0m1 0h0m346 0h0m6 0h0m1 0h0m7 0h0m3 0h0m4 0h0m7 0h0m5 0h0m7 0h0m3 0h0m2 0h0m-436 1h0m1 0h0m4 0h0m1 0h0m1 0h0m1 0h0m2 0h0m3 0h0m1 0h0m2 0h0m3 0h0m1 0h0m5 0h0m6 0h0m2 0h0m2 0h0m2 0h0m5 0h0m353 0h0m1 0h0m2 0h0m4 0h0m4 0h0m1 0h0m5 0h0m5 0h0m1 0h0m1 0h0m3 0h0m3 0h0m1 0h0m2 0h0m3 0h0m1 0h0m3 0h0m6 0h0m-442 1h0m1 0h0m1 0h0m2 0h0m4 0h0m1 0h0m3 0h0m1 0h0m1 0h0m1 0h0m2 0h0m2 0h0m5 0h0m1 0h0m1 0h0m1 0h0m3 0h0m4 0h0m2 0h0m1 0h0m1 0h0m360 0h0m4 0h0m2 0h0m2 0h0m6 0h0m1 0h0m1 0h0m3 0h0m5 0h0m1 0h0m4 0h0m1 0h0m4 0h0m5 0h0m2 0h0m3 0h0m1 0h0m-441 1h0m1 0h0m3 0h0m1 0h0m3 0h0m2 0h0m1 0h0m1 0h0m2 0h0m1 0h0m2 0h0m1 0h0m6 0h0m1 0h0m1 0h0m2 0h0m1 0h0m1 0h0m369 0h0m1 0h0m2 0h0m1 0h0m2 0h0m3 0h0m5 0h0m4 0h0m6 0h0m3 0h0m6 0h0m2 0h0m3 0h0m4 0h0m-443 1h0m2 0h0m3 0h0m3 0h0m1 0h0m1 0h0m7 0h0m2 0h0m1 0h0m4 0h0m1 0h0m378 0h0m2 0h0m1 0h0m3 0h0m2 0h0m4 0h0m1 0h0m3 0h0m1 0h0m1 0h0m2 0h0m2 0h0m6 0h0m2 0h0m5 0h0m2 0h0m3 0h0m-442 1h0m2 0h0m5 0h0m1 0h0m1 0h0m1 0h0m1 0h0m1 0h0m1 0h0m3 0h0m1 0h0m1 0h0m387 0h0m2 0h0m5 0h0m4 0h0m7 0h0m2 0h0m1 0h0m4 0h0m4 0h0m1 0h0m2 0h0m4 0h0m-442 1h0m1 0h0m1 0h0m5 0h0m2 0h0m1 0h0m1 0h0m2 0h0m399 0h0m5 0h0m7 0h0m1 0h0m2 0h0m1 0h0m2 0h0m1 0h0m5 0h0m1 0h0m7 0h0m-444 1h0m2 0h0m4 0h0m1 0h0m411 0h0m5 0h0m2 0h0m7 0h0m1 0h0m1 0h0m5 0h0m5 0h0m-15 1h0m1 0h0m2 0h0m6 0h0m4 0h0m1 0h0m-8 1h0m2 0h0m1 0h0m2 0h0m1 0h0m2 0h0m1 1h0" transform="translate(.5 .5)" stroke="#e377c2" stroke-width="1.1" stroke-linecap="square" fill="none"/></svg><div class="r" style="left:658.00px;top:307.00px;width:542.00px;height:15.50px;background:#19232D;"></div><div class="r" style="left:872.30px;top:310.30px;width:18.30px;height:11.30px;background:#455364;border-radius:2px;"></div><span class="t" style="left:874.60px;top:311.00px;font-size:8.20px;line-height:11.00px;color:#e0e1e3;font-family:'Liberation Sans', sans-serif;transform:scaleX(0.7945);">Help</span><div class="r" style="left:892.00px;top:310.30px;width:57.00px;height:11.30px;background:#54687A;border-radius:2px;"></div><div class="r" style="left:892.00px;top:309.50px;width:57.00px;height:1.60px;background:#259AE9;"></div><span class="t" style="left:894.80px;top:311.00px;font-size:8.20px;line-height:11.00px;color:#e0e1e3;font-family:'Liberation Sans', sans-serif;transform:scaleX(0.8235);">Variable Explorer</span><div class="r" style="left:950.40px;top:310.30px;width:19.30px;height:11.30px;background:#455364;border-radius:2px;"></div><span class="t" style="left:953.30px;top:311.00px;font-size:8.20px;line-height:11.00px;color:#e0e1e3;font-family:'Liberation Sans', sans-serif;transform:scaleX(0.7680);">Plots</span><div class="r" style="left:971.50px;top:310.30px;width:18.50px;height:11.30px;background:#455364;border-radius:2px;"></div><span class="t" style="left:974.40px;top:311.00px;font-size:8.20px;line-height:11.00px;color:#e0e1e3;font-family:'Liberation Sans', sans-serif;transform:scaleX(0.7740);">Files</span><div class="r" style="left:658.00px;top:322.50px;width:542.00px;height:5.00px;background:#455364;"></div><div class="r" style="left:658.00px;top:327.50px;width:542.00px;height:310.00px;background:#19232D;"></div><svg class="r" style="left:665.00px;top:333.80px;" width="10" height="8.5" viewBox="0 0 10 8.5"><rect x="1" y="1" width="8.5" height="6.5" rx="0.8" stroke="#e8e8e8" stroke-width="1.1" fill="none"/><path d="M1 2.6h3.5" stroke="#e8e8e8" stroke-width="1.1"/></svg><div class="r" style="left:683.00px;top:334.00px;width:58.00px;height:15.50px;background:#54687A;border-radius:3px 3px 0 0;"></div><div class="r" style="left:683.00px;top:348.00px;width:58.00px;height:1.80px;background:#259AE9;"></div><span class="t" style="left:689.00px;top:338.00px;font-size:8.20px;line-height:11.00px;color:#e0e1e3;font-family:'Liberation Sans', sans-serif;transform:scaleX(0.8238);">Console 1/A</span><svg class="r" style="left:728.20px;top:337.20px;" width="9" height="9" viewBox="0 0 9 9"><path d="M2.2 2.2L6.8 6.8M6.8 2.2L2.2 6.8" stroke="#e0e1e3" stroke-width="0.9"/></svg><svg class="r" style="left:1136.50px;top:332.50px;" width="11" height="11" viewBox="0 0 14 14"><path d="M5.5 1.2h3v1.3h-3z" fill="#f0f0f0"/><path d="M2.6 2.4h8.8v1.6H2.6z" fill="#f0f0f0"/><path d="M3.4 4.4h7.2l-.7 8.6H4.1z" fill="#f0f0f0"/><path d="M5.6 5.5v6M8.4 5.5v6" stroke="#9aa0a6" stroke-width="0.7"/></svg><div class="r" style="left:1165.00px;top:335.80px;width:4.80px;height:4.80px;background:#ee1c1c;"></div><svg class="r" style="left:1186.00px;top:333.00px;" width="12" height="11" viewBox="0 0 12 11"><path d="M1.5 2.5h9M1.5 5.5h9M1.5 8.5h9" stroke="#e8e8e8" stroke-width="1.5"/></svg><div class="r" style="left:659.00px;top:350.00px;width:540.00px;height:273.50px;background:#19232D;border:1px solid #37414F;border-radius:3px;box-sizing:border-box;"></div><div class="r" style="left:659px;top:351.5px;width:530px;height:270px;overflow:hidden;"><span class="t code" style="left:5px;top:-2.59px;"><i style="color:#ffffff;">IPython 8.18.1 -- An enhanced interactive Python.</i></span><span class="t code" style="left:5px;top:17.47px;"><i style="color:#16c916;font-weight:bold;">In [</i><i style="color:#16ff16;font-weight:bold;">1</i><i style="color:#16c916;font-weight:bold;">]: </i><i style="color:#ffffff;">runcell(</i><i style="color:#b0e686;font-style:italic;">&#x27;1. Library Loading and Preprocessing&#x27;, &#x27;D:/OneDrive/FORMER/TUTORIALS/SEMANTIC_GRAPH/</i></span><span class="t code" style="left:5px;top:27.50px;"><i style="color:#b0e686;font-style:italic;">semantic_graph.py&#x27;</i><i style="color:#ffffff;">)</i></span><span class="t code" style="left:5px;top:47.56px;"><i style="color:#16c916;font-weight:bold;">In [</i><i style="color:#16ff16;font-weight:bold;">2</i><i style="color:#16c916;font-weight:bold;">]: </i><i style="color:#ffffff;">runcell(</i><i style="color:#b0e686;font-style:italic;">&#x27;2. OpenUSD imports&#x27;, &#x27;D:/OneDrive/FORMER/TUTORIALS/SEMANTIC_GRAPH/semantic_graph.py&#x27;</i><i style="color:#ffffff;">)</i></span><span class="t code" style="left:5px;top:67.62px;"><i style="color:#16c916;font-weight:bold;">In [</i><i style="color:#16ff16;font-weight:bold;">3</i><i style="color:#16c916;font-weight:bold;">]: </i><i style="color:#ffffff;">runcell(</i><i style="color:#b0e686;font-style:italic;">&#x27;3. Data Loading and Preprocessing&#x27;, &#x27;D:/OneDrive/FORMER/TUTORIALS/SEMANTIC_GRAPH/</i></span><span class="t code" style="left:5px;top:77.65px;"><i style="color:#b0e686;font-style:italic;">semantic_graph.py&#x27;</i><i style="color:#ffffff;">)</i></span><span class="t code" style="left:5px;top:87.68px;"><i style="color:#ffffff;">               x         y         z    R    G    B semantic_label</i></span><span class="t code" style="left:5px;top:97.71px;"><i style="color:#ffffff;">961377  4.435538 -6.123198 -3.919890  157  165  173           wall</i></span><span class="t code" style="left:5px;top:107.74px;"><i style="color:#ffffff;">434543  4.362929  0.202889 -5.852959  172  138  121          floor</i></span><span class="t code" style="left:5px;top:117.77px;"><i style="color:#ffffff;">519669  3.761103  2.719155 -5.878621  150  109   76          floor</i></span><span class="t code" style="left:5px;top:127.80px;"><i style="color:#ffffff;">304915  0.857803 -4.630533 -5.772312  134  101   76          floor</i></span><span class="t code" style="left:5px;top:137.83px;"><i style="color:#ffffff;">408096  3.501150 -2.758313 -5.812199  150  109   92          floor</i></span><span class="t code" style="left:5px;top:147.86px;"><i style="color:#ffffff;">...          ...       ...       ...  ...  ...  ...            ...</i></span><span class="t code" style="left:5px;top:157.89px;"><i style="color:#ffffff;">837718  1.708935 -6.867329 -5.685557  160  127  118           wall</i></span><span class="t code" style="left:5px;top:167.92px;"><i style="color:#ffffff;">798123  1.066046 -5.530647 -4.724033  231  197   27           wall</i></span><span class="t code" style="left:5px;top:177.95px;"><i style="color:#ffffff;">547190  2.025179  1.300664 -5.850144  138  113   88          floor</i></span><span class="t code" style="left:5px;top:187.98px;"><i style="color:#ffffff;">912048  1.170835 -5.970364 -5.223693  179  154  146           wall</i></span><span class="t code" style="left:5px;top:198.01px;"><i style="color:#ffffff;">793161  1.146694 -5.729468 -3.505766  198  198  198           wall</i></span><span class="t code" style="left:5px;top:218.07px;"><i style="color:#ffffff;">[100000 rows x 7 columns]</i></span><span class="t code" style="left:5px;top:238.13px;"><i style="color:#16c916;font-weight:bold;">In [</i><i style="color:#16ff16;font-weight:bold;">4</i><i style="color:#16c916;font-weight:bold;">]: </i><i style="color:#ffffff;">runcell(</i><i style="color:#b0e686;font-style:italic;">&#x27;4. Visualization of the semantic point cloud&#x27;, &#x27;D:/OneDrive/FORMER/TUTORIALS/SEMANTIC_GRAPH/</i></span><span class="t code" style="left:5px;top:248.16px;"><i style="color:#b0e686;font-style:italic;">semantic_graph.py&#x27;</i><i style="color:#ffffff;">)</i></span></div><svg class="r" style="left:1189.00px;top:354.00px;" width="10" height="6" viewBox="0 0 10 6"><path d="M2 5L5 2L8 5z" fill="#60798B"/></svg><div class="r" style="left:1190.00px;top:361.00px;width:7.50px;height:251.00px;background:transparent;border:1px solid #455364;border-radius:4px;box-sizing:border-box;"></div><svg class="r" style="left:1189.00px;top:612.00px;" width="10" height="6" viewBox="0 0 10 6"><path d="M2 1L5 4L8 1z" fill="#60798B"/></svg><div class="r" style="left:1191.20px;top:377.00px;width:5.20px;height:118.00px;background:#60798B;border-radius:3px;"></div><div class="r" style="left:658.00px;top:623.60px;width:542.00px;height:14.00px;background:#19232D;"></div><div class="r" style="left:890.10px;top:625.00px;width:54.10px;height:11.40px;background:#54687A;border-radius:2px;"></div><div class="r" style="left:890.10px;top:624.40px;width:54.10px;height:1.70px;background:#259AE9;"></div><span class="t" style="left:892.70px;top:626.00px;font-size:8.40px;line-height:11.00px;color:#e0e1e3;font-family:'Liberation Sans', sans-serif;transform:scaleX(0.7949);">IPython Console</span><div class="r" style="left:946.00px;top:625.00px;width:26.00px;height:11.40px;background:#455364;border-radius:2px;"></div><span class="t" style="left:948.70px;top:626.00px;font-size:8.40px;line-height:11.00px;color:#e0e1e3;font-family:'Liberation Sans', sans-serif;transform:scaleX(0.8265);">History</span><div class="r" style="left:0.00px;top:636.50px;width:1200.00px;height:2.00px;background:#19232D;"></div><div class="r" style="left:0.00px;top:638.30px;width:1200.00px;height:12.70px;background:#455364;"></div><span class="t" style="left:645.00px;top:641.00px;font-size:7.80px;line-height:11.00px;color:#e0e1e3;font-family:'Liberation Sans', sans-serif;transform:scaleX(0.8358);">conda: POUX-FULL-PROCESSING (Python 3.9.19)</span><span class="t" style="left:816.60px;top:641.00px;font-size:7.80px;line-height:11.00px;color:#e0e1e3;font-family:'Liberation Sans', sans-serif;transform:scaleX(0.8289);">Completions: conda(POUX-FULL-PROCESSING)</span><span class="t" style="left:982.00px;top:641.00px;font-size:7.80px;line-height:11.00px;color:#e0e1e3;font-family:'Liberation Sans', sans-serif;transform:scaleX(0.8533);">LSP: Python</span><span class="t" style="left:1038.00px;top:641.00px;font-size:7.80px;line-height:11.00px;color:#e0e1e3;font-family:'Liberation Sans', sans-serif;transform:scaleX(0.8575);">Line 111, Col 1</span><span class="t" style="left:1092.50px;top:641.00px;font-size:7.80px;line-height:11.00px;color:#e0e1e3;font-family:'Liberation Sans', sans-serif;transform:scaleX(0.7693);">UTF-8</span><span class="t" style="left:1120.30px;top:641.00px;font-size:7.80px;line-height:11.00px;color:#e0e1e3;font-family:'Liberation Sans', sans-serif;transform:scaleX(0.7757);">CRLF</span><span class="t" style="left:1146.00px;top:641.00px;font-size:7.80px;line-height:11.00px;color:#e0e1e3;font-family:'Liberation Sans', sans-serif;transform:scaleX(0.8558);">RW</span><span class="t" style="left:1167.50px;top:641.00px;font-size:7.80px;line-height:11.00px;color:#e0e1e3;font-family:'Liberation Sans', sans-serif;transform:scaleX(0.8971);">Mem 68%</span><svg class="r" style="left:802.00px;top:640.00px;" width="11" height="10" viewBox="0 0 11 10"><path d="M1.5 4.5A3.5 3 0 1 1 5.5 7.5L3.5 9V7A3.5 3 0 0 1 1.5 4.5z" fill="none" stroke="#e0e1e3" stroke-width="1"/><path d="M3.5 4.5l1.3 1.3l2.5-2.5" stroke="#e0e1e3" stroke-width="0.9" fill="none"/></svg><svg class="r" style="left:967.00px;top:640.00px;" width="11" height="10" viewBox="0 0 11 10"><path d="M1.5 5L4.5 8L9.5 2" stroke="#e0e1e3" stroke-width="1.2" fill="none"/></svg>
</body></html>
